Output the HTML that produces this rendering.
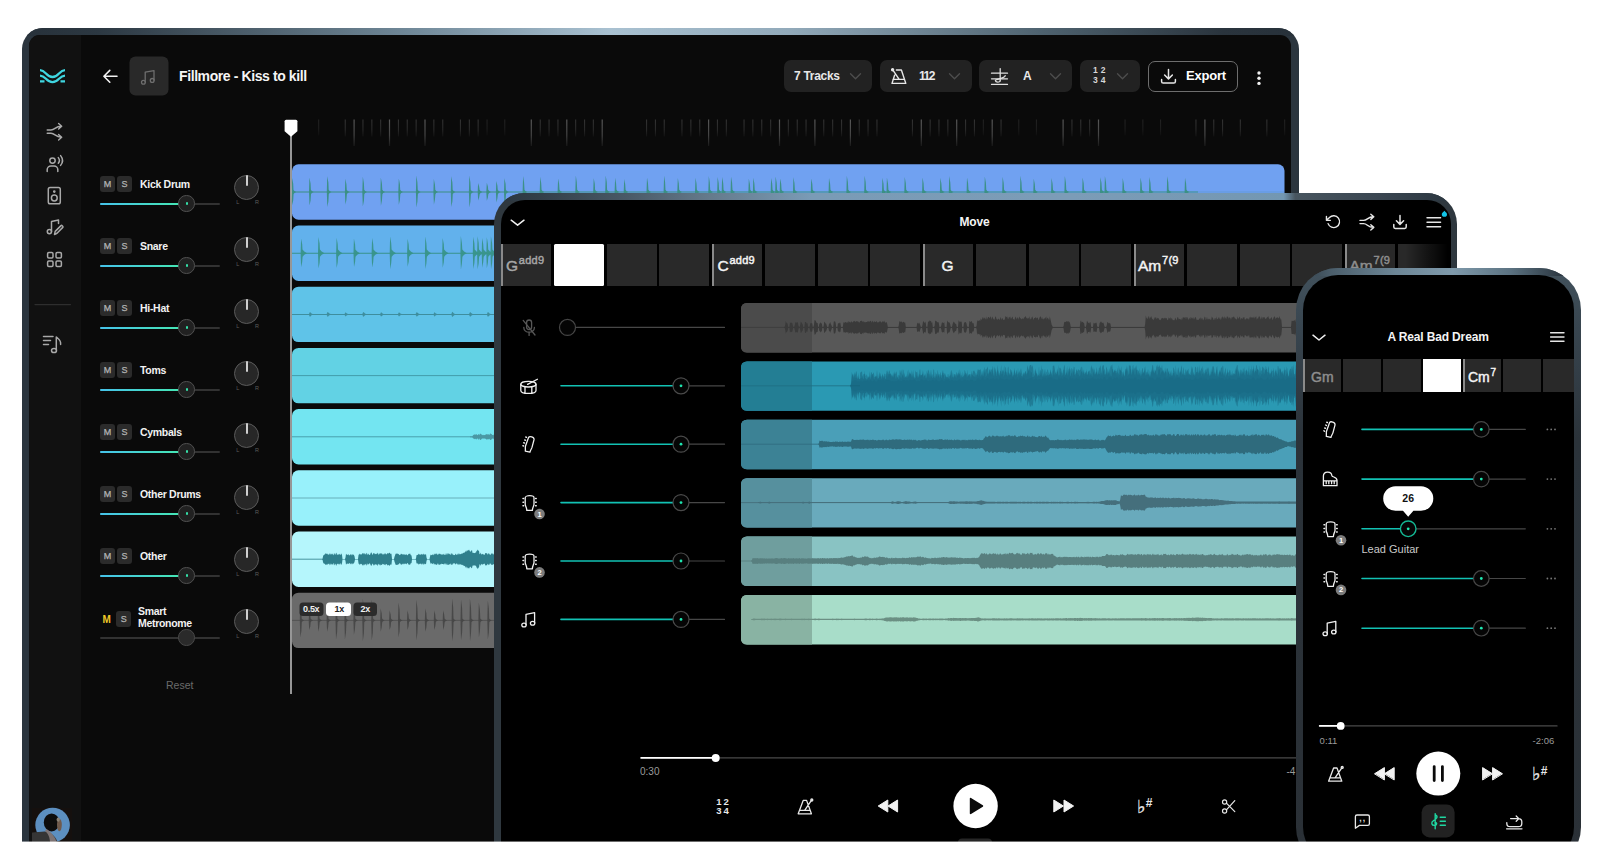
<!DOCTYPE html><html><head><meta charset="utf-8"><title>Moises</title><style>
*{box-sizing:border-box;margin:0;padding:0}
html,body{width:1600px;height:842px;overflow:hidden;background:#fff}
body{position:relative;font-family:"Liberation Sans", sans-serif;color:#fff;-webkit-font-smoothing:antialiased}
.abs{position:absolute}
svg{position:absolute;overflow:visible}
.laptop{position:absolute;left:22px;top:28px;width:1277px;height:840px;border-radius:21px 21px 0 0;background:#2b353e;overflow:hidden}
.laptop .hl{position:absolute;left:0;top:0;width:100%;height:8px;background:linear-gradient(90deg,#27313a 0%,#2c3842 6%,#6f8797 30%,#a9c1d1 46%,#92aaba 60%,#4e626f 80%,#2a343d 94%,#27313a 100%)}
.lscreen{position:absolute;left:7px;top:7px;width:1262px;height:840px;border-radius:11px 11px 0 0;background:#0a0a0a;overflow:hidden}
.side{position:absolute;left:0;top:0;width:52px;height:100%;background:#111}
.tablet{position:absolute;left:494px;top:193px;width:963px;height:700px;border-radius:31px 31px 0 0;background:#2f383f;overflow:hidden}
.tablet .hl{position:absolute;left:0;top:0;width:100%;height:8px;background:linear-gradient(90deg,#2a353e 0%,#33404a 5%,#4a5a67 14%,#64798a 22%,#7a9bb6 33%,#7c9cb7 60%,#7397b2 82%,#48555f 83.2%,#3a4651 92%,#2a353e 100%)}
.tscreen{position:absolute;left:7px;top:7px;width:950px;height:700px;border-radius:24px 24px 0 0;background:#000;overflow:hidden}
.phone{position:absolute;left:1296px;top:268px;width:285px;height:601px;border-radius:42px;background:linear-gradient(180deg,#42525d 0,#38454f 60px,#2b333a 170px,#2a3036 100%);overflow:hidden}
.phone .hl{position:absolute;left:0;top:0;width:100%;height:8px;background:linear-gradient(90deg,#2c3842 0%,#4a5d6a 12%,#6d8696 35%,#7f9aab 55%,#5c7382 75%,#2e3a44 92%,#26313a 100%)}
.pscreen{position:absolute;left:7px;top:7px;width:271px;height:587px;border-radius:35px;background:#000;overflow:hidden}
.t{position:absolute;white-space:nowrap;line-height:1}
.btn{position:absolute;top:25px;height:32px;border-radius:7px;background:#222}
.ms{position:absolute;width:15.4px;height:15.8px;border-radius:3px;background:#2b2b2b;color:#b4b4b4;font-size:9px;font-weight:400;-webkit-text-stroke:0.25px #b4b4b4;text-align:center;line-height:17px}
.cell{position:absolute;background:#292929}
</style></head><body>
<div class="laptop"><div class="hl"></div><div class="lscreen">
<div class="side"></div>
<svg style="left:0;top:0" width="60" height="810" viewBox="29 35 60 810" fill="none" stroke-linecap="round" stroke-linejoin="round">
<g stroke="#3fd6e0" stroke-width="2.3" stroke-linecap="butt"><path d="M40 70.2 C46 70.2 46 77 52.5 77 C59 77 59 70.2 65 70.2"/><path d="M40 75.6 C46 75.6 46 82.2 52.5 82.2 C59 82.2 59 75.6 65 75.6"/><path d="M40 81.4 H44.5 M60.5 81.4 H65"/></g>
<g stroke="#a9a9a9" stroke-width="1.4"><path d="M47.2 130 H51 C55.2 130 55 126.2 61.4 126.2 M47.2 133.2 H51 C55.2 133.2 55 137.2 61.4 137.2 M58.6 123.4 L61.7 126.2 L58.6 129 M58.6 134.4 L61.7 137.2 L58.6 140"/></g>
<g stroke="#a9a9a9" stroke-width="1.5"><circle cx="52.5" cy="160.6" r="2.7"/><path d="M47.2 171.5 V169.5 C47.2 167.4 49 166 51 166 H54 C56 166 57.8 167.4 57.8 169.5 V171.5 M58.3 157.6 C59.6 159.2 59.6 161.6 58.3 163.2 M60.6 155.6 C63 158.6 63 162.4 60.6 165.4"/></g>
<g stroke="#a9a9a9" stroke-width="1.5"><rect x="48.3" y="187.6" width="12" height="16.2" rx="1.8"/><circle cx="54.3" cy="198" r="2.9"/><circle cx="54.3" cy="191.6" r="0.6" fill="#a9a9a9"/></g>
<g stroke="#a9a9a9" stroke-width="1.5"><path d="M51.5 231.5 V221.5 L58.5 220 V223.5"/><circle cx="49.4" cy="231.6" r="2.1"/><path d="M54.5 234.5 L55.2 231.4 L61 225.6 C61.7 224.9 63.6 226.6 62.8 227.4 L57 233.3 Z"/></g>
<g stroke="#a9a9a9" stroke-width="1.5"><rect x="47.6" y="252.6" width="5.4" height="5.4" rx="1.2"/><rect x="56" y="252.6" width="5.4" height="5.4" rx="1.2"/><rect x="47.6" y="261" width="5.4" height="5.4" rx="1.2"/><rect x="56" y="261" width="5.4" height="5.4" rx="1.2"/></g>
<path d="M35 304.6 H70.5" stroke="#2e2e2e" stroke-width="1.2"/>
<g stroke="#a9a9a9" stroke-width="1.5"><path d="M43.5 336.5 H53 M43.5 340.5 H50.5 M43.5 344.5 H48.5 M56.3 350 V337 C58 338.5 61.2 340 60.6 344.4"/><ellipse cx="54" cy="350.5" rx="2.5" ry="2.1"/></g>
</svg>
<svg style="left:0;top:0" width="60" height="810" viewBox="29 35 60 810"><defs><filter id="avb" x="-10%" y="-10%" width="120%" height="120%"><feGaussianBlur stdDeviation="0.7"/></filter></defs><rect x="32" y="808" width="40" height="34" fill="#15100e"/><g filter="url(#avb)"><circle cx="52.6" cy="825" r="17.3" fill="#5c8fc0"/><ellipse cx="51.6" cy="822.4" rx="7.8" ry="9" fill="#100c0c"/><ellipse cx="59.4" cy="825" rx="2.4" ry="6.2" fill="#6f5a4c"/><ellipse cx="58.2" cy="819.6" rx="1.6" ry="2.2" fill="#8b8276"/><path d="M32 832.4 L45 831.6 C51 832.4 55 836 57.6 842 L58 846 H32 Z" fill="#343434"/><path d="M46.5 829 C50.5 831.6 54.6 836 56.8 842 L50 842 C50 838 48 833 45 831 Z" fill="#7d7373"/></g></svg>
<svg style="left:0;top:0" width="300" height="70" viewBox="29 35 300 70" fill="none" stroke-linecap="round" stroke-linejoin="round">
<path d="M117 76.3 H104 M109.8 70.4 L103.9 76.3 L109.8 82.2" stroke="#f2f2f2" stroke-width="1.6"/>
<rect x="129.5" y="56.5" width="39" height="39" rx="6" fill="#292929"/>
<g stroke="#6e6e6e" stroke-width="1.3"><path d="M145.2 82 V72.2 L154 70.6 V80.2"/><circle cx="143.4" cy="82.2" r="1.9"/><circle cx="152.2" cy="80.4" r="1.9"/></g>
</svg>
<div class="t" style="left:150px;top:34px;font-size:14px;font-weight:700;letter-spacing:-0.4px;color:#f5f5f5">Fillmore - Kiss to kill</div>
<div class="btn" style="left:755px;width:88px"></div>
<div class="btn" style="left:851px;width:92px"></div>
<div class="btn" style="left:950px;width:93px"></div>
<div class="btn" style="left:1051px;width:60px"></div>
<div class="abs" style="left:1118.5px;top:25.5px;width:90px;height:31px;border-radius:7px;border:1.8px solid #6e6e6e"></div>
<div class="t" style="left:765px;top:35px;font-size:12px;font-weight:700;letter-spacing:-0.3px;color:#e8e8e8">7 Tracks</div>
<div class="t" style="left:890px;top:35px;font-size:12px;font-weight:700;letter-spacing:-1.5px;color:#e8e8e8">112</div>
<div class="t" style="left:994px;top:35px;font-size:12px;font-weight:700;color:#e8e8e8">A</div>
<div class="t" style="left:1064px;top:30px;font-size:8.5px;font-weight:700;letter-spacing:2.9px;line-height:10.4px;color:#d8d8d8;white-space:pre">12<br>34</div>
<div class="t" style="left:1157px;top:34px;font-size:13px;font-weight:700;letter-spacing:-0.2px;color:#fff">Export</div>
<svg style="left:0;top:0" width="1262" height="70" viewBox="29 35 1262 70" fill="none" stroke-linecap="round" stroke-linejoin="round">
<path d="M850.5 73.8 L855.5 78.8 L860.5 73.8" stroke="#4c4c4c" stroke-width="1.4" fill="none" stroke-linecap="round" stroke-linejoin="round"/>
<path d="M949.5 73.8 L954.5 78.8 L959.5 73.8" stroke="#4c4c4c" stroke-width="1.4" fill="none" stroke-linecap="round" stroke-linejoin="round"/>
<path d="M1050.5 73.8 L1055.5 78.8 L1060.5 73.8" stroke="#4c4c4c" stroke-width="1.4" fill="none" stroke-linecap="round" stroke-linejoin="round"/>
<path d="M1117.5 73.8 L1122.5 78.8 L1127.5 73.8" stroke="#4c4c4c" stroke-width="1.4" fill="none" stroke-linecap="round" stroke-linejoin="round"/>
<g stroke="#e8e8e8" stroke-width="1.4"><path d="M896.4 70 H901.4 L905.8 83.4 H892 L894.6 75.2 M893 79.4 H904.6 M899 79.2 L892.6 69.6"/><circle cx="892.6" cy="69.8" r="1" /></g>
<g stroke="#e0e0e0" stroke-width="1.3"><path d="M991.5 73.2 H1007.5 M991.5 78.8 H1007.5 M991.5 84.4 H1007.5 M1000.2 68.6 V80.6"/><path d="M1000.2 80.8 C1000.2 82.4 995.2 82.6 995.4 80.4 C995.6 78.6 1004.8 78.8 1005.2 75.6"/></g>
<g stroke="#e8e8e8" stroke-width="1.5"><path d="M1168.5 69.4 V78.6 M1164.6 75 L1168.5 78.9 L1172.4 75 M1161.6 79.4 V81.4 C1161.6 82.3 1162.3 83 1163.2 83 H1173.8 C1174.7 83 1175.4 82.3 1175.4 81.4 V79.4"/></g>
<circle cx="1259" cy="73" r="1.7" fill="#f0f0f0"/><circle cx="1259" cy="78.2" r="1.7" fill="#f0f0f0"/><circle cx="1259" cy="83.4" r="1.7" fill="#f0f0f0"/>
</svg>
<svg style="left:0;top:0" width="1262" height="120" viewBox="29 35 1262 120"><defs><linearGradient id="tg" x1="0" y1="0" x2="0" y2="1"><stop offset="0" stop-color="#fff" stop-opacity="0.75"/><stop offset="0.6" stop-color="#fff" stop-opacity="0.55"/><stop offset="1" stop-color="#fff" stop-opacity="0.15"/></linearGradient></defs><rect x="318.1" y="119.5" width="1.1" height="16" fill="url(#tg)" fill-opacity="0.13"/><rect x="344.7" y="119.5" width="1.1" height="17" fill="url(#tg)" fill-opacity="0.22"/><rect x="353.5" y="119.5" width="1.2" height="26.5" fill="url(#tg)" fill-opacity="0.42"/><rect x="362.4" y="119.5" width="1.1" height="17" fill="url(#tg)" fill-opacity="0.22"/><rect x="371.3" y="119.5" width="1.1" height="17" fill="url(#tg)" fill-opacity="0.22"/><rect x="380.1" y="119.5" width="1.1" height="17" fill="url(#tg)" fill-opacity="0.22"/><rect x="388.9" y="119.5" width="1.2" height="26.5" fill="url(#tg)" fill-opacity="0.42"/><rect x="397.9" y="119.5" width="1.1" height="17" fill="url(#tg)" fill-opacity="0.22"/><rect x="406.7" y="119.5" width="1.1" height="17" fill="url(#tg)" fill-opacity="0.22"/><rect x="415.6" y="119.5" width="1.1" height="17" fill="url(#tg)" fill-opacity="0.22"/><rect x="424.4" y="119.5" width="1.2" height="26.5" fill="url(#tg)" fill-opacity="0.42"/><rect x="433.3" y="119.5" width="1.1" height="17" fill="url(#tg)" fill-opacity="0.22"/><rect x="442.2" y="119.5" width="1.1" height="17" fill="url(#tg)" fill-opacity="0.22"/><rect x="459.9" y="119.5" width="1.1" height="17" fill="url(#tg)" fill-opacity="0.22"/><rect x="468.8" y="119.5" width="1.1" height="17" fill="url(#tg)" fill-opacity="0.22"/><rect x="477.6" y="119.5" width="1.1" height="17" fill="url(#tg)" fill-opacity="0.22"/><rect x="486.5" y="119.5" width="1.1" height="16" fill="url(#tg)" fill-opacity="0.13"/><rect x="504.2" y="119.5" width="1.1" height="16" fill="url(#tg)" fill-opacity="0.13"/><rect x="530.7" y="119.5" width="1.2" height="26.5" fill="url(#tg)" fill-opacity="0.42"/><rect x="539.7" y="119.5" width="1.1" height="17" fill="url(#tg)" fill-opacity="0.22"/><rect x="548.5" y="119.5" width="1.1" height="17" fill="url(#tg)" fill-opacity="0.22"/><rect x="557.4" y="119.5" width="1.1" height="17" fill="url(#tg)" fill-opacity="0.22"/><rect x="566.2" y="119.5" width="1.2" height="26.5" fill="url(#tg)" fill-opacity="0.42"/><rect x="575.1" y="119.5" width="1.1" height="17" fill="url(#tg)" fill-opacity="0.22"/><rect x="584.0" y="119.5" width="1.1" height="17" fill="url(#tg)" fill-opacity="0.22"/><rect x="592.8" y="119.5" width="1.1" height="17" fill="url(#tg)" fill-opacity="0.22"/><rect x="601.6" y="119.5" width="1.2" height="26.5" fill="url(#tg)" fill-opacity="0.42"/><rect x="646.0" y="119.5" width="1.1" height="17" fill="url(#tg)" fill-opacity="0.22"/><rect x="654.9" y="119.5" width="1.1" height="17" fill="url(#tg)" fill-opacity="0.22"/><rect x="663.7" y="119.5" width="1.1" height="17" fill="url(#tg)" fill-opacity="0.22"/><rect x="681.4" y="119.5" width="1.1" height="17" fill="url(#tg)" fill-opacity="0.22"/><rect x="690.3" y="119.5" width="1.1" height="17" fill="url(#tg)" fill-opacity="0.22"/><rect x="699.2" y="119.5" width="1.1" height="17" fill="url(#tg)" fill-opacity="0.22"/><rect x="708.0" y="119.5" width="1.2" height="26.5" fill="url(#tg)" fill-opacity="0.42"/><rect x="716.9" y="119.5" width="1.1" height="17" fill="url(#tg)" fill-opacity="0.22"/><rect x="725.8" y="119.5" width="1.1" height="17" fill="url(#tg)" fill-opacity="0.22"/><rect x="743.5" y="119.5" width="1.1" height="17" fill="url(#tg)" fill-opacity="0.22"/><rect x="752.3" y="119.5" width="1.1" height="17" fill="url(#tg)" fill-opacity="0.22"/><rect x="761.2" y="119.5" width="1.1" height="17" fill="url(#tg)" fill-opacity="0.22"/><rect x="770.1" y="119.5" width="1.1" height="17" fill="url(#tg)" fill-opacity="0.22"/><rect x="778.9" y="119.5" width="1.2" height="26.5" fill="url(#tg)" fill-opacity="0.42"/><rect x="787.8" y="119.5" width="1.1" height="17" fill="url(#tg)" fill-opacity="0.22"/><rect x="796.7" y="119.5" width="1.1" height="17" fill="url(#tg)" fill-opacity="0.22"/><rect x="805.5" y="119.5" width="1.1" height="17" fill="url(#tg)" fill-opacity="0.22"/><rect x="814.3" y="119.5" width="1.2" height="26.5" fill="url(#tg)" fill-opacity="0.42"/><rect x="823.2" y="119.5" width="1.1" height="17" fill="url(#tg)" fill-opacity="0.22"/><rect x="832.1" y="119.5" width="1.1" height="17" fill="url(#tg)" fill-opacity="0.22"/><rect x="841.0" y="119.5" width="1.1" height="17" fill="url(#tg)" fill-opacity="0.22"/><rect x="849.8" y="119.5" width="1.2" height="26.5" fill="url(#tg)" fill-opacity="0.42"/><rect x="858.7" y="119.5" width="1.1" height="17" fill="url(#tg)" fill-opacity="0.22"/><rect x="867.5" y="119.5" width="1.1" height="17" fill="url(#tg)" fill-opacity="0.22"/><rect x="876.4" y="119.5" width="1.1" height="17" fill="url(#tg)" fill-opacity="0.22"/><rect x="911.9" y="119.5" width="1.1" height="17" fill="url(#tg)" fill-opacity="0.22"/><rect x="920.7" y="119.5" width="1.2" height="26.5" fill="url(#tg)" fill-opacity="0.42"/><rect x="929.6" y="119.5" width="1.1" height="17" fill="url(#tg)" fill-opacity="0.22"/><rect x="938.4" y="119.5" width="1.1" height="17" fill="url(#tg)" fill-opacity="0.22"/><rect x="947.3" y="119.5" width="1.1" height="17" fill="url(#tg)" fill-opacity="0.22"/><rect x="956.1" y="119.5" width="1.2" height="26.5" fill="url(#tg)" fill-opacity="0.42"/><rect x="965.0" y="119.5" width="1.1" height="17" fill="url(#tg)" fill-opacity="0.22"/><rect x="973.9" y="119.5" width="1.1" height="17" fill="url(#tg)" fill-opacity="0.22"/><rect x="982.8" y="119.5" width="1.1" height="16" fill="url(#tg)" fill-opacity="0.13"/><rect x="991.6" y="119.5" width="1.2" height="26.5" fill="url(#tg)" fill-opacity="0.42"/><rect x="1000.5" y="119.5" width="1.1" height="17" fill="url(#tg)" fill-opacity="0.22"/><rect x="1018.2" y="119.5" width="1.1" height="16" fill="url(#tg)" fill-opacity="0.13"/><rect x="1035.9" y="119.5" width="1.1" height="16" fill="url(#tg)" fill-opacity="0.13"/><rect x="1062.5" y="119.5" width="1.2" height="26.5" fill="url(#tg)" fill-opacity="0.42"/><rect x="1071.4" y="119.5" width="1.1" height="17" fill="url(#tg)" fill-opacity="0.22"/><rect x="1080.2" y="119.5" width="1.1" height="17" fill="url(#tg)" fill-opacity="0.22"/><rect x="1089.1" y="119.5" width="1.1" height="17" fill="url(#tg)" fill-opacity="0.22"/><rect x="1097.9" y="119.5" width="1.2" height="26.5" fill="url(#tg)" fill-opacity="0.42"/><rect x="1124.5" y="119.5" width="1.1" height="16" fill="url(#tg)" fill-opacity="0.13"/><rect x="1142.3" y="119.5" width="1.1" height="16" fill="url(#tg)" fill-opacity="0.13"/><rect x="1160.0" y="119.5" width="1.1" height="16" fill="url(#tg)" fill-opacity="0.13"/><rect x="1195.4" y="119.5" width="1.1" height="17" fill="url(#tg)" fill-opacity="0.22"/><rect x="1204.3" y="119.5" width="1.2" height="26.5" fill="url(#tg)" fill-opacity="0.42"/><rect x="1213.2" y="119.5" width="1.1" height="17" fill="url(#tg)" fill-opacity="0.22"/><rect x="1222.0" y="119.5" width="1.1" height="17" fill="url(#tg)" fill-opacity="0.22"/><rect x="1239.8" y="119.5" width="1.1" height="17" fill="url(#tg)" fill-opacity="0.22"/><rect x="1266.3" y="119.5" width="1.1" height="17" fill="url(#tg)" fill-opacity="0.22"/><rect x="1284.1" y="119.5" width="1.1" height="16" fill="url(#tg)" fill-opacity="0.13"/></svg>
<div class="ms" style="left:70.8px;top:141.4px">M</div>
<div class="ms" style="left:87.9px;top:141.4px">S</div>
<div class="t" style="left:111px;top:143.8px;font-size:10.5px;font-weight:700;letter-spacing:-0.3px;color:#f2f2f2">Kick Drum</div>
<div class="abs" style="left:71px;top:167.5px;width:120px;height:2px;border-radius:1px;background:#323232"></div>
<div class="abs" style="left:71px;top:167.5px;width:80px;height:2px;border-radius:1px;background:linear-gradient(90deg,#46c3ea,#45e6b4)"></div>
<div class="abs" style="left:149.4px;top:160.3px;width:16.4px;height:16.4px;border-radius:50%;background:#212121;border:1.3px solid #505050"></div>
<div class="abs" style="left:156.5px;top:167.4px;width:2.2px;height:2.2px;border-radius:50%;background:#35e0a8"></div>
<div class="abs" style="left:205.0px;top:139.5px;width:25px;height:25px;border-radius:50%;background:#272727;border:1.5px solid #5b5b5b"></div>
<div class="abs" style="left:216.5px;top:139.7px;width:2px;height:11.5px;border-radius:1px;background:#cfcfcf"></div>
<div class="t" style="left:207.3px;top:164.8px;font-size:5.5px;color:#5c5c5c">L</div>
<div class="t" style="left:226.0px;top:164.8px;font-size:5.5px;color:#5c5c5c">R</div>
<div class="ms" style="left:70.8px;top:203.4px">M</div>
<div class="ms" style="left:87.9px;top:203.4px">S</div>
<div class="t" style="left:111px;top:205.8px;font-size:10.5px;font-weight:700;letter-spacing:-0.3px;color:#f2f2f2">Snare</div>
<div class="abs" style="left:71px;top:229.5px;width:120px;height:2px;border-radius:1px;background:#323232"></div>
<div class="abs" style="left:71px;top:229.5px;width:80px;height:2px;border-radius:1px;background:linear-gradient(90deg,#46c3ea,#45e6b4)"></div>
<div class="abs" style="left:149.4px;top:222.3px;width:16.4px;height:16.4px;border-radius:50%;background:#212121;border:1.3px solid #505050"></div>
<div class="abs" style="left:156.5px;top:229.4px;width:2.2px;height:2.2px;border-radius:50%;background:#35e0a8"></div>
<div class="abs" style="left:205.0px;top:201.5px;width:25px;height:25px;border-radius:50%;background:#272727;border:1.5px solid #5b5b5b"></div>
<div class="abs" style="left:216.5px;top:201.7px;width:2px;height:11.5px;border-radius:1px;background:#cfcfcf"></div>
<div class="t" style="left:207.3px;top:226.8px;font-size:5.5px;color:#5c5c5c">L</div>
<div class="t" style="left:226.0px;top:226.8px;font-size:5.5px;color:#5c5c5c">R</div>
<div class="ms" style="left:70.8px;top:265.4px">M</div>
<div class="ms" style="left:87.9px;top:265.4px">S</div>
<div class="t" style="left:111px;top:267.8px;font-size:10.5px;font-weight:700;letter-spacing:-0.3px;color:#f2f2f2">Hi-Hat</div>
<div class="abs" style="left:71px;top:291.5px;width:120px;height:2px;border-radius:1px;background:#323232"></div>
<div class="abs" style="left:71px;top:291.5px;width:80px;height:2px;border-radius:1px;background:linear-gradient(90deg,#46c3ea,#45e6b4)"></div>
<div class="abs" style="left:149.4px;top:284.3px;width:16.4px;height:16.4px;border-radius:50%;background:#212121;border:1.3px solid #505050"></div>
<div class="abs" style="left:156.5px;top:291.4px;width:2.2px;height:2.2px;border-radius:50%;background:#35e0a8"></div>
<div class="abs" style="left:205.0px;top:263.5px;width:25px;height:25px;border-radius:50%;background:#272727;border:1.5px solid #5b5b5b"></div>
<div class="abs" style="left:216.5px;top:263.7px;width:2px;height:11.5px;border-radius:1px;background:#cfcfcf"></div>
<div class="t" style="left:207.3px;top:288.8px;font-size:5.5px;color:#5c5c5c">L</div>
<div class="t" style="left:226.0px;top:288.8px;font-size:5.5px;color:#5c5c5c">R</div>
<div class="ms" style="left:70.8px;top:327.4px">M</div>
<div class="ms" style="left:87.9px;top:327.4px">S</div>
<div class="t" style="left:111px;top:329.8px;font-size:10.5px;font-weight:700;letter-spacing:-0.3px;color:#f2f2f2">Toms</div>
<div class="abs" style="left:71px;top:353.5px;width:120px;height:2px;border-radius:1px;background:#323232"></div>
<div class="abs" style="left:71px;top:353.5px;width:80px;height:2px;border-radius:1px;background:linear-gradient(90deg,#46c3ea,#45e6b4)"></div>
<div class="abs" style="left:149.4px;top:346.3px;width:16.4px;height:16.4px;border-radius:50%;background:#212121;border:1.3px solid #505050"></div>
<div class="abs" style="left:156.5px;top:353.4px;width:2.2px;height:2.2px;border-radius:50%;background:#35e0a8"></div>
<div class="abs" style="left:205.0px;top:325.5px;width:25px;height:25px;border-radius:50%;background:#272727;border:1.5px solid #5b5b5b"></div>
<div class="abs" style="left:216.5px;top:325.7px;width:2px;height:11.5px;border-radius:1px;background:#cfcfcf"></div>
<div class="t" style="left:207.3px;top:350.8px;font-size:5.5px;color:#5c5c5c">L</div>
<div class="t" style="left:226.0px;top:350.8px;font-size:5.5px;color:#5c5c5c">R</div>
<div class="ms" style="left:70.8px;top:389.4px">M</div>
<div class="ms" style="left:87.9px;top:389.4px">S</div>
<div class="t" style="left:111px;top:391.8px;font-size:10.5px;font-weight:700;letter-spacing:-0.3px;color:#f2f2f2">Cymbals</div>
<div class="abs" style="left:71px;top:415.5px;width:120px;height:2px;border-radius:1px;background:#323232"></div>
<div class="abs" style="left:71px;top:415.5px;width:80px;height:2px;border-radius:1px;background:linear-gradient(90deg,#46c3ea,#45e6b4)"></div>
<div class="abs" style="left:149.4px;top:408.3px;width:16.4px;height:16.4px;border-radius:50%;background:#212121;border:1.3px solid #505050"></div>
<div class="abs" style="left:156.5px;top:415.4px;width:2.2px;height:2.2px;border-radius:50%;background:#35e0a8"></div>
<div class="abs" style="left:205.0px;top:387.5px;width:25px;height:25px;border-radius:50%;background:#272727;border:1.5px solid #5b5b5b"></div>
<div class="abs" style="left:216.5px;top:387.7px;width:2px;height:11.5px;border-radius:1px;background:#cfcfcf"></div>
<div class="t" style="left:207.3px;top:412.8px;font-size:5.5px;color:#5c5c5c">L</div>
<div class="t" style="left:226.0px;top:412.8px;font-size:5.5px;color:#5c5c5c">R</div>
<div class="ms" style="left:70.8px;top:451.4px">M</div>
<div class="ms" style="left:87.9px;top:451.4px">S</div>
<div class="t" style="left:111px;top:453.8px;font-size:10.5px;font-weight:700;letter-spacing:-0.3px;color:#f2f2f2">Other Drums</div>
<div class="abs" style="left:71px;top:477.5px;width:120px;height:2px;border-radius:1px;background:#323232"></div>
<div class="abs" style="left:71px;top:477.5px;width:80px;height:2px;border-radius:1px;background:linear-gradient(90deg,#46c3ea,#45e6b4)"></div>
<div class="abs" style="left:149.4px;top:470.3px;width:16.4px;height:16.4px;border-radius:50%;background:#212121;border:1.3px solid #505050"></div>
<div class="abs" style="left:156.5px;top:477.4px;width:2.2px;height:2.2px;border-radius:50%;background:#35e0a8"></div>
<div class="abs" style="left:205.0px;top:449.5px;width:25px;height:25px;border-radius:50%;background:#272727;border:1.5px solid #5b5b5b"></div>
<div class="abs" style="left:216.5px;top:449.7px;width:2px;height:11.5px;border-radius:1px;background:#cfcfcf"></div>
<div class="t" style="left:207.3px;top:474.8px;font-size:5.5px;color:#5c5c5c">L</div>
<div class="t" style="left:226.0px;top:474.8px;font-size:5.5px;color:#5c5c5c">R</div>
<div class="ms" style="left:70.8px;top:513.4px">M</div>
<div class="ms" style="left:87.9px;top:513.4px">S</div>
<div class="t" style="left:111px;top:515.8px;font-size:10.5px;font-weight:700;letter-spacing:-0.3px;color:#f2f2f2">Other</div>
<div class="abs" style="left:71px;top:539.5px;width:120px;height:2px;border-radius:1px;background:#323232"></div>
<div class="abs" style="left:71px;top:539.5px;width:80px;height:2px;border-radius:1px;background:linear-gradient(90deg,#46c3ea,#45e6b4)"></div>
<div class="abs" style="left:149.4px;top:532.3px;width:16.4px;height:16.4px;border-radius:50%;background:#212121;border:1.3px solid #505050"></div>
<div class="abs" style="left:156.5px;top:539.4px;width:2.2px;height:2.2px;border-radius:50%;background:#35e0a8"></div>
<div class="abs" style="left:205.0px;top:511.5px;width:25px;height:25px;border-radius:50%;background:#272727;border:1.5px solid #5b5b5b"></div>
<div class="abs" style="left:216.5px;top:511.7px;width:2px;height:11.5px;border-radius:1px;background:#cfcfcf"></div>
<div class="t" style="left:207.3px;top:536.8px;font-size:5.5px;color:#5c5c5c">L</div>
<div class="t" style="left:226.0px;top:536.8px;font-size:5.5px;color:#5c5c5c">R</div>
<div class="ms" style="left:70.0px;top:576.0px;background:none;color:#f0c828;font-weight:700;font-size:10px;-webkit-text-stroke:0">M</div>
<div class="ms" style="left:87.0px;top:576.0px">S</div>
<div class="t" style="left:109px;top:570.0px;font-size:10.5px;font-weight:700;letter-spacing:-0.3px;line-height:12.4px;color:#f2f2f2">Smart<br>Metronome</div>
<div class="abs" style="left:71px;top:601.5px;width:120px;height:2px;border-radius:1px;background:#323232"></div>
<div class="abs" style="left:149.4px;top:594.3px;width:16.4px;height:16.4px;border-radius:50%;background:#2a2a2a;border:1.3px solid #484848"></div>
<div class="abs" style="left:205.0px;top:573.5px;width:25px;height:25px;border-radius:50%;background:#272727;border:1.5px solid #5b5b5b"></div>
<div class="abs" style="left:216.5px;top:573.7px;width:2px;height:11.5px;border-radius:1px;background:#cfcfcf"></div>
<div class="t" style="left:207.3px;top:598.8px;font-size:5.5px;color:#5c5c5c">L</div>
<div class="t" style="left:226.0px;top:598.8px;font-size:5.5px;color:#5c5c5c">R</div>
<div class="t" style="left:137px;top:645px;font-size:10.5px;color:#6a6a6a">Reset</div>
<svg style="left:0;top:0" width="1262" height="700" viewBox="29 35 1262 700">
<rect x="292" y="164.3" width="992.5" height="55.4" rx="6.5" fill="#70a1f1"/>
<rect x="292" y="225.5" width="992.5" height="55.4" rx="6.5" fill="#62b1ec"/>
<rect x="292" y="286.7" width="992.5" height="55.4" rx="6.5" fill="#5fc3e8"/>
<rect x="292" y="347.9" width="992.5" height="55.4" rx="6.5" fill="#62d2e4"/>
<rect x="292" y="409.1" width="992.5" height="55.4" rx="6.5" fill="#73e5f1"/>
<rect x="292" y="470.3" width="992.5" height="55.4" rx="6.5" fill="#98f1fb"/>
<rect x="292" y="531.5" width="992.5" height="55.4" rx="6.5" fill="#b5f6fc"/>
<rect x="292" y="592.7" width="992.5" height="55.4" rx="6.5" fill="#6a6a6a"/>
<path d="M292 192.0 H1198" stroke="#3a8f82" stroke-width="1.1"/>
<path d="M291.6 192.0 L292.1 178.0 L293.2 183.6 L293.5 189.8 L294.4 191.0 L296.2 192.0 L294.4 193.0 L293.6 194.2 L293.2 200.4 L292.1 205.3 ZM309.0 192.0 L309.4 177.6 L310.6 183.4 L310.9 189.8 L311.8 191.0 L313.6 192.0 L311.8 193.0 L311.0 194.2 L310.6 200.6 L309.5 205.6 ZM326.8 192.0 L327.2 176.3 L328.4 182.6 L328.7 189.8 L329.6 191.0 L331.4 192.0 L329.6 193.0 L328.8 194.2 L328.4 201.4 L327.3 206.9 ZM344.9 192.0 L345.3 178.7 L346.4 184.0 L346.8 189.8 L347.7 191.0 L349.5 192.0 L347.7 193.0 L346.9 194.2 L346.4 200.0 L345.4 204.6 ZM362.3 192.0 L362.8 176.8 L363.9 182.9 L364.2 189.8 L365.1 191.0 L366.9 192.0 L365.1 193.0 L364.3 194.2 L363.9 201.1 L362.8 206.4 ZM380.4 192.0 L380.8 177.4 L381.9 183.3 L382.3 189.8 L383.2 191.0 L385.0 192.0 L383.2 193.0 L382.4 194.2 L381.9 200.7 L380.9 205.8 ZM398.3 192.0 L398.8 178.5 L399.9 183.9 L400.2 189.8 L401.1 191.0 L402.9 192.0 L401.1 193.0 L400.3 194.2 L399.9 200.1 L398.8 204.8 ZM415.9 192.0 L416.3 175.6 L417.4 182.2 L417.8 189.8 L418.7 191.0 L420.5 192.0 L418.7 193.0 L417.9 194.2 L417.4 201.8 L416.4 207.6 ZM433.4 192.0 L433.8 179.0 L434.9 184.2 L435.3 189.8 L436.2 191.0 L438.0 192.0 L436.2 193.0 L435.4 194.2 L434.9 199.8 L433.9 204.4 ZM450.8 192.0 L451.2 176.3 L452.4 182.6 L452.7 189.8 L453.6 191.0 L455.4 192.0 L453.6 193.0 L452.8 194.2 L452.4 201.4 L451.3 206.9 ZM468.9 192.0 L469.3 175.6 L470.4 182.2 L470.8 189.8 L471.7 191.0 L473.5 192.0 L471.7 193.0 L470.9 194.2 L470.4 201.8 L469.4 207.5 ZM477.7 192.0 L478.1 183.1 L479.2 186.7 L479.6 189.8 L480.5 191.0 L482.3 192.0 L480.5 193.0 L479.7 194.2 L479.2 197.3 L478.2 200.4 ZM486.3 192.0 L486.8 182.7 L487.9 186.4 L488.2 189.8 L489.1 191.0 L490.9 192.0 L489.1 193.0 L488.3 194.2 L487.9 197.6 L486.8 200.8 ZM495.9 192.0 L496.3 181.1 L497.4 185.4 L497.8 189.8 L498.7 191.0 L500.5 192.0 L498.7 193.0 L497.9 194.2 L497.4 198.6 L496.4 202.4 ZM504.0 192.0 L504.4 178.3 L505.6 183.8 L505.9 189.8 L506.8 191.0 L508.6 192.0 L506.8 193.0 L506.0 194.2 L505.6 200.2 L504.5 205.0 ZM522.6 192.0 L523.1 175.9 L524.1 182.4 L524.5 189.8 L525.4 191.0 L527.2 192.0 L525.4 193.0 L524.6 194.2 L524.1 201.6 L523.1 207.3 ZM539.7 192.0 L540.2 176.8 L541.2 182.9 L541.6 189.8 L542.5 191.0 L544.3 192.0 L542.5 193.0 L541.7 194.2 L541.2 201.1 L540.2 206.4 ZM557.6 192.0 L558.1 178.4 L559.1 183.8 L559.5 189.8 L560.4 191.0 L562.2 192.0 L560.4 193.0 L559.6 194.2 L559.1 200.2 L558.1 205.0 ZM575.3 192.0 L575.8 175.6 L576.8 182.2 L577.2 189.8 L578.1 191.0 L579.9 192.0 L578.1 193.0 L577.3 194.2 L576.8 201.8 L575.8 207.6 ZM593.2 192.0 L593.7 178.3 L594.8 183.8 L595.1 189.8 L596.0 191.0 L597.8 192.0 L596.0 193.0 L595.2 194.2 L594.8 200.2 L593.7 205.0 ZM605.2 192.0 L605.7 175.6 L606.8 182.2 L607.1 189.8 L608.0 191.0 L609.8 192.0 L608.0 193.0 L607.2 194.2 L606.8 201.8 L605.7 207.6 ZM614.6 192.0 L615.1 177.7 L616.1 183.4 L616.5 189.8 L617.4 191.0 L619.2 192.0 L617.4 193.0 L616.6 194.2 L616.1 200.6 L615.1 205.6 ZM623.7 192.0 L624.2 178.9 L625.2 184.2 L625.6 189.8 L626.5 191.0 L628.3 192.0 L626.5 193.0 L625.7 194.2 L625.2 199.8 L624.2 204.4 ZM646.5 192.0 L647.0 177.5 L648.0 183.3 L648.4 189.8 L649.3 191.0 L651.1 192.0 L649.3 193.0 L648.5 194.2 L648.0 200.7 L647.0 205.7 ZM663.6 192.0 L664.1 175.7 L665.1 182.2 L665.5 189.8 L666.4 191.0 L668.2 192.0 L666.4 193.0 L665.6 194.2 L665.1 201.8 L664.1 207.5 ZM677.3 192.0 L677.8 178.1 L678.8 183.6 L679.2 189.8 L680.1 191.0 L681.9 192.0 L680.1 193.0 L679.3 194.2 L678.8 200.4 L677.8 205.2 ZM695.0 192.0 L695.5 177.8 L696.5 183.5 L696.9 189.8 L697.8 191.0 L699.6 192.0 L697.8 193.0 L697.0 194.2 L696.5 200.5 L695.5 205.5 ZM708.3 192.0 L708.8 176.1 L709.8 182.5 L710.2 189.8 L711.1 191.0 L712.9 192.0 L711.1 193.0 L710.3 194.2 L709.8 201.5 L708.8 207.1 ZM717.2 192.0 L717.6 176.9 L718.7 183.0 L719.1 189.8 L720.0 191.0 L721.8 192.0 L720.0 193.0 L719.2 194.2 L718.7 201.0 L717.7 206.3 ZM721.7 192.0 L722.1 176.9 L723.2 182.9 L723.6 189.8 L724.5 191.0 L726.3 192.0 L724.5 193.0 L723.7 194.2 L723.2 201.1 L722.2 206.3 ZM730.6 192.0 L731.0 176.5 L732.1 182.7 L732.5 189.8 L733.4 191.0 L735.2 192.0 L733.4 193.0 L732.6 194.2 L732.1 201.3 L731.1 206.7 ZM748.4 192.0 L748.8 178.8 L749.9 184.1 L750.3 189.8 L751.2 191.0 L753.0 192.0 L751.2 193.0 L750.4 194.2 L749.9 199.9 L748.9 204.6 ZM752.9 192.0 L753.3 177.8 L754.4 183.5 L754.8 189.8 L755.7 191.0 L757.5 192.0 L755.7 193.0 L754.9 194.2 L754.4 200.5 L753.4 205.5 ZM770.7 192.0 L771.1 177.9 L772.2 183.6 L772.6 189.8 L773.5 191.0 L775.3 192.0 L773.5 193.0 L772.7 194.2 L772.2 200.4 L771.2 205.4 ZM775.2 192.0 L775.6 176.6 L776.7 182.7 L777.1 189.8 L778.0 191.0 L779.8 192.0 L778.0 193.0 L777.2 194.2 L776.7 201.3 L775.7 206.7 ZM779.7 192.0 L780.1 178.4 L781.2 183.8 L781.6 189.8 L782.5 191.0 L784.3 192.0 L782.5 193.0 L781.7 194.2 L781.2 200.2 L780.2 205.0 ZM793.0 192.0 L793.4 177.3 L794.5 183.2 L794.9 189.8 L795.8 191.0 L797.6 192.0 L795.8 193.0 L795.0 194.2 L794.5 200.8 L793.5 205.9 ZM810.8 192.0 L811.2 178.4 L812.3 183.8 L812.7 189.8 L813.6 191.0 L815.4 192.0 L813.6 193.0 L812.8 194.2 L812.3 200.2 L811.3 204.9 ZM828.6 192.0 L829.0 178.1 L830.1 183.7 L830.5 189.8 L831.4 191.0 L833.2 192.0 L831.4 193.0 L830.6 194.2 L830.1 200.3 L829.1 205.2 ZM846.4 192.0 L846.8 175.7 L847.9 182.2 L848.3 189.8 L849.2 191.0 L851.0 192.0 L849.2 193.0 L848.4 194.2 L847.9 201.8 L846.9 207.5 ZM864.2 192.0 L864.6 175.7 L865.7 182.2 L866.1 189.8 L867.0 191.0 L868.8 192.0 L867.0 193.0 L866.2 194.2 L865.7 201.8 L864.7 207.5 ZM882.0 192.0 L882.4 177.7 L883.5 183.4 L883.9 189.8 L884.8 191.0 L886.6 192.0 L884.8 193.0 L884.0 194.2 L883.5 200.6 L882.5 205.5 ZM886.5 192.0 L886.9 177.6 L888.0 183.4 L888.4 189.8 L889.3 191.0 L891.1 192.0 L889.3 193.0 L888.5 194.2 L888.0 200.6 L887.0 205.7 ZM904.3 192.0 L904.7 177.1 L905.8 183.0 L906.2 189.8 L907.1 191.0 L908.9 192.0 L907.1 193.0 L906.3 194.2 L905.8 201.0 L904.8 206.2 ZM922.1 192.0 L922.5 177.5 L923.6 183.3 L924.0 189.8 L924.9 191.0 L926.7 192.0 L924.9 193.0 L924.1 194.2 L923.6 200.7 L922.6 205.7 ZM939.9 192.0 L940.3 177.7 L941.4 183.4 L941.8 189.8 L942.7 191.0 L944.5 192.0 L942.7 193.0 L941.9 194.2 L941.4 200.6 L940.4 205.6 ZM948.8 192.0 L949.2 176.1 L950.3 182.4 L950.7 189.8 L951.6 191.0 L953.4 192.0 L951.6 193.0 L950.8 194.2 L950.3 201.6 L949.3 207.1 ZM966.6 192.0 L967.0 177.4 L968.1 183.2 L968.5 189.8 L969.4 191.0 L971.2 192.0 L969.4 193.0 L968.6 194.2 L968.1 200.8 L967.1 205.9 ZM984.4 192.0 L984.8 176.5 L985.9 182.7 L986.3 189.8 L987.2 191.0 L989.0 192.0 L987.2 193.0 L986.4 194.2 L985.9 201.3 L984.9 206.7 ZM1002.2 192.0 L1002.6 176.8 L1003.7 182.9 L1004.1 189.8 L1005.0 191.0 L1006.8 192.0 L1005.0 193.0 L1004.2 194.2 L1003.7 201.1 L1002.7 206.4 ZM1020.0 192.0 L1020.4 175.7 L1021.5 182.2 L1021.9 189.8 L1022.8 191.0 L1024.6 192.0 L1022.8 193.0 L1022.0 194.2 L1021.5 201.8 L1020.5 207.5 ZM1033.3 192.0 L1033.7 178.6 L1034.8 184.0 L1035.2 189.8 L1036.1 191.0 L1037.9 192.0 L1036.1 193.0 L1035.3 194.2 L1034.8 200.0 L1033.8 204.7 ZM1051.1 192.0 L1051.5 178.1 L1052.6 183.7 L1053.0 189.8 L1053.9 191.0 L1055.7 192.0 L1053.9 193.0 L1053.1 194.2 L1052.6 200.3 L1051.6 205.2 ZM1064.4 192.0 L1064.8 176.1 L1065.9 182.5 L1066.3 189.8 L1067.2 191.0 L1069.0 192.0 L1067.2 193.0 L1066.4 194.2 L1065.9 201.5 L1064.9 207.1 ZM1082.2 192.0 L1082.6 177.4 L1083.7 183.2 L1084.1 189.8 L1085.0 191.0 L1086.8 192.0 L1085.0 193.0 L1084.2 194.2 L1083.7 200.8 L1082.7 205.9 ZM1100.0 192.0 L1100.4 177.2 L1101.5 183.1 L1101.9 189.8 L1102.8 191.0 L1104.6 192.0 L1102.8 193.0 L1102.0 194.2 L1101.5 200.9 L1100.5 206.1 ZM1104.5 192.0 L1104.9 175.9 L1106.0 182.3 L1106.4 189.8 L1107.3 191.0 L1109.1 192.0 L1107.3 193.0 L1106.5 194.2 L1106.0 201.7 L1105.0 207.3 ZM1122.3 192.0 L1122.7 178.1 L1123.8 183.7 L1124.2 189.8 L1125.1 191.0 L1126.9 192.0 L1125.1 193.0 L1124.3 194.2 L1123.8 200.3 L1122.8 205.2 ZM1140.1 192.0 L1140.5 177.4 L1141.6 183.2 L1142.0 189.8 L1142.9 191.0 L1144.7 192.0 L1142.9 193.0 L1142.1 194.2 L1141.6 200.8 L1140.6 205.9 ZM1149.0 192.0 L1149.4 176.9 L1150.5 183.0 L1150.9 189.8 L1151.8 191.0 L1153.6 192.0 L1151.8 193.0 L1151.0 194.2 L1150.5 201.0 L1149.5 206.3 ZM1166.8 192.0 L1167.2 176.3 L1168.3 182.6 L1168.7 189.8 L1169.6 191.0 L1171.4 192.0 L1169.6 193.0 L1168.8 194.2 L1168.3 201.4 L1167.3 206.9 ZM1184.6 192.0 L1185.0 177.7 L1186.1 183.4 L1186.5 189.8 L1187.4 191.0 L1189.2 192.0 L1187.4 193.0 L1186.6 194.2 L1186.1 200.6 L1185.1 205.6 Z" fill="#3a8f82" fill-opacity="0.95"/>
<path d="M1198 192.0 H1284" stroke="#5c93c9" stroke-width="0.6"/>
<path d="M292 253.2 H500" stroke="#38938a" stroke-width="1.1"/>
<path d="M300.6 253.2 L301.1 238.4 L302.2 244.3 L302.5 249.6 L304.3 251.6 L307.0 253.2 L304.3 254.8 L302.6 256.8 L302.2 262.1 L301.1 267.3 ZM318.0 253.2 L318.4 237.1 L319.6 243.6 L319.9 249.6 L321.7 251.6 L324.4 253.2 L321.7 254.8 L320.0 256.8 L319.6 262.8 L318.5 268.4 ZM336.1 253.2 L336.6 237.7 L337.7 243.9 L338.0 249.6 L339.8 251.6 L342.5 253.2 L339.8 254.8 L338.1 256.8 L337.7 262.5 L336.6 267.9 ZM353.5 253.2 L353.9 238.6 L355.1 244.4 L355.4 249.6 L357.2 251.6 L359.9 253.2 L357.2 254.8 L355.5 256.8 L355.1 262.0 L354.0 267.1 ZM371.6 253.2 L372.1 238.1 L373.2 244.1 L373.5 249.6 L375.3 251.6 L378.0 253.2 L375.3 254.8 L373.6 256.8 L373.2 262.3 L372.1 267.5 ZM389.7 253.2 L390.1 236.4 L391.2 243.1 L391.6 249.6 L393.4 251.6 L396.1 253.2 L393.4 254.8 L391.7 256.8 L391.2 263.3 L390.2 269.2 ZM407.1 253.2 L407.6 238.8 L408.7 244.6 L409.0 249.6 L410.8 251.6 L413.5 253.2 L410.8 254.8 L409.1 256.8 L408.7 261.8 L407.6 266.8 ZM424.9 253.2 L425.3 236.5 L426.4 243.2 L426.8 249.6 L428.6 251.6 L431.3 253.2 L428.6 254.8 L426.9 256.8 L426.4 263.2 L425.4 269.1 ZM442.2 253.2 L442.6 238.0 L443.8 244.1 L444.1 249.6 L445.9 251.6 L448.6 253.2 L445.9 254.8 L444.2 256.8 L443.8 262.3 L442.7 267.7 ZM460.4 253.2 L460.8 236.0 L461.9 242.9 L462.3 249.6 L464.1 251.6 L466.8 253.2 L464.1 254.8 L462.4 256.8 L461.9 263.5 L460.9 269.5 ZM472.8 253.2 L473.2 236.7 L474.4 243.3 L474.7 249.6 L476.5 251.6 L479.2 253.2 L476.5 254.8 L474.8 256.8 L474.4 263.1 L473.3 268.9 ZM477.1 253.2 L477.6 236.3 L478.7 243.1 L479.0 249.6 L480.8 251.6 L483.5 253.2 L480.8 254.8 L479.1 256.8 L478.7 263.3 L477.6 269.2 ZM481.7 253.2 L482.1 238.0 L483.2 244.1 L483.6 249.6 L485.4 251.6 L488.1 253.2 L485.4 254.8 L483.7 256.8 L483.2 262.3 L482.2 267.7 ZM486.3 253.2 L486.8 237.3 L487.9 243.6 L488.2 249.6 L490.0 251.6 L492.7 253.2 L490.0 254.8 L488.3 256.8 L487.9 262.8 L486.8 268.3 ZM490.5 253.2 L490.9 236.3 L492.1 243.1 L492.4 249.6 L494.2 251.6 L496.9 253.2 L494.2 254.8 L492.5 256.8 L492.1 263.3 L491.0 269.2 ZM495.0 253.2 L495.4 238.9 L496.6 244.6 L496.9 249.6 L498.7 251.6 L501.4 253.2 L498.7 254.8 L497.0 256.8 L496.6 261.8 L495.5 266.8 Z" fill="#38938a" fill-opacity="0.95"/>
<path d="M292.0 314.0 L292.5 314.0 L293.0 314.0 L293.5 314.0 L294.0 314.0 L294.5 314.0 L295.0 314.0 L295.5 314.0 L296.0 314.0 L296.5 314.0 L297.0 314.0 L297.5 314.0 L298.0 314.0 L298.5 314.0 L299.0 314.0 L299.5 314.0 L300.0 314.0 L300.5 314.0 L301.0 314.0 L301.5 314.0 L302.0 314.0 L302.5 314.0 L303.0 314.0 L303.5 314.0 L304.0 314.0 L304.5 314.0 L305.0 314.0 L305.5 314.0 L306.0 314.0 L306.5 314.0 L307.0 314.0 L307.5 314.0 L308.0 314.0 L308.5 314.0 L309.0 314.0 L309.5 312.8 L310.0 311.9 L310.5 312.6 L311.0 313.1 L311.5 313.5 L312.0 313.7 L312.5 313.9 L313.0 314.0 L313.5 314.0 L314.0 314.0 L314.5 314.0 L315.0 314.0 L315.5 314.0 L316.0 314.0 L316.5 314.0 L317.0 314.0 L317.5 314.0 L318.0 314.0 L318.5 314.0 L319.0 314.0 L319.5 314.0 L320.0 314.0 L320.5 314.0 L321.0 314.0 L321.5 314.0 L322.0 314.0 L322.5 314.0 L323.0 314.0 L323.5 314.0 L324.0 314.0 L324.5 314.0 L325.0 314.0 L325.5 314.0 L326.0 314.0 L326.5 314.0 L327.0 313.5 L327.5 312.0 L328.0 312.0 L328.5 312.7 L329.0 313.2 L329.5 313.5 L330.0 313.8 L330.5 313.9 L331.0 314.0 L331.5 314.0 L332.0 314.0 L332.5 314.0 L333.0 314.0 L333.5 314.0 L334.0 314.0 L334.5 314.0 L335.0 314.0 L335.5 314.0 L336.0 314.0 L336.5 314.0 L337.0 314.0 L337.5 314.0 L338.0 314.0 L338.5 314.0 L339.0 314.0 L339.5 314.0 L340.0 314.0 L340.5 314.0 L341.0 314.0 L341.5 314.0 L342.0 314.0 L342.5 314.0 L343.0 314.0 L343.5 314.0 L344.0 314.0 L344.5 314.0 L345.0 313.3 L345.5 312.2 L346.0 312.8 L346.5 313.3 L347.0 313.6 L347.5 313.8 L348.0 314.0 L348.5 314.0 L349.0 314.0 L349.5 314.0 L350.0 314.0 L350.5 314.0 L351.0 314.0 L351.5 314.0 L352.0 314.0 L352.5 314.0 L353.0 314.0 L353.5 314.0 L354.0 314.0 L354.5 314.0 L355.0 314.0 L355.5 314.0 L356.0 314.0 L356.5 314.0 L357.0 314.0 L357.5 314.0 L358.0 314.0 L358.5 314.0 L359.0 314.0 L359.5 314.0 L360.0 314.0 L360.5 314.0 L361.0 314.0 L361.5 314.0 L362.0 314.0 L362.5 313.8 L363.0 312.4 L363.5 312.0 L364.0 312.6 L364.5 313.1 L365.0 313.5 L365.5 313.8 L366.0 313.9 L366.5 314.0 L367.0 314.0 L367.5 314.0 L368.0 314.0 L368.5 314.0 L369.0 314.0 L369.5 314.0 L370.0 314.0 L370.5 314.0 L371.0 314.0 L371.5 314.0 L372.0 314.0 L372.5 314.0 L373.0 314.0 L373.5 314.0 L374.0 314.0 L374.5 314.0 L375.0 314.0 L375.5 314.0 L376.0 314.0 L376.5 314.0 L377.0 314.0 L377.5 314.0 L378.0 314.0 L378.5 314.0 L379.0 314.0 L379.5 314.0 L380.0 314.0 L380.5 313.4 L381.0 312.2 L381.5 312.5 L382.0 313.0 L382.5 313.4 L383.0 313.7 L383.5 313.9 L384.0 314.0 L384.5 314.0 L385.0 314.0 L385.5 314.0 L386.0 314.0 L386.5 314.0 L387.0 314.0 L387.5 314.0 L388.0 314.0 L388.5 314.0 L389.0 314.0 L389.5 314.0 L390.0 314.0 L390.5 314.0 L391.0 314.0 L391.5 314.0 L392.0 314.0 L392.5 314.0 L393.0 314.0 L393.5 314.0 L394.0 314.0 L394.5 314.0 L395.0 314.0 L395.5 314.0 L396.0 314.0 L396.5 314.0 L397.0 314.0 L397.5 314.0 L398.0 314.0 L398.5 313.0 L399.0 312.2 L399.5 312.8 L400.0 313.2 L400.5 313.6 L401.0 313.8 L401.5 314.0 L402.0 314.0 L402.5 314.0 L403.0 314.0 L403.5 314.0 L404.0 314.0 L404.5 314.0 L405.0 314.0 L405.5 314.0 L406.0 314.0 L406.5 314.0 L407.0 314.0 L407.5 314.0 L408.0 314.0 L408.5 314.0 L409.0 314.0 L409.5 314.0 L410.0 314.0 L410.5 314.0 L411.0 314.0 L411.5 314.0 L412.0 314.0 L412.5 314.0 L413.0 314.0 L413.5 314.0 L414.0 314.0 L414.5 314.0 L415.0 314.0 L415.5 314.0 L416.0 313.6 L416.5 312.2 L417.0 312.2 L417.5 312.8 L418.0 313.3 L418.5 313.6 L419.0 313.8 L419.5 314.0 L420.0 314.0 L420.5 314.0 L421.0 314.0 L421.5 314.0 L422.0 314.0 L422.5 314.0 L423.0 314.0 L423.5 314.0 L424.0 314.0 L424.5 314.0 L425.0 314.0 L425.5 314.0 L426.0 314.0 L426.5 314.0 L427.0 314.0 L427.5 314.0 L428.0 314.0 L428.5 314.0 L429.0 314.0 L429.5 314.0 L430.0 314.0 L430.5 314.0 L431.0 314.0 L431.5 314.0 L432.0 314.0 L432.5 314.0 L433.0 314.0 L433.5 314.0 L434.0 313.2 L434.5 312.1 L435.0 312.7 L435.5 313.2 L436.0 313.5 L436.5 313.8 L437.0 314.0 L437.5 314.0 L438.0 314.0 L438.5 314.0 L439.0 314.0 L439.5 314.0 L440.0 314.0 L440.5 314.0 L441.0 314.0 L441.5 314.0 L442.0 314.0 L442.5 314.0 L443.0 314.0 L443.5 314.0 L444.0 314.0 L444.5 314.0 L445.0 314.0 L445.5 314.0 L446.0 314.0 L446.5 314.0 L447.0 314.0 L447.5 314.0 L448.0 314.0 L448.5 314.0 L449.0 314.0 L449.5 314.0 L450.0 314.0 L450.5 314.0 L451.0 314.0 L451.5 313.8 L452.0 312.3 L452.5 311.8 L453.0 312.5 L453.5 313.1 L454.0 313.4 L454.5 313.7 L455.0 313.9 L455.5 314.0 L456.0 314.0 L456.5 314.0 L457.0 314.0 L457.5 314.0 L458.0 314.0 L458.5 314.0 L459.0 314.0 L459.5 314.0 L460.0 314.0 L460.5 314.0 L461.0 314.0 L461.5 314.0 L462.0 314.0 L462.5 314.0 L463.0 314.0 L463.5 314.0 L464.0 314.0 L464.5 314.0 L465.0 314.0 L465.5 314.0 L466.0 314.0 L466.5 314.0 L467.0 314.0 L467.5 314.0 L468.0 314.0 L468.5 314.0 L469.0 314.0 L469.5 313.3 L470.0 312.0 L470.5 312.3 L471.0 312.9 L471.5 313.3 L472.0 313.6 L472.5 313.9 L473.0 314.0 L473.5 314.0 L474.0 314.0 L474.5 314.0 L475.0 314.0 L475.5 314.0 L476.0 314.0 L476.5 314.0 L477.0 314.0 L477.5 314.0 L478.0 314.0 L478.5 314.0 L479.0 314.0 L479.5 314.0 L480.0 314.0 L480.5 314.0 L481.0 314.0 L481.5 314.0 L482.0 314.0 L482.5 314.0 L483.0 314.0 L483.5 314.0 L484.0 314.0 L484.5 314.0 L485.0 314.0 L485.5 314.0 L486.0 314.0 L486.5 314.0 L487.0 314.0 L487.5 312.7 L488.0 311.7 L488.5 312.5 L489.0 313.0 L489.5 313.4 L490.0 313.7 L490.5 313.9 L491.0 314.0 L491.5 314.0 L492.0 314.0 L492.5 314.0 L493.0 314.0 L493.5 314.0 L494.0 314.0 L494.5 314.0 L495.0 314.0 L495.5 314.0 L496.0 314.0 L496.5 314.0 L497.0 314.0 L497.5 314.0 L498.0 314.0 L498.5 314.0 L499.0 314.0 L499.5 314.0 L500.0 314.0 L500.5 314.0 L501.0 314.0 L501.5 314.0 L502.0 314.0 L502.5 314.0 L503.0 314.0 L503.5 314.0 L504.0 314.0 L504.5 314.0 L505.0 313.7 L505.5 312.4 L506.0 312.4 L506.5 313.0 L507.0 313.4 L507.5 313.7 L508.0 313.9 L508.5 314.0 L509.0 314.0 L509.5 314.0 L510.0 314.0 L510.5 314.0 L511.0 314.0 L511.5 314.0 L512.0 314.0 L512.5 314.0 L513.0 314.0 L513.5 314.0 L514.0 314.0 L514.5 314.0 L515.0 314.0 L515.5 314.0 L516.0 314.0 L516.5 314.0 L517.0 314.0 L517.5 314.0 L518.0 314.0 L518.5 314.0 L519.0 314.0 L519.5 314.0 L520.0 314.0 L520.5 314.0 L521.0 314.0 L521.5 314.0 L522.0 314.0 L522.5 314.0 L523.0 314.0 L523.5 314.0 L524.0 314.0 L524.5 314.0 L525.0 314.0 L525.5 314.0 L526.0 314.0 L526.5 314.0 L527.0 314.0 L527.5 314.0 L528.0 314.0 L528.5 314.0 L529.0 314.0 L529.5 314.0 L530.0 314.0 L530.5 314.0 L531.0 314.0 L531.5 314.0 L532.0 314.0 L532.5 314.0 L533.0 314.0 L533.5 314.0 L534.0 314.0 L534.5 314.0 L535.0 314.0 L535.5 314.0 L536.0 314.0 L536.5 314.0 L537.0 314.0 L537.5 314.0 L538.0 314.0 L538.5 314.0 L539.0 314.0 L539.5 314.0 L540.0 314.0 L540.5 314.0 L541.0 314.0 L541.5 314.0 L542.0 314.0 L542.5 314.0 L543.0 314.0 L543.5 314.0 L544.0 314.0 L544.5 314.0 L545.0 314.0 L545.5 314.0 L546.0 314.0 L546.5 314.0 L547.0 314.0 L547.5 314.0 L548.0 314.0 L548.5 314.0 L549.0 314.0 L549.5 314.0 L550.0 314.0 L550.5 314.0 L551.0 314.0 L551.5 314.0 L552.0 314.0 L552.5 314.0 L553.0 314.0 L553.5 314.0 L554.0 314.0 L554.5 314.0 L555.0 314.0 L555.5 314.0 L556.0 314.0 L556.5 314.0 L557.0 314.0 L557.5 314.0 L558.0 314.0 L558.5 314.0 L559.0 314.0 L559.5 314.0 L560.0 314.0 L560.5 314.0 L561.0 314.0 L561.5 314.0 L562.0 314.0 L562.5 314.0 L563.0 314.0 L563.5 314.0 L564.0 314.0 L564.5 314.0 L565.0 314.0 L565.5 314.0 L566.0 314.0 L566.5 314.0 L567.0 314.0 L567.5 314.0 L568.0 314.0 L568.5 314.0 L569.0 314.0 L569.5 314.0 L570.0 314.0 L570.5 314.0 L571.0 314.0 L571.5 314.0 L572.0 314.0 L572.5 314.0 L573.0 314.0 L573.5 314.0 L574.0 314.0 L574.5 314.0 L575.0 314.0 L575.5 314.0 L576.0 314.0 L576.5 314.0 L577.0 314.0 L577.5 314.0 L578.0 314.0 L578.5 314.0 L579.0 314.0 L579.5 314.0 L580.0 314.0 L580.5 314.0 L581.0 314.0 L581.5 314.0 L582.0 314.0 L582.5 314.0 L583.0 314.0 L583.5 314.0 L584.0 314.0 L584.5 314.0 L585.0 314.0 L585.5 314.0 L586.0 314.0 L586.5 314.0 L587.0 314.0 L587.5 314.0 L588.0 314.0 L588.5 314.0 L589.0 314.0 L589.5 314.0 L590.0 314.0 L590.5 314.0 L591.0 314.0 L591.5 314.0 L592.0 314.0 L592.5 314.0 L593.0 314.0 L593.5 314.0 L594.0 314.0 L594.5 314.0 L595.0 314.0 L595.5 314.0 L596.0 314.0 L596.5 314.0 L597.0 314.0 L597.5 314.0 L598.0 314.0 L598.5 314.0 L599.0 314.0 L599.5 314.0 L600.0 314.0 L600.5 314.0 L601.0 314.0 L601.5 314.0 L602.0 314.0 L602.5 314.0 L603.0 314.0 L603.5 314.0 L604.0 314.0 L604.5 314.0 L605.0 314.0 L605.5 314.0 L606.0 314.0 L606.5 314.0 L607.0 314.0 L607.5 314.0 L608.0 314.0 L608.5 314.0 L609.0 314.0 L609.5 314.0 L610.0 314.0 L610.5 314.0 L611.0 314.0 L611.5 314.0 L612.0 314.0 L612.5 314.0 L613.0 314.0 L613.5 314.0 L614.0 314.0 L614.5 314.0 L615.0 314.0 L615.5 314.0 L616.0 314.0 L616.5 314.0 L617.0 314.0 L617.5 314.0 L618.0 314.0 L618.5 314.0 L619.0 314.0 L619.5 314.0 L620.0 314.0 L620.5 314.0 L621.0 314.0 L621.5 314.0 L622.0 314.0 L622.5 314.0 L623.0 314.0 L623.5 314.0 L624.0 314.0 L624.5 314.0 L625.0 314.0 L625.5 314.0 L626.0 314.0 L626.5 314.0 L627.0 314.0 L627.5 314.0 L628.0 314.0 L628.5 314.0 L629.0 314.0 L629.5 314.0 L630.0 314.0 L630.5 314.0 L631.0 314.0 L631.5 314.0 L632.0 314.0 L632.5 314.0 L633.0 314.0 L633.5 314.0 L634.0 314.0 L634.5 314.0 L635.0 314.0 L635.5 314.0 L636.0 314.0 L636.5 314.0 L637.0 314.0 L637.5 314.0 L638.0 314.0 L638.5 314.0 L639.0 314.0 L639.5 314.0 L640.0 314.0 L640.5 314.0 L641.0 314.0 L641.5 314.0 L642.0 314.0 L642.5 314.0 L643.0 314.0 L643.5 314.0 L644.0 314.0 L644.5 314.0 L645.0 314.0 L645.5 314.0 L646.0 314.0 L646.5 314.0 L647.0 314.0 L647.5 314.0 L648.0 314.0 L648.5 314.0 L649.0 314.0 L649.5 314.0 L650.0 314.0 L650.5 314.0 L651.0 314.0 L651.5 314.0 L652.0 314.0 L652.5 314.0 L653.0 314.0 L653.5 314.0 L654.0 314.0 L654.5 314.0 L655.0 314.0 L655.5 314.0 L656.0 314.0 L656.5 314.0 L657.0 314.0 L657.5 314.0 L658.0 314.0 L658.5 314.0 L659.0 314.0 L659.5 314.0 L660.0 314.0 L660.5 314.0 L661.0 314.0 L661.5 314.0 L662.0 314.0 L662.5 314.0 L663.0 314.0 L663.5 314.0 L664.0 314.0 L664.5 314.0 L665.0 314.0 L665.5 314.0 L666.0 314.0 L666.5 314.0 L667.0 314.0 L667.5 314.0 L668.0 314.0 L668.5 314.0 L669.0 314.0 L669.5 314.0 L670.0 314.0 L670.5 314.0 L671.0 314.0 L671.5 314.0 L672.0 314.0 L672.5 314.0 L673.0 314.0 L673.5 314.0 L674.0 314.0 L674.5 314.0 L675.0 314.0 L675.5 314.0 L676.0 314.0 L676.5 314.0 L677.0 314.0 L677.5 314.0 L678.0 314.0 L678.5 314.0 L679.0 314.0 L679.5 314.0 L680.0 314.0 L680.5 314.0 L681.0 314.0 L681.5 314.0 L682.0 314.0 L682.5 314.0 L683.0 314.0 L683.5 314.0 L684.0 314.0 L684.5 314.0 L685.0 314.0 L685.5 314.0 L686.0 314.0 L686.5 314.0 L687.0 314.0 L687.5 314.0 L688.0 314.0 L688.5 314.0 L689.0 314.0 L689.5 314.0 L690.0 314.0 L690.5 314.0 L691.0 314.0 L691.5 314.0 L692.0 314.0 L692.5 314.0 L693.0 314.0 L693.5 314.0 L694.0 314.0 L694.5 314.0 L695.0 314.0 L695.5 314.0 L696.0 314.0 L696.5 314.0 L697.0 314.0 L697.5 314.0 L698.0 314.0 L698.5 314.0 L699.0 314.0 L699.5 314.0 L700.0 314.0 L700.5 314.0 L701.0 314.0 L701.5 314.0 L702.0 314.0 L702.5 314.0 L703.0 314.0 L703.5 314.0 L704.0 314.0 L704.5 314.0 L705.0 314.0 L705.5 314.0 L706.0 314.0 L706.5 314.0 L707.0 314.0 L707.5 314.0 L708.0 314.0 L708.5 314.0 L709.0 314.0 L709.5 314.0 L710.0 314.0 L710.5 314.0 L711.0 314.0 L711.5 314.0 L712.0 314.0 L712.5 314.0 L713.0 314.0 L713.5 314.0 L714.0 314.0 L714.5 314.0 L715.0 314.0 L715.5 314.0 L716.0 314.0 L716.5 314.0 L717.0 314.0 L717.5 314.0 L718.0 314.0 L718.5 314.0 L719.0 314.0 L719.5 314.0 L720.0 314.0 L720.0 314.9 L719.5 314.9 L719.0 314.9 L718.5 314.9 L718.0 314.9 L717.5 314.9 L717.0 314.9 L716.5 314.9 L716.0 314.9 L715.5 314.9 L715.0 314.9 L714.5 314.9 L714.0 314.9 L713.5 314.9 L713.0 314.9 L712.5 314.9 L712.0 314.9 L711.5 314.9 L711.0 314.9 L710.5 314.9 L710.0 314.9 L709.5 314.9 L709.0 314.9 L708.5 314.9 L708.0 314.9 L707.5 314.9 L707.0 314.9 L706.5 314.9 L706.0 314.9 L705.5 314.9 L705.0 314.9 L704.5 314.9 L704.0 314.9 L703.5 314.9 L703.0 314.9 L702.5 314.9 L702.0 314.9 L701.5 314.9 L701.0 314.9 L700.5 314.9 L700.0 314.9 L699.5 314.9 L699.0 314.9 L698.5 314.9 L698.0 314.9 L697.5 314.9 L697.0 314.9 L696.5 314.9 L696.0 314.9 L695.5 314.9 L695.0 314.9 L694.5 314.9 L694.0 314.9 L693.5 314.9 L693.0 314.9 L692.5 314.9 L692.0 314.9 L691.5 314.9 L691.0 314.9 L690.5 314.9 L690.0 314.9 L689.5 314.9 L689.0 314.9 L688.5 314.9 L688.0 314.9 L687.5 314.9 L687.0 314.9 L686.5 314.9 L686.0 314.9 L685.5 314.9 L685.0 314.9 L684.5 314.9 L684.0 314.9 L683.5 314.9 L683.0 314.9 L682.5 314.9 L682.0 314.9 L681.5 314.9 L681.0 314.9 L680.5 314.9 L680.0 314.9 L679.5 314.9 L679.0 314.9 L678.5 314.9 L678.0 314.9 L677.5 314.9 L677.0 314.9 L676.5 314.9 L676.0 314.9 L675.5 314.9 L675.0 314.9 L674.5 314.9 L674.0 314.9 L673.5 314.9 L673.0 314.9 L672.5 314.9 L672.0 314.9 L671.5 314.9 L671.0 314.9 L670.5 314.9 L670.0 314.9 L669.5 314.9 L669.0 314.9 L668.5 314.9 L668.0 314.9 L667.5 314.9 L667.0 314.9 L666.5 314.9 L666.0 314.9 L665.5 314.9 L665.0 314.9 L664.5 314.9 L664.0 314.9 L663.5 314.9 L663.0 314.9 L662.5 314.9 L662.0 314.9 L661.5 314.9 L661.0 314.9 L660.5 314.9 L660.0 314.9 L659.5 314.9 L659.0 314.9 L658.5 314.9 L658.0 314.9 L657.5 314.9 L657.0 314.9 L656.5 314.9 L656.0 314.9 L655.5 314.9 L655.0 314.9 L654.5 314.9 L654.0 314.9 L653.5 314.9 L653.0 314.9 L652.5 314.9 L652.0 314.9 L651.5 314.9 L651.0 314.9 L650.5 314.9 L650.0 314.9 L649.5 314.9 L649.0 314.9 L648.5 314.9 L648.0 314.9 L647.5 314.9 L647.0 314.9 L646.5 314.9 L646.0 314.9 L645.5 314.9 L645.0 314.9 L644.5 314.9 L644.0 314.9 L643.5 314.9 L643.0 314.9 L642.5 314.9 L642.0 314.9 L641.5 314.9 L641.0 314.9 L640.5 314.9 L640.0 314.9 L639.5 314.9 L639.0 314.9 L638.5 314.9 L638.0 314.9 L637.5 314.9 L637.0 314.9 L636.5 314.9 L636.0 314.9 L635.5 314.9 L635.0 314.9 L634.5 314.9 L634.0 314.9 L633.5 314.9 L633.0 314.9 L632.5 314.9 L632.0 314.9 L631.5 314.9 L631.0 314.9 L630.5 314.9 L630.0 314.9 L629.5 314.9 L629.0 314.9 L628.5 314.9 L628.0 314.9 L627.5 314.9 L627.0 314.9 L626.5 314.9 L626.0 314.9 L625.5 314.9 L625.0 314.9 L624.5 314.9 L624.0 314.9 L623.5 314.9 L623.0 314.9 L622.5 314.9 L622.0 314.9 L621.5 314.9 L621.0 314.9 L620.5 314.9 L620.0 314.9 L619.5 314.9 L619.0 314.9 L618.5 314.9 L618.0 314.9 L617.5 314.9 L617.0 314.9 L616.5 314.9 L616.0 314.9 L615.5 314.9 L615.0 314.9 L614.5 314.9 L614.0 314.9 L613.5 314.9 L613.0 314.9 L612.5 314.9 L612.0 314.9 L611.5 314.9 L611.0 314.9 L610.5 314.9 L610.0 314.9 L609.5 314.9 L609.0 314.9 L608.5 314.9 L608.0 314.9 L607.5 314.9 L607.0 314.9 L606.5 314.9 L606.0 314.9 L605.5 314.9 L605.0 314.9 L604.5 314.9 L604.0 314.9 L603.5 314.9 L603.0 314.9 L602.5 314.9 L602.0 314.9 L601.5 314.9 L601.0 314.9 L600.5 314.9 L600.0 314.9 L599.5 314.9 L599.0 314.9 L598.5 314.9 L598.0 314.9 L597.5 314.9 L597.0 314.9 L596.5 314.9 L596.0 314.9 L595.5 314.9 L595.0 314.9 L594.5 314.9 L594.0 314.9 L593.5 314.9 L593.0 314.9 L592.5 314.9 L592.0 314.9 L591.5 314.9 L591.0 314.9 L590.5 314.9 L590.0 314.9 L589.5 314.9 L589.0 314.9 L588.5 314.9 L588.0 314.9 L587.5 314.9 L587.0 314.9 L586.5 314.9 L586.0 314.9 L585.5 314.9 L585.0 314.9 L584.5 314.9 L584.0 314.9 L583.5 314.9 L583.0 314.9 L582.5 314.9 L582.0 314.9 L581.5 314.9 L581.0 314.9 L580.5 314.9 L580.0 314.9 L579.5 314.9 L579.0 314.9 L578.5 314.9 L578.0 314.9 L577.5 314.9 L577.0 314.9 L576.5 314.9 L576.0 314.9 L575.5 314.9 L575.0 314.9 L574.5 314.9 L574.0 314.9 L573.5 314.9 L573.0 314.9 L572.5 314.9 L572.0 314.9 L571.5 314.9 L571.0 314.9 L570.5 314.9 L570.0 314.9 L569.5 314.9 L569.0 314.9 L568.5 314.9 L568.0 314.9 L567.5 314.9 L567.0 314.9 L566.5 314.9 L566.0 314.9 L565.5 314.9 L565.0 314.9 L564.5 314.9 L564.0 314.9 L563.5 314.9 L563.0 314.9 L562.5 314.9 L562.0 314.9 L561.5 314.9 L561.0 314.9 L560.5 314.9 L560.0 314.9 L559.5 314.9 L559.0 314.9 L558.5 314.9 L558.0 314.9 L557.5 314.9 L557.0 314.9 L556.5 314.9 L556.0 314.9 L555.5 314.9 L555.0 314.9 L554.5 314.9 L554.0 314.9 L553.5 314.9 L553.0 314.9 L552.5 314.9 L552.0 314.9 L551.5 314.9 L551.0 314.9 L550.5 314.9 L550.0 314.9 L549.5 314.9 L549.0 314.9 L548.5 314.9 L548.0 314.9 L547.5 314.9 L547.0 314.9 L546.5 314.9 L546.0 314.9 L545.5 314.9 L545.0 314.9 L544.5 314.9 L544.0 314.9 L543.5 314.9 L543.0 314.9 L542.5 314.9 L542.0 314.9 L541.5 314.9 L541.0 314.9 L540.5 314.9 L540.0 314.9 L539.5 314.9 L539.0 314.9 L538.5 314.9 L538.0 314.9 L537.5 314.9 L537.0 314.9 L536.5 314.9 L536.0 314.9 L535.5 314.9 L535.0 314.9 L534.5 314.9 L534.0 314.9 L533.5 314.9 L533.0 314.9 L532.5 314.9 L532.0 314.9 L531.5 314.9 L531.0 314.9 L530.5 314.9 L530.0 314.9 L529.5 314.9 L529.0 314.9 L528.5 314.9 L528.0 314.9 L527.5 314.9 L527.0 314.9 L526.5 314.9 L526.0 314.9 L525.5 314.9 L525.0 314.9 L524.5 314.9 L524.0 314.9 L523.5 314.9 L523.0 314.9 L522.5 314.9 L522.0 314.9 L521.5 314.9 L521.0 314.9 L520.5 314.9 L520.0 314.9 L519.5 314.9 L519.0 314.9 L518.5 314.9 L518.0 314.9 L517.5 314.9 L517.0 314.9 L516.5 314.9 L516.0 314.9 L515.5 314.9 L515.0 314.9 L514.5 314.9 L514.0 314.9 L513.5 314.9 L513.0 314.9 L512.5 314.9 L512.0 314.9 L511.5 314.9 L511.0 314.9 L510.5 314.9 L510.0 314.9 L509.5 314.9 L509.0 314.9 L508.5 314.9 L508.0 314.9 L507.5 315.1 L507.0 315.4 L506.5 315.8 L506.0 316.4 L505.5 316.4 L505.0 315.1 L504.5 314.9 L504.0 314.9 L503.5 314.9 L503.0 314.9 L502.5 314.9 L502.0 314.9 L501.5 314.9 L501.0 314.9 L500.5 314.9 L500.0 314.9 L499.5 314.9 L499.0 314.9 L498.5 314.9 L498.0 314.9 L497.5 314.9 L497.0 314.9 L496.5 314.9 L496.0 314.9 L495.5 314.9 L495.0 314.9 L494.5 314.9 L494.0 314.9 L493.5 314.9 L493.0 314.9 L492.5 314.9 L492.0 314.9 L491.5 314.9 L491.0 314.9 L490.5 314.9 L490.0 315.1 L489.5 315.4 L489.0 315.8 L488.5 316.3 L488.0 317.1 L487.5 316.1 L487.0 314.9 L486.5 314.9 L486.0 314.9 L485.5 314.9 L485.0 314.9 L484.5 314.9 L484.0 314.9 L483.5 314.9 L483.0 314.9 L482.5 314.9 L482.0 314.9 L481.5 314.9 L481.0 314.9 L480.5 314.9 L480.0 314.9 L479.5 314.9 L479.0 314.9 L478.5 314.9 L478.0 314.9 L477.5 314.9 L477.0 314.9 L476.5 314.9 L476.0 314.9 L475.5 314.9 L475.0 314.9 L474.5 314.9 L474.0 314.9 L473.5 314.9 L473.0 314.9 L472.5 314.9 L472.0 315.2 L471.5 315.5 L471.0 315.9 L470.5 316.5 L470.0 316.8 L469.5 315.5 L469.0 314.9 L468.5 314.9 L468.0 314.9 L467.5 314.9 L467.0 314.9 L466.5 314.9 L466.0 314.9 L465.5 314.9 L465.0 314.9 L464.5 314.9 L464.0 314.9 L463.5 314.9 L463.0 314.9 L462.5 314.9 L462.0 314.9 L461.5 314.9 L461.0 314.9 L460.5 314.9 L460.0 314.9 L459.5 314.9 L459.0 314.9 L458.5 314.9 L458.0 314.9 L457.5 314.9 L457.0 314.9 L456.5 314.9 L456.0 314.9 L455.5 314.9 L455.0 314.9 L454.5 315.1 L454.0 315.4 L453.5 315.7 L453.0 316.3 L452.5 317.0 L452.0 316.5 L451.5 315.0 L451.0 314.9 L450.5 314.9 L450.0 314.9 L449.5 314.9 L449.0 314.9 L448.5 314.9 L448.0 314.9 L447.5 314.9 L447.0 314.9 L446.5 314.9 L446.0 314.9 L445.5 314.9 L445.0 314.9 L444.5 314.9 L444.0 314.9 L443.5 314.9 L443.0 314.9 L442.5 314.9 L442.0 314.9 L441.5 314.9 L441.0 314.9 L440.5 314.9 L440.0 314.9 L439.5 314.9 L439.0 314.9 L438.5 314.9 L438.0 314.9 L437.5 314.9 L437.0 314.9 L436.5 315.0 L436.0 315.3 L435.5 315.6 L435.0 316.1 L434.5 316.7 L434.0 315.6 L433.5 314.9 L433.0 314.9 L432.5 314.9 L432.0 314.9 L431.5 314.9 L431.0 314.9 L430.5 314.9 L430.0 314.9 L429.5 314.9 L429.0 314.9 L428.5 314.9 L428.0 314.9 L427.5 314.9 L427.0 314.9 L426.5 314.9 L426.0 314.9 L425.5 314.9 L425.0 314.9 L424.5 314.9 L424.0 314.9 L423.5 314.9 L423.0 314.9 L422.5 314.9 L422.0 314.9 L421.5 314.9 L421.0 314.9 L420.5 314.9 L420.0 314.9 L419.5 314.9 L419.0 315.0 L418.5 315.2 L418.0 315.5 L417.5 316.0 L417.0 316.6 L416.5 316.6 L416.0 315.2 L415.5 314.9 L415.0 314.9 L414.5 314.9 L414.0 314.9 L413.5 314.9 L413.0 314.9 L412.5 314.9 L412.0 314.9 L411.5 314.9 L411.0 314.9 L410.5 314.9 L410.0 314.9 L409.5 314.9 L409.0 314.9 L408.5 314.9 L408.0 314.9 L407.5 314.9 L407.0 314.9 L406.5 314.9 L406.0 314.9 L405.5 314.9 L405.0 314.9 L404.5 314.9 L404.0 314.9 L403.5 314.9 L403.0 314.9 L402.5 314.9 L402.0 314.9 L401.5 314.9 L401.0 315.0 L400.5 315.2 L400.0 315.6 L399.5 316.0 L399.0 316.6 L398.5 315.8 L398.0 314.9 L397.5 314.9 L397.0 314.9 L396.5 314.9 L396.0 314.9 L395.5 314.9 L395.0 314.9 L394.5 314.9 L394.0 314.9 L393.5 314.9 L393.0 314.9 L392.5 314.9 L392.0 314.9 L391.5 314.9 L391.0 314.9 L390.5 314.9 L390.0 314.9 L389.5 314.9 L389.0 314.9 L388.5 314.9 L388.0 314.9 L387.5 314.9 L387.0 314.9 L386.5 314.9 L386.0 314.9 L385.5 314.9 L385.0 314.9 L384.5 314.9 L384.0 314.9 L383.5 314.9 L383.0 315.1 L382.5 315.4 L382.0 315.8 L381.5 316.3 L381.0 316.6 L380.5 315.4 L380.0 314.9 L379.5 314.9 L379.0 314.9 L378.5 314.9 L378.0 314.9 L377.5 314.9 L377.0 314.9 L376.5 314.9 L376.0 314.9 L375.5 314.9 L375.0 314.9 L374.5 314.9 L374.0 314.9 L373.5 314.9 L373.0 314.9 L372.5 314.9 L372.0 314.9 L371.5 314.9 L371.0 314.9 L370.5 314.9 L370.0 314.9 L369.5 314.9 L369.0 314.9 L368.5 314.9 L368.0 314.9 L367.5 314.9 L367.0 314.9 L366.5 314.9 L366.0 314.9 L365.5 315.0 L365.0 315.3 L364.5 315.7 L364.0 316.2 L363.5 316.8 L363.0 316.4 L362.5 315.0 L362.0 314.9 L361.5 314.9 L361.0 314.9 L360.5 314.9 L360.0 314.9 L359.5 314.9 L359.0 314.9 L358.5 314.9 L358.0 314.9 L357.5 314.9 L357.0 314.9 L356.5 314.9 L356.0 314.9 L355.5 314.9 L355.0 314.9 L354.5 314.9 L354.0 314.9 L353.5 314.9 L353.0 314.9 L352.5 314.9 L352.0 314.9 L351.5 314.9 L351.0 314.9 L350.5 314.9 L350.0 314.9 L349.5 314.9 L349.0 314.9 L348.5 314.9 L348.0 314.9 L347.5 315.0 L347.0 315.2 L346.5 315.5 L346.0 316.0 L345.5 316.6 L345.0 315.5 L344.5 314.9 L344.0 314.9 L343.5 314.9 L343.0 314.9 L342.5 314.9 L342.0 314.9 L341.5 314.9 L341.0 314.9 L340.5 314.9 L340.0 314.9 L339.5 314.9 L339.0 314.9 L338.5 314.9 L338.0 314.9 L337.5 314.9 L337.0 314.9 L336.5 314.9 L336.0 314.9 L335.5 314.9 L335.0 314.9 L334.5 314.9 L334.0 314.9 L333.5 314.9 L333.0 314.9 L332.5 314.9 L332.0 314.9 L331.5 314.9 L331.0 314.9 L330.5 314.9 L330.0 315.0 L329.5 315.3 L329.0 315.6 L328.5 316.1 L328.0 316.8 L327.5 316.8 L327.0 315.3 L326.5 314.9 L326.0 314.9 L325.5 314.9 L325.0 314.9 L324.5 314.9 L324.0 314.9 L323.5 314.9 L323.0 314.9 L322.5 314.9 L322.0 314.9 L321.5 314.9 L321.0 314.9 L320.5 314.9 L320.0 314.9 L319.5 314.9 L319.0 314.9 L318.5 314.9 L318.0 314.9 L317.5 314.9 L317.0 314.9 L316.5 314.9 L316.0 314.9 L315.5 314.9 L315.0 314.9 L314.5 314.9 L314.0 314.9 L313.5 314.9 L313.0 314.9 L312.5 314.9 L312.0 315.1 L311.5 315.3 L311.0 315.7 L310.5 316.2 L310.0 316.9 L309.5 316.0 L309.0 314.9 L308.5 314.9 L308.0 314.9 L307.5 314.9 L307.0 314.9 L306.5 314.9 L306.0 314.9 L305.5 314.9 L305.0 314.9 L304.5 314.9 L304.0 314.9 L303.5 314.9 L303.0 314.9 L302.5 314.9 L302.0 314.9 L301.5 314.9 L301.0 314.9 L300.5 314.9 L300.0 314.9 L299.5 314.9 L299.0 314.9 L298.5 314.9 L298.0 314.9 L297.5 314.9 L297.0 314.9 L296.5 314.9 L296.0 314.9 L295.5 314.9 L295.0 314.9 L294.5 314.9 L294.0 314.9 L293.5 314.9 L293.0 314.9 L292.5 314.9 L292.0 314.9Z" fill="#3c8b9a" fill-opacity="0.95"/>
<path d="M292 375.6 H720" stroke="#3f96a4" stroke-width="0.9"/>
<path d="M292 436.8 H720" stroke="#4499a5" stroke-width="0.9"/>
<path d="M292 498.0 H720" stroke="#62a8b2" stroke-width="0.9"/>
<path d="M470.0 436.4 L470.5 436.4 L471.0 436.4 L471.5 436.4 L472.0 436.4 L472.5 436.2 L473.0 435.3 L473.5 435.1 L474.0 434.5 L474.5 434.3 L475.0 435.0 L475.5 434.5 L476.0 434.3 L476.5 434.0 L477.0 435.2 L477.5 434.8 L478.0 435.2 L478.5 433.9 L479.0 434.1 L479.5 435.3 L480.0 433.6 L480.5 433.7 L481.0 434.2 L481.5 434.3 L482.0 435.1 L482.5 435.3 L483.0 434.4 L483.5 435.3 L484.0 435.0 L484.5 434.9 L485.0 435.3 L485.5 434.5 L486.0 434.6 L486.5 433.9 L487.0 434.4 L487.5 434.2 L488.0 434.5 L488.5 434.2 L489.0 434.6 L489.5 434.9 L490.0 433.6 L490.5 433.6 L491.0 433.9 L491.5 434.1 L492.0 434.8 L492.5 435.0 L493.0 434.9 L493.5 435.2 L494.0 434.0 L494.5 434.7 L495.0 433.9 L495.5 434.7 L496.0 433.7 L496.5 433.9 L497.0 435.4 L497.5 435.0 L498.0 433.8 L498.5 435.1 L499.0 435.2 L499.5 436.3 L500.0 436.4 L500.0 437.2 L499.5 437.3 L499.0 438.4 L498.5 438.5 L498.0 439.8 L497.5 438.6 L497.0 438.2 L496.5 439.7 L496.0 439.9 L495.5 438.9 L495.0 439.7 L494.5 438.9 L494.0 439.6 L493.5 438.4 L493.0 438.7 L492.5 438.6 L492.0 438.8 L491.5 439.5 L491.0 439.7 L490.5 440.0 L490.0 440.0 L489.5 438.7 L489.0 439.0 L488.5 439.4 L488.0 439.1 L487.5 439.4 L487.0 439.2 L486.5 439.7 L486.0 439.0 L485.5 439.1 L485.0 438.3 L484.5 438.7 L484.0 438.6 L483.5 438.3 L483.0 439.2 L482.5 438.3 L482.0 438.5 L481.5 439.3 L481.0 439.4 L480.5 439.9 L480.0 440.0 L479.5 438.3 L479.0 439.5 L478.5 439.7 L478.0 438.4 L477.5 438.8 L477.0 438.4 L476.5 439.6 L476.0 439.3 L475.5 439.1 L475.0 438.6 L474.5 439.3 L474.0 439.1 L473.5 438.5 L473.0 438.3 L472.5 437.4 L472.0 437.2 L471.5 437.2 L471.0 437.2 L470.5 437.2 L470.0 437.2Z" fill="#4a98a4"/>
<path d="M292 559.2 H324" stroke="#3b8894" stroke-width="0.9"/>
<path d="M322.0 558.9 L322.5 558.9 L323.0 556.4 L323.5 554.9 L324.0 555.2 L324.5 554.3 L325.0 554.6 L325.5 553.3 L326.0 553.6 L326.5 553.8 L327.0 553.9 L327.5 553.6 L328.0 554.9 L328.5 554.2 L329.0 554.8 L329.5 553.0 L330.0 555.1 L330.5 553.2 L331.0 555.1 L331.5 553.6 L332.0 554.4 L332.5 554.2 L333.0 553.2 L333.5 555.2 L334.0 555.1 L334.5 553.0 L335.0 554.0 L335.5 555.0 L336.0 552.8 L336.5 552.9 L337.0 555.0 L337.5 554.2 L338.0 554.9 L338.5 554.5 L339.0 553.7 L339.5 554.8 L340.0 553.5 L340.5 555.1 L341.0 554.8 L341.5 553.2 L342.0 555.1 L342.5 558.9 L343.0 558.9 L343.5 558.9 L344.0 558.9 L344.5 558.9 L345.0 558.9 L345.5 557.4 L346.0 553.7 L346.5 554.3 L347.0 555.0 L347.5 555.0 L348.0 554.3 L348.5 554.3 L349.0 555.5 L349.5 555.2 L350.0 555.0 L350.5 554.6 L351.0 554.0 L351.5 554.7 L352.0 555.7 L352.5 554.0 L353.0 554.8 L353.5 554.6 L354.0 555.3 L354.5 556.3 L355.0 558.9 L355.5 558.9 L356.0 558.9 L356.5 558.9 L357.0 558.9 L357.5 558.9 L358.0 558.9 L358.5 555.2 L359.0 554.2 L359.5 553.5 L360.0 555.0 L360.5 554.0 L361.0 554.6 L361.5 554.4 L362.0 553.9 L362.5 552.7 L363.0 553.9 L363.5 552.7 L364.0 554.7 L364.5 552.8 L365.0 554.2 L365.5 554.6 L366.0 553.2 L366.5 552.8 L367.0 555.1 L367.5 554.4 L368.0 553.2 L368.5 554.3 L369.0 554.5 L369.5 555.1 L370.0 555.0 L370.5 553.6 L371.0 552.6 L371.5 552.6 L372.0 553.8 L372.5 555.0 L373.0 554.3 L373.5 553.1 L374.0 553.0 L374.5 553.5 L375.0 554.5 L375.5 553.8 L376.0 553.9 L376.5 553.5 L377.0 554.4 L377.5 552.7 L378.0 552.9 L378.5 554.7 L379.0 554.4 L379.5 552.9 L380.0 554.4 L380.5 552.7 L381.0 553.8 L381.5 553.4 L382.0 553.3 L382.5 554.6 L383.0 554.4 L383.5 554.5 L384.0 553.4 L384.5 553.4 L385.0 554.8 L385.5 552.9 L386.0 554.1 L386.5 554.5 L387.0 554.0 L387.5 552.7 L388.0 553.7 L388.5 553.5 L389.0 552.8 L389.5 552.7 L390.0 553.2 L390.5 554.1 L391.0 553.6 L391.5 553.9 L392.0 558.9 L392.5 558.9 L393.0 558.9 L393.5 558.9 L394.0 558.9 L394.5 556.7 L395.0 555.4 L395.5 553.9 L396.0 553.4 L396.5 553.7 L397.0 553.4 L397.5 553.4 L398.0 554.3 L398.5 553.7 L399.0 554.6 L399.5 555.3 L400.0 554.7 L400.5 554.8 L401.0 553.4 L401.5 553.9 L402.0 554.2 L402.5 554.1 L403.0 555.2 L403.5 554.3 L404.0 553.9 L404.5 554.6 L405.0 554.9 L405.5 554.6 L406.0 554.7 L406.5 553.9 L407.0 555.2 L407.5 555.3 L408.0 554.8 L408.5 553.9 L409.0 553.7 L409.5 554.0 L410.0 553.3 L410.5 554.6 L411.0 555.4 L411.5 555.2 L412.0 558.9 L412.5 558.9 L413.0 558.9 L413.5 558.9 L414.0 558.9 L414.5 558.9 L415.0 558.9 L415.5 558.9 L416.0 558.5 L416.5 555.0 L417.0 555.2 L417.5 554.7 L418.0 555.1 L418.5 553.6 L419.0 554.5 L419.5 554.1 L420.0 555.2 L420.5 554.6 L421.0 554.3 L421.5 553.7 L422.0 555.1 L422.5 554.6 L423.0 553.7 L423.5 553.8 L424.0 555.1 L424.5 554.4 L425.0 553.9 L425.5 554.7 L426.0 554.1 L426.5 557.5 L427.0 558.9 L427.5 558.9 L428.0 558.9 L428.5 558.9 L429.0 558.9 L429.5 558.9 L430.0 556.8 L430.5 554.7 L431.0 554.8 L431.5 555.2 L432.0 555.0 L432.5 554.2 L433.0 554.9 L433.5 555.3 L434.0 553.6 L434.5 554.8 L435.0 553.3 L435.5 554.1 L436.0 554.5 L436.5 553.4 L437.0 553.4 L437.5 554.7 L438.0 555.1 L438.5 553.9 L439.0 553.5 L439.5 554.0 L440.0 553.6 L440.5 554.4 L441.0 554.0 L441.5 554.8 L442.0 554.4 L442.5 554.5 L443.0 554.5 L443.5 554.4 L444.0 553.5 L444.5 555.0 L445.0 554.9 L445.5 554.8 L446.0 553.1 L446.5 554.1 L447.0 555.2 L447.5 553.4 L448.0 553.3 L448.5 553.4 L449.0 554.5 L449.5 553.6 L450.0 554.6 L450.5 555.0 L451.0 553.3 L451.5 553.3 L452.0 554.8 L452.5 553.2 L453.0 555.2 L453.5 554.6 L454.0 555.3 L454.5 554.9 L455.0 554.9 L455.5 553.6 L456.0 554.6 L456.5 554.8 L457.0 554.8 L457.5 554.5 L458.0 553.2 L458.5 553.8 L459.0 555.0 L459.5 553.6 L460.0 553.9 L460.5 554.2 L461.0 554.0 L461.5 553.7 L462.0 553.3 L462.5 553.7 L463.0 553.0 L463.5 553.1 L464.0 552.2 L464.5 552.7 L465.0 552.2 L465.5 551.5 L466.0 550.5 L466.5 552.1 L467.0 549.7 L467.5 551.3 L468.0 550.0 L468.5 550.6 L469.0 549.6 L469.5 550.6 L470.0 551.6 L470.5 551.7 L471.0 550.9 L471.5 550.4 L472.0 550.1 L472.5 552.7 L473.0 553.0 L473.5 552.8 L474.0 552.9 L474.5 553.0 L475.0 553.2 L475.5 552.3 L476.0 552.8 L476.5 550.7 L477.0 551.0 L477.5 549.7 L478.0 549.7 L478.5 551.0 L479.0 550.8 L479.5 554.2 L480.0 553.9 L480.5 552.5 L481.0 554.1 L481.5 554.7 L482.0 553.4 L482.5 554.2 L483.0 553.9 L483.5 554.5 L484.0 554.7 L484.5 555.0 L485.0 553.8 L485.5 553.0 L486.0 552.9 L486.5 553.4 L487.0 553.0 L487.5 554.4 L488.0 554.6 L488.5 553.1 L489.0 553.8 L489.5 553.7 L490.0 555.3 L490.5 554.7 L491.0 554.1 L491.5 553.6 L492.0 553.3 L492.5 553.5 L493.0 554.5 L493.5 554.4 L494.0 553.3 L494.5 553.0 L495.0 554.2 L495.5 554.9 L496.0 553.8 L496.5 554.1 L497.0 554.5 L497.5 554.8 L498.0 554.4 L498.5 553.9 L499.0 555.1 L499.5 554.1 L500.0 558.9 L500.0 559.6 L499.5 564.3 L499.0 563.3 L498.5 564.5 L498.0 564.0 L497.5 563.6 L497.0 563.9 L496.5 564.3 L496.0 564.6 L495.5 563.5 L495.0 564.2 L494.5 565.4 L494.0 565.1 L493.5 564.0 L493.0 563.9 L492.5 564.9 L492.0 565.1 L491.5 564.8 L491.0 564.3 L490.5 563.7 L490.0 563.1 L489.5 564.7 L489.0 564.6 L488.5 565.3 L488.0 563.8 L487.5 564.0 L487.0 565.4 L486.5 565.0 L486.0 565.5 L485.5 565.4 L485.0 564.6 L484.5 563.4 L484.0 563.7 L483.5 563.9 L483.0 564.5 L482.5 564.2 L482.0 565.0 L481.5 563.7 L481.0 564.3 L480.5 565.9 L480.0 564.5 L479.5 564.2 L479.0 567.6 L478.5 567.4 L478.0 568.7 L477.5 568.7 L477.0 567.4 L476.5 567.7 L476.0 565.6 L475.5 566.1 L475.0 565.2 L474.5 565.4 L474.0 565.5 L473.5 565.6 L473.0 565.4 L472.5 565.7 L472.0 568.3 L471.5 568.0 L471.0 567.5 L470.5 566.7 L470.0 566.8 L469.5 567.8 L469.0 568.8 L468.5 567.8 L468.0 568.4 L467.5 567.1 L467.0 568.7 L466.5 566.3 L466.0 567.9 L465.5 566.9 L465.0 566.2 L464.5 565.7 L464.0 566.2 L463.5 565.3 L463.0 565.4 L462.5 564.7 L462.0 565.1 L461.5 564.7 L461.0 564.4 L460.5 564.2 L460.0 564.5 L459.5 564.8 L459.0 563.4 L458.5 564.6 L458.0 565.2 L457.5 563.9 L457.0 563.6 L456.5 563.6 L456.0 563.8 L455.5 564.8 L455.0 563.5 L454.5 563.5 L454.0 563.1 L453.5 563.8 L453.0 563.2 L452.5 565.2 L452.0 563.6 L451.5 565.1 L451.0 565.1 L450.5 563.4 L450.0 563.8 L449.5 564.8 L449.0 563.9 L448.5 565.0 L448.0 565.1 L447.5 565.0 L447.0 563.2 L446.5 564.3 L446.0 565.3 L445.5 563.6 L445.0 563.5 L444.5 563.4 L444.0 564.9 L443.5 564.0 L443.0 563.9 L442.5 563.9 L442.0 564.0 L441.5 563.6 L441.0 564.4 L440.5 564.0 L440.0 564.8 L439.5 564.4 L439.0 564.9 L438.5 564.5 L438.0 563.3 L437.5 563.7 L437.0 565.0 L436.5 565.0 L436.0 563.9 L435.5 564.3 L435.0 565.1 L434.5 563.6 L434.0 564.8 L433.5 563.1 L433.0 563.5 L432.5 564.2 L432.0 563.4 L431.5 563.2 L431.0 563.6 L430.5 563.7 L430.0 561.6 L429.5 559.6 L429.0 559.6 L428.5 559.6 L428.0 559.6 L427.5 559.6 L427.0 559.6 L426.5 560.9 L426.0 564.3 L425.5 563.7 L425.0 564.5 L424.5 564.0 L424.0 563.3 L423.5 564.6 L423.0 564.7 L422.5 563.8 L422.0 563.3 L421.5 564.7 L421.0 564.1 L420.5 563.8 L420.0 563.2 L419.5 564.3 L419.0 563.9 L418.5 564.8 L418.0 563.3 L417.5 563.7 L417.0 563.2 L416.5 563.4 L416.0 559.9 L415.5 559.6 L415.0 559.6 L414.5 559.6 L414.0 559.6 L413.5 559.6 L413.0 559.6 L412.5 559.6 L412.0 559.6 L411.5 563.2 L411.0 563.0 L410.5 563.8 L410.0 565.1 L409.5 564.4 L409.0 564.7 L408.5 564.5 L408.0 563.6 L407.5 563.1 L407.0 563.2 L406.5 564.5 L406.0 563.7 L405.5 563.8 L405.0 563.5 L404.5 563.8 L404.0 564.5 L403.5 564.1 L403.0 563.2 L402.5 564.3 L402.0 564.2 L401.5 564.5 L401.0 565.0 L400.5 563.6 L400.0 563.7 L399.5 563.1 L399.0 563.8 L398.5 564.7 L398.0 564.1 L397.5 565.0 L397.0 565.0 L396.5 564.7 L396.0 565.0 L395.5 564.5 L395.0 563.0 L394.5 561.7 L394.0 559.6 L393.5 559.6 L393.0 559.6 L392.5 559.6 L392.0 559.6 L391.5 564.5 L391.0 564.8 L390.5 564.3 L390.0 565.2 L389.5 565.7 L389.0 565.6 L388.5 564.9 L388.0 564.7 L387.5 565.7 L387.0 564.4 L386.5 563.9 L386.0 564.3 L385.5 565.5 L385.0 563.6 L384.5 565.0 L384.0 565.0 L383.5 563.9 L383.0 564.0 L382.5 563.8 L382.0 565.1 L381.5 565.0 L381.0 564.6 L380.5 565.7 L380.0 564.0 L379.5 565.5 L379.0 564.0 L378.5 563.7 L378.0 565.5 L377.5 565.7 L377.0 564.0 L376.5 564.9 L376.0 564.5 L375.5 564.6 L375.0 563.9 L374.5 564.9 L374.0 565.4 L373.5 565.3 L373.0 564.1 L372.5 563.4 L372.0 564.6 L371.5 565.8 L371.0 565.8 L370.5 564.8 L370.0 563.4 L369.5 563.3 L369.0 563.9 L368.5 564.1 L368.0 565.2 L367.5 564.0 L367.0 563.3 L366.5 565.6 L366.0 565.2 L365.5 563.8 L365.0 564.2 L364.5 565.6 L364.0 563.7 L363.5 565.7 L363.0 564.5 L362.5 565.7 L362.0 564.5 L361.5 564.0 L361.0 563.8 L360.5 564.4 L360.0 563.4 L359.5 564.9 L359.0 564.2 L358.5 563.2 L358.0 559.6 L357.5 559.6 L357.0 559.6 L356.5 559.6 L356.0 559.6 L355.5 559.6 L355.0 559.6 L354.5 562.1 L354.0 563.1 L353.5 563.8 L353.0 563.6 L352.5 564.4 L352.0 562.7 L351.5 563.7 L351.0 564.4 L350.5 563.8 L350.0 563.4 L349.5 563.2 L349.0 562.9 L348.5 564.1 L348.0 564.1 L347.5 563.4 L347.0 563.4 L346.5 564.1 L346.0 564.7 L345.5 561.0 L345.0 559.6 L344.5 559.6 L344.0 559.6 L343.5 559.6 L343.0 559.6 L342.5 559.6 L342.0 563.3 L341.5 565.2 L341.0 563.6 L340.5 563.3 L340.0 564.9 L339.5 563.6 L339.0 564.7 L338.5 563.9 L338.0 563.5 L337.5 564.2 L337.0 563.4 L336.5 565.5 L336.0 565.6 L335.5 563.4 L335.0 564.4 L334.5 565.4 L334.0 563.3 L333.5 563.2 L333.0 565.2 L332.5 564.2 L332.0 564.0 L331.5 564.8 L331.0 563.3 L330.5 565.2 L330.0 563.3 L329.5 565.4 L329.0 563.6 L328.5 564.2 L328.0 563.5 L327.5 564.8 L327.0 564.5 L326.5 564.6 L326.0 564.8 L325.5 565.1 L325.0 563.8 L324.5 564.1 L324.0 563.2 L323.5 563.5 L323.0 562.0 L322.5 559.6 L322.0 559.6Z" fill="#2f7f8c"/>
<path d="M292 620.4 H500" stroke="#505050" stroke-width="0.9"/>
<path d="M299.8 620.4 L300.2 602.4 L301.4 609.6 L301.7 618.6 L302.5 619.6 L304.2 620.4 L302.5 621.2 L301.8 622.2 L301.4 631.2 L300.3 637.5 ZM308.7 620.4 L309.2 610.4 L310.3 614.4 L310.6 618.6 L311.4 619.6 L313.1 620.4 L311.4 621.2 L310.7 622.2 L310.3 626.4 L309.2 629.9 ZM317.7 620.4 L318.1 608.4 L319.2 613.2 L319.6 618.6 L320.4 619.6 L322.1 620.4 L320.4 621.2 L319.7 622.2 L319.2 627.6 L318.2 631.8 ZM326.6 620.4 L327.0 608.4 L328.1 613.2 L328.5 618.6 L329.3 619.6 L331.0 620.4 L329.3 621.2 L328.6 622.2 L328.1 627.6 L327.1 631.8 ZM335.5 620.4 L336.0 600.4 L337.1 608.4 L337.4 618.6 L338.2 619.6 L339.9 620.4 L338.2 621.2 L337.5 622.2 L337.1 632.4 L336.0 639.4 ZM344.4 620.4 L344.9 600.4 L346.0 608.4 L346.3 618.6 L347.1 619.6 L348.8 620.4 L347.1 621.2 L346.4 622.2 L346.0 632.4 L344.9 639.4 ZM353.4 620.4 L353.8 605.4 L354.9 611.4 L355.3 618.6 L356.1 619.6 L357.8 620.4 L356.1 621.2 L355.4 622.2 L354.9 629.4 L353.9 634.7 ZM362.3 620.4 L362.8 598.4 L363.9 607.2 L364.2 618.6 L365.0 619.6 L366.7 620.4 L365.0 621.2 L364.3 622.2 L363.9 633.6 L362.8 641.3 ZM371.2 620.4 L371.7 599.4 L372.8 607.8 L373.1 618.6 L373.9 619.6 L375.6 620.4 L373.9 621.2 L373.2 622.2 L372.8 633.0 L371.7 640.4 ZM380.2 620.4 L380.6 608.4 L381.7 613.2 L382.1 618.6 L382.9 619.6 L384.6 620.4 L382.9 621.2 L382.2 622.2 L381.7 627.6 L380.7 631.8 ZM389.1 620.4 L389.6 610.4 L390.7 614.4 L391.0 618.6 L391.8 619.6 L393.5 620.4 L391.8 621.2 L391.1 622.2 L390.7 626.4 L389.6 629.9 ZM398.0 620.4 L398.5 602.4 L399.6 609.6 L399.9 618.6 L400.7 619.6 L402.4 620.4 L400.7 621.2 L400.0 622.2 L399.6 631.2 L398.5 637.5 ZM407.0 620.4 L407.4 610.4 L408.5 614.4 L408.9 618.6 L409.7 619.6 L411.4 620.4 L409.7 621.2 L409.0 622.2 L408.5 626.4 L407.5 629.9 ZM415.9 620.4 L416.3 599.4 L417.4 607.8 L417.8 618.6 L418.6 619.6 L420.3 620.4 L418.6 621.2 L417.9 622.2 L417.4 633.0 L416.4 640.4 ZM424.8 620.4 L425.3 608.4 L426.4 613.2 L426.7 618.6 L427.5 619.6 L429.2 620.4 L427.5 621.2 L426.8 622.2 L426.4 627.6 L425.3 631.8 ZM433.8 620.4 L434.2 610.4 L435.3 614.4 L435.6 618.6 L436.4 619.6 L438.1 620.4 L436.4 621.2 L435.8 622.2 L435.3 626.4 L434.2 629.9 ZM442.7 620.4 L443.1 610.4 L444.2 614.4 L444.6 618.6 L445.4 619.6 L447.1 620.4 L445.4 621.2 L444.7 622.2 L444.2 626.4 L443.2 629.9 ZM451.6 620.4 L452.1 598.4 L453.2 607.2 L453.5 618.6 L454.3 619.6 L456.0 620.4 L454.3 621.2 L453.6 622.2 L453.2 633.6 L452.1 641.3 ZM460.5 620.4 L461.0 599.4 L462.1 607.8 L462.4 618.6 L463.2 619.6 L464.9 620.4 L463.2 621.2 L462.5 622.2 L462.1 633.0 L461.0 640.4 ZM469.5 620.4 L469.9 598.4 L471.0 607.2 L471.4 618.6 L472.2 619.6 L473.9 620.4 L472.2 621.2 L471.5 622.2 L471.0 633.6 L470.0 641.3 ZM478.4 620.4 L478.8 602.4 L479.9 609.6 L480.3 618.6 L481.1 619.6 L482.8 620.4 L481.1 621.2 L480.4 622.2 L479.9 631.2 L478.9 637.5 ZM487.3 620.4 L487.8 600.4 L488.9 608.4 L489.2 618.6 L490.0 619.6 L491.7 620.4 L490.0 621.2 L489.3 622.2 L488.9 632.4 L487.8 639.4 ZM496.3 620.4 L496.7 598.4 L497.8 607.2 L498.2 618.6 L499.0 619.6 L500.7 620.4 L499.0 621.2 L498.3 622.2 L497.8 633.6 L496.8 641.3 Z" fill="#474747" fill-opacity="0.95"/>
<rect x="299.5" y="602.5" width="24" height="13.5" rx="3.5" fill="#2b2b2b"/><rect x="326" y="602.5" width="25" height="13.5" rx="3.5" fill="#fff"/><rect x="353.5" y="602.5" width="23.5" height="13.5" rx="3.5" fill="#2b2b2b"/>
</svg>
<div class="t" style="left:274.0px;top:569.8px;font-size:9px;font-weight:700;letter-spacing:-0.3px;color:#f0f0f0">0.5x</div>
<div class="t" style="left:305.5px;top:569.8px;font-size:9px;font-weight:700;letter-spacing:-0.3px;color:#222">1x</div>
<div class="t" style="left:331.5px;top:569.8px;font-size:9px;font-weight:700;letter-spacing:-0.3px;color:#f0f0f0">2x</div>
<svg style="left:0;top:0" width="400" height="700" viewBox="29 35 400 700"><path d="M291 130 V694" stroke="#e4e4e4" stroke-width="1.3"/><path d="M284.6 121.3 Q284.6 119.8 286.1 119.8 H295.9 Q297.4 119.8 297.4 121.3 V131.2 L291 136.8 L284.6 131.2 Z" fill="#fff"/></svg>
</div></div>
<div class="tablet"><div class="hl"></div><div class="tscreen">
<div class="cell" style="left:0.00px;top:44px;width:50px;height:42px;background:#292929;border-left:2px solid #8a8a8a"></div>
<div class="cell" style="left:52.75px;top:44px;width:50px;height:42px;background:#fff;border-radius:1.5px"></div>
<div class="cell" style="left:105.50px;top:44px;width:50px;height:42px;background:#292929"></div>
<div class="cell" style="left:158.25px;top:44px;width:50px;height:42px;background:#292929"></div>
<div class="cell" style="left:211.00px;top:44px;width:50px;height:42px;background:#292929;border-left:2px solid #8a8a8a"></div>
<div class="cell" style="left:263.75px;top:44px;width:50px;height:42px;background:#292929"></div>
<div class="cell" style="left:316.50px;top:44px;width:50px;height:42px;background:#292929"></div>
<div class="cell" style="left:369.25px;top:44px;width:50px;height:42px;background:#292929"></div>
<div class="cell" style="left:422.00px;top:44px;width:50px;height:42px;background:#292929;border-left:2px solid #8a8a8a"></div>
<div class="cell" style="left:474.75px;top:44px;width:50px;height:42px;background:#292929"></div>
<div class="cell" style="left:527.50px;top:44px;width:50px;height:42px;background:#292929"></div>
<div class="cell" style="left:580.25px;top:44px;width:50px;height:42px;background:#292929"></div>
<div class="cell" style="left:633.00px;top:44px;width:50px;height:42px;background:#292929;border-left:2px solid #8a8a8a"></div>
<div class="cell" style="left:685.75px;top:44px;width:50px;height:42px;background:#292929"></div>
<div class="cell" style="left:738.50px;top:44px;width:50px;height:42px;background:#292929"></div>
<div class="cell" style="left:791.25px;top:44px;width:50px;height:42px;background:#292929"></div>
<div class="cell" style="left:844.00px;top:44px;width:50px;height:42px;background:#292929;border-left:2px solid #8a8a8a"></div>
<div class="cell" style="left:896.75px;top:44px;width:50px;height:42px;background:#292929"></div>
<div class="cell" style="left:949.50px;top:44px;width:50px;height:42px;background:#292929"></div>
<div class="abs" style="left:904.0px;top:43px;width:50px;height:44px;background:linear-gradient(90deg,rgba(0,0,0,0),#000 85%)"></div>
<div class="t" style="left:5.0px;top:57.5px;font-size:15.5px;font-weight:400;-webkit-text-stroke:0.45px #a6a6a6;color:#a6a6a6">G<span style="font-size:11px;position:relative;top:-6.2px;margin-left:0.8px;letter-spacing:0.25px">add9</span></div>
<div class="t" style="left:216.5px;top:57.5px;font-size:15.5px;font-weight:400;-webkit-text-stroke:0.45px #f4f4f4;color:#f4f4f4">C<span style="font-size:11px;position:relative;top:-6.2px;margin-left:0.8px;letter-spacing:0.25px">add9</span></div>
<div class="t" style="left:440.5px;top:57.5px;font-size:15.5px;font-weight:400;-webkit-text-stroke:0.45px #f4f4f4;color:#f4f4f4">G<span style="font-size:11px;position:relative;top:-6.2px;margin-left:0.8px;letter-spacing:0.25px"></span></div>
<div class="t" style="left:637.0px;top:57.5px;font-size:15.5px;font-weight:400;-webkit-text-stroke:0.45px #f4f4f4;color:#f4f4f4">Am<span style="font-size:11px;position:relative;top:-6.2px;margin-left:0.8px;letter-spacing:0.25px">7(9</span></div>
<div class="t" style="left:848.5px;top:57.5px;font-size:15.5px;font-weight:400;-webkit-text-stroke:0.45px #8f8f8f;color:#8f8f8f">Am<span style="font-size:11px;position:relative;top:-6.2px;margin-left:0.8px;letter-spacing:0.25px">7(9</span></div>
<div class="t" style="left:458.5px;top:15.8px;font-size:12px;font-weight:700;letter-spacing:-0.2px;color:#f4f4f4">Move</div>
<svg style="left:0;top:0" width="950" height="650" viewBox="501 200 950 650" fill="none" stroke-linecap="round" stroke-linejoin="round">
<path d="M511.2 220.2 L517.6 225.2 L524 220.2" stroke="#f0f0f0" stroke-width="1.5"/>
<g transform="translate(1325.8 213.8) scale(0.655)" stroke="#e6e6e6" stroke-width="2.15"><path d="M1 4 V10 H7 M3.51 15 a9 9 0 1 0 2.13 -9.36 L1 10"/></g>
<g stroke="#e6e6e6" stroke-width="1.4"><path d="M1360 220.4 H1363.6 C1367.6 220.4 1367.4 216.8 1373.4 216.8 M1360 223.6 H1363.6 C1367.6 223.6 1367.4 227.4 1373.4 227.4 M1370.8 214.2 L1373.8 216.8 L1370.8 219.4 M1370.8 224.8 L1373.8 227.4 L1370.8 230"/></g>
<g stroke="#e6e6e6" stroke-width="1.5"><path d="M1400 215.6 V224 M1396.4 220.8 L1400 224.4 L1403.6 220.8 M1393.8 224.6 V227 C1393.8 227.8 1394.4 228.4 1395.2 228.4 H1404.8 C1405.6 228.4 1406.2 227.8 1406.2 227 V224.6"/></g>
<path d="M1427 217.8 H1440.6 M1427 222.3 H1440.6 M1427 226.8 H1440.6" stroke="#e6e6e6" stroke-width="1.4"/>
<path d="M1444.4 210.8 C1446.2 212.6 1447 213.4 1447 214.2 A2.6 2.6 0 0 1 1441.8 214.2 C1441.8 213.4 1442.6 212.6 1444.4 210.8Z" fill="#12c4e6" stroke="none"/>
<path d="M576.5 327.4 H724.5" stroke="#474747" stroke-width="1.2"/>
<circle cx="567.5" cy="327.4" r="8" fill="#050505" stroke="#454545" stroke-width="1.2"/>
<path d="M681 385.8 H724.5" stroke="#474747" stroke-width="1.2"/>
<path d="M561 385.8 H681" stroke="#12c2b4" stroke-width="1.6"/>
<circle cx="681" cy="385.8" r="8" fill="#050505" stroke="#4a4a4a" stroke-width="1.2"/>
<circle cx="681" cy="385.8" r="1.4" fill="#1fe6b0" stroke="none"/>
<path d="M681 444.2 H724.5" stroke="#474747" stroke-width="1.2"/>
<path d="M561 444.2 H681" stroke="#12c2b4" stroke-width="1.6"/>
<circle cx="681" cy="444.2" r="8" fill="#050505" stroke="#4a4a4a" stroke-width="1.2"/>
<circle cx="681" cy="444.2" r="1.4" fill="#1fe6b0" stroke="none"/>
<path d="M681 502.6 H724.5" stroke="#474747" stroke-width="1.2"/>
<path d="M561 502.6 H681" stroke="#12c2b4" stroke-width="1.6"/>
<circle cx="681" cy="502.6" r="8" fill="#050505" stroke="#4a4a4a" stroke-width="1.2"/>
<circle cx="681" cy="502.6" r="1.4" fill="#1fe6b0" stroke="none"/>
<path d="M681 561.0 H724.5" stroke="#474747" stroke-width="1.2"/>
<path d="M561 561.0 H681" stroke="#12c2b4" stroke-width="1.6"/>
<circle cx="681" cy="561.0" r="8" fill="#050505" stroke="#4a4a4a" stroke-width="1.2"/>
<circle cx="681" cy="561.0" r="1.4" fill="#1fe6b0" stroke="none"/>
<path d="M681 619.4 H724.5" stroke="#474747" stroke-width="1.2"/>
<path d="M561 619.4 H681" stroke="#12c2b4" stroke-width="1.6"/>
<circle cx="681" cy="619.4" r="8" fill="#050505" stroke="#4a4a4a" stroke-width="1.2"/>
<circle cx="681" cy="619.4" r="1.4" fill="#1fe6b0" stroke="none"/>
<g stroke="#575757" stroke-width="1.3"><rect x="526.6" y="320.0" width="5" height="9.6" rx="2.5"/><path d="M523.8 327.4 C523.8 333.8 534.4 333.8 534.4 327.4 M529.1 332.4 V335.4 M523.2 320.4 L535 335.0"/></g>
<g stroke="#f0f0f0" stroke-width="1.3"><ellipse cx="528.4" cy="384.2" rx="7.6" ry="2.8"/><path d="M520.8 384.2 V390.4 C520.8 394.4 536 394.4 536 390.4 V384.2 M525 386.8 V392.6 M531.8 386.8 V392.6 M527.6 384.4 L537.4 379.2"/></g>
<g transform="translate(529.4 444.2) rotate(12)" stroke="#f0f0f0" stroke-width="1.3"><path d="M-2.2 -6.6 C-1.6 -8.2 3.2 -8.2 3.6 -5.4 L3.2 2.6 C3 4.6 2.2 5.6 2.2 7.6 H-2.6 C-2.6 5.6 -3.6 4.4 -3.4 2.4 Z"/><path d="M-5 -6.2 L-4.4 -6.1 M-5.4 -3.2 L-4.8 -3.1 M-5.8 -0.2 L-5.2 -0.1 M-6 2.8 L-5.4 2.9" stroke-width="1.5"/></g>
<g transform="translate(529.6 502.4) rotate(0)" stroke="#f0f0f0" stroke-width="1.3"><path d="M-4.4 -4.6 C-4.4 -7.4 4.4 -7.4 4.4 -4.6 V1.8 C4.4 3.8 2.8 4.6 2.8 8 H-2.8 C-2.8 4.6 -4.4 3.8 -4.4 1.8 Z"/><path d="M-6.6 -3.8 H-6 M-6.6 -0.2 H-6 M-6.6 3.4 H-6 M6 -3.8 H6.6 M6 -0.2 H6.6 M6 3.4 H6.6" stroke-width="1.5"/></g>
<g transform="translate(529.6 560.8) rotate(0)" stroke="#f0f0f0" stroke-width="1.3"><path d="M-4.4 -4.6 C-4.4 -7.4 4.4 -7.4 4.4 -4.6 V1.8 C4.4 3.8 2.8 4.6 2.8 8 H-2.8 C-2.8 4.6 -4.4 3.8 -4.4 1.8 Z"/><path d="M-6.6 -3.8 H-6 M-6.6 -0.2 H-6 M-6.6 3.4 H-6 M6 -3.8 H6.6 M6 -0.2 H6.6 M6 3.4 H6.6" stroke-width="1.5"/></g>
<circle cx="539.5" cy="514.0" r="5.3" fill="#7c7c7c" stroke="none"/>
<circle cx="539.5" cy="572.4" r="5.3" fill="#7c7c7c" stroke="none"/>
<g stroke="#f0f0f0" stroke-width="1.3"><path d="M526 624.8 V614.4 L534.6 612.6 V623.0"/><ellipse cx="524" cy="625.0" rx="2.2" ry="1.9"/><ellipse cx="532.6" cy="623.2" rx="2.2" ry="1.9"/></g>
</svg>
<div class="t" style="left:36.5px;top:310.5px;font-size:7.5px;font-weight:700;color:#fff">1</div>
<div class="t" style="left:36.4px;top:368.9px;font-size:7.5px;font-weight:700;color:#fff">2</div>
<svg style="left:0;top:0" width="950" height="650" viewBox="501 200 950 650">
<defs><clipPath id="tclip"><rect x="741" y="290" width="720" height="370"/></clipPath></defs><g clip-path="url(#tclip)">
<rect x="741" y="303.0" width="720" height="49.4" rx="6" fill="#585858"/>
<path d="M747 303.0 H812 V352.4 H747 Q741 352.4 741 346.4 V309.0 Q741 303.0 747 303.0 Z" fill="#4b4b4b"/>
<rect x="741" y="361.4" width="720" height="49.4" rx="6" fill="#2a99b3"/>
<path d="M747 361.4 H812 V410.8 H747 Q741 410.8 741 404.8 V367.4 Q741 361.4 747 361.4 Z" fill="#237e94"/>
<rect x="741" y="419.8" width="720" height="49.4" rx="6" fill="#4a9fb8"/>
<path d="M747 419.8 H812 V469.2 H747 Q741 469.2 741 463.2 V425.8 Q741 419.8 747 419.8 Z" fill="#3c8295"/>
<rect x="741" y="478.2" width="720" height="49.4" rx="6" fill="#69aabc"/>
<path d="M747 478.2 H812 V527.6 H747 Q741 527.6 741 521.6 V484.2 Q741 478.2 747 478.2 Z" fill="#56909e"/>
<rect x="741" y="536.6" width="720" height="49.4" rx="6" fill="#89c3c3"/>
<path d="M747 536.6 H812 V586.0 H747 Q741 586.0 741 580.0 V542.6 Q741 536.6 747 536.6 Z" fill="#6f9e9e"/>
<rect x="741" y="595.0" width="720" height="49.4" rx="6" fill="#a8ddc9"/>
<path d="M747 595.0 H812 V644.4 H747 Q741 644.4 741 638.4 V601.0 Q741 595.0 747 595.0 Z" fill="#89b3a3"/>
<path d="M741 327.4 H1460" stroke="#3c3c3c" stroke-width="0.8"/>
<path d="M784.0 327.0 L784.6 327.0 L785.2 325.1 L785.8 321.0 L786.4 322.7 L787.0 323.1 L787.6 323.7 L788.2 327.0 L788.8 327.0 L789.4 327.0 L790.0 322.0 L790.6 323.2 L791.2 322.6 L791.8 323.0 L792.4 323.3 L793.0 326.6 L793.6 327.0 L794.2 327.0 L794.8 324.9 L795.4 322.0 L796.0 322.7 L796.6 322.6 L797.2 322.7 L797.8 321.7 L798.4 325.6 L799.0 327.0 L799.6 327.0 L800.2 325.1 L800.8 321.8 L801.4 322.3 L802.0 323.5 L802.6 324.1 L803.2 327.0 L803.8 327.0 L804.4 327.0 L805.0 322.0 L805.6 321.9 L806.2 322.6 L806.8 323.7 L807.4 322.8 L808.0 326.6 L808.6 327.0 L809.2 327.0 L809.8 325.9 L810.4 323.3 L811.0 322.9 L811.6 323.2 L812.2 323.3 L812.8 327.0 L813.4 327.0 L814.0 324.4 L814.6 320.0 L815.2 320.3 L815.8 321.1 L816.4 322.5 L817.0 323.0 L817.6 322.9 L818.2 327.0 L818.8 327.0 L819.4 323.5 L820.0 323.5 L820.6 322.3 L821.2 323.2 L821.8 323.5 L822.4 327.0 L823.0 327.0 L823.6 326.5 L824.2 322.2 L824.8 321.8 L825.4 323.6 L826.0 323.4 L826.6 325.0 L827.2 327.0 L827.8 327.0 L828.4 327.0 L829.0 323.9 L829.6 323.5 L830.2 322.0 L830.8 323.9 L831.4 325.1 L832.0 327.0 L832.6 327.0 L833.2 327.0 L833.8 321.6 L834.4 321.4 L835.0 321.2 L835.6 322.8 L836.2 327.0 L836.8 327.0 L837.4 327.0 L838.0 323.2 L838.6 323.2 L839.2 323.4 L839.8 322.4 L840.4 323.0 L841.0 327.0 L841.6 327.0 L842.2 327.0 L842.8 327.0 L843.4 322.8 L844.0 322.0 L844.6 322.9 L845.2 322.0 L845.8 322.2 L846.4 322.5 L847.0 322.8 L847.6 322.6 L848.2 320.7 L848.8 322.8 L849.4 321.4 L850.0 322.4 L850.6 322.4 L851.2 320.9 L851.8 322.2 L852.4 322.5 L853.0 321.8 L853.6 321.2 L854.2 321.6 L854.8 320.8 L855.4 321.9 L856.0 321.6 L856.6 321.1 L857.2 321.8 L857.8 321.1 L858.4 321.7 L859.0 322.6 L859.6 322.6 L860.2 320.9 L860.8 321.0 L861.4 320.5 L862.0 321.2 L862.6 321.5 L863.2 322.5 L863.8 320.8 L864.4 322.6 L865.0 321.8 L865.6 322.6 L866.2 322.0 L866.8 322.1 L867.4 321.8 L868.0 321.1 L868.6 321.6 L869.2 322.3 L869.8 321.0 L870.4 321.1 L871.0 320.8 L871.6 322.8 L872.2 321.4 L872.8 320.7 L873.4 322.3 L874.0 322.4 L874.6 320.9 L875.2 322.0 L875.8 321.9 L876.4 320.9 L877.0 322.0 L877.6 322.4 L878.2 322.4 L878.8 322.0 L879.4 321.2 L880.0 322.0 L880.6 321.0 L881.2 322.8 L881.8 322.3 L882.4 321.3 L883.0 321.7 L883.6 321.7 L884.2 320.6 L884.8 322.2 L885.4 322.5 L886.0 322.8 L886.6 321.7 L887.2 323.7 L887.8 327.0 L888.4 327.0 L889.0 327.0 L889.6 327.0 L890.2 327.0 L890.8 327.0 L891.4 327.0 L892.0 327.0 L892.6 327.0 L893.2 327.0 L893.8 327.0 L894.4 327.0 L895.0 327.0 L895.6 327.0 L896.2 327.0 L896.8 327.0 L897.4 327.0 L898.0 327.0 L898.6 326.4 L899.2 322.1 L899.8 321.1 L900.4 321.8 L901.0 322.1 L901.6 321.3 L902.2 322.6 L902.8 322.4 L903.4 321.7 L904.0 322.0 L904.6 322.8 L905.2 322.4 L905.8 327.0 L906.4 327.0 L907.0 327.0 L907.6 327.0 L908.2 327.0 L908.8 327.0 L909.4 327.0 L910.0 327.0 L910.6 327.0 L911.2 327.0 L911.8 327.0 L912.4 327.0 L913.0 327.0 L913.6 327.0 L914.2 327.0 L914.8 327.0 L915.4 327.0 L916.0 327.0 L916.6 327.0 L917.2 322.6 L917.8 323.4 L918.4 323.8 L919.0 322.6 L919.6 323.4 L920.2 325.1 L920.8 327.0 L921.4 327.0 L922.0 327.0 L922.6 324.2 L923.2 320.7 L923.8 321.9 L924.4 322.6 L925.0 323.0 L925.6 321.5 L926.2 326.6 L926.8 327.0 L927.4 327.0 L928.0 322.0 L928.6 321.4 L929.2 321.5 L929.8 320.3 L930.4 321.2 L931.0 321.0 L931.6 323.1 L932.2 321.9 L932.8 327.0 L933.4 327.0 L934.0 327.0 L934.6 326.1 L935.2 320.5 L935.8 321.1 L936.4 320.9 L937.0 322.3 L937.6 322.2 L938.2 321.9 L938.8 323.0 L939.4 327.0 L940.0 327.0 L940.6 327.0 L941.2 325.7 L941.8 322.7 L942.4 322.3 L943.0 322.9 L943.6 322.9 L944.2 321.9 L944.8 327.0 L945.4 327.0 L946.0 327.0 L946.6 327.0 L947.2 320.4 L947.8 321.6 L948.4 322.3 L949.0 322.4 L949.6 322.6 L950.2 324.6 L950.8 327.0 L951.4 327.0 L952.0 327.0 L952.6 324.0 L953.2 322.6 L953.8 321.6 L954.4 322.6 L955.0 323.5 L955.6 323.7 L956.2 324.3 L956.8 327.0 L957.4 327.0 L958.0 327.0 L958.6 320.2 L959.2 321.1 L959.8 322.5 L960.4 321.3 L961.0 322.3 L961.6 321.2 L962.2 327.0 L962.8 327.0 L963.4 327.0 L964.0 323.2 L964.6 322.3 L965.2 322.1 L965.8 322.3 L966.4 323.2 L967.0 326.1 L967.6 327.0 L968.2 327.0 L968.8 327.0 L969.4 320.9 L970.0 321.6 L970.6 321.9 L971.2 321.3 L971.8 321.2 L972.4 323.0 L973.0 323.5 L973.6 323.0 L974.2 327.0 L974.8 327.0 L975.4 327.0 L976.0 327.0 L976.6 325.9 L977.2 319.7 L977.8 321.6 L978.4 320.5 L979.0 321.1 L979.6 320.0 L980.2 320.9 L980.8 318.2 L981.4 319.8 L982.0 319.5 L982.6 317.3 L983.2 317.4 L983.8 319.0 L984.4 318.2 L985.0 317.3 L985.6 319.3 L986.2 319.5 L986.8 316.5 L987.4 319.4 L988.0 317.1 L988.6 317.0 L989.2 317.6 L989.8 318.6 L990.4 316.5 L991.0 316.8 L991.6 319.8 L992.2 316.4 L992.8 317.5 L993.4 318.9 L994.0 319.4 L994.6 319.7 L995.2 316.8 L995.8 316.6 L996.4 318.7 L997.0 319.4 L997.6 319.8 L998.2 318.4 L998.8 318.9 L999.4 319.9 L1000.0 318.9 L1000.6 316.8 L1001.2 319.9 L1001.8 318.5 L1002.4 318.0 L1003.0 319.5 L1003.6 320.0 L1004.2 319.8 L1004.8 319.5 L1005.4 316.2 L1006.0 316.6 L1006.6 317.3 L1007.2 316.5 L1007.8 318.8 L1008.4 319.1 L1009.0 316.6 L1009.6 317.7 L1010.2 316.4 L1010.8 318.7 L1011.4 318.5 L1012.0 317.3 L1012.6 316.6 L1013.2 319.5 L1013.8 319.1 L1014.4 320.1 L1015.0 317.9 L1015.6 316.4 L1016.2 317.9 L1016.8 319.6 L1017.4 317.4 L1018.0 317.6 L1018.6 319.8 L1019.2 316.5 L1019.8 317.5 L1020.4 318.2 L1021.0 318.8 L1021.6 319.6 L1022.2 318.3 L1022.8 318.8 L1023.4 319.3 L1024.0 317.6 L1024.6 317.6 L1025.2 316.4 L1025.8 316.3 L1026.4 318.4 L1027.0 317.4 L1027.6 318.7 L1028.2 318.5 L1028.8 318.0 L1029.4 316.3 L1030.0 320.1 L1030.6 318.4 L1031.2 318.9 L1031.8 317.0 L1032.4 316.5 L1033.0 318.4 L1033.6 320.0 L1034.2 317.9 L1034.8 317.9 L1035.4 317.6 L1036.0 317.2 L1036.6 318.4 L1037.2 318.1 L1037.8 317.2 L1038.4 320.2 L1039.0 319.3 L1039.6 317.6 L1040.2 316.4 L1040.8 316.6 L1041.4 319.2 L1042.0 316.4 L1042.6 319.2 L1043.2 318.5 L1043.8 319.7 L1044.4 317.9 L1045.0 318.8 L1045.6 317.6 L1046.2 316.5 L1046.8 319.8 L1047.4 317.7 L1048.0 318.0 L1048.6 319.3 L1049.2 320.2 L1049.8 316.6 L1050.4 319.1 L1051.0 321.5 L1051.6 324.5 L1052.2 325.8 L1052.8 327.0 L1053.4 327.0 L1054.0 327.0 L1054.6 327.0 L1055.2 327.0 L1055.8 327.0 L1056.4 327.0 L1057.0 327.0 L1057.6 327.0 L1058.2 327.0 L1058.8 327.0 L1059.4 327.0 L1060.0 327.0 L1060.6 327.0 L1061.2 327.0 L1061.8 327.0 L1062.4 327.0 L1063.0 327.0 L1063.6 326.2 L1064.2 321.7 L1064.8 322.2 L1065.4 321.8 L1066.0 322.3 L1066.6 321.1 L1067.2 321.0 L1067.8 322.0 L1068.4 320.7 L1069.0 322.8 L1069.6 321.5 L1070.2 323.9 L1070.8 327.0 L1071.4 327.0 L1072.0 327.0 L1072.6 327.0 L1073.2 327.0 L1073.8 327.0 L1074.4 327.0 L1075.0 327.0 L1075.6 327.0 L1076.2 327.0 L1076.8 327.0 L1077.4 327.0 L1078.0 327.0 L1078.6 327.0 L1079.2 327.0 L1079.8 327.0 L1080.4 321.3 L1081.0 320.6 L1081.6 322.4 L1082.2 322.0 L1082.8 321.7 L1083.4 322.9 L1084.0 322.5 L1084.6 326.5 L1085.2 327.0 L1085.8 327.0 L1086.4 324.7 L1087.0 320.6 L1087.6 321.7 L1088.2 322.7 L1088.8 322.9 L1089.4 323.4 L1090.0 321.8 L1090.6 322.7 L1091.2 327.0 L1091.8 327.0 L1092.4 327.0 L1093.0 327.0 L1093.6 322.6 L1094.2 323.4 L1094.8 323.3 L1095.4 323.3 L1096.0 322.6 L1096.6 323.1 L1097.2 326.5 L1097.8 327.0 L1098.4 327.0 L1099.0 327.0 L1099.6 323.1 L1100.2 322.6 L1100.8 321.5 L1101.4 321.8 L1102.0 323.2 L1102.6 322.8 L1103.2 322.5 L1103.8 323.7 L1104.4 326.2 L1105.0 327.0 L1105.6 327.0 L1106.2 327.0 L1106.8 325.0 L1107.4 321.8 L1108.0 322.5 L1108.6 323.2 L1109.2 323.5 L1109.8 322.7 L1110.4 323.7 L1111.0 327.0 L1111.6 327.0 L1112.2 327.0 L1112.8 327.0 L1113.4 327.0 L1114.0 327.0 L1114.6 327.0 L1115.2 327.0 L1115.8 327.0 L1116.4 327.0 L1117.0 327.0 L1117.6 327.0 L1118.2 327.0 L1118.8 327.0 L1119.4 327.0 L1120.0 327.0 L1120.6 327.0 L1121.2 327.0 L1121.8 327.0 L1122.4 327.0 L1123.0 327.0 L1123.6 327.0 L1124.2 327.0 L1124.8 327.0 L1125.4 327.0 L1126.0 327.0 L1126.6 327.0 L1127.2 327.0 L1127.8 327.0 L1128.4 327.0 L1129.0 327.0 L1129.6 327.0 L1130.2 327.0 L1130.8 327.0 L1131.4 327.0 L1132.0 327.0 L1132.6 327.0 L1133.2 327.0 L1133.8 327.0 L1134.4 327.0 L1135.0 327.0 L1135.6 327.0 L1136.2 327.0 L1136.8 327.0 L1137.4 327.0 L1138.0 327.0 L1138.6 327.0 L1139.2 327.0 L1139.8 327.0 L1140.4 327.0 L1141.0 327.0 L1141.6 327.0 L1142.2 327.0 L1142.8 327.0 L1143.4 327.0 L1144.0 327.0 L1144.6 327.0 L1145.2 324.0 L1145.8 315.4 L1146.4 317.7 L1147.0 318.6 L1147.6 319.1 L1148.2 315.8 L1148.8 317.6 L1149.4 319.0 L1150.0 316.2 L1150.6 318.3 L1151.2 316.0 L1151.8 318.0 L1152.4 319.1 L1153.0 319.5 L1153.6 320.2 L1154.2 317.0 L1154.8 319.0 L1155.4 317.5 L1156.0 317.1 L1156.6 318.9 L1157.2 318.5 L1157.8 317.7 L1158.4 318.1 L1159.0 319.2 L1159.6 319.9 L1160.2 319.6 L1160.8 320.6 L1161.4 318.3 L1162.0 318.2 L1162.6 317.7 L1163.2 319.0 L1163.8 317.9 L1164.4 318.5 L1165.0 317.4 L1165.6 318.6 L1166.2 318.1 L1166.8 318.4 L1167.4 319.9 L1168.0 320.3 L1168.6 317.5 L1169.2 318.0 L1169.8 318.7 L1170.4 317.1 L1171.0 319.9 L1171.6 317.8 L1172.2 318.7 L1172.8 320.2 L1173.4 320.1 L1174.0 320.5 L1174.6 319.9 L1175.2 317.6 L1175.8 318.8 L1176.4 320.4 L1177.0 318.7 L1177.6 316.9 L1178.2 317.6 L1178.8 319.4 L1179.4 318.7 L1180.0 319.2 L1180.6 319.7 L1181.2 318.0 L1181.8 320.5 L1182.4 318.7 L1183.0 317.0 L1183.6 317.6 L1184.2 318.0 L1184.8 317.3 L1185.4 316.9 L1186.0 319.5 L1186.6 316.9 L1187.2 317.1 L1187.8 318.6 L1188.4 320.0 L1189.0 318.5 L1189.6 318.6 L1190.2 316.7 L1190.8 319.6 L1191.4 317.7 L1192.0 317.6 L1192.6 318.2 L1193.2 319.4 L1193.8 317.0 L1194.4 319.5 L1195.0 317.2 L1195.6 317.0 L1196.2 318.4 L1196.8 320.3 L1197.4 319.4 L1198.0 320.2 L1198.6 319.8 L1199.2 319.1 L1199.8 318.2 L1200.4 317.3 L1201.0 320.3 L1201.6 317.6 L1202.2 320.0 L1202.8 317.7 L1203.4 320.4 L1204.0 319.1 L1204.6 316.8 L1205.2 317.0 L1205.8 320.2 L1206.4 318.9 L1207.0 316.8 L1207.6 319.7 L1208.2 318.6 L1208.8 319.4 L1209.4 319.3 L1210.0 318.5 L1210.6 319.9 L1211.2 319.8 L1211.8 316.6 L1212.4 317.4 L1213.0 318.0 L1213.6 319.9 L1214.2 319.9 L1214.8 317.9 L1215.4 318.0 L1216.0 320.3 L1216.6 316.6 L1217.2 318.9 L1217.8 319.3 L1218.4 317.9 L1219.0 316.8 L1219.6 319.0 L1220.2 318.3 L1220.8 320.2 L1221.4 318.5 L1222.0 316.8 L1222.6 316.6 L1223.2 319.0 L1223.8 316.9 L1224.4 316.4 L1225.0 319.1 L1225.6 316.9 L1226.2 319.2 L1226.8 316.5 L1227.4 316.7 L1228.0 316.5 L1228.6 318.7 L1229.2 317.6 L1229.8 317.5 L1230.4 318.0 L1231.0 320.1 L1231.6 317.6 L1232.2 317.1 L1232.8 317.7 L1233.4 316.7 L1234.0 316.4 L1234.6 317.7 L1235.2 318.9 L1235.8 318.2 L1236.4 319.5 L1237.0 319.4 L1237.6 316.3 L1238.2 318.5 L1238.8 318.4 L1239.4 316.7 L1240.0 317.1 L1240.6 320.1 L1241.2 318.6 L1241.8 318.1 L1242.4 319.3 L1243.0 317.2 L1243.6 317.7 L1244.2 316.8 L1244.8 319.7 L1245.4 319.5 L1246.0 319.0 L1246.6 318.1 L1247.2 319.2 L1247.8 318.1 L1248.4 318.8 L1249.0 320.0 L1249.6 316.9 L1250.2 318.0 L1250.8 316.6 L1251.4 318.1 L1252.0 316.7 L1252.6 317.7 L1253.2 318.2 L1253.8 316.4 L1254.4 318.7 L1255.0 316.2 L1255.6 317.8 L1256.2 316.3 L1256.8 319.8 L1257.4 318.0 L1258.0 318.9 L1258.6 316.8 L1259.2 316.4 L1259.8 316.6 L1260.4 318.6 L1261.0 319.8 L1261.6 316.2 L1262.2 319.3 L1262.8 316.8 L1263.4 317.7 L1264.0 317.1 L1264.6 317.2 L1265.2 319.2 L1265.8 318.5 L1266.4 318.5 L1267.0 317.2 L1267.6 317.3 L1268.2 316.0 L1268.8 317.9 L1269.4 318.7 L1270.0 319.6 L1270.6 318.3 L1271.2 317.6 L1271.8 317.3 L1272.4 320.0 L1273.0 319.3 L1273.6 317.5 L1274.2 316.8 L1274.8 316.2 L1275.4 319.5 L1276.0 317.1 L1276.6 318.2 L1277.2 317.6 L1277.8 317.2 L1278.4 318.4 L1279.0 317.5 L1279.6 316.1 L1280.2 320.0 L1280.8 317.8 L1281.4 320.5 L1282.0 327.0 L1282.6 327.0 L1283.2 327.0 L1283.8 327.0 L1284.4 327.0 L1285.0 327.0 L1285.6 327.0 L1286.2 327.0 L1286.8 327.0 L1287.4 327.0 L1288.0 327.0 L1288.6 327.0 L1289.2 327.0 L1289.8 327.0 L1290.4 327.0 L1291.0 327.0 L1291.6 320.7 L1292.2 320.8 L1292.8 320.9 L1293.4 321.0 L1294.0 320.2 L1294.6 320.7 L1295.2 319.0 L1295.8 321.9 L1296.4 320.1 L1297.0 320.6 L1297.6 318.9 L1298.2 318.9 L1298.8 319.7 L1299.4 319.7 L1300.0 320.8 L1300.6 319.8 L1301.2 321.2 L1301.8 319.4 L1302.4 320.1 L1303.0 321.2 L1303.6 321.3 L1304.2 320.7 L1304.8 320.8 L1305.4 319.9 L1306.0 320.5 L1306.6 321.8 L1307.2 320.9 L1307.8 320.5 L1308.4 318.8 L1309.0 319.0 L1309.6 320.0 L1310.2 318.9 L1310.8 321.4 L1311.4 321.2 L1312.0 321.4 L1312.6 321.1 L1313.2 321.0 L1313.8 320.2 L1314.4 319.1 L1315.0 320.8 L1315.6 320.9 L1316.2 320.4 L1316.8 318.9 L1317.4 320.3 L1318.0 318.8 L1318.6 320.9 L1319.2 320.1 L1319.8 319.9 L1320.4 319.6 L1321.0 319.2 L1321.6 321.5 L1322.2 321.2 L1322.8 321.5 L1323.4 319.4 L1324.0 320.3 L1324.6 320.3 L1325.2 321.7 L1325.8 319.3 L1326.4 318.8 L1327.0 321.8 L1327.6 318.7 L1328.2 320.3 L1328.8 321.4 L1329.4 321.7 L1330.0 319.6 L1330.6 319.3 L1331.2 320.5 L1331.8 319.1 L1332.4 321.8 L1333.0 319.1 L1333.6 321.3 L1334.2 321.2 L1334.8 320.7 L1335.4 320.8 L1336.0 319.0 L1336.6 320.2 L1337.2 320.4 L1337.8 319.2 L1338.4 320.4 L1339.0 320.8 L1339.6 320.7 L1340.2 319.9 L1340.8 318.9 L1341.4 318.8 L1342.0 321.7 L1342.6 320.6 L1343.2 319.6 L1343.8 320.2 L1344.4 319.4 L1345.0 318.8 L1345.6 321.6 L1346.2 319.5 L1346.8 321.0 L1347.4 319.7 L1348.0 321.1 L1348.6 321.3 L1349.2 319.0 L1349.8 319.7 L1350.4 319.7 L1351.0 320.4 L1351.6 320.9 L1352.2 321.5 L1352.8 318.7 L1353.4 319.2 L1354.0 319.3 L1354.6 321.5 L1355.2 321.7 L1355.8 320.2 L1356.4 321.4 L1357.0 319.7 L1357.6 320.7 L1358.2 319.2 L1358.8 321.2 L1359.4 320.1 L1360.0 320.4 L1360.6 321.0 L1361.2 320.6 L1361.8 321.1 L1362.4 320.7 L1363.0 320.3 L1363.6 320.4 L1364.2 319.6 L1364.8 318.9 L1365.4 320.1 L1366.0 321.0 L1366.6 320.0 L1367.2 321.2 L1367.8 319.0 L1368.4 321.6 L1369.0 320.8 L1369.6 318.7 L1370.2 319.8 L1370.8 320.6 L1371.4 321.5 L1372.0 321.1 L1372.6 318.9 L1373.2 321.4 L1373.8 319.4 L1374.4 321.1 L1375.0 319.2 L1375.6 321.3 L1376.2 321.2 L1376.8 321.0 L1377.4 318.5 L1378.0 321.6 L1378.6 320.1 L1379.2 318.7 L1379.8 319.4 L1380.4 321.6 L1381.0 319.5 L1381.6 320.6 L1382.2 320.9 L1382.8 321.2 L1383.4 321.2 L1384.0 319.8 L1384.6 319.1 L1385.2 318.7 L1385.8 319.5 L1386.4 320.2 L1387.0 318.6 L1387.6 321.0 L1388.2 318.6 L1388.8 318.4 L1389.4 319.8 L1390.0 319.1 L1390.6 319.6 L1391.2 319.3 L1391.8 319.4 L1392.4 319.3 L1393.0 319.4 L1393.6 320.0 L1394.2 321.0 L1394.8 320.5 L1395.4 320.5 L1396.0 319.3 L1396.6 321.1 L1397.2 319.3 L1397.8 320.0 L1398.4 318.5 L1399.0 320.2 L1399.6 319.1 L1400.2 321.1 L1400.8 321.1 L1401.4 318.7 L1402.0 318.8 L1402.6 320.7 L1403.2 320.1 L1403.8 319.0 L1404.4 321.3 L1405.0 319.3 L1405.6 319.2 L1406.2 318.4 L1406.8 318.2 L1407.4 319.0 L1408.0 321.1 L1408.6 318.8 L1409.2 321.0 L1409.8 320.6 L1410.4 318.8 L1411.0 319.9 L1411.6 320.1 L1412.2 318.6 L1412.8 318.7 L1413.4 320.5 L1414.0 318.7 L1414.6 318.2 L1415.2 319.2 L1415.8 320.8 L1416.4 319.7 L1417.0 319.6 L1417.6 320.5 L1418.2 319.0 L1418.8 321.1 L1419.4 320.9 L1420.0 318.3 L1420.6 320.3 L1421.2 321.0 L1421.8 318.9 L1422.4 318.8 L1423.0 320.0 L1423.6 319.8 L1424.2 321.4 L1424.8 321.4 L1425.4 318.4 L1426.0 318.3 L1426.6 319.0 L1427.2 319.1 L1427.8 320.1 L1428.4 320.4 L1429.0 319.0 L1429.6 318.8 L1430.2 321.2 L1430.8 321.0 L1431.4 321.2 L1432.0 319.1 L1432.6 319.8 L1433.2 321.2 L1433.8 319.7 L1434.4 318.3 L1435.0 318.8 L1435.6 318.9 L1436.2 319.3 L1436.8 320.7 L1437.4 319.6 L1438.0 319.9 L1438.6 318.2 L1439.2 321.3 L1439.8 321.3 L1440.4 321.3 L1441.0 321.1 L1441.6 320.3 L1442.2 319.2 L1442.8 318.8 L1443.4 318.7 L1444.0 321.1 L1444.6 320.0 L1445.2 319.4 L1445.8 320.2 L1446.4 320.4 L1447.0 320.8 L1447.6 320.2 L1448.2 321.0 L1448.8 318.0 L1449.4 318.9 L1450.0 318.1 L1450.6 321.1 L1451.2 321.0 L1451.8 319.1 L1452.4 318.0 L1453.0 320.0 L1453.6 320.3 L1454.2 320.0 L1454.8 321.3 L1455.4 320.6 L1456.0 320.8 L1456.6 320.8 L1457.2 318.0 L1457.8 319.1 L1458.4 318.5 L1459.0 319.9 L1459.6 319.5 L1459.6 335.3 L1459.0 334.9 L1458.4 336.3 L1457.8 335.7 L1457.2 336.8 L1456.6 334.0 L1456.0 334.0 L1455.4 334.2 L1454.8 333.5 L1454.2 334.8 L1453.6 334.5 L1453.0 334.8 L1452.4 336.8 L1451.8 335.7 L1451.2 333.8 L1450.6 333.7 L1450.0 336.7 L1449.4 335.9 L1448.8 336.8 L1448.2 333.8 L1447.6 334.6 L1447.0 334.0 L1446.4 334.4 L1445.8 334.6 L1445.2 335.4 L1444.6 334.8 L1444.0 333.7 L1443.4 336.1 L1442.8 336.0 L1442.2 335.6 L1441.6 334.5 L1441.0 333.7 L1440.4 333.5 L1439.8 333.5 L1439.2 333.5 L1438.6 336.6 L1438.0 334.9 L1437.4 335.2 L1436.8 334.1 L1436.2 335.5 L1435.6 335.9 L1435.0 336.0 L1434.4 336.5 L1433.8 335.1 L1433.2 333.6 L1432.6 335.0 L1432.0 335.7 L1431.4 333.6 L1430.8 333.8 L1430.2 333.6 L1429.6 336.0 L1429.0 335.8 L1428.4 334.4 L1427.8 334.7 L1427.2 335.7 L1426.6 335.8 L1426.0 336.5 L1425.4 336.4 L1424.8 333.4 L1424.2 333.4 L1423.6 335.0 L1423.0 334.8 L1422.4 336.0 L1421.8 335.9 L1421.2 333.8 L1420.6 334.5 L1420.0 336.5 L1419.4 333.9 L1418.8 333.7 L1418.2 335.8 L1417.6 334.3 L1417.0 335.2 L1416.4 335.1 L1415.8 334.0 L1415.2 335.6 L1414.6 336.6 L1414.0 336.1 L1413.4 334.3 L1412.8 336.1 L1412.2 336.2 L1411.6 334.7 L1411.0 334.9 L1410.4 336.0 L1409.8 334.2 L1409.2 333.8 L1408.6 336.0 L1408.0 333.7 L1407.4 335.8 L1406.8 336.6 L1406.2 336.4 L1405.6 335.6 L1405.0 335.5 L1404.4 333.5 L1403.8 335.8 L1403.2 334.7 L1402.6 334.1 L1402.0 336.0 L1401.4 336.1 L1400.8 333.7 L1400.2 333.7 L1399.6 335.7 L1399.0 334.6 L1398.4 336.3 L1397.8 334.8 L1397.2 335.5 L1396.6 333.7 L1396.0 335.5 L1395.4 334.3 L1394.8 334.3 L1394.2 333.8 L1393.6 334.8 L1393.0 335.4 L1392.4 335.5 L1391.8 335.4 L1391.2 335.5 L1390.6 335.2 L1390.0 335.7 L1389.4 335.0 L1388.8 336.4 L1388.2 336.2 L1387.6 333.8 L1387.0 336.2 L1386.4 334.6 L1385.8 335.3 L1385.2 336.1 L1384.6 335.7 L1384.0 335.0 L1383.4 333.6 L1382.8 333.6 L1382.2 333.9 L1381.6 334.2 L1381.0 335.3 L1380.4 333.2 L1379.8 335.4 L1379.2 336.1 L1378.6 334.7 L1378.0 333.2 L1377.4 336.3 L1376.8 333.8 L1376.2 333.6 L1375.6 333.5 L1375.0 335.6 L1374.4 333.7 L1373.8 335.4 L1373.2 333.4 L1372.6 335.9 L1372.0 333.7 L1371.4 333.3 L1370.8 334.2 L1370.2 335.0 L1369.6 336.1 L1369.0 334.0 L1368.4 333.2 L1367.8 335.8 L1367.2 333.6 L1366.6 334.8 L1366.0 333.8 L1365.4 334.7 L1364.8 335.9 L1364.2 335.2 L1363.6 334.4 L1363.0 334.5 L1362.4 334.1 L1361.8 333.7 L1361.2 334.2 L1360.6 333.8 L1360.0 334.4 L1359.4 334.7 L1358.8 333.6 L1358.2 335.6 L1357.6 334.1 L1357.0 335.1 L1356.4 333.4 L1355.8 334.6 L1355.2 333.1 L1354.6 333.3 L1354.0 335.5 L1353.4 335.6 L1352.8 336.1 L1352.2 333.3 L1351.6 333.9 L1351.0 334.4 L1350.4 335.1 L1349.8 335.1 L1349.2 335.8 L1348.6 333.5 L1348.0 333.7 L1347.4 335.1 L1346.8 333.8 L1346.2 335.3 L1345.6 333.2 L1345.0 336.0 L1344.4 335.4 L1343.8 334.6 L1343.2 335.2 L1342.6 334.2 L1342.0 333.1 L1341.4 336.0 L1340.8 335.9 L1340.2 334.9 L1339.6 334.1 L1339.0 334.0 L1338.4 334.4 L1337.8 335.6 L1337.2 334.4 L1336.6 334.6 L1336.0 335.8 L1335.4 334.0 L1334.8 334.1 L1334.2 333.6 L1333.6 333.5 L1333.0 335.7 L1332.4 333.0 L1331.8 335.7 L1331.2 334.3 L1330.6 335.5 L1330.0 335.2 L1329.4 333.1 L1328.8 333.4 L1328.2 334.5 L1327.6 336.1 L1327.0 333.0 L1326.4 336.0 L1325.8 335.5 L1325.2 333.1 L1324.6 334.5 L1324.0 334.5 L1323.4 335.4 L1322.8 333.3 L1322.2 333.6 L1321.6 333.3 L1321.0 335.6 L1320.4 335.2 L1319.8 334.9 L1319.2 334.7 L1318.6 333.9 L1318.0 336.0 L1317.4 334.5 L1316.8 335.9 L1316.2 334.4 L1315.6 333.9 L1315.0 334.0 L1314.4 335.7 L1313.8 334.6 L1313.2 333.8 L1312.6 333.7 L1312.0 333.4 L1311.4 333.6 L1310.8 333.4 L1310.2 335.9 L1309.6 334.8 L1309.0 335.8 L1308.4 336.0 L1307.8 334.3 L1307.2 333.9 L1306.6 333.0 L1306.0 334.3 L1305.4 334.9 L1304.8 334.0 L1304.2 334.1 L1303.6 333.5 L1303.0 333.6 L1302.4 334.7 L1301.8 335.4 L1301.2 333.6 L1300.6 335.0 L1300.0 334.0 L1299.4 335.1 L1298.8 335.1 L1298.2 335.9 L1297.6 335.9 L1297.0 334.2 L1296.4 334.7 L1295.8 332.9 L1295.2 335.8 L1294.6 334.1 L1294.0 334.6 L1293.4 333.8 L1292.8 333.9 L1292.2 334.0 L1291.6 334.1 L1291.0 327.8 L1290.4 327.8 L1289.8 327.8 L1289.2 327.8 L1288.6 327.8 L1288.0 327.8 L1287.4 327.8 L1286.8 327.8 L1286.2 327.8 L1285.6 327.8 L1285.0 327.8 L1284.4 327.8 L1283.8 327.8 L1283.2 327.8 L1282.6 327.8 L1282.0 327.8 L1281.4 334.3 L1280.8 337.0 L1280.2 334.8 L1279.6 338.7 L1279.0 337.3 L1278.4 336.4 L1277.8 337.6 L1277.2 337.2 L1276.6 336.6 L1276.0 337.7 L1275.4 335.3 L1274.8 338.6 L1274.2 338.0 L1273.6 337.3 L1273.0 335.5 L1272.4 334.8 L1271.8 337.5 L1271.2 337.2 L1270.6 336.5 L1270.0 335.2 L1269.4 336.1 L1268.8 336.9 L1268.2 338.8 L1267.6 337.5 L1267.0 337.6 L1266.4 336.3 L1265.8 336.3 L1265.2 335.6 L1264.6 337.6 L1264.0 337.7 L1263.4 337.1 L1262.8 338.0 L1262.2 335.5 L1261.6 338.6 L1261.0 335.0 L1260.4 336.2 L1259.8 338.2 L1259.2 338.4 L1258.6 338.0 L1258.0 335.9 L1257.4 336.8 L1256.8 335.0 L1256.2 338.5 L1255.6 337.0 L1255.0 338.6 L1254.4 336.1 L1253.8 338.4 L1253.2 336.6 L1252.6 337.1 L1252.0 338.1 L1251.4 336.7 L1250.8 338.2 L1250.2 336.8 L1249.6 337.9 L1249.0 334.8 L1248.4 336.0 L1247.8 336.7 L1247.2 335.6 L1246.6 336.7 L1246.0 335.8 L1245.4 335.3 L1244.8 335.1 L1244.2 338.0 L1243.6 337.1 L1243.0 337.6 L1242.4 335.5 L1241.8 336.7 L1241.2 336.2 L1240.6 334.7 L1240.0 337.7 L1239.4 338.1 L1238.8 336.4 L1238.2 336.3 L1237.6 338.5 L1237.0 335.4 L1236.4 335.3 L1235.8 336.6 L1235.2 335.9 L1234.6 337.1 L1234.0 338.4 L1233.4 338.1 L1232.8 337.1 L1232.2 337.7 L1231.6 337.2 L1231.0 334.7 L1230.4 336.8 L1229.8 337.3 L1229.2 337.2 L1228.6 336.1 L1228.0 338.3 L1227.4 338.1 L1226.8 338.3 L1226.2 335.6 L1225.6 337.9 L1225.0 335.7 L1224.4 338.4 L1223.8 337.9 L1223.2 335.8 L1222.6 338.2 L1222.0 338.0 L1221.4 336.3 L1220.8 334.6 L1220.2 336.5 L1219.6 335.8 L1219.0 338.0 L1218.4 336.9 L1217.8 335.5 L1217.2 335.9 L1216.6 338.2 L1216.0 334.5 L1215.4 336.8 L1214.8 336.9 L1214.2 334.9 L1213.6 334.9 L1213.0 336.8 L1212.4 337.4 L1211.8 338.2 L1211.2 335.0 L1210.6 334.9 L1210.0 336.3 L1209.4 335.5 L1208.8 335.4 L1208.2 336.2 L1207.6 335.1 L1207.0 338.0 L1206.4 335.9 L1205.8 334.6 L1205.2 337.8 L1204.6 338.0 L1204.0 335.7 L1203.4 334.4 L1202.8 337.1 L1202.2 334.8 L1201.6 337.2 L1201.0 334.5 L1200.4 337.5 L1199.8 336.6 L1199.2 335.7 L1198.6 335.0 L1198.0 334.6 L1197.4 335.4 L1196.8 334.5 L1196.2 336.4 L1195.6 337.8 L1195.0 337.6 L1194.4 335.3 L1193.8 337.8 L1193.2 335.4 L1192.6 336.6 L1192.0 337.2 L1191.4 337.1 L1190.8 335.2 L1190.2 338.1 L1189.6 336.2 L1189.0 336.3 L1188.4 334.8 L1187.8 336.2 L1187.2 337.7 L1186.6 337.9 L1186.0 335.3 L1185.4 337.9 L1184.8 337.5 L1184.2 336.8 L1183.6 337.2 L1183.0 337.8 L1182.4 336.1 L1181.8 334.3 L1181.2 336.8 L1180.6 335.1 L1180.0 335.6 L1179.4 336.1 L1178.8 335.4 L1178.2 337.2 L1177.6 337.9 L1177.0 336.1 L1176.4 334.4 L1175.8 336.0 L1175.2 337.2 L1174.6 334.9 L1174.0 334.3 L1173.4 334.7 L1172.8 334.6 L1172.2 336.1 L1171.6 337.0 L1171.0 334.9 L1170.4 337.7 L1169.8 336.1 L1169.2 336.8 L1168.6 337.3 L1168.0 334.5 L1167.4 334.9 L1166.8 336.4 L1166.2 336.7 L1165.6 336.2 L1165.0 337.4 L1164.4 336.3 L1163.8 336.9 L1163.2 335.8 L1162.6 337.1 L1162.0 336.6 L1161.4 336.5 L1160.8 334.2 L1160.2 335.2 L1159.6 334.9 L1159.0 335.6 L1158.4 336.7 L1157.8 337.1 L1157.2 336.3 L1156.6 335.9 L1156.0 337.7 L1155.4 337.3 L1154.8 335.8 L1154.2 337.8 L1153.6 334.6 L1153.0 335.3 L1152.4 335.7 L1151.8 336.8 L1151.2 338.8 L1150.6 336.5 L1150.0 338.6 L1149.4 335.8 L1148.8 337.2 L1148.2 339.0 L1147.6 335.7 L1147.0 336.2 L1146.4 337.1 L1145.8 339.4 L1145.2 330.8 L1144.6 327.8 L1144.0 327.8 L1143.4 327.8 L1142.8 327.8 L1142.2 327.8 L1141.6 327.8 L1141.0 327.8 L1140.4 327.8 L1139.8 327.8 L1139.2 327.8 L1138.6 327.8 L1138.0 327.8 L1137.4 327.8 L1136.8 327.8 L1136.2 327.8 L1135.6 327.8 L1135.0 327.8 L1134.4 327.8 L1133.8 327.8 L1133.2 327.8 L1132.6 327.8 L1132.0 327.8 L1131.4 327.8 L1130.8 327.8 L1130.2 327.8 L1129.6 327.8 L1129.0 327.8 L1128.4 327.8 L1127.8 327.8 L1127.2 327.8 L1126.6 327.8 L1126.0 327.8 L1125.4 327.8 L1124.8 327.8 L1124.2 327.8 L1123.6 327.8 L1123.0 327.8 L1122.4 327.8 L1121.8 327.8 L1121.2 327.8 L1120.6 327.8 L1120.0 327.8 L1119.4 327.8 L1118.8 327.8 L1118.2 327.8 L1117.6 327.8 L1117.0 327.8 L1116.4 327.8 L1115.8 327.8 L1115.2 327.8 L1114.6 327.8 L1114.0 327.8 L1113.4 327.8 L1112.8 327.8 L1112.2 327.8 L1111.6 327.8 L1111.0 327.8 L1110.4 331.1 L1109.8 332.1 L1109.2 331.3 L1108.6 331.6 L1108.0 332.3 L1107.4 333.0 L1106.8 329.8 L1106.2 327.8 L1105.6 327.8 L1105.0 327.8 L1104.4 328.6 L1103.8 331.1 L1103.2 332.3 L1102.6 332.0 L1102.0 331.6 L1101.4 333.0 L1100.8 333.3 L1100.2 332.2 L1099.6 331.7 L1099.0 327.8 L1098.4 327.8 L1097.8 327.8 L1097.2 328.3 L1096.6 331.7 L1096.0 332.2 L1095.4 331.5 L1094.8 331.5 L1094.2 331.4 L1093.6 332.2 L1093.0 327.8 L1092.4 327.8 L1091.8 327.8 L1091.2 327.8 L1090.6 332.1 L1090.0 333.0 L1089.4 331.4 L1088.8 331.9 L1088.2 332.1 L1087.6 333.1 L1087.0 334.2 L1086.4 330.1 L1085.8 327.8 L1085.2 327.8 L1084.6 328.3 L1084.0 332.3 L1083.4 331.9 L1082.8 333.1 L1082.2 332.8 L1081.6 332.4 L1081.0 334.2 L1080.4 333.5 L1079.8 327.8 L1079.2 327.8 L1078.6 327.8 L1078.0 327.8 L1077.4 327.8 L1076.8 327.8 L1076.2 327.8 L1075.6 327.8 L1075.0 327.8 L1074.4 327.8 L1073.8 327.8 L1073.2 327.8 L1072.6 327.8 L1072.0 327.8 L1071.4 327.8 L1070.8 327.8 L1070.2 330.9 L1069.6 333.3 L1069.0 332.0 L1068.4 334.1 L1067.8 332.8 L1067.2 333.8 L1066.6 333.7 L1066.0 332.5 L1065.4 333.0 L1064.8 332.6 L1064.2 333.1 L1063.6 328.6 L1063.0 327.8 L1062.4 327.8 L1061.8 327.8 L1061.2 327.8 L1060.6 327.8 L1060.0 327.8 L1059.4 327.8 L1058.8 327.8 L1058.2 327.8 L1057.6 327.8 L1057.0 327.8 L1056.4 327.8 L1055.8 327.8 L1055.2 327.8 L1054.6 327.8 L1054.0 327.8 L1053.4 327.8 L1052.8 327.8 L1052.2 329.0 L1051.6 330.3 L1051.0 333.3 L1050.4 335.7 L1049.8 338.2 L1049.2 334.6 L1048.6 335.5 L1048.0 336.8 L1047.4 337.1 L1046.8 335.0 L1046.2 338.3 L1045.6 337.2 L1045.0 336.0 L1044.4 336.9 L1043.8 335.1 L1043.2 336.3 L1042.6 335.6 L1042.0 338.4 L1041.4 335.6 L1040.8 338.2 L1040.2 338.4 L1039.6 337.2 L1039.0 335.5 L1038.4 334.6 L1037.8 337.6 L1037.2 336.7 L1036.6 336.4 L1036.0 337.6 L1035.4 337.2 L1034.8 336.9 L1034.2 336.9 L1033.6 334.8 L1033.0 336.4 L1032.4 338.3 L1031.8 337.8 L1031.2 335.9 L1030.6 336.4 L1030.0 334.7 L1029.4 338.5 L1028.8 336.8 L1028.2 336.3 L1027.6 336.1 L1027.0 337.4 L1026.4 336.4 L1025.8 338.5 L1025.2 338.4 L1024.6 337.2 L1024.0 337.2 L1023.4 335.5 L1022.8 336.0 L1022.2 336.5 L1021.6 335.2 L1021.0 336.0 L1020.4 336.6 L1019.8 337.3 L1019.2 338.3 L1018.6 335.0 L1018.0 337.2 L1017.4 337.4 L1016.8 335.2 L1016.2 336.9 L1015.6 338.4 L1015.0 336.9 L1014.4 334.7 L1013.8 335.7 L1013.2 335.3 L1012.6 338.2 L1012.0 337.5 L1011.4 336.3 L1010.8 336.1 L1010.2 338.4 L1009.6 337.1 L1009.0 338.2 L1008.4 335.7 L1007.8 336.0 L1007.2 338.3 L1006.6 337.5 L1006.0 338.2 L1005.4 338.6 L1004.8 335.3 L1004.2 335.0 L1003.6 334.8 L1003.0 335.3 L1002.4 336.8 L1001.8 336.3 L1001.2 334.9 L1000.6 338.0 L1000.0 335.9 L999.4 334.9 L998.8 335.9 L998.2 336.4 L997.6 335.0 L997.0 335.4 L996.4 336.1 L995.8 338.2 L995.2 338.0 L994.6 335.1 L994.0 335.4 L993.4 335.9 L992.8 337.3 L992.2 338.4 L991.6 335.0 L991.0 338.0 L990.4 338.3 L989.8 336.2 L989.2 337.2 L988.6 337.8 L988.0 337.7 L987.4 335.4 L986.8 338.3 L986.2 335.3 L985.6 335.5 L985.0 337.5 L984.4 336.6 L983.8 335.8 L983.2 337.4 L982.6 337.5 L982.0 335.3 L981.4 335.0 L980.8 336.6 L980.2 333.9 L979.6 334.8 L979.0 333.7 L978.4 334.3 L977.8 333.2 L977.2 335.1 L976.6 328.9 L976.0 327.8 L975.4 327.8 L974.8 327.8 L974.2 327.8 L973.6 331.8 L973.0 331.3 L972.4 331.8 L971.8 333.6 L971.2 333.5 L970.6 332.9 L970.0 333.2 L969.4 333.9 L968.8 327.8 L968.2 327.8 L967.6 327.8 L967.0 328.7 L966.4 331.6 L965.8 332.5 L965.2 332.7 L964.6 332.5 L964.0 331.6 L963.4 327.8 L962.8 327.8 L962.2 327.8 L961.6 333.6 L961.0 332.5 L960.4 333.5 L959.8 332.3 L959.2 333.7 L958.6 334.6 L958.0 327.8 L957.4 327.8 L956.8 327.8 L956.2 330.5 L955.6 331.1 L955.0 331.3 L954.4 332.2 L953.8 333.2 L953.2 332.2 L952.6 330.8 L952.0 327.8 L951.4 327.8 L950.8 327.8 L950.2 330.2 L949.6 332.2 L949.0 332.4 L948.4 332.5 L947.8 333.2 L947.2 334.4 L946.6 327.8 L946.0 327.8 L945.4 327.8 L944.8 327.8 L944.2 332.9 L943.6 331.9 L943.0 331.9 L942.4 332.5 L941.8 332.1 L941.2 329.1 L940.6 327.8 L940.0 327.8 L939.4 327.8 L938.8 331.8 L938.2 332.9 L937.6 332.6 L937.0 332.5 L936.4 333.9 L935.8 333.7 L935.2 334.3 L934.6 328.7 L934.0 327.8 L933.4 327.8 L932.8 327.8 L932.2 332.9 L931.6 331.7 L931.0 333.8 L930.4 333.6 L929.8 334.5 L929.2 333.3 L928.6 333.4 L928.0 332.8 L927.4 327.8 L926.8 327.8 L926.2 328.2 L925.6 333.3 L925.0 331.8 L924.4 332.2 L923.8 332.9 L923.2 334.1 L922.6 330.6 L922.0 327.8 L921.4 327.8 L920.8 327.8 L920.2 329.7 L919.6 331.4 L919.0 332.2 L918.4 331.0 L917.8 331.4 L917.2 332.2 L916.6 327.8 L916.0 327.8 L915.4 327.8 L914.8 327.8 L914.2 327.8 L913.6 327.8 L913.0 327.8 L912.4 327.8 L911.8 327.8 L911.2 327.8 L910.6 327.8 L910.0 327.8 L909.4 327.8 L908.8 327.8 L908.2 327.8 L907.6 327.8 L907.0 327.8 L906.4 327.8 L905.8 327.8 L905.2 332.4 L904.6 332.0 L904.0 332.8 L903.4 333.1 L902.8 332.4 L902.2 332.2 L901.6 333.5 L901.0 332.7 L900.4 333.0 L899.8 333.7 L899.2 332.7 L898.6 328.4 L898.0 327.8 L897.4 327.8 L896.8 327.8 L896.2 327.8 L895.6 327.8 L895.0 327.8 L894.4 327.8 L893.8 327.8 L893.2 327.8 L892.6 327.8 L892.0 327.8 L891.4 327.8 L890.8 327.8 L890.2 327.8 L889.6 327.8 L889.0 327.8 L888.4 327.8 L887.8 327.8 L887.2 331.1 L886.6 333.1 L886.0 332.0 L885.4 332.3 L884.8 332.6 L884.2 334.2 L883.6 333.1 L883.0 333.1 L882.4 333.5 L881.8 332.5 L881.2 332.0 L880.6 333.8 L880.0 332.8 L879.4 333.6 L878.8 332.8 L878.2 332.4 L877.6 332.4 L877.0 332.8 L876.4 333.9 L875.8 332.9 L875.2 332.8 L874.6 333.9 L874.0 332.4 L873.4 332.5 L872.8 334.1 L872.2 333.4 L871.6 332.0 L871.0 334.0 L870.4 333.7 L869.8 333.8 L869.2 332.5 L868.6 333.2 L868.0 333.7 L867.4 333.0 L866.8 332.7 L866.2 332.8 L865.6 332.2 L865.0 333.0 L864.4 332.2 L863.8 334.0 L863.2 332.3 L862.6 333.3 L862.0 333.6 L861.4 334.3 L860.8 333.8 L860.2 333.9 L859.6 332.2 L859.0 332.2 L858.4 333.1 L857.8 333.7 L857.2 333.0 L856.6 333.7 L856.0 333.2 L855.4 332.9 L854.8 334.0 L854.2 333.2 L853.6 333.6 L853.0 333.0 L852.4 332.3 L851.8 332.6 L851.2 333.9 L850.6 332.4 L850.0 332.4 L849.4 333.4 L848.8 332.0 L848.2 334.1 L847.6 332.2 L847.0 332.0 L846.4 332.3 L845.8 332.6 L845.2 332.8 L844.6 331.9 L844.0 332.8 L843.4 332.0 L842.8 327.8 L842.2 327.8 L841.6 327.8 L841.0 327.8 L840.4 331.8 L839.8 332.4 L839.2 331.4 L838.6 331.6 L838.0 331.6 L837.4 327.8 L836.8 327.8 L836.2 327.8 L835.6 332.0 L835.0 333.6 L834.4 333.4 L833.8 333.2 L833.2 327.8 L832.6 327.8 L832.0 327.8 L831.4 329.7 L830.8 330.9 L830.2 332.8 L829.6 331.3 L829.0 330.9 L828.4 327.8 L827.8 327.8 L827.2 327.8 L826.6 329.8 L826.0 331.4 L825.4 331.2 L824.8 333.0 L824.2 332.6 L823.6 328.3 L823.0 327.8 L822.4 327.8 L821.8 331.3 L821.2 331.6 L820.6 332.5 L820.0 331.3 L819.4 331.3 L818.8 327.8 L818.2 327.8 L817.6 331.9 L817.0 331.8 L816.4 332.3 L815.8 333.7 L815.2 334.5 L814.6 334.8 L814.0 330.4 L813.4 327.8 L812.8 327.8 L812.2 331.5 L811.6 331.6 L811.0 331.9 L810.4 331.5 L809.8 328.9 L809.2 327.8 L808.6 327.8 L808.0 328.2 L807.4 332.0 L806.8 331.1 L806.2 332.2 L805.6 332.9 L805.0 332.8 L804.4 327.8 L803.8 327.8 L803.2 327.8 L802.6 330.7 L802.0 331.3 L801.4 332.5 L800.8 333.0 L800.2 329.7 L799.6 327.8 L799.0 327.8 L798.4 329.2 L797.8 333.1 L797.2 332.1 L796.6 332.2 L796.0 332.1 L795.4 332.8 L794.8 329.9 L794.2 327.8 L793.6 327.8 L793.0 328.2 L792.4 331.5 L791.8 331.8 L791.2 332.2 L790.6 331.6 L790.0 332.8 L789.4 327.8 L788.8 327.8 L788.2 327.8 L787.6 331.1 L787.0 331.7 L786.4 332.1 L785.8 333.8 L785.2 329.7 L784.6 327.8 L784.0 327.8Z" fill="#3a3a3a"/>
<path d="M741 385.8 H860" stroke="#1f6f84" stroke-width="0.8"/>
<path d="M850.0 385.4 L850.6 385.4 L851.2 382.9 L851.8 371.7 L852.4 375.3 L853.0 373.3 L853.6 378.9 L854.2 375.2 L854.8 372.1 L855.4 375.0 L856.0 371.2 L856.6 371.7 L857.2 376.4 L857.8 379.7 L858.4 372.8 L859.0 378.6 L859.6 379.6 L860.2 373.0 L860.8 372.0 L861.4 372.0 L862.0 370.9 L862.6 377.8 L863.2 378.9 L863.8 378.5 L864.4 370.6 L865.0 378.6 L865.6 378.1 L866.2 379.4 L866.8 379.2 L867.4 379.2 L868.0 376.3 L868.6 378.1 L869.2 376.7 L869.8 370.9 L870.4 378.0 L871.0 371.9 L871.6 372.6 L872.2 374.2 L872.8 374.1 L873.4 372.3 L874.0 374.0 L874.6 377.4 L875.2 376.4 L875.8 377.2 L876.4 375.7 L877.0 370.1 L877.6 375.4 L878.2 378.8 L878.8 374.9 L879.4 371.7 L880.0 375.2 L880.6 372.7 L881.2 378.6 L881.8 378.8 L882.4 373.1 L883.0 378.9 L883.6 376.5 L884.2 375.7 L884.8 377.5 L885.4 379.0 L886.0 379.3 L886.6 370.2 L887.2 372.7 L887.8 370.1 L888.4 374.6 L889.0 370.1 L889.6 371.0 L890.2 373.3 L890.8 374.2 L891.4 374.4 L892.0 377.1 L892.6 375.6 L893.2 372.2 L893.8 377.4 L894.4 370.9 L895.0 374.3 L895.6 373.3 L896.2 371.2 L896.8 372.9 L897.4 377.9 L898.0 376.8 L898.6 379.2 L899.2 378.9 L899.8 369.8 L900.4 373.3 L901.0 369.6 L901.6 371.5 L902.2 376.1 L902.8 369.6 L903.4 370.1 L904.0 374.7 L904.6 378.4 L905.2 376.0 L905.8 377.6 L906.4 375.6 L907.0 378.4 L907.6 372.1 L908.2 369.5 L908.8 377.1 L909.4 371.5 L910.0 373.4 L910.6 374.4 L911.2 370.2 L911.8 375.5 L912.4 371.1 L913.0 378.9 L913.6 369.6 L914.2 377.4 L914.8 379.2 L915.4 370.5 L916.0 372.1 L916.6 372.5 L917.2 371.6 L917.8 375.5 L918.4 378.1 L919.0 376.0 L919.6 369.8 L920.2 369.5 L920.8 376.9 L921.4 374.8 L922.0 374.7 L922.6 370.2 L923.2 379.1 L923.8 371.0 L924.4 376.7 L925.0 373.8 L925.6 377.9 L926.2 378.4 L926.8 370.5 L927.4 374.2 L928.0 369.6 L928.6 370.6 L929.2 371.8 L929.8 378.5 L930.4 373.4 L931.0 369.4 L931.6 374.2 L932.2 378.5 L932.8 377.4 L933.4 369.4 L934.0 369.5 L934.6 376.8 L935.2 376.0 L935.8 372.1 L936.4 374.2 L937.0 377.4 L937.6 369.5 L938.2 373.1 L938.8 375.6 L939.4 379.0 L940.0 374.1 L940.6 371.8 L941.2 377.4 L941.8 378.3 L942.4 372.0 L943.0 370.1 L943.6 375.5 L944.2 374.5 L944.8 372.9 L945.4 374.1 L946.0 377.9 L946.6 376.5 L947.2 377.2 L947.8 377.2 L948.4 378.3 L949.0 375.3 L949.6 377.0 L950.2 370.8 L950.8 376.0 L951.4 369.7 L952.0 371.2 L952.6 376.5 L953.2 377.7 L953.8 373.5 L954.4 374.5 L955.0 373.9 L955.6 378.0 L956.2 373.9 L956.8 371.7 L957.4 374.8 L958.0 376.7 L958.6 370.1 L959.2 376.3 L959.8 369.3 L960.4 372.4 L961.0 379.2 L961.6 374.8 L962.2 377.7 L962.8 371.4 L963.4 375.0 L964.0 378.4 L964.6 369.8 L965.2 371.3 L965.8 373.2 L966.4 373.6 L967.0 378.5 L967.6 369.5 L968.2 376.2 L968.8 374.0 L969.4 374.3 L970.0 374.5 L970.6 379.0 L971.2 370.4 L971.8 374.3 L972.4 375.3 L973.0 370.7 L973.6 370.7 L974.2 372.1 L974.8 370.2 L975.4 375.5 L976.0 377.7 L976.6 374.9 L977.2 371.7 L977.8 369.2 L978.4 369.4 L979.0 370.2 L979.6 370.1 L980.2 369.0 L980.8 370.2 L981.4 377.2 L982.0 370.5 L982.6 373.9 L983.2 376.5 L983.8 369.7 L984.4 366.8 L985.0 373.8 L985.6 368.9 L986.2 369.5 L986.8 368.8 L987.4 366.4 L988.0 368.6 L988.6 376.4 L989.2 369.6 L989.8 373.0 L990.4 372.1 L991.0 368.8 L991.6 375.2 L992.2 369.4 L992.8 365.5 L993.4 376.4 L994.0 366.6 L994.6 368.4 L995.2 372.2 L995.8 367.6 L996.4 376.3 L997.0 375.3 L997.6 364.7 L998.2 369.4 L998.8 375.2 L999.4 375.7 L1000.0 371.7 L1000.6 370.4 L1001.2 364.8 L1001.8 375.0 L1002.4 369.2 L1003.0 371.7 L1003.6 370.2 L1004.2 365.3 L1004.8 375.8 L1005.4 366.7 L1006.0 368.0 L1006.6 373.9 L1007.2 375.8 L1007.8 367.8 L1008.4 366.4 L1009.0 372.9 L1009.6 375.5 L1010.2 370.2 L1010.8 368.7 L1011.4 372.7 L1012.0 372.1 L1012.6 376.0 L1013.2 375.5 L1013.8 374.4 L1014.4 367.6 L1015.0 375.7 L1015.6 374.8 L1016.2 371.3 L1016.8 374.6 L1017.4 374.2 L1018.0 367.8 L1018.6 374.3 L1019.2 370.1 L1019.8 376.2 L1020.4 370.6 L1021.0 368.3 L1021.6 371.5 L1022.2 374.8 L1022.8 376.9 L1023.4 373.7 L1024.0 372.0 L1024.6 376.0 L1025.2 371.8 L1025.8 370.7 L1026.4 376.4 L1027.0 368.7 L1027.6 365.0 L1028.2 368.2 L1028.8 371.5 L1029.4 366.5 L1030.0 365.1 L1030.6 365.0 L1031.2 365.0 L1031.8 367.4 L1032.4 365.1 L1033.0 367.4 L1033.6 373.0 L1034.2 375.5 L1034.8 370.9 L1035.4 368.2 L1036.0 373.7 L1036.6 372.6 L1037.2 376.1 L1037.8 376.7 L1038.4 373.9 L1039.0 366.3 L1039.6 376.4 L1040.2 375.3 L1040.8 372.0 L1041.4 364.7 L1042.0 374.4 L1042.6 376.6 L1043.2 376.6 L1043.8 372.7 L1044.4 377.1 L1045.0 368.5 L1045.6 376.4 L1046.2 374.7 L1046.8 376.2 L1047.4 373.7 L1048.0 376.0 L1048.6 375.0 L1049.2 374.7 L1049.8 374.1 L1050.4 368.9 L1051.0 372.4 L1051.6 374.5 L1052.2 377.0 L1052.8 365.9 L1053.4 366.1 L1054.0 364.9 L1054.6 367.9 L1055.2 371.5 L1055.8 372.9 L1056.4 374.6 L1057.0 371.4 L1057.6 371.7 L1058.2 365.0 L1058.8 374.5 L1059.4 368.1 L1060.0 367.6 L1060.6 368.6 L1061.2 369.2 L1061.8 376.6 L1062.4 375.2 L1063.0 370.4 L1063.6 369.3 L1064.2 364.6 L1064.8 366.9 L1065.4 374.3 L1066.0 375.2 L1066.6 367.0 L1067.2 377.0 L1067.8 365.2 L1068.4 376.0 L1069.0 369.3 L1069.6 366.1 L1070.2 376.0 L1070.8 375.8 L1071.4 368.8 L1072.0 367.7 L1072.6 377.0 L1073.2 371.0 L1073.8 366.7 L1074.4 366.9 L1075.0 371.9 L1075.6 377.0 L1076.2 369.0 L1076.8 370.1 L1077.4 371.6 L1078.0 369.3 L1078.6 369.4 L1079.2 370.8 L1079.8 369.9 L1080.4 369.7 L1081.0 367.0 L1081.6 366.7 L1082.2 376.8 L1082.8 366.8 L1083.4 373.9 L1084.0 371.5 L1084.6 374.2 L1085.2 373.0 L1085.8 371.8 L1086.4 371.1 L1087.0 375.6 L1087.6 373.2 L1088.2 371.0 L1088.8 372.0 L1089.4 370.1 L1090.0 376.1 L1090.6 369.7 L1091.2 365.1 L1091.8 367.3 L1092.4 369.7 L1093.0 366.4 L1093.6 372.0 L1094.2 374.7 L1094.8 368.9 L1095.4 373.8 L1096.0 373.4 L1096.6 366.9 L1097.2 370.3 L1097.8 374.7 L1098.4 374.1 L1099.0 367.3 L1099.6 368.4 L1100.2 365.1 L1100.8 367.3 L1101.4 373.2 L1102.0 367.7 L1102.6 365.4 L1103.2 365.4 L1103.8 365.0 L1104.4 375.1 L1105.0 373.7 L1105.6 374.7 L1106.2 366.3 L1106.8 367.9 L1107.4 369.7 L1108.0 374.4 L1108.6 371.6 L1109.2 368.0 L1109.8 376.6 L1110.4 365.3 L1111.0 367.8 L1111.6 365.3 L1112.2 364.6 L1112.8 370.3 L1113.4 373.1 L1114.0 372.1 L1114.6 370.7 L1115.2 369.1 L1115.8 373.5 L1116.4 373.3 L1117.0 370.4 L1117.6 367.4 L1118.2 376.9 L1118.8 365.3 L1119.4 368.6 L1120.0 370.5 L1120.6 369.8 L1121.2 366.3 L1121.8 371.5 L1122.4 372.8 L1123.0 375.9 L1123.6 372.7 L1124.2 376.3 L1124.8 373.8 L1125.4 368.7 L1126.0 372.4 L1126.6 365.2 L1127.2 371.0 L1127.8 366.2 L1128.4 374.4 L1129.0 364.4 L1129.6 366.0 L1130.2 365.3 L1130.8 366.6 L1131.4 370.4 L1132.0 375.1 L1132.6 366.2 L1133.2 364.7 L1133.8 371.2 L1134.4 367.2 L1135.0 369.0 L1135.6 367.1 L1136.2 365.3 L1136.8 368.7 L1137.4 375.3 L1138.0 371.5 L1138.6 370.1 L1139.2 374.2 L1139.8 368.0 L1140.4 372.9 L1141.0 376.0 L1141.6 372.5 L1142.2 367.7 L1142.8 368.9 L1143.4 373.0 L1144.0 371.8 L1144.6 368.3 L1145.2 366.2 L1145.8 375.8 L1146.4 374.6 L1147.0 371.8 L1147.6 374.4 L1148.2 374.9 L1148.8 373.3 L1149.4 375.4 L1150.0 376.7 L1150.6 371.7 L1151.2 371.6 L1151.8 369.3 L1152.4 365.2 L1153.0 365.1 L1153.6 371.1 L1154.2 373.6 L1154.8 369.3 L1155.4 371.5 L1156.0 369.6 L1156.6 365.3 L1157.2 367.5 L1157.8 364.6 L1158.4 366.8 L1159.0 367.4 L1159.6 364.5 L1160.2 367.8 L1160.8 367.6 L1161.4 368.6 L1162.0 364.8 L1162.6 370.4 L1163.2 372.2 L1163.8 369.4 L1164.4 374.8 L1165.0 367.2 L1165.6 370.6 L1166.2 372.7 L1166.8 368.6 L1167.4 368.2 L1168.0 369.4 L1168.6 373.3 L1169.2 370.6 L1169.8 377.1 L1170.4 372.1 L1171.0 377.0 L1171.6 369.7 L1172.2 376.3 L1172.8 374.3 L1173.4 367.3 L1174.0 368.3 L1174.6 374.5 L1175.2 376.9 L1175.8 365.1 L1176.4 371.8 L1177.0 376.6 L1177.6 370.6 L1178.2 366.9 L1178.8 369.8 L1179.4 373.6 L1180.0 370.8 L1180.6 372.7 L1181.2 365.3 L1181.8 367.2 L1182.4 374.7 L1183.0 369.6 L1183.6 367.1 L1184.2 374.8 L1184.8 375.5 L1185.4 370.1 L1186.0 369.2 L1186.6 372.0 L1187.2 370.5 L1187.8 369.8 L1188.4 368.5 L1189.0 376.1 L1189.6 373.1 L1190.2 375.5 L1190.8 374.6 L1191.4 365.8 L1192.0 369.5 L1192.6 366.8 L1193.2 372.3 L1193.8 374.7 L1194.4 376.3 L1195.0 367.6 L1195.6 366.5 L1196.2 368.2 L1196.8 374.6 L1197.4 367.8 L1198.0 366.2 L1198.6 373.5 L1199.2 371.2 L1199.8 365.0 L1200.4 374.9 L1201.0 369.2 L1201.6 367.6 L1202.2 370.2 L1202.8 365.8 L1203.4 371.1 L1204.0 375.3 L1204.6 372.8 L1205.2 373.4 L1205.8 371.0 L1206.4 372.6 L1207.0 366.9 L1207.6 369.5 L1208.2 367.3 L1208.8 369.8 L1209.4 376.5 L1210.0 375.1 L1210.6 375.8 L1211.2 368.3 L1211.8 372.8 L1212.4 366.9 L1213.0 366.0 L1213.6 366.5 L1214.2 369.0 L1214.8 374.3 L1215.4 376.3 L1216.0 371.1 L1216.6 367.2 L1217.2 366.1 L1217.8 376.3 L1218.4 376.7 L1219.0 372.0 L1219.6 369.6 L1220.2 373.2 L1220.8 368.5 L1221.4 367.7 L1222.0 366.7 L1222.6 365.5 L1223.2 375.1 L1223.8 365.3 L1224.4 376.4 L1225.0 369.5 L1225.6 367.4 L1226.2 375.8 L1226.8 373.9 L1227.4 368.6 L1228.0 371.8 L1228.6 375.9 L1229.2 376.6 L1229.8 369.5 L1230.4 375.5 L1231.0 375.3 L1231.6 373.9 L1232.2 370.4 L1232.8 376.2 L1233.4 373.0 L1234.0 373.6 L1234.6 374.0 L1235.2 367.7 L1235.8 371.3 L1236.4 367.2 L1237.0 365.3 L1237.6 365.1 L1238.2 374.2 L1238.8 368.5 L1239.4 375.5 L1240.0 376.8 L1240.6 369.1 L1241.2 370.4 L1241.8 375.1 L1242.4 373.4 L1243.0 368.0 L1243.6 369.4 L1244.2 375.8 L1244.8 366.2 L1245.4 377.0 L1246.0 372.0 L1246.6 369.3 L1247.2 374.1 L1247.8 375.2 L1248.4 370.5 L1249.0 365.5 L1249.6 375.1 L1250.2 375.8 L1250.8 373.2 L1251.4 364.7 L1252.0 376.6 L1252.6 369.5 L1253.2 368.8 L1253.8 364.9 L1254.4 375.5 L1255.0 367.5 L1255.6 371.6 L1256.2 365.6 L1256.8 365.1 L1257.4 369.2 L1258.0 369.0 L1258.6 375.7 L1259.2 373.1 L1259.8 365.4 L1260.4 368.8 L1261.0 373.8 L1261.6 374.7 L1262.2 366.6 L1262.8 366.9 L1263.4 368.8 L1264.0 366.6 L1264.6 374.5 L1265.2 370.8 L1265.8 365.8 L1266.4 367.7 L1267.0 372.1 L1267.6 372.1 L1268.2 365.9 L1268.8 368.2 L1269.4 374.7 L1270.0 372.7 L1270.6 373.9 L1271.2 372.5 L1271.8 371.2 L1272.4 376.8 L1273.0 377.0 L1273.6 367.5 L1274.2 371.4 L1274.8 376.9 L1275.4 371.1 L1276.0 368.7 L1276.6 372.6 L1277.2 374.4 L1277.8 365.7 L1278.4 366.5 L1279.0 370.5 L1279.6 368.3 L1280.2 368.3 L1280.8 369.6 L1281.4 372.7 L1282.0 372.1 L1282.6 374.0 L1283.2 372.4 L1283.8 376.0 L1284.4 366.6 L1285.0 373.1 L1285.6 376.8 L1286.2 374.4 L1286.8 366.4 L1287.4 369.3 L1288.0 374.4 L1288.6 376.4 L1289.2 371.8 L1289.8 369.7 L1290.4 369.1 L1291.0 375.4 L1291.6 366.9 L1292.2 366.0 L1292.8 369.9 L1293.4 364.3 L1294.0 373.9 L1294.6 373.8 L1295.2 374.3 L1295.8 365.3 L1296.4 365.7 L1297.0 374.2 L1297.6 367.4 L1298.2 372.5 L1298.8 366.4 L1299.4 373.1 L1300.0 368.8 L1300.6 368.9 L1301.2 369.1 L1301.8 365.7 L1302.4 369.0 L1303.0 373.9 L1303.6 372.2 L1304.2 373.4 L1304.8 370.2 L1305.4 371.4 L1306.0 370.5 L1306.6 372.8 L1307.2 366.4 L1307.8 371.1 L1308.4 370.8 L1309.0 371.1 L1309.6 370.4 L1310.2 372.4 L1310.8 370.8 L1311.4 376.8 L1312.0 370.4 L1312.6 374.2 L1313.2 371.9 L1313.8 375.6 L1314.4 376.0 L1315.0 372.3 L1315.6 368.9 L1316.2 377.0 L1316.8 365.0 L1317.4 374.4 L1318.0 372.9 L1318.6 373.7 L1319.2 364.6 L1319.8 365.8 L1320.4 364.4 L1321.0 367.3 L1321.6 366.9 L1322.2 375.7 L1322.8 373.4 L1323.4 365.3 L1324.0 371.3 L1324.6 375.0 L1325.2 371.9 L1325.8 370.9 L1326.4 368.2 L1327.0 368.2 L1327.6 370.6 L1328.2 374.0 L1328.8 369.4 L1329.4 368.3 L1330.0 372.2 L1330.6 364.0 L1331.2 371.1 L1331.8 375.9 L1332.4 372.1 L1333.0 370.2 L1333.6 372.6 L1334.2 366.9 L1334.8 367.8 L1335.4 371.4 L1336.0 367.6 L1336.6 366.7 L1337.2 374.1 L1337.8 364.1 L1338.4 377.0 L1339.0 364.6 L1339.6 367.2 L1340.2 366.5 L1340.8 377.1 L1341.4 366.2 L1342.0 374.2 L1342.6 373.7 L1343.2 365.6 L1343.8 370.8 L1344.4 364.5 L1345.0 368.1 L1345.6 365.6 L1346.2 369.1 L1346.8 364.6 L1347.4 368.8 L1348.0 372.2 L1348.6 373.3 L1349.2 369.9 L1349.8 373.9 L1350.4 364.2 L1351.0 365.0 L1351.6 365.4 L1352.2 367.1 L1352.8 366.0 L1353.4 369.0 L1354.0 364.2 L1354.6 375.6 L1355.2 374.4 L1355.8 371.0 L1356.4 375.5 L1357.0 376.5 L1357.6 368.5 L1358.2 367.2 L1358.8 365.0 L1359.4 367.8 L1360.0 365.3 L1360.6 373.4 L1361.2 373.9 L1361.8 371.0 L1362.4 377.1 L1363.0 376.1 L1363.6 372.9 L1364.2 369.5 L1364.8 365.6 L1365.4 371.2 L1366.0 369.4 L1366.6 374.7 L1367.2 365.2 L1367.8 367.8 L1368.4 371.9 L1369.0 377.0 L1369.6 367.6 L1370.2 372.2 L1370.8 367.2 L1371.4 374.4 L1372.0 365.9 L1372.6 369.3 L1373.2 370.5 L1373.8 371.8 L1374.4 373.4 L1375.0 372.7 L1375.6 372.9 L1376.2 370.0 L1376.8 376.0 L1377.4 375.5 L1378.0 366.8 L1378.6 375.3 L1379.2 377.2 L1379.8 365.3 L1380.4 374.1 L1381.0 367.4 L1381.6 373.2 L1382.2 364.8 L1382.8 375.6 L1383.4 373.9 L1384.0 368.7 L1384.6 375.0 L1385.2 372.7 L1385.8 371.9 L1386.4 366.7 L1387.0 368.8 L1387.6 371.1 L1388.2 373.9 L1388.8 376.3 L1389.4 364.6 L1390.0 372.7 L1390.6 375.7 L1391.2 371.8 L1391.8 375.6 L1392.4 372.1 L1393.0 374.5 L1393.6 369.2 L1394.2 370.7 L1394.8 364.9 L1395.4 365.1 L1396.0 373.3 L1396.6 369.6 L1397.2 375.5 L1397.8 364.6 L1398.4 366.3 L1399.0 371.7 L1399.6 367.8 L1400.2 374.5 L1400.8 377.1 L1401.4 377.0 L1402.0 373.2 L1402.6 370.8 L1403.2 374.0 L1403.8 374.3 L1404.4 368.2 L1405.0 374.3 L1405.6 373.5 L1406.2 372.9 L1406.8 376.9 L1407.4 365.3 L1408.0 369.0 L1408.6 376.6 L1409.2 376.8 L1409.8 374.3 L1410.4 375.5 L1411.0 374.0 L1411.6 367.7 L1412.2 366.3 L1412.8 367.5 L1413.4 377.0 L1414.0 368.1 L1414.6 368.5 L1415.2 369.7 L1415.8 374.9 L1416.4 369.6 L1417.0 375.7 L1417.6 370.7 L1418.2 366.9 L1418.8 367.8 L1419.4 366.6 L1420.0 365.6 L1420.6 373.5 L1421.2 374.4 L1421.8 372.8 L1422.4 368.3 L1423.0 374.0 L1423.6 375.8 L1424.2 369.3 L1424.8 367.3 L1425.4 377.0 L1426.0 370.1 L1426.6 372.9 L1427.2 372.6 L1427.8 368.6 L1428.4 366.9 L1429.0 372.8 L1429.6 374.9 L1430.2 374.5 L1430.8 365.1 L1431.4 375.3 L1432.0 370.4 L1432.6 372.6 L1433.2 367.4 L1433.8 372.2 L1434.4 367.5 L1435.0 364.8 L1435.6 375.8 L1436.2 370.1 L1436.8 365.8 L1437.4 366.9 L1438.0 366.4 L1438.6 368.8 L1439.2 370.6 L1439.8 373.8 L1440.4 370.4 L1441.0 376.1 L1441.6 370.0 L1442.2 371.4 L1442.8 365.8 L1443.4 365.5 L1444.0 371.8 L1444.6 372.6 L1445.2 366.4 L1445.8 372.1 L1446.4 370.0 L1447.0 375.0 L1447.6 366.9 L1448.2 369.3 L1448.8 371.6 L1449.4 377.4 L1450.0 372.4 L1450.6 366.6 L1451.2 367.2 L1451.8 365.0 L1452.4 373.9 L1453.0 371.4 L1453.6 374.8 L1454.2 368.0 L1454.8 372.3 L1455.4 376.8 L1456.0 371.2 L1456.6 375.0 L1457.2 367.0 L1457.8 367.9 L1458.4 376.8 L1459.0 370.6 L1459.6 370.5 L1459.6 401.1 L1459.0 401.0 L1458.4 394.8 L1457.8 403.7 L1457.2 404.6 L1456.6 396.6 L1456.0 400.4 L1455.4 394.8 L1454.8 399.3 L1454.2 403.6 L1453.6 396.8 L1453.0 400.2 L1452.4 397.7 L1451.8 406.6 L1451.2 404.4 L1450.6 405.0 L1450.0 399.2 L1449.4 394.2 L1448.8 400.0 L1448.2 402.3 L1447.6 404.7 L1447.0 396.6 L1446.4 401.6 L1445.8 399.5 L1445.2 405.2 L1444.6 399.0 L1444.0 399.8 L1443.4 406.1 L1442.8 405.8 L1442.2 400.2 L1441.6 401.6 L1441.0 395.5 L1440.4 401.2 L1439.8 397.8 L1439.2 401.0 L1438.6 402.8 L1438.0 405.2 L1437.4 404.7 L1436.8 405.8 L1436.2 401.5 L1435.6 395.8 L1435.0 406.8 L1434.4 404.1 L1433.8 399.4 L1433.2 404.2 L1432.6 399.0 L1432.0 401.2 L1431.4 396.3 L1430.8 406.5 L1430.2 397.1 L1429.6 396.7 L1429.0 398.8 L1428.4 404.7 L1427.8 403.0 L1427.2 399.0 L1426.6 398.7 L1426.0 401.5 L1425.4 394.6 L1424.8 404.3 L1424.2 402.3 L1423.6 395.8 L1423.0 397.6 L1422.4 403.3 L1421.8 398.8 L1421.2 397.2 L1420.6 398.1 L1420.0 406.0 L1419.4 405.0 L1418.8 403.8 L1418.2 404.7 L1417.6 400.9 L1417.0 395.9 L1416.4 402.0 L1415.8 396.7 L1415.2 401.9 L1414.6 403.1 L1414.0 403.5 L1413.4 394.6 L1412.8 404.1 L1412.2 405.3 L1411.6 403.9 L1411.0 397.6 L1410.4 396.1 L1409.8 397.3 L1409.2 394.8 L1408.6 395.0 L1408.0 402.6 L1407.4 406.3 L1406.8 394.7 L1406.2 398.7 L1405.6 398.1 L1405.0 397.3 L1404.4 403.4 L1403.8 397.3 L1403.2 397.6 L1402.6 400.8 L1402.0 398.4 L1401.4 394.6 L1400.8 394.5 L1400.2 397.1 L1399.6 403.8 L1399.0 399.9 L1398.4 405.3 L1397.8 407.0 L1397.2 396.1 L1396.6 402.0 L1396.0 398.3 L1395.4 406.5 L1394.8 406.7 L1394.2 400.9 L1393.6 402.4 L1393.0 397.1 L1392.4 399.5 L1391.8 396.0 L1391.2 399.8 L1390.6 395.9 L1390.0 398.9 L1389.4 407.0 L1388.8 395.3 L1388.2 397.7 L1387.6 400.5 L1387.0 402.8 L1386.4 404.9 L1385.8 399.7 L1385.2 398.9 L1384.6 396.6 L1384.0 402.9 L1383.4 397.7 L1382.8 396.0 L1382.2 406.8 L1381.6 398.4 L1381.0 404.2 L1380.4 397.5 L1379.8 406.3 L1379.2 394.4 L1378.6 396.3 L1378.0 404.8 L1377.4 396.1 L1376.8 395.6 L1376.2 401.6 L1375.6 398.7 L1375.0 398.9 L1374.4 398.2 L1373.8 399.8 L1373.2 401.1 L1372.6 402.3 L1372.0 405.7 L1371.4 397.2 L1370.8 404.4 L1370.2 399.4 L1369.6 404.0 L1369.0 394.6 L1368.4 399.7 L1367.8 403.8 L1367.2 406.4 L1366.6 396.9 L1366.0 402.2 L1365.4 400.4 L1364.8 406.0 L1364.2 402.1 L1363.6 398.7 L1363.0 395.5 L1362.4 394.5 L1361.8 400.6 L1361.2 397.7 L1360.6 398.2 L1360.0 406.3 L1359.4 403.8 L1358.8 406.6 L1358.2 404.4 L1357.6 403.1 L1357.0 395.1 L1356.4 396.1 L1355.8 400.6 L1355.2 397.2 L1354.6 396.0 L1354.0 407.4 L1353.4 402.6 L1352.8 405.6 L1352.2 404.5 L1351.6 406.2 L1351.0 406.6 L1350.4 407.4 L1349.8 397.7 L1349.2 401.7 L1348.6 398.3 L1348.0 399.4 L1347.4 402.8 L1346.8 407.0 L1346.2 402.5 L1345.6 406.0 L1345.0 403.5 L1344.4 407.1 L1343.8 400.8 L1343.2 406.0 L1342.6 397.9 L1342.0 397.4 L1341.4 405.4 L1340.8 394.5 L1340.2 405.1 L1339.6 404.4 L1339.0 407.0 L1338.4 394.6 L1337.8 407.5 L1337.2 397.5 L1336.6 404.9 L1336.0 404.0 L1335.4 400.2 L1334.8 403.8 L1334.2 404.7 L1333.6 399.0 L1333.0 401.4 L1332.4 399.5 L1331.8 395.7 L1331.2 400.5 L1330.6 407.6 L1330.0 399.4 L1329.4 403.3 L1328.8 402.2 L1328.2 397.6 L1327.6 401.0 L1327.0 403.4 L1326.4 403.4 L1325.8 400.7 L1325.2 399.7 L1324.6 396.6 L1324.0 400.3 L1323.4 406.3 L1322.8 398.2 L1322.2 395.9 L1321.6 404.7 L1321.0 404.3 L1320.4 407.2 L1319.8 405.8 L1319.2 407.0 L1318.6 397.9 L1318.0 398.7 L1317.4 397.2 L1316.8 406.6 L1316.2 394.6 L1315.6 402.7 L1315.0 399.3 L1314.4 395.6 L1313.8 396.0 L1313.2 399.7 L1312.6 397.4 L1312.0 401.2 L1311.4 394.8 L1310.8 400.8 L1310.2 399.2 L1309.6 401.2 L1309.0 400.5 L1308.4 400.8 L1307.8 400.5 L1307.2 405.2 L1306.6 398.8 L1306.0 401.1 L1305.4 400.2 L1304.8 401.4 L1304.2 398.2 L1303.6 399.4 L1303.0 397.7 L1302.4 402.6 L1301.8 405.9 L1301.2 402.5 L1300.6 402.7 L1300.0 402.8 L1299.4 398.5 L1298.8 405.2 L1298.2 399.1 L1297.6 404.2 L1297.0 397.4 L1296.4 405.9 L1295.8 406.3 L1295.2 397.3 L1294.6 397.8 L1294.0 397.7 L1293.4 407.3 L1292.8 401.7 L1292.2 405.6 L1291.6 404.7 L1291.0 396.2 L1290.4 402.5 L1289.8 401.9 L1289.2 399.8 L1288.6 395.2 L1288.0 397.2 L1287.4 402.3 L1286.8 405.2 L1286.2 397.2 L1285.6 394.8 L1285.0 398.5 L1284.4 405.0 L1283.8 395.6 L1283.2 399.2 L1282.6 397.6 L1282.0 399.5 L1281.4 398.9 L1280.8 402.0 L1280.2 403.3 L1279.6 403.3 L1279.0 401.1 L1278.4 405.1 L1277.8 405.9 L1277.2 397.2 L1276.6 399.0 L1276.0 402.9 L1275.4 400.5 L1274.8 394.7 L1274.2 400.2 L1273.6 404.1 L1273.0 394.6 L1272.4 394.8 L1271.8 400.4 L1271.2 399.1 L1270.6 397.7 L1270.0 398.9 L1269.4 396.9 L1268.8 403.4 L1268.2 405.7 L1267.6 399.5 L1267.0 399.5 L1266.4 403.9 L1265.8 405.8 L1265.2 400.8 L1264.6 397.1 L1264.0 405.0 L1263.4 402.8 L1262.8 404.7 L1262.2 405.0 L1261.6 396.9 L1261.0 397.8 L1260.4 402.8 L1259.8 406.2 L1259.2 398.5 L1258.6 395.9 L1258.0 402.6 L1257.4 402.4 L1256.8 406.5 L1256.2 406.0 L1255.6 400.0 L1255.0 404.1 L1254.4 396.1 L1253.8 406.7 L1253.2 402.8 L1252.6 402.1 L1252.0 395.0 L1251.4 406.9 L1250.8 398.4 L1250.2 395.8 L1249.6 396.5 L1249.0 406.1 L1248.4 401.1 L1247.8 396.4 L1247.2 397.5 L1246.6 402.3 L1246.0 399.6 L1245.4 394.6 L1244.8 405.4 L1244.2 395.8 L1243.6 402.2 L1243.0 403.6 L1242.4 398.2 L1241.8 396.5 L1241.2 401.2 L1240.6 402.5 L1240.0 394.8 L1239.4 396.1 L1238.8 403.1 L1238.2 397.4 L1237.6 406.5 L1237.0 406.3 L1236.4 404.4 L1235.8 400.3 L1235.2 403.9 L1234.6 397.6 L1234.0 398.0 L1233.4 398.6 L1232.8 395.4 L1232.2 401.2 L1231.6 397.7 L1231.0 396.3 L1230.4 396.1 L1229.8 402.1 L1229.2 395.0 L1228.6 395.7 L1228.0 399.8 L1227.4 403.0 L1226.8 397.7 L1226.2 395.8 L1225.6 404.2 L1225.0 402.1 L1224.4 395.2 L1223.8 406.3 L1223.2 396.5 L1222.6 406.1 L1222.0 404.9 L1221.4 403.9 L1220.8 403.1 L1220.2 398.4 L1219.6 402.0 L1219.0 399.6 L1218.4 394.9 L1217.8 395.3 L1217.2 405.5 L1216.6 404.4 L1216.0 400.5 L1215.4 395.3 L1214.8 397.3 L1214.2 402.6 L1213.6 405.1 L1213.0 405.6 L1212.4 404.7 L1211.8 398.8 L1211.2 403.3 L1210.6 395.8 L1210.0 396.5 L1209.4 395.1 L1208.8 401.8 L1208.2 404.3 L1207.6 402.1 L1207.0 404.7 L1206.4 399.0 L1205.8 400.6 L1205.2 398.2 L1204.6 398.8 L1204.0 396.3 L1203.4 400.5 L1202.8 405.8 L1202.2 401.4 L1201.6 404.0 L1201.0 402.4 L1200.4 396.7 L1199.8 406.6 L1199.2 400.4 L1198.6 398.1 L1198.0 405.4 L1197.4 403.8 L1196.8 397.0 L1196.2 403.4 L1195.6 405.1 L1195.0 404.0 L1194.4 395.3 L1193.8 396.9 L1193.2 399.3 L1192.6 404.8 L1192.0 402.1 L1191.4 405.8 L1190.8 397.0 L1190.2 396.1 L1189.6 398.5 L1189.0 395.5 L1188.4 403.1 L1187.8 401.8 L1187.2 401.1 L1186.6 399.6 L1186.0 402.4 L1185.4 401.5 L1184.8 396.1 L1184.2 396.8 L1183.6 404.5 L1183.0 402.0 L1182.4 396.9 L1181.8 404.4 L1181.2 406.3 L1180.6 398.9 L1180.0 400.8 L1179.4 398.0 L1178.8 401.8 L1178.2 404.7 L1177.6 401.0 L1177.0 395.0 L1176.4 399.8 L1175.8 406.5 L1175.2 394.7 L1174.6 397.1 L1174.0 403.3 L1173.4 404.3 L1172.8 397.3 L1172.2 395.3 L1171.6 401.9 L1171.0 394.6 L1170.4 399.5 L1169.8 394.5 L1169.2 401.0 L1168.6 398.3 L1168.0 402.2 L1167.4 403.4 L1166.8 403.0 L1166.2 398.9 L1165.6 401.0 L1165.0 404.4 L1164.4 396.8 L1163.8 402.2 L1163.2 399.4 L1162.6 401.2 L1162.0 406.8 L1161.4 403.0 L1160.8 404.0 L1160.2 403.8 L1159.6 407.1 L1159.0 404.2 L1158.4 404.8 L1157.8 407.0 L1157.2 404.1 L1156.6 406.3 L1156.0 402.0 L1155.4 400.1 L1154.8 402.3 L1154.2 398.0 L1153.6 400.5 L1153.0 406.5 L1152.4 406.4 L1151.8 402.3 L1151.2 400.0 L1150.6 399.9 L1150.0 394.9 L1149.4 396.2 L1148.8 398.3 L1148.2 396.7 L1147.6 397.2 L1147.0 399.8 L1146.4 397.0 L1145.8 395.8 L1145.2 405.4 L1144.6 403.3 L1144.0 399.8 L1143.4 398.6 L1142.8 402.7 L1142.2 403.9 L1141.6 399.1 L1141.0 395.6 L1140.4 398.7 L1139.8 403.6 L1139.2 397.4 L1138.6 401.5 L1138.0 400.1 L1137.4 396.3 L1136.8 402.9 L1136.2 406.3 L1135.6 404.5 L1135.0 402.6 L1134.4 404.4 L1133.8 400.4 L1133.2 406.9 L1132.6 405.4 L1132.0 396.5 L1131.4 401.2 L1130.8 405.0 L1130.2 406.3 L1129.6 405.6 L1129.0 407.2 L1128.4 397.2 L1127.8 405.4 L1127.2 400.6 L1126.6 406.4 L1126.0 399.2 L1125.4 402.9 L1124.8 397.8 L1124.2 395.3 L1123.6 398.9 L1123.0 395.7 L1122.4 398.8 L1121.8 400.1 L1121.2 405.3 L1120.6 401.8 L1120.0 401.1 L1119.4 403.0 L1118.8 406.3 L1118.2 394.7 L1117.6 404.2 L1117.0 401.2 L1116.4 398.3 L1115.8 398.1 L1115.2 402.5 L1114.6 400.9 L1114.0 399.5 L1113.4 398.5 L1112.8 401.3 L1112.2 407.0 L1111.6 406.3 L1111.0 403.8 L1110.4 406.3 L1109.8 395.0 L1109.2 403.6 L1108.6 400.0 L1108.0 397.2 L1107.4 401.9 L1106.8 403.7 L1106.2 405.3 L1105.6 396.9 L1105.0 397.9 L1104.4 396.5 L1103.8 406.6 L1103.2 406.2 L1102.6 406.2 L1102.0 403.9 L1101.4 398.4 L1100.8 404.3 L1100.2 406.5 L1099.6 403.2 L1099.0 404.3 L1098.4 397.5 L1097.8 396.9 L1097.2 401.3 L1096.6 404.7 L1096.0 398.2 L1095.4 397.8 L1094.8 402.7 L1094.2 396.9 L1093.6 399.6 L1093.0 405.2 L1092.4 401.9 L1091.8 404.3 L1091.2 406.5 L1090.6 401.9 L1090.0 395.5 L1089.4 401.5 L1088.8 399.6 L1088.2 400.6 L1087.6 398.4 L1087.0 396.0 L1086.4 400.5 L1085.8 399.8 L1085.2 398.6 L1084.6 397.4 L1084.0 400.1 L1083.4 397.7 L1082.8 404.8 L1082.2 394.8 L1081.6 404.9 L1081.0 404.6 L1080.4 401.9 L1079.8 401.7 L1079.2 400.8 L1078.6 402.2 L1078.0 402.3 L1077.4 400.0 L1076.8 401.5 L1076.2 402.6 L1075.6 394.6 L1075.0 399.7 L1074.4 404.7 L1073.8 404.9 L1073.2 400.6 L1072.6 394.6 L1072.0 403.9 L1071.4 402.8 L1070.8 395.8 L1070.2 395.6 L1069.6 405.5 L1069.0 402.3 L1068.4 395.6 L1067.8 406.4 L1067.2 394.6 L1066.6 404.6 L1066.0 396.4 L1065.4 397.3 L1064.8 404.7 L1064.2 407.0 L1063.6 402.3 L1063.0 401.2 L1062.4 396.4 L1061.8 395.0 L1061.2 402.4 L1060.6 403.0 L1060.0 404.0 L1059.4 403.5 L1058.8 397.1 L1058.2 406.6 L1057.6 399.9 L1057.0 400.2 L1056.4 397.0 L1055.8 398.7 L1055.2 400.1 L1054.6 403.7 L1054.0 406.7 L1053.4 405.5 L1052.8 405.7 L1052.2 394.6 L1051.6 397.1 L1051.0 399.2 L1050.4 402.7 L1049.8 397.5 L1049.2 396.9 L1048.6 396.6 L1048.0 395.6 L1047.4 397.9 L1046.8 395.4 L1046.2 396.9 L1045.6 395.2 L1045.0 403.1 L1044.4 394.5 L1043.8 398.9 L1043.2 395.0 L1042.6 395.0 L1042.0 397.2 L1041.4 406.9 L1040.8 399.6 L1040.2 396.3 L1039.6 395.2 L1039.0 405.3 L1038.4 397.7 L1037.8 394.9 L1037.2 395.5 L1036.6 399.0 L1036.0 397.9 L1035.4 403.4 L1034.8 400.7 L1034.2 396.1 L1033.6 398.6 L1033.0 404.2 L1032.4 406.5 L1031.8 404.2 L1031.2 406.6 L1030.6 406.6 L1030.0 406.5 L1029.4 405.1 L1028.8 400.1 L1028.2 403.4 L1027.6 406.6 L1027.0 402.9 L1026.4 395.2 L1025.8 400.9 L1025.2 399.8 L1024.6 395.6 L1024.0 399.6 L1023.4 397.9 L1022.8 394.7 L1022.2 396.8 L1021.6 400.1 L1021.0 403.3 L1020.4 401.0 L1019.8 395.4 L1019.2 401.5 L1018.6 397.3 L1018.0 403.8 L1017.4 397.4 L1016.8 397.0 L1016.2 400.3 L1015.6 396.8 L1015.0 395.9 L1014.4 404.0 L1013.8 397.2 L1013.2 396.1 L1012.6 395.6 L1012.0 399.5 L1011.4 398.9 L1010.8 402.9 L1010.2 401.4 L1009.6 396.1 L1009.0 398.7 L1008.4 405.2 L1007.8 403.8 L1007.2 395.8 L1006.6 397.7 L1006.0 403.6 L1005.4 404.9 L1004.8 395.8 L1004.2 406.3 L1003.6 401.4 L1003.0 399.9 L1002.4 402.4 L1001.8 396.6 L1001.2 406.8 L1000.6 401.2 L1000.0 399.9 L999.4 395.9 L998.8 396.4 L998.2 402.2 L997.6 406.9 L997.0 396.3 L996.4 395.3 L995.8 404.0 L995.2 399.4 L994.6 403.2 L994.0 405.0 L993.4 395.2 L992.8 406.1 L992.2 402.2 L991.6 396.4 L991.0 402.8 L990.4 399.5 L989.8 398.6 L989.2 402.0 L988.6 395.2 L988.0 403.0 L987.4 405.2 L986.8 402.8 L986.2 402.1 L985.6 402.7 L985.0 397.8 L984.4 404.8 L983.8 401.9 L983.2 395.1 L982.6 397.7 L982.0 401.1 L981.4 394.4 L980.8 401.4 L980.2 402.6 L979.6 401.5 L979.0 401.4 L978.4 402.2 L977.8 402.4 L977.2 399.9 L976.6 396.7 L976.0 393.9 L975.4 396.1 L974.8 401.4 L974.2 399.5 L973.6 400.9 L973.0 400.9 L972.4 396.3 L971.8 397.3 L971.2 401.2 L970.6 392.6 L970.0 397.1 L969.4 397.3 L968.8 397.6 L968.2 395.4 L967.6 402.1 L967.0 393.1 L966.4 398.0 L965.8 398.4 L965.2 400.3 L964.6 401.8 L964.0 393.2 L963.4 396.6 L962.8 400.2 L962.2 393.9 L961.6 396.8 L961.0 392.4 L960.4 399.2 L959.8 402.3 L959.2 395.3 L958.6 401.5 L958.0 394.9 L957.4 396.8 L956.8 399.9 L956.2 397.7 L955.6 393.6 L955.0 397.7 L954.4 397.1 L953.8 398.1 L953.2 393.9 L952.6 395.1 L952.0 400.4 L951.4 401.9 L950.8 395.6 L950.2 400.8 L949.6 394.6 L949.0 396.3 L948.4 393.3 L947.8 394.4 L947.2 394.4 L946.6 395.1 L946.0 393.7 L945.4 397.5 L944.8 398.7 L944.2 397.1 L943.6 396.1 L943.0 401.5 L942.4 399.6 L941.8 393.3 L941.2 394.2 L940.6 399.8 L940.0 397.5 L939.4 392.6 L938.8 396.0 L938.2 398.5 L937.6 402.1 L937.0 394.2 L936.4 397.4 L935.8 399.5 L935.2 395.6 L934.6 394.8 L934.0 402.1 L933.4 402.2 L932.8 394.2 L932.2 393.1 L931.6 397.4 L931.0 402.2 L930.4 398.2 L929.8 393.1 L929.2 399.8 L928.6 401.0 L928.0 402.0 L927.4 397.4 L926.8 401.1 L926.2 393.2 L925.6 393.7 L925.0 397.8 L924.4 394.9 L923.8 400.6 L923.2 392.5 L922.6 401.4 L922.0 396.9 L921.4 396.8 L920.8 394.7 L920.2 402.1 L919.6 401.8 L919.0 395.6 L918.4 393.5 L917.8 396.1 L917.2 400.0 L916.6 399.1 L916.0 399.5 L915.4 401.1 L914.8 392.4 L914.2 394.2 L913.6 402.0 L913.0 392.7 L912.4 400.5 L911.8 396.1 L911.2 401.4 L910.6 397.2 L910.0 398.2 L909.4 400.1 L908.8 394.5 L908.2 402.1 L907.6 399.5 L907.0 393.2 L906.4 396.0 L905.8 394.0 L905.2 395.6 L904.6 393.2 L904.0 396.9 L903.4 401.5 L902.8 402.0 L902.2 395.5 L901.6 400.1 L901.0 402.0 L900.4 398.3 L899.8 401.8 L899.2 392.7 L898.6 392.4 L898.0 394.8 L897.4 393.7 L896.8 398.7 L896.2 400.4 L895.6 398.3 L895.0 397.3 L894.4 400.7 L893.8 394.2 L893.2 399.4 L892.6 396.0 L892.0 394.5 L891.4 397.2 L890.8 397.4 L890.2 398.3 L889.6 400.6 L889.0 401.5 L888.4 397.0 L887.8 401.5 L887.2 398.9 L886.6 401.4 L886.0 392.3 L885.4 392.6 L884.8 394.1 L884.2 395.9 L883.6 395.1 L883.0 392.7 L882.4 398.5 L881.8 392.8 L881.2 393.0 L880.6 398.9 L880.0 396.4 L879.4 399.9 L878.8 396.7 L878.2 392.8 L877.6 396.2 L877.0 401.5 L876.4 395.9 L875.8 394.4 L875.2 395.2 L874.6 394.2 L874.0 397.6 L873.4 399.3 L872.8 397.5 L872.2 397.4 L871.6 399.0 L871.0 399.7 L870.4 393.6 L869.8 400.7 L869.2 394.9 L868.6 393.5 L868.0 395.3 L867.4 392.4 L866.8 392.4 L866.2 392.2 L865.6 393.5 L865.0 393.0 L864.4 401.0 L863.8 393.1 L863.2 392.7 L862.6 393.8 L862.0 400.7 L861.4 399.6 L860.8 399.6 L860.2 398.6 L859.6 392.0 L859.0 393.0 L858.4 398.8 L857.8 391.9 L857.2 395.2 L856.6 399.9 L856.0 400.4 L855.4 396.6 L854.8 399.5 L854.2 396.4 L853.6 392.7 L853.0 398.3 L852.4 396.3 L851.8 399.9 L851.2 388.7 L850.6 386.2 L850.0 386.2Z" fill="#15607a" fill-opacity="0.5"/>
<path d="M850.0 385.4 L850.6 385.4 L851.2 382.3 L851.8 376.9 L852.4 374.1 L853.0 377.3 L853.6 374.2 L854.2 378.8 L854.8 373.8 L855.4 377.3 L856.0 378.6 L856.6 377.6 L857.2 375.9 L857.8 379.5 L858.4 377.4 L859.0 379.6 L859.6 379.3 L860.2 378.7 L860.8 378.3 L861.4 378.0 L862.0 374.9 L862.6 377.1 L863.2 374.4 L863.8 374.1 L864.4 374.1 L865.0 373.8 L865.6 376.1 L866.2 375.5 L866.8 374.2 L867.4 376.2 L868.0 378.7 L868.6 376.4 L869.2 376.3 L869.8 378.5 L870.4 379.0 L871.0 378.4 L871.6 375.2 L872.2 374.5 L872.8 375.4 L873.4 376.9 L874.0 379.3 L874.6 379.5 L875.2 375.4 L875.8 376.2 L876.4 376.6 L877.0 378.4 L877.6 378.7 L878.2 378.3 L878.8 378.6 L879.4 375.7 L880.0 377.5 L880.6 375.9 L881.2 376.7 L881.8 375.9 L882.4 374.7 L883.0 374.4 L883.6 378.4 L884.2 373.2 L884.8 373.9 L885.4 374.1 L886.0 376.5 L886.6 373.2 L887.2 374.1 L887.8 377.8 L888.4 374.9 L889.0 373.8 L889.6 374.5 L890.2 373.5 L890.8 375.9 L891.4 374.9 L892.0 378.8 L892.6 375.0 L893.2 378.3 L893.8 374.6 L894.4 373.4 L895.0 376.8 L895.6 378.8 L896.2 379.0 L896.8 375.8 L897.4 378.2 L898.0 374.4 L898.6 375.2 L899.2 375.9 L899.8 374.8 L900.4 378.2 L901.0 376.2 L901.6 378.9 L902.2 375.6 L902.8 374.0 L903.4 378.2 L904.0 374.7 L904.6 372.6 L905.2 377.1 L905.8 377.8 L906.4 377.5 L907.0 373.7 L907.6 378.7 L908.2 374.1 L908.8 377.5 L909.4 374.2 L910.0 373.3 L910.6 373.6 L911.2 377.9 L911.8 375.6 L912.4 377.1 L913.0 373.4 L913.6 377.3 L914.2 378.1 L914.8 376.5 L915.4 378.6 L916.0 377.7 L916.6 374.6 L917.2 377.0 L917.8 378.0 L918.4 373.0 L919.0 377.5 L919.6 373.9 L920.2 374.7 L920.8 375.5 L921.4 374.9 L922.0 375.4 L922.6 373.6 L923.2 374.6 L923.8 377.4 L924.4 374.9 L925.0 375.9 L925.6 373.1 L926.2 378.4 L926.8 376.2 L927.4 372.8 L928.0 378.8 L928.6 374.4 L929.2 373.3 L929.8 375.2 L930.4 378.8 L931.0 374.1 L931.6 377.5 L932.2 375.8 L932.8 373.8 L933.4 377.1 L934.0 377.6 L934.6 378.4 L935.2 376.9 L935.8 378.5 L936.4 374.6 L937.0 373.7 L937.6 378.8 L938.2 375.7 L938.8 374.0 L939.4 374.1 L940.0 377.5 L940.6 375.7 L941.2 374.7 L941.8 375.8 L942.4 372.6 L943.0 373.2 L943.6 372.8 L944.2 378.4 L944.8 379.0 L945.4 375.3 L946.0 375.4 L946.6 377.4 L947.2 377.6 L947.8 374.0 L948.4 373.9 L949.0 379.1 L949.6 378.4 L950.2 374.5 L950.8 376.4 L951.4 378.2 L952.0 372.9 L952.6 377.0 L953.2 378.7 L953.8 376.5 L954.4 376.5 L955.0 374.9 L955.6 374.1 L956.2 378.7 L956.8 376.1 L957.4 373.2 L958.0 376.0 L958.6 373.3 L959.2 373.3 L959.8 373.9 L960.4 374.9 L961.0 378.5 L961.6 372.7 L962.2 377.2 L962.8 377.2 L963.4 375.9 L964.0 375.7 L964.6 374.1 L965.2 375.6 L965.8 373.1 L966.4 374.0 L967.0 374.9 L967.6 377.4 L968.2 375.0 L968.8 375.9 L969.4 374.2 L970.0 377.4 L970.6 374.0 L971.2 374.5 L971.8 378.0 L972.4 373.0 L973.0 376.0 L973.6 376.3 L974.2 377.0 L974.8 376.6 L975.4 373.7 L976.0 372.4 L976.6 375.3 L977.2 374.5 L977.8 374.6 L978.4 377.0 L979.0 370.6 L979.6 374.1 L980.2 377.2 L980.8 375.4 L981.4 374.9 L982.0 370.8 L982.6 375.9 L983.2 376.1 L983.8 369.8 L984.4 374.8 L985.0 369.5 L985.6 377.3 L986.2 376.6 L986.8 375.6 L987.4 374.1 L988.0 372.8 L988.6 374.6 L989.2 369.2 L989.8 369.4 L990.4 372.6 L991.0 369.0 L991.6 370.1 L992.2 369.1 L992.8 372.4 L993.4 376.5 L994.0 372.6 L994.6 376.9 L995.2 373.9 L995.8 368.9 L996.4 374.0 L997.0 371.5 L997.6 369.3 L998.2 371.3 L998.8 374.1 L999.4 373.0 L1000.0 376.3 L1000.6 370.7 L1001.2 371.8 L1001.8 374.6 L1002.4 373.7 L1003.0 370.1 L1003.6 376.9 L1004.2 375.5 L1004.8 372.0 L1005.4 370.6 L1006.0 372.7 L1006.6 372.0 L1007.2 377.2 L1007.8 372.5 L1008.4 372.6 L1009.0 376.7 L1009.6 372.8 L1010.2 375.1 L1010.8 374.4 L1011.4 370.6 L1012.0 370.2 L1012.6 377.2 L1013.2 376.6 L1013.8 371.9 L1014.4 369.4 L1015.0 371.9 L1015.6 374.4 L1016.2 370.9 L1016.8 369.5 L1017.4 376.7 L1018.0 377.0 L1018.6 373.5 L1019.2 371.2 L1019.8 372.8 L1020.4 373.2 L1021.0 375.9 L1021.6 375.9 L1022.2 376.9 L1022.8 373.3 L1023.4 375.0 L1024.0 372.3 L1024.6 373.2 L1025.2 374.5 L1025.8 370.7 L1026.4 374.4 L1027.0 373.3 L1027.6 373.3 L1028.2 371.2 L1028.8 368.8 L1029.4 370.9 L1030.0 377.2 L1030.6 370.8 L1031.2 372.7 L1031.8 371.7 L1032.4 376.9 L1033.0 377.1 L1033.6 377.1 L1034.2 376.2 L1034.8 376.2 L1035.4 371.1 L1036.0 370.6 L1036.6 373.7 L1037.2 375.4 L1037.8 373.4 L1038.4 376.2 L1039.0 375.1 L1039.6 373.4 L1040.2 369.5 L1040.8 370.9 L1041.4 376.2 L1042.0 370.3 L1042.6 368.8 L1043.2 369.5 L1043.8 375.7 L1044.4 372.1 L1045.0 369.0 L1045.6 375.0 L1046.2 372.2 L1046.8 371.7 L1047.4 368.9 L1048.0 370.0 L1048.6 373.1 L1049.2 372.1 L1049.8 375.4 L1050.4 370.1 L1051.0 375.1 L1051.6 371.4 L1052.2 375.9 L1052.8 370.9 L1053.4 370.2 L1054.0 376.2 L1054.6 373.6 L1055.2 375.8 L1055.8 372.6 L1056.4 375.1 L1057.0 369.1 L1057.6 369.9 L1058.2 376.6 L1058.8 375.0 L1059.4 374.8 L1060.0 375.9 L1060.6 372.3 L1061.2 370.9 L1061.8 372.9 L1062.4 372.7 L1063.0 375.7 L1063.6 373.2 L1064.2 369.8 L1064.8 376.4 L1065.4 375.2 L1066.0 372.6 L1066.6 372.8 L1067.2 375.4 L1067.8 370.6 L1068.4 368.5 L1069.0 372.9 L1069.6 368.5 L1070.2 368.9 L1070.8 370.6 L1071.4 374.5 L1072.0 372.2 L1072.6 368.9 L1073.2 369.7 L1073.8 373.0 L1074.4 374.9 L1075.0 374.8 L1075.6 373.7 L1076.2 370.2 L1076.8 373.5 L1077.4 372.6 L1078.0 375.4 L1078.6 373.2 L1079.2 375.7 L1079.8 376.6 L1080.4 375.2 L1081.0 372.3 L1081.6 371.4 L1082.2 370.5 L1082.8 373.6 L1083.4 371.1 L1084.0 369.0 L1084.6 376.7 L1085.2 372.2 L1085.8 375.1 L1086.4 368.6 L1087.0 375.8 L1087.6 374.2 L1088.2 373.9 L1088.8 370.4 L1089.4 371.1 L1090.0 376.6 L1090.6 372.9 L1091.2 374.0 L1091.8 375.7 L1092.4 376.8 L1093.0 372.9 L1093.6 369.9 L1094.2 368.2 L1094.8 375.1 L1095.4 374.5 L1096.0 371.4 L1096.6 371.9 L1097.2 373.7 L1097.8 375.6 L1098.4 369.7 L1099.0 373.7 L1099.6 374.4 L1100.2 372.5 L1100.8 376.2 L1101.4 372.7 L1102.0 376.0 L1102.6 374.1 L1103.2 371.4 L1103.8 370.6 L1104.4 368.4 L1105.0 371.0 L1105.6 376.2 L1106.2 371.5 L1106.8 374.6 L1107.4 375.0 L1108.0 371.2 L1108.6 374.1 L1109.2 369.3 L1109.8 372.5 L1110.4 375.6 L1111.0 375.9 L1111.6 376.6 L1112.2 368.9 L1112.8 369.0 L1113.4 373.0 L1114.0 369.1 L1114.6 370.7 L1115.2 370.7 L1115.8 371.3 L1116.4 370.6 L1117.0 376.4 L1117.6 371.5 L1118.2 373.0 L1118.8 373.7 L1119.4 375.4 L1120.0 371.5 L1120.6 370.3 L1121.2 371.3 L1121.8 376.6 L1122.4 376.7 L1123.0 371.4 L1123.6 371.4 L1124.2 376.3 L1124.8 376.7 L1125.4 369.5 L1126.0 368.5 L1126.6 369.5 L1127.2 371.8 L1127.8 376.5 L1128.4 374.4 L1129.0 374.6 L1129.6 373.3 L1130.2 369.2 L1130.8 369.0 L1131.4 375.7 L1132.0 372.4 L1132.6 369.5 L1133.2 368.5 L1133.8 372.5 L1134.4 375.4 L1135.0 371.1 L1135.6 376.3 L1136.2 370.6 L1136.8 369.7 L1137.4 369.6 L1138.0 370.6 L1138.6 375.5 L1139.2 372.7 L1139.8 375.1 L1140.4 376.8 L1141.0 370.1 L1141.6 376.6 L1142.2 372.0 L1142.8 374.5 L1143.4 371.9 L1144.0 374.2 L1144.6 371.6 L1145.2 369.1 L1145.8 376.1 L1146.4 371.2 L1147.0 372.8 L1147.6 369.3 L1148.2 374.5 L1148.8 369.0 L1149.4 372.1 L1150.0 377.0 L1150.6 375.8 L1151.2 372.7 L1151.8 372.1 L1152.4 369.4 L1153.0 372.9 L1153.6 369.8 L1154.2 372.3 L1154.8 373.7 L1155.4 369.6 L1156.0 371.9 L1156.6 375.4 L1157.2 373.7 L1157.8 376.2 L1158.4 370.0 L1159.0 369.2 L1159.6 368.8 L1160.2 372.8 L1160.8 375.1 L1161.4 371.5 L1162.0 372.0 L1162.6 368.9 L1163.2 374.1 L1163.8 369.9 L1164.4 373.4 L1165.0 372.5 L1165.6 371.0 L1166.2 373.0 L1166.8 377.0 L1167.4 375.7 L1168.0 371.5 L1168.6 371.5 L1169.2 374.2 L1169.8 374.1 L1170.4 370.4 L1171.0 375.0 L1171.6 376.0 L1172.2 375.7 L1172.8 372.4 L1173.4 373.3 L1174.0 373.6 L1174.6 368.9 L1175.2 377.0 L1175.8 371.0 L1176.4 374.8 L1177.0 374.3 L1177.6 375.3 L1178.2 374.8 L1178.8 377.0 L1179.4 376.5 L1180.0 373.6 L1180.6 369.2 L1181.2 376.8 L1181.8 371.8 L1182.4 375.0 L1183.0 373.9 L1183.6 375.4 L1184.2 372.3 L1184.8 374.8 L1185.4 374.8 L1186.0 376.1 L1186.6 373.4 L1187.2 370.9 L1187.8 375.3 L1188.4 372.6 L1189.0 375.3 L1189.6 373.6 L1190.2 375.2 L1190.8 370.7 L1191.4 376.4 L1192.0 370.8 L1192.6 377.0 L1193.2 371.7 L1193.8 375.0 L1194.4 374.0 L1195.0 375.7 L1195.6 374.2 L1196.2 372.1 L1196.8 372.1 L1197.4 371.8 L1198.0 375.6 L1198.6 373.1 L1199.2 370.2 L1199.8 373.4 L1200.4 370.3 L1201.0 370.7 L1201.6 376.6 L1202.2 372.9 L1202.8 374.2 L1203.4 371.4 L1204.0 377.0 L1204.6 371.4 L1205.2 369.3 L1205.8 370.1 L1206.4 369.1 L1207.0 376.2 L1207.6 374.0 L1208.2 374.6 L1208.8 371.4 L1209.4 376.4 L1210.0 369.1 L1210.6 373.9 L1211.2 374.9 L1211.8 371.9 L1212.4 372.1 L1213.0 370.5 L1213.6 374.8 L1214.2 372.1 L1214.8 373.6 L1215.4 373.9 L1216.0 372.2 L1216.6 369.5 L1217.2 377.1 L1217.8 369.3 L1218.4 375.0 L1219.0 373.2 L1219.6 372.2 L1220.2 372.3 L1220.8 370.1 L1221.4 375.2 L1222.0 373.2 L1222.6 371.8 L1223.2 376.0 L1223.8 373.9 L1224.4 371.6 L1225.0 377.0 L1225.6 376.5 L1226.2 374.4 L1226.8 372.5 L1227.4 373.5 L1228.0 371.7 L1228.6 372.9 L1229.2 371.7 L1229.8 369.6 L1230.4 370.7 L1231.0 376.0 L1231.6 376.1 L1232.2 373.4 L1232.8 375.8 L1233.4 373.7 L1234.0 376.4 L1234.6 373.4 L1235.2 375.1 L1235.8 373.7 L1236.4 370.2 L1237.0 369.3 L1237.6 376.4 L1238.2 372.2 L1238.8 370.3 L1239.4 375.1 L1240.0 369.5 L1240.6 374.2 L1241.2 368.9 L1241.8 374.1 L1242.4 372.2 L1243.0 371.4 L1243.6 373.9 L1244.2 369.9 L1244.8 376.1 L1245.4 370.7 L1246.0 370.5 L1246.6 369.3 L1247.2 372.1 L1247.8 370.3 L1248.4 375.7 L1249.0 370.5 L1249.6 376.3 L1250.2 369.2 L1250.8 369.0 L1251.4 376.9 L1252.0 369.3 L1252.6 371.6 L1253.2 370.7 L1253.8 368.7 L1254.4 372.9 L1255.0 371.2 L1255.6 370.5 L1256.2 372.5 L1256.8 370.5 L1257.4 369.0 L1258.0 370.2 L1258.6 369.5 L1259.2 371.8 L1259.8 376.7 L1260.4 376.2 L1261.0 370.2 L1261.6 370.9 L1262.2 369.6 L1262.8 374.8 L1263.4 371.9 L1264.0 375.7 L1264.6 368.6 L1265.2 370.1 L1265.8 370.1 L1266.4 369.1 L1267.0 369.2 L1267.6 376.3 L1268.2 371.4 L1268.8 373.6 L1269.4 372.0 L1270.0 376.1 L1270.6 373.3 L1271.2 368.7 L1271.8 371.5 L1272.4 370.9 L1273.0 370.3 L1273.6 370.8 L1274.2 376.3 L1274.8 372.5 L1275.4 371.3 L1276.0 370.2 L1276.6 373.6 L1277.2 376.4 L1277.8 374.4 L1278.4 370.4 L1279.0 374.6 L1279.6 376.8 L1280.2 369.0 L1280.8 370.0 L1281.4 375.2 L1282.0 370.5 L1282.6 372.1 L1283.2 370.2 L1283.8 376.1 L1284.4 370.6 L1285.0 369.3 L1285.6 370.7 L1286.2 368.4 L1286.8 374.5 L1287.4 371.4 L1288.0 376.1 L1288.6 376.8 L1289.2 375.4 L1289.8 370.1 L1290.4 368.6 L1291.0 368.7 L1291.6 370.7 L1292.2 376.6 L1292.8 370.2 L1293.4 370.1 L1294.0 375.6 L1294.6 375.5 L1295.2 375.4 L1295.8 368.9 L1296.4 375.0 L1297.0 371.6 L1297.6 376.6 L1298.2 374.8 L1298.8 368.8 L1299.4 371.2 L1300.0 373.5 L1300.6 368.2 L1301.2 373.4 L1301.8 369.2 L1302.4 376.4 L1303.0 376.7 L1303.6 370.6 L1304.2 373.9 L1304.8 372.9 L1305.4 369.6 L1306.0 375.6 L1306.6 368.9 L1307.2 370.4 L1307.8 374.7 L1308.4 368.6 L1309.0 372.9 L1309.6 376.6 L1310.2 376.7 L1310.8 374.0 L1311.4 368.3 L1312.0 368.9 L1312.6 374.2 L1313.2 370.3 L1313.8 368.9 L1314.4 370.6 L1315.0 376.6 L1315.6 368.8 L1316.2 372.8 L1316.8 375.6 L1317.4 377.0 L1318.0 370.5 L1318.6 375.7 L1319.2 374.7 L1319.8 375.5 L1320.4 368.8 L1321.0 375.6 L1321.6 371.7 L1322.2 376.7 L1322.8 372.7 L1323.4 372.9 L1324.0 368.8 L1324.6 370.9 L1325.2 372.4 L1325.8 375.0 L1326.4 375.7 L1327.0 373.0 L1327.6 374.0 L1328.2 374.7 L1328.8 375.1 L1329.4 374.0 L1330.0 375.4 L1330.6 377.0 L1331.2 375.4 L1331.8 368.7 L1332.4 369.1 L1333.0 373.8 L1333.6 376.4 L1334.2 373.5 L1334.8 372.4 L1335.4 376.7 L1336.0 373.8 L1336.6 373.6 L1337.2 375.2 L1337.8 373.3 L1338.4 375.3 L1339.0 376.5 L1339.6 376.2 L1340.2 376.2 L1340.8 376.1 L1341.4 375.3 L1342.0 373.8 L1342.6 370.6 L1343.2 373.9 L1343.8 374.5 L1344.4 372.5 L1345.0 373.0 L1345.6 374.5 L1346.2 372.8 L1346.8 373.7 L1347.4 372.3 L1348.0 372.2 L1348.6 376.7 L1349.2 368.9 L1349.8 375.2 L1350.4 369.3 L1351.0 374.8 L1351.6 372.4 L1352.2 372.4 L1352.8 368.7 L1353.4 372.1 L1354.0 377.0 L1354.6 370.8 L1355.2 373.6 L1355.8 376.7 L1356.4 376.4 L1357.0 369.4 L1357.6 372.8 L1358.2 376.5 L1358.8 370.3 L1359.4 372.5 L1360.0 372.3 L1360.6 370.8 L1361.2 369.1 L1361.8 370.2 L1362.4 368.7 L1363.0 374.6 L1363.6 371.0 L1364.2 375.8 L1364.8 374.7 L1365.4 370.6 L1366.0 374.0 L1366.6 376.8 L1367.2 369.0 L1367.8 368.9 L1368.4 370.5 L1369.0 373.1 L1369.6 369.6 L1370.2 370.1 L1370.8 368.6 L1371.4 376.3 L1372.0 373.6 L1372.6 376.1 L1373.2 374.0 L1373.8 374.4 L1374.4 374.3 L1375.0 376.0 L1375.6 369.9 L1376.2 377.0 L1376.8 375.5 L1377.4 376.0 L1378.0 369.2 L1378.6 375.2 L1379.2 373.9 L1379.8 373.3 L1380.4 372.8 L1381.0 369.0 L1381.6 370.3 L1382.2 377.1 L1382.8 369.4 L1383.4 373.7 L1384.0 368.8 L1384.6 373.2 L1385.2 369.9 L1385.8 369.0 L1386.4 373.9 L1387.0 375.1 L1387.6 369.5 L1388.2 375.3 L1388.8 374.4 L1389.4 375.2 L1390.0 375.2 L1390.6 374.7 L1391.2 376.0 L1391.8 371.6 L1392.4 368.7 L1393.0 369.4 L1393.6 370.9 L1394.2 377.1 L1394.8 376.9 L1395.4 369.9 L1396.0 376.9 L1396.6 373.1 L1397.2 372.1 L1397.8 369.2 L1398.4 374.7 L1399.0 372.3 L1399.6 376.5 L1400.2 369.4 L1400.8 372.7 L1401.4 370.1 L1402.0 375.9 L1402.6 369.1 L1403.2 373.0 L1403.8 372.8 L1404.4 369.9 L1405.0 376.2 L1405.6 370.0 L1406.2 372.5 L1406.8 373.1 L1407.4 373.4 L1408.0 372.8 L1408.6 373.7 L1409.2 376.0 L1409.8 376.1 L1410.4 377.1 L1411.0 372.4 L1411.6 373.6 L1412.2 371.7 L1412.8 371.7 L1413.4 369.1 L1414.0 375.3 L1414.6 372.1 L1415.2 376.4 L1415.8 373.4 L1416.4 371.0 L1417.0 373.6 L1417.6 374.3 L1418.2 368.8 L1418.8 373.1 L1419.4 369.8 L1420.0 376.1 L1420.6 370.1 L1421.2 373.9 L1421.8 375.3 L1422.4 370.3 L1423.0 375.2 L1423.6 373.3 L1424.2 375.9 L1424.8 370.8 L1425.4 376.4 L1426.0 371.0 L1426.6 374.4 L1427.2 377.2 L1427.8 375.8 L1428.4 376.8 L1429.0 370.4 L1429.6 371.1 L1430.2 373.0 L1430.8 372.9 L1431.4 372.6 L1432.0 370.7 L1432.6 371.2 L1433.2 372.7 L1433.8 377.2 L1434.4 374.5 L1435.0 373.4 L1435.6 371.9 L1436.2 373.3 L1436.8 374.9 L1437.4 375.3 L1438.0 376.8 L1438.6 371.1 L1439.2 374.4 L1439.8 369.1 L1440.4 369.3 L1441.0 373.6 L1441.6 371.2 L1442.2 376.6 L1442.8 375.7 L1443.4 369.7 L1444.0 373.8 L1444.6 369.8 L1445.2 370.0 L1445.8 370.0 L1446.4 377.3 L1447.0 375.0 L1447.6 371.2 L1448.2 374.3 L1448.8 372.8 L1449.4 369.8 L1450.0 372.8 L1450.6 377.1 L1451.2 372.6 L1451.8 370.5 L1452.4 373.2 L1453.0 370.9 L1453.6 369.0 L1454.2 376.1 L1454.8 374.1 L1455.4 369.5 L1456.0 372.1 L1456.6 376.3 L1457.2 370.6 L1457.8 375.0 L1458.4 374.5 L1459.0 376.8 L1459.6 369.1 L1459.6 402.5 L1459.0 394.8 L1458.4 397.1 L1457.8 396.6 L1457.2 401.0 L1456.6 395.3 L1456.0 399.5 L1455.4 402.1 L1454.8 397.5 L1454.2 395.5 L1453.6 402.6 L1453.0 400.7 L1452.4 398.4 L1451.8 401.1 L1451.2 399.0 L1450.6 394.5 L1450.0 398.8 L1449.4 401.8 L1448.8 398.8 L1448.2 397.3 L1447.6 400.4 L1447.0 396.6 L1446.4 394.3 L1445.8 401.6 L1445.2 401.6 L1444.6 401.8 L1444.0 397.8 L1443.4 401.9 L1442.8 395.9 L1442.2 395.0 L1441.6 400.4 L1441.0 398.0 L1440.4 402.3 L1439.8 402.5 L1439.2 397.2 L1438.6 400.5 L1438.0 394.8 L1437.4 396.3 L1436.8 396.7 L1436.2 398.3 L1435.6 399.7 L1435.0 398.2 L1434.4 397.1 L1433.8 394.4 L1433.2 398.9 L1432.6 400.4 L1432.0 400.9 L1431.4 399.0 L1430.8 398.7 L1430.2 398.6 L1429.6 400.5 L1429.0 401.2 L1428.4 394.8 L1427.8 395.8 L1427.2 394.4 L1426.6 397.2 L1426.0 400.6 L1425.4 395.2 L1424.8 400.8 L1424.2 395.7 L1423.6 398.3 L1423.0 396.4 L1422.4 401.3 L1421.8 396.3 L1421.2 397.7 L1420.6 401.5 L1420.0 395.5 L1419.4 401.8 L1418.8 398.5 L1418.2 402.8 L1417.6 397.3 L1417.0 398.0 L1416.4 400.6 L1415.8 398.2 L1415.2 395.2 L1414.6 399.5 L1414.0 396.3 L1413.4 402.5 L1412.8 399.9 L1412.2 399.9 L1411.6 398.0 L1411.0 399.2 L1410.4 394.5 L1409.8 395.5 L1409.2 395.6 L1408.6 397.9 L1408.0 398.8 L1407.4 398.2 L1406.8 398.5 L1406.2 399.1 L1405.6 401.6 L1405.0 395.4 L1404.4 401.7 L1403.8 398.8 L1403.2 398.6 L1402.6 402.5 L1402.0 395.7 L1401.4 401.5 L1400.8 398.9 L1400.2 402.2 L1399.6 395.1 L1399.0 399.3 L1398.4 396.9 L1397.8 402.4 L1397.2 399.5 L1396.6 398.5 L1396.0 394.7 L1395.4 401.7 L1394.8 394.7 L1394.2 394.5 L1393.6 400.7 L1393.0 402.2 L1392.4 402.9 L1391.8 400.0 L1391.2 395.6 L1390.6 396.9 L1390.0 396.4 L1389.4 396.4 L1388.8 397.2 L1388.2 396.3 L1387.6 402.1 L1387.0 396.5 L1386.4 397.7 L1385.8 402.6 L1385.2 401.7 L1384.6 398.4 L1384.0 402.8 L1383.4 397.9 L1382.8 402.2 L1382.2 394.5 L1381.6 401.3 L1381.0 402.6 L1380.4 398.8 L1379.8 398.3 L1379.2 397.7 L1378.6 396.4 L1378.0 402.4 L1377.4 395.6 L1376.8 396.1 L1376.2 394.6 L1375.6 401.7 L1375.0 395.6 L1374.4 397.3 L1373.8 397.2 L1373.2 397.6 L1372.6 395.5 L1372.0 398.0 L1371.4 395.3 L1370.8 403.0 L1370.2 401.5 L1369.6 402.0 L1369.0 398.5 L1368.4 401.1 L1367.8 402.7 L1367.2 402.6 L1366.6 394.8 L1366.0 397.6 L1365.4 401.0 L1364.8 396.9 L1364.2 395.8 L1363.6 400.6 L1363.0 397.0 L1362.4 402.9 L1361.8 401.4 L1361.2 402.5 L1360.6 400.8 L1360.0 399.3 L1359.4 399.1 L1358.8 401.3 L1358.2 395.1 L1357.6 398.8 L1357.0 402.2 L1356.4 395.2 L1355.8 394.9 L1355.2 398.0 L1354.6 400.8 L1354.0 394.6 L1353.4 399.5 L1352.8 402.9 L1352.2 399.2 L1351.6 399.2 L1351.0 396.8 L1350.4 402.3 L1349.8 396.4 L1349.2 402.7 L1348.6 394.9 L1348.0 399.4 L1347.4 399.3 L1346.8 397.9 L1346.2 398.8 L1345.6 397.1 L1345.0 398.6 L1344.4 399.1 L1343.8 397.1 L1343.2 397.7 L1342.6 401.0 L1342.0 397.8 L1341.4 396.3 L1340.8 395.5 L1340.2 395.4 L1339.6 395.4 L1339.0 395.1 L1338.4 396.3 L1337.8 398.3 L1337.2 396.4 L1336.6 398.0 L1336.0 397.8 L1335.4 394.9 L1334.8 399.2 L1334.2 398.1 L1333.6 395.2 L1333.0 397.8 L1332.4 402.5 L1331.8 402.9 L1331.2 396.2 L1330.6 394.6 L1330.0 396.2 L1329.4 397.6 L1328.8 396.5 L1328.2 396.9 L1327.6 397.6 L1327.0 398.6 L1326.4 395.9 L1325.8 396.6 L1325.2 399.2 L1324.6 400.7 L1324.0 402.8 L1323.4 398.7 L1322.8 398.9 L1322.2 394.9 L1321.6 399.9 L1321.0 396.0 L1320.4 402.8 L1319.8 396.1 L1319.2 396.9 L1318.6 395.9 L1318.0 401.1 L1317.4 394.6 L1316.8 396.0 L1316.2 398.8 L1315.6 402.8 L1315.0 395.0 L1314.4 401.0 L1313.8 402.7 L1313.2 401.3 L1312.6 397.4 L1312.0 402.7 L1311.4 403.3 L1310.8 397.6 L1310.2 394.9 L1309.6 395.0 L1309.0 398.7 L1308.4 403.0 L1307.8 396.9 L1307.2 401.2 L1306.6 402.7 L1306.0 396.0 L1305.4 402.0 L1304.8 398.7 L1304.2 397.7 L1303.6 401.0 L1303.0 394.9 L1302.4 395.2 L1301.8 402.4 L1301.2 398.2 L1300.6 403.4 L1300.0 398.1 L1299.4 400.4 L1298.8 402.8 L1298.2 396.8 L1297.6 395.0 L1297.0 400.0 L1296.4 396.6 L1295.8 402.7 L1295.2 396.2 L1294.6 396.1 L1294.0 396.0 L1293.4 401.5 L1292.8 401.4 L1292.2 395.0 L1291.6 400.9 L1291.0 402.9 L1290.4 403.0 L1289.8 401.5 L1289.2 396.2 L1288.6 394.8 L1288.0 395.5 L1287.4 400.2 L1286.8 397.1 L1286.2 403.2 L1285.6 400.9 L1285.0 402.3 L1284.4 401.0 L1283.8 395.5 L1283.2 401.4 L1282.6 399.5 L1282.0 401.1 L1281.4 396.4 L1280.8 401.6 L1280.2 402.6 L1279.6 394.8 L1279.0 397.0 L1278.4 401.2 L1277.8 397.2 L1277.2 395.2 L1276.6 398.0 L1276.0 401.4 L1275.4 400.3 L1274.8 399.1 L1274.2 395.3 L1273.6 400.8 L1273.0 401.3 L1272.4 400.7 L1271.8 400.1 L1271.2 402.9 L1270.6 398.3 L1270.0 395.5 L1269.4 399.6 L1268.8 398.0 L1268.2 400.2 L1267.6 395.3 L1267.0 402.4 L1266.4 402.5 L1265.8 401.5 L1265.2 401.5 L1264.6 403.0 L1264.0 395.9 L1263.4 399.7 L1262.8 396.8 L1262.2 402.0 L1261.6 400.7 L1261.0 401.4 L1260.4 395.4 L1259.8 394.9 L1259.2 399.8 L1258.6 402.1 L1258.0 401.4 L1257.4 402.6 L1256.8 401.1 L1256.2 399.1 L1255.6 401.1 L1255.0 400.4 L1254.4 398.7 L1253.8 402.9 L1253.2 400.9 L1252.6 400.0 L1252.0 402.3 L1251.4 394.7 L1250.8 402.6 L1250.2 402.4 L1249.6 395.3 L1249.0 401.1 L1248.4 395.9 L1247.8 401.3 L1247.2 399.5 L1246.6 402.3 L1246.0 401.1 L1245.4 400.9 L1244.8 395.5 L1244.2 401.7 L1243.6 397.7 L1243.0 400.2 L1242.4 399.4 L1241.8 397.5 L1241.2 402.7 L1240.6 397.4 L1240.0 402.1 L1239.4 396.5 L1238.8 401.3 L1238.2 399.4 L1237.6 395.2 L1237.0 402.3 L1236.4 401.4 L1235.8 397.9 L1235.2 396.5 L1234.6 398.2 L1234.0 395.2 L1233.4 397.9 L1232.8 395.8 L1232.2 398.2 L1231.6 395.5 L1231.0 395.6 L1230.4 400.9 L1229.8 402.0 L1229.2 399.9 L1228.6 398.7 L1228.0 399.9 L1227.4 398.1 L1226.8 399.1 L1226.2 397.2 L1225.6 395.1 L1225.0 394.6 L1224.4 400.0 L1223.8 397.7 L1223.2 395.6 L1222.6 399.8 L1222.0 398.4 L1221.4 396.4 L1220.8 401.5 L1220.2 399.3 L1219.6 399.4 L1219.0 398.4 L1218.4 396.6 L1217.8 402.3 L1217.2 394.5 L1216.6 402.1 L1216.0 399.4 L1215.4 397.7 L1214.8 398.0 L1214.2 399.5 L1213.6 396.8 L1213.0 401.1 L1212.4 399.5 L1211.8 399.7 L1211.2 396.7 L1210.6 397.7 L1210.0 402.5 L1209.4 395.2 L1208.8 400.2 L1208.2 397.0 L1207.6 397.6 L1207.0 395.4 L1206.4 402.5 L1205.8 401.5 L1205.2 402.3 L1204.6 400.2 L1204.0 394.6 L1203.4 400.2 L1202.8 397.4 L1202.2 398.7 L1201.6 395.0 L1201.0 400.9 L1200.4 401.3 L1199.8 398.2 L1199.2 401.4 L1198.6 398.5 L1198.0 396.0 L1197.4 399.8 L1196.8 399.5 L1196.2 399.5 L1195.6 397.4 L1195.0 395.9 L1194.4 397.6 L1193.8 396.6 L1193.2 399.9 L1192.6 394.6 L1192.0 400.8 L1191.4 395.2 L1190.8 400.9 L1190.2 396.4 L1189.6 398.0 L1189.0 396.3 L1188.4 399.0 L1187.8 396.3 L1187.2 400.7 L1186.6 398.2 L1186.0 395.5 L1185.4 396.8 L1184.8 396.8 L1184.2 399.3 L1183.6 396.2 L1183.0 397.7 L1182.4 396.6 L1181.8 399.8 L1181.2 394.8 L1180.6 402.4 L1180.0 398.0 L1179.4 395.1 L1178.8 394.6 L1178.2 396.8 L1177.6 396.3 L1177.0 397.3 L1176.4 396.8 L1175.8 400.6 L1175.2 394.6 L1174.6 402.7 L1174.0 398.0 L1173.4 398.3 L1172.8 399.2 L1172.2 395.9 L1171.6 395.6 L1171.0 396.6 L1170.4 401.2 L1169.8 397.5 L1169.2 397.4 L1168.6 400.1 L1168.0 400.1 L1167.4 395.9 L1166.8 394.6 L1166.2 398.6 L1165.6 400.6 L1165.0 399.1 L1164.4 398.2 L1163.8 401.7 L1163.2 397.5 L1162.6 402.7 L1162.0 399.6 L1161.4 400.1 L1160.8 396.5 L1160.2 398.8 L1159.6 402.8 L1159.0 402.4 L1158.4 401.6 L1157.8 395.4 L1157.2 397.9 L1156.6 396.2 L1156.0 399.7 L1155.4 402.0 L1154.8 397.9 L1154.2 399.3 L1153.6 401.8 L1153.0 398.7 L1152.4 402.2 L1151.8 399.5 L1151.2 398.9 L1150.6 395.8 L1150.0 394.6 L1149.4 399.5 L1148.8 402.6 L1148.2 397.1 L1147.6 402.3 L1147.0 398.8 L1146.4 400.4 L1145.8 395.5 L1145.2 402.5 L1144.6 400.0 L1144.0 397.4 L1143.4 399.7 L1142.8 397.1 L1142.2 399.6 L1141.6 395.0 L1141.0 401.5 L1140.4 394.8 L1139.8 396.5 L1139.2 398.9 L1138.6 396.1 L1138.0 401.0 L1137.4 402.0 L1136.8 401.9 L1136.2 401.0 L1135.6 395.3 L1135.0 400.5 L1134.4 396.2 L1133.8 399.1 L1133.2 403.1 L1132.6 402.1 L1132.0 399.2 L1131.4 395.9 L1130.8 402.6 L1130.2 402.4 L1129.6 398.3 L1129.0 397.0 L1128.4 397.2 L1127.8 395.1 L1127.2 399.8 L1126.6 402.1 L1126.0 403.1 L1125.4 402.1 L1124.8 394.9 L1124.2 395.3 L1123.6 400.2 L1123.0 400.2 L1122.4 394.9 L1121.8 395.0 L1121.2 400.3 L1120.6 401.3 L1120.0 400.1 L1119.4 396.2 L1118.8 397.9 L1118.2 398.6 L1117.6 400.1 L1117.0 395.2 L1116.4 401.0 L1115.8 400.3 L1115.2 400.9 L1114.6 400.9 L1114.0 402.5 L1113.4 398.6 L1112.8 402.6 L1112.2 402.7 L1111.6 395.0 L1111.0 395.7 L1110.4 396.0 L1109.8 399.1 L1109.2 402.3 L1108.6 397.5 L1108.0 400.4 L1107.4 396.6 L1106.8 397.0 L1106.2 400.1 L1105.6 395.4 L1105.0 400.6 L1104.4 403.2 L1103.8 401.0 L1103.2 400.2 L1102.6 397.5 L1102.0 395.6 L1101.4 398.9 L1100.8 395.4 L1100.2 399.1 L1099.6 397.2 L1099.0 397.9 L1098.4 401.9 L1097.8 396.0 L1097.2 397.9 L1096.6 399.7 L1096.0 400.2 L1095.4 397.1 L1094.8 396.5 L1094.2 403.4 L1093.6 401.7 L1093.0 398.7 L1092.4 394.8 L1091.8 395.9 L1091.2 397.6 L1090.6 398.7 L1090.0 395.0 L1089.4 400.5 L1088.8 401.2 L1088.2 397.7 L1087.6 397.4 L1087.0 395.8 L1086.4 403.0 L1085.8 396.5 L1085.2 399.4 L1084.6 394.9 L1084.0 402.6 L1083.4 400.5 L1082.8 398.0 L1082.2 401.1 L1081.6 400.2 L1081.0 399.3 L1080.4 396.4 L1079.8 395.0 L1079.2 395.9 L1078.6 398.4 L1078.0 396.2 L1077.4 399.0 L1076.8 398.1 L1076.2 401.4 L1075.6 397.9 L1075.0 396.8 L1074.4 396.7 L1073.8 398.6 L1073.2 401.9 L1072.6 402.7 L1072.0 399.4 L1071.4 397.1 L1070.8 401.0 L1070.2 402.7 L1069.6 403.1 L1069.0 398.7 L1068.4 403.1 L1067.8 401.0 L1067.2 396.2 L1066.6 398.8 L1066.0 399.0 L1065.4 396.4 L1064.8 395.2 L1064.2 401.8 L1063.6 398.4 L1063.0 395.9 L1062.4 398.9 L1061.8 398.7 L1061.2 400.7 L1060.6 399.3 L1060.0 395.7 L1059.4 396.8 L1058.8 396.6 L1058.2 395.0 L1057.6 401.7 L1057.0 402.5 L1056.4 396.5 L1055.8 399.0 L1055.2 395.8 L1054.6 398.0 L1054.0 395.4 L1053.4 401.4 L1052.8 400.7 L1052.2 395.7 L1051.6 400.2 L1051.0 396.5 L1050.4 401.5 L1049.8 396.2 L1049.2 399.5 L1048.6 398.5 L1048.0 401.6 L1047.4 402.7 L1046.8 399.9 L1046.2 399.4 L1045.6 396.6 L1045.0 402.6 L1044.4 399.5 L1043.8 395.9 L1043.2 402.1 L1042.6 402.8 L1042.0 401.3 L1041.4 395.4 L1040.8 400.7 L1040.2 402.1 L1039.6 398.2 L1039.0 396.5 L1038.4 395.4 L1037.8 398.2 L1037.2 396.2 L1036.6 397.9 L1036.0 401.0 L1035.4 400.5 L1034.8 395.4 L1034.2 395.4 L1033.6 394.5 L1033.0 394.5 L1032.4 394.7 L1031.8 399.9 L1031.2 398.9 L1030.6 400.8 L1030.0 394.4 L1029.4 400.7 L1028.8 402.8 L1028.2 400.4 L1027.6 398.3 L1027.0 398.3 L1026.4 397.2 L1025.8 400.9 L1025.2 397.1 L1024.6 398.4 L1024.0 399.3 L1023.4 396.6 L1022.8 398.3 L1022.2 394.7 L1021.6 395.7 L1021.0 395.7 L1020.4 398.4 L1019.8 398.8 L1019.2 400.4 L1018.6 398.1 L1018.0 394.6 L1017.4 394.9 L1016.8 402.1 L1016.2 400.7 L1015.6 397.2 L1015.0 399.7 L1014.4 402.2 L1013.8 399.7 L1013.2 395.0 L1012.6 394.4 L1012.0 401.4 L1011.4 401.0 L1010.8 397.2 L1010.2 396.5 L1009.6 398.8 L1009.0 394.9 L1008.4 399.0 L1007.8 399.1 L1007.2 394.4 L1006.6 399.6 L1006.0 398.9 L1005.4 401.0 L1004.8 399.6 L1004.2 396.1 L1003.6 394.7 L1003.0 401.5 L1002.4 397.9 L1001.8 397.0 L1001.2 399.8 L1000.6 400.9 L1000.0 395.3 L999.4 398.6 L998.8 397.5 L998.2 400.3 L997.6 402.3 L997.0 400.1 L996.4 397.6 L995.8 402.7 L995.2 397.7 L994.6 394.7 L994.0 399.0 L993.4 395.1 L992.8 399.2 L992.2 402.5 L991.6 401.5 L991.0 402.6 L990.4 399.0 L989.8 402.2 L989.2 402.4 L988.6 397.0 L988.0 398.8 L987.4 397.5 L986.8 396.0 L986.2 395.0 L985.6 394.3 L985.0 402.1 L984.4 396.8 L983.8 401.8 L983.2 395.5 L982.6 395.7 L982.0 400.8 L981.4 396.7 L980.8 396.2 L980.2 394.4 L979.6 397.5 L979.0 401.0 L978.4 394.6 L977.8 397.0 L977.2 397.1 L976.6 396.3 L976.0 399.2 L975.4 397.9 L974.8 395.0 L974.2 394.6 L973.6 395.3 L973.0 395.6 L972.4 398.6 L971.8 393.6 L971.2 397.1 L970.6 397.6 L970.0 394.2 L969.4 397.4 L968.8 395.7 L968.2 396.6 L967.6 394.2 L967.0 396.7 L966.4 397.6 L965.8 398.5 L965.2 396.0 L964.6 397.5 L964.0 395.9 L963.4 395.7 L962.8 394.4 L962.2 394.4 L961.6 398.9 L961.0 393.1 L960.4 396.7 L959.8 397.7 L959.2 398.3 L958.6 398.3 L958.0 395.6 L957.4 398.4 L956.8 395.5 L956.2 392.9 L955.6 397.5 L955.0 396.7 L954.4 395.1 L953.8 395.1 L953.2 392.9 L952.6 394.6 L952.0 398.7 L951.4 393.4 L950.8 395.2 L950.2 397.1 L949.6 393.2 L949.0 392.5 L948.4 397.7 L947.8 397.6 L947.2 394.0 L946.6 394.2 L946.0 396.2 L945.4 396.3 L944.8 392.6 L944.2 393.2 L943.6 398.8 L943.0 398.4 L942.4 399.0 L941.8 395.8 L941.2 396.9 L940.6 395.9 L940.0 394.1 L939.4 397.5 L938.8 397.6 L938.2 395.9 L937.6 392.8 L937.0 397.9 L936.4 397.0 L935.8 393.1 L935.2 394.7 L934.6 393.2 L934.0 394.0 L933.4 394.5 L932.8 397.8 L932.2 395.8 L931.6 394.1 L931.0 397.5 L930.4 392.8 L929.8 396.4 L929.2 398.3 L928.6 397.2 L928.0 392.8 L927.4 398.8 L926.8 395.4 L926.2 393.2 L925.6 398.5 L925.0 395.7 L924.4 396.7 L923.8 394.2 L923.2 397.0 L922.6 398.0 L922.0 396.2 L921.4 396.7 L920.8 396.1 L920.2 396.9 L919.6 397.7 L919.0 394.1 L918.4 398.6 L917.8 393.6 L917.2 394.6 L916.6 397.0 L916.0 393.9 L915.4 393.0 L914.8 395.1 L914.2 393.5 L913.6 394.3 L913.0 398.2 L912.4 394.5 L911.8 396.0 L911.2 393.7 L910.6 398.0 L910.0 398.3 L909.4 397.4 L908.8 394.1 L908.2 397.5 L907.6 392.9 L907.0 397.9 L906.4 394.1 L905.8 393.8 L905.2 394.5 L904.6 399.0 L904.0 396.9 L903.4 393.4 L902.8 397.6 L902.2 396.0 L901.6 392.7 L901.0 395.4 L900.4 393.4 L899.8 396.8 L899.2 395.7 L898.6 396.4 L898.0 397.2 L897.4 393.4 L896.8 395.8 L896.2 392.6 L895.6 392.8 L895.0 394.8 L894.4 398.2 L893.8 397.0 L893.2 393.3 L892.6 396.6 L892.0 392.8 L891.4 396.7 L890.8 395.7 L890.2 398.1 L889.6 397.1 L889.0 397.8 L888.4 396.7 L887.8 393.8 L887.2 397.5 L886.6 398.4 L886.0 395.1 L885.4 397.5 L884.8 397.7 L884.2 398.4 L883.6 393.2 L883.0 397.2 L882.4 396.9 L881.8 395.7 L881.2 394.9 L880.6 395.7 L880.0 394.1 L879.4 395.9 L878.8 393.0 L878.2 393.3 L877.6 392.9 L877.0 393.2 L876.4 395.0 L875.8 395.4 L875.2 396.2 L874.6 392.1 L874.0 392.3 L873.4 394.7 L872.8 396.2 L872.2 397.1 L871.6 396.4 L871.0 393.2 L870.4 392.6 L869.8 393.1 L869.2 395.3 L868.6 395.2 L868.0 392.9 L867.4 395.4 L866.8 397.4 L866.2 396.1 L865.6 395.5 L865.0 397.8 L864.4 397.5 L863.8 397.5 L863.2 397.2 L862.6 394.5 L862.0 396.7 L861.4 393.6 L860.8 393.3 L860.2 392.9 L859.6 392.3 L859.0 392.0 L858.4 394.2 L857.8 392.1 L857.2 395.7 L856.6 394.0 L856.0 393.0 L855.4 394.3 L854.8 397.8 L854.2 392.8 L853.6 397.4 L853.0 394.3 L852.4 397.5 L851.8 394.7 L851.2 389.3 L850.6 386.2 L850.0 386.2Z" fill="#15607a" fill-opacity="0.4"/>
<path d="M850.0 385.4 L851.0 385.4 L852.0 381.3 L853.0 381.4 L854.0 380.3 L855.0 380.4 L856.0 380.0 L857.0 381.7 L858.0 381.0 L859.0 381.8 L860.0 381.4 L861.0 380.7 L862.0 381.8 L863.0 381.4 L864.0 380.4 L865.0 380.6 L866.0 381.3 L867.0 380.5 L868.0 380.0 L869.0 381.7 L870.0 380.0 L871.0 380.2 L872.0 381.0 L873.0 381.4 L874.0 379.6 L875.0 381.0 L876.0 381.5 L877.0 381.5 L878.0 379.8 L879.0 380.3 L880.0 379.9 L881.0 380.0 L882.0 380.5 L883.0 379.5 L884.0 380.8 L885.0 380.4 L886.0 379.8 L887.0 380.2 L888.0 379.7 L889.0 380.3 L890.0 380.0 L891.0 381.5 L892.0 381.1 L893.0 380.9 L894.0 381.4 L895.0 381.0 L896.0 381.3 L897.0 380.9 L898.0 380.1 L899.0 380.7 L900.0 380.7 L901.0 381.0 L902.0 380.9 L903.0 379.3 L904.0 380.0 L905.0 380.1 L906.0 381.1 L907.0 379.8 L908.0 381.1 L909.0 380.6 L910.0 379.2 L911.0 380.0 L912.0 380.2 L913.0 379.9 L914.0 379.6 L915.0 379.7 L916.0 381.0 L917.0 381.4 L918.0 380.8 L919.0 380.9 L920.0 381.0 L921.0 379.3 L922.0 379.5 L923.0 380.8 L924.0 380.0 L925.0 380.6 L926.0 379.4 L927.0 380.5 L928.0 380.9 L929.0 380.9 L930.0 380.2 L931.0 380.9 L932.0 380.2 L933.0 379.4 L934.0 380.6 L935.0 381.0 L936.0 379.2 L937.0 380.3 L938.0 381.3 L939.0 381.4 L940.0 381.3 L941.0 380.1 L942.0 379.7 L943.0 380.5 L944.0 381.4 L945.0 380.6 L946.0 379.2 L947.0 380.3 L948.0 379.3 L949.0 379.5 L950.0 381.5 L951.0 379.8 L952.0 379.9 L953.0 380.3 L954.0 380.9 L955.0 380.0 L956.0 381.3 L957.0 380.5 L958.0 380.5 L959.0 379.3 L960.0 379.5 L961.0 380.9 L962.0 380.4 L963.0 381.1 L964.0 379.4 L965.0 379.5 L966.0 380.8 L967.0 380.0 L968.0 380.1 L969.0 381.2 L970.0 379.7 L971.0 380.3 L972.0 379.7 L973.0 380.3 L974.0 381.5 L975.0 380.8 L976.0 381.2 L977.0 378.7 L978.0 378.4 L979.0 378.2 L980.0 379.4 L981.0 380.2 L982.0 377.8 L983.0 377.5 L984.0 380.1 L985.0 378.9 L986.0 380.1 L987.0 378.1 L988.0 378.1 L989.0 379.9 L990.0 378.9 L991.0 378.7 L992.0 379.5 L993.0 377.7 L994.0 379.1 L995.0 379.7 L996.0 378.7 L997.0 378.1 L998.0 379.7 L999.0 379.4 L1000.0 377.3 L1001.0 378.4 L1002.0 379.0 L1003.0 378.8 L1004.0 379.9 L1005.0 379.6 L1006.0 379.3 L1007.0 378.5 L1008.0 379.6 L1009.0 379.6 L1010.0 380.1 L1011.0 378.4 L1012.0 379.6 L1013.0 377.6 L1014.0 377.7 L1015.0 380.1 L1016.0 379.6 L1017.0 378.3 L1018.0 379.6 L1019.0 379.9 L1020.0 377.5 L1021.0 378.5 L1022.0 378.8 L1023.0 377.9 L1024.0 377.8 L1025.0 379.7 L1026.0 380.0 L1027.0 378.9 L1028.0 379.0 L1029.0 378.8 L1030.0 378.0 L1031.0 378.2 L1032.0 377.3 L1033.0 379.9 L1034.0 379.0 L1035.0 379.2 L1036.0 377.6 L1037.0 379.5 L1038.0 379.6 L1039.0 378.9 L1040.0 378.9 L1041.0 379.4 L1042.0 379.5 L1043.0 377.4 L1044.0 378.9 L1045.0 377.6 L1046.0 378.5 L1047.0 380.0 L1048.0 377.2 L1049.0 377.7 L1050.0 377.3 L1051.0 377.4 L1052.0 377.6 L1053.0 379.7 L1054.0 378.7 L1055.0 379.5 L1056.0 379.0 L1057.0 380.0 L1058.0 379.0 L1059.0 377.2 L1060.0 379.4 L1061.0 377.8 L1062.0 378.8 L1063.0 378.9 L1064.0 377.2 L1065.0 377.1 L1066.0 378.5 L1067.0 378.0 L1068.0 379.7 L1069.0 379.2 L1070.0 377.2 L1071.0 378.4 L1072.0 378.5 L1073.0 377.9 L1074.0 380.0 L1075.0 378.4 L1076.0 378.6 L1077.0 377.5 L1078.0 379.6 L1079.0 377.2 L1080.0 379.9 L1081.0 379.6 L1082.0 378.3 L1083.0 378.1 L1084.0 379.4 L1085.0 379.7 L1086.0 377.4 L1087.0 379.4 L1088.0 378.3 L1089.0 378.2 L1090.0 378.8 L1091.0 378.3 L1092.0 378.5 L1093.0 377.2 L1094.0 379.5 L1095.0 377.9 L1096.0 379.4 L1097.0 378.9 L1098.0 378.0 L1099.0 379.2 L1100.0 379.1 L1101.0 377.8 L1102.0 379.9 L1103.0 378.7 L1104.0 377.0 L1105.0 377.0 L1106.0 379.9 L1107.0 379.4 L1108.0 379.3 L1109.0 377.2 L1110.0 377.4 L1111.0 377.4 L1112.0 379.0 L1113.0 379.6 L1114.0 377.6 L1115.0 378.0 L1116.0 378.3 L1117.0 377.1 L1118.0 378.1 L1119.0 380.1 L1120.0 377.6 L1121.0 379.2 L1122.0 378.1 L1123.0 377.3 L1124.0 379.7 L1125.0 379.8 L1126.0 379.8 L1127.0 378.5 L1128.0 379.3 L1129.0 378.3 L1130.0 378.0 L1131.0 379.5 L1132.0 378.2 L1133.0 379.4 L1134.0 378.7 L1135.0 377.4 L1136.0 377.6 L1137.0 379.9 L1138.0 378.9 L1139.0 379.3 L1140.0 380.2 L1141.0 377.9 L1142.0 378.3 L1143.0 379.4 L1144.0 378.0 L1145.0 378.5 L1146.0 378.9 L1147.0 380.2 L1148.0 380.0 L1149.0 377.5 L1150.0 377.5 L1151.0 378.6 L1152.0 377.7 L1153.0 378.5 L1154.0 379.8 L1155.0 379.8 L1156.0 379.3 L1157.0 377.5 L1158.0 377.8 L1159.0 377.7 L1160.0 377.5 L1161.0 379.6 L1162.0 379.5 L1163.0 379.9 L1164.0 377.9 L1165.0 377.6 L1166.0 379.0 L1167.0 378.4 L1168.0 379.8 L1169.0 377.5 L1170.0 377.7 L1171.0 377.4 L1172.0 377.9 L1173.0 377.6 L1174.0 380.2 L1175.0 378.1 L1176.0 379.3 L1177.0 377.5 L1178.0 377.9 L1179.0 377.7 L1180.0 377.9 L1181.0 379.5 L1182.0 378.0 L1183.0 380.0 L1184.0 377.7 L1185.0 377.8 L1186.0 379.6 L1187.0 377.9 L1188.0 378.9 L1189.0 379.4 L1190.0 378.0 L1191.0 379.6 L1192.0 380.2 L1193.0 379.8 L1194.0 379.4 L1195.0 377.8 L1196.0 377.5 L1197.0 379.5 L1198.0 378.4 L1199.0 379.2 L1200.0 377.5 L1201.0 378.8 L1202.0 377.6 L1203.0 380.0 L1204.0 377.5 L1205.0 379.8 L1206.0 377.5 L1207.0 379.5 L1208.0 380.0 L1209.0 379.0 L1210.0 378.2 L1211.0 379.4 L1212.0 378.5 L1213.0 378.8 L1214.0 379.2 L1215.0 378.6 L1216.0 379.5 L1217.0 378.2 L1218.0 380.3 L1219.0 377.5 L1220.0 378.7 L1221.0 378.1 L1222.0 378.1 L1223.0 378.3 L1224.0 379.2 L1225.0 380.1 L1226.0 378.3 L1227.0 379.3 L1228.0 379.3 L1229.0 377.7 L1230.0 378.1 L1231.0 379.4 L1232.0 379.3 L1233.0 379.0 L1234.0 379.0 L1235.0 379.4 L1236.0 379.9 L1237.0 379.0 L1238.0 377.4 L1239.0 378.2 L1240.0 377.5 L1241.0 378.4 L1242.0 379.3 L1243.0 378.6 L1244.0 380.2 L1245.0 379.4 L1246.0 378.9 L1247.0 378.5 L1248.0 378.2 L1249.0 378.8 L1250.0 378.9 L1251.0 379.6 L1252.0 378.8 L1253.0 377.5 L1254.0 377.8 L1255.0 379.7 L1256.0 379.9 L1257.0 378.6 L1258.0 378.3 L1259.0 379.2 L1260.0 377.7 L1261.0 377.9 L1262.0 378.1 L1263.0 379.5 L1264.0 379.6 L1265.0 380.1 L1266.0 379.4 L1267.0 378.7 L1268.0 377.6 L1269.0 379.9 L1270.0 378.9 L1271.0 378.2 L1272.0 379.6 L1273.0 378.0 L1274.0 378.6 L1275.0 379.4 L1276.0 378.1 L1277.0 380.1 L1278.0 377.8 L1279.0 377.8 L1280.0 379.8 L1281.0 378.8 L1282.0 379.6 L1283.0 377.2 L1284.0 378.5 L1285.0 380.0 L1286.0 379.4 L1287.0 377.5 L1288.0 378.7 L1289.0 377.7 L1290.0 378.1 L1291.0 377.1 L1292.0 378.3 L1293.0 377.2 L1294.0 377.4 L1295.0 378.2 L1296.0 377.9 L1297.0 378.5 L1298.0 377.5 L1299.0 378.4 L1300.0 377.3 L1301.0 377.8 L1302.0 378.6 L1303.0 379.3 L1304.0 379.3 L1305.0 378.1 L1306.0 377.7 L1307.0 378.5 L1308.0 378.2 L1309.0 379.3 L1310.0 379.9 L1311.0 379.2 L1312.0 379.3 L1313.0 379.1 L1314.0 378.4 L1315.0 379.7 L1316.0 379.4 L1317.0 378.0 L1318.0 377.9 L1319.0 379.9 L1320.0 378.9 L1321.0 378.5 L1322.0 378.8 L1323.0 379.5 L1324.0 378.8 L1325.0 377.4 L1326.0 378.3 L1327.0 378.0 L1328.0 377.5 L1329.0 377.8 L1330.0 379.0 L1331.0 380.1 L1332.0 379.1 L1333.0 377.8 L1334.0 377.5 L1335.0 377.2 L1336.0 378.9 L1337.0 377.9 L1338.0 378.5 L1339.0 378.3 L1340.0 379.5 L1341.0 379.5 L1342.0 378.8 L1343.0 380.1 L1344.0 379.1 L1345.0 378.1 L1346.0 378.9 L1347.0 379.7 L1348.0 378.7 L1349.0 379.8 L1350.0 378.3 L1351.0 380.1 L1352.0 379.0 L1353.0 378.5 L1354.0 380.1 L1355.0 378.2 L1356.0 379.8 L1357.0 378.8 L1358.0 380.0 L1359.0 379.0 L1360.0 379.5 L1361.0 379.2 L1362.0 377.9 L1363.0 379.0 L1364.0 377.9 L1365.0 377.7 L1366.0 379.4 L1367.0 379.9 L1368.0 380.1 L1369.0 378.6 L1370.0 377.2 L1371.0 379.1 L1372.0 378.2 L1373.0 377.8 L1374.0 378.2 L1375.0 377.9 L1376.0 377.3 L1377.0 379.6 L1378.0 380.1 L1379.0 379.7 L1380.0 379.8 L1381.0 378.2 L1382.0 378.5 L1383.0 379.6 L1384.0 378.1 L1385.0 377.9 L1386.0 379.7 L1387.0 378.4 L1388.0 378.0 L1389.0 379.9 L1390.0 377.8 L1391.0 377.3 L1392.0 379.9 L1393.0 380.2 L1394.0 379.3 L1395.0 378.2 L1396.0 377.4 L1397.0 379.0 L1398.0 378.1 L1399.0 380.0 L1400.0 378.2 L1401.0 378.4 L1402.0 379.9 L1403.0 377.9 L1404.0 377.7 L1405.0 378.5 L1406.0 379.9 L1407.0 377.3 L1408.0 377.9 L1409.0 379.2 L1410.0 379.0 L1411.0 379.2 L1412.0 378.8 L1413.0 379.2 L1414.0 377.7 L1415.0 377.8 L1416.0 380.0 L1417.0 377.4 L1418.0 378.4 L1419.0 377.8 L1420.0 378.2 L1421.0 379.0 L1422.0 378.1 L1423.0 377.4 L1424.0 379.5 L1425.0 377.9 L1426.0 378.7 L1427.0 378.9 L1428.0 379.0 L1429.0 378.1 L1430.0 379.5 L1431.0 377.8 L1432.0 377.8 L1433.0 380.0 L1434.0 377.7 L1435.0 379.6 L1436.0 378.9 L1437.0 378.5 L1438.0 379.2 L1439.0 380.2 L1440.0 377.8 L1441.0 379.8 L1442.0 379.7 L1443.0 378.0 L1444.0 379.3 L1445.0 377.7 L1446.0 378.2 L1447.0 379.5 L1448.0 380.3 L1449.0 377.5 L1450.0 380.1 L1451.0 378.2 L1452.0 378.9 L1453.0 378.1 L1454.0 378.3 L1455.0 378.4 L1456.0 378.9 L1457.0 378.0 L1458.0 380.1 L1459.0 379.7 L1460.0 385.4 L1460.0 386.2 L1459.0 391.9 L1458.0 391.5 L1457.0 393.6 L1456.0 392.7 L1455.0 393.2 L1454.0 393.3 L1453.0 393.5 L1452.0 392.7 L1451.0 393.4 L1450.0 391.5 L1449.0 394.1 L1448.0 391.3 L1447.0 392.1 L1446.0 393.4 L1445.0 393.9 L1444.0 392.3 L1443.0 393.6 L1442.0 391.9 L1441.0 391.8 L1440.0 393.8 L1439.0 391.4 L1438.0 392.4 L1437.0 393.1 L1436.0 392.7 L1435.0 392.0 L1434.0 393.9 L1433.0 391.6 L1432.0 393.8 L1431.0 393.8 L1430.0 392.1 L1429.0 393.5 L1428.0 392.6 L1427.0 392.7 L1426.0 392.9 L1425.0 393.7 L1424.0 392.1 L1423.0 394.2 L1422.0 393.5 L1421.0 392.6 L1420.0 393.4 L1419.0 393.8 L1418.0 393.2 L1417.0 394.2 L1416.0 391.6 L1415.0 393.8 L1414.0 393.9 L1413.0 392.4 L1412.0 392.8 L1411.0 392.4 L1410.0 392.6 L1409.0 392.4 L1408.0 393.7 L1407.0 394.3 L1406.0 391.7 L1405.0 393.1 L1404.0 393.9 L1403.0 393.7 L1402.0 391.7 L1401.0 393.2 L1400.0 393.4 L1399.0 391.6 L1398.0 393.5 L1397.0 392.6 L1396.0 394.2 L1395.0 393.4 L1394.0 392.3 L1393.0 391.4 L1392.0 391.7 L1391.0 394.3 L1390.0 393.8 L1389.0 391.7 L1388.0 393.6 L1387.0 393.2 L1386.0 391.9 L1385.0 393.7 L1384.0 393.5 L1383.0 392.0 L1382.0 393.1 L1381.0 393.4 L1380.0 391.8 L1379.0 391.9 L1378.0 391.5 L1377.0 392.0 L1376.0 394.3 L1375.0 393.7 L1374.0 393.4 L1373.0 393.8 L1372.0 393.4 L1371.0 392.5 L1370.0 394.4 L1369.0 393.0 L1368.0 391.5 L1367.0 391.7 L1366.0 392.2 L1365.0 393.9 L1364.0 393.7 L1363.0 392.6 L1362.0 393.7 L1361.0 392.4 L1360.0 392.1 L1359.0 392.6 L1358.0 391.6 L1357.0 392.8 L1356.0 391.8 L1355.0 393.4 L1354.0 391.5 L1353.0 393.1 L1352.0 392.6 L1351.0 391.5 L1350.0 393.3 L1349.0 391.8 L1348.0 392.9 L1347.0 391.9 L1346.0 392.7 L1345.0 393.5 L1344.0 392.5 L1343.0 391.5 L1342.0 392.8 L1341.0 392.1 L1340.0 392.1 L1339.0 393.3 L1338.0 393.1 L1337.0 393.7 L1336.0 392.7 L1335.0 394.4 L1334.0 394.1 L1333.0 393.8 L1332.0 392.5 L1331.0 391.5 L1330.0 392.6 L1329.0 393.8 L1328.0 394.1 L1327.0 393.6 L1326.0 393.3 L1325.0 394.2 L1324.0 392.8 L1323.0 392.1 L1322.0 392.8 L1321.0 393.1 L1320.0 392.7 L1319.0 391.7 L1318.0 393.7 L1317.0 393.6 L1316.0 392.2 L1315.0 391.9 L1314.0 393.2 L1313.0 392.5 L1312.0 392.3 L1311.0 392.4 L1310.0 391.7 L1309.0 392.3 L1308.0 393.4 L1307.0 393.1 L1306.0 393.9 L1305.0 393.5 L1304.0 392.3 L1303.0 392.3 L1302.0 393.0 L1301.0 393.8 L1300.0 394.3 L1299.0 393.2 L1298.0 394.1 L1297.0 393.1 L1296.0 393.7 L1295.0 393.4 L1294.0 394.2 L1293.0 394.4 L1292.0 393.3 L1291.0 394.5 L1290.0 393.5 L1289.0 393.9 L1288.0 392.9 L1287.0 394.1 L1286.0 392.2 L1285.0 391.6 L1284.0 393.1 L1283.0 394.4 L1282.0 392.0 L1281.0 392.8 L1280.0 391.8 L1279.0 393.8 L1278.0 393.8 L1277.0 391.5 L1276.0 393.5 L1275.0 392.2 L1274.0 393.0 L1273.0 393.6 L1272.0 392.0 L1271.0 393.4 L1270.0 392.7 L1269.0 391.7 L1268.0 394.0 L1267.0 392.9 L1266.0 392.2 L1265.0 391.5 L1264.0 392.0 L1263.0 392.1 L1262.0 393.5 L1261.0 393.7 L1260.0 393.9 L1259.0 392.4 L1258.0 393.3 L1257.0 393.0 L1256.0 391.7 L1255.0 391.9 L1254.0 393.8 L1253.0 394.1 L1252.0 392.8 L1251.0 392.0 L1250.0 392.7 L1249.0 392.8 L1248.0 393.4 L1247.0 393.1 L1246.0 392.7 L1245.0 392.2 L1244.0 391.4 L1243.0 393.0 L1242.0 392.3 L1241.0 393.2 L1240.0 394.1 L1239.0 393.4 L1238.0 394.2 L1237.0 392.6 L1236.0 391.7 L1235.0 392.2 L1234.0 392.6 L1233.0 392.6 L1232.0 392.3 L1231.0 392.2 L1230.0 393.5 L1229.0 393.9 L1228.0 392.3 L1227.0 392.3 L1226.0 393.3 L1225.0 391.5 L1224.0 392.4 L1223.0 393.3 L1222.0 393.5 L1221.0 393.5 L1220.0 392.9 L1219.0 394.1 L1218.0 391.3 L1217.0 393.4 L1216.0 392.1 L1215.0 393.0 L1214.0 392.4 L1213.0 392.8 L1212.0 393.1 L1211.0 392.2 L1210.0 393.4 L1209.0 392.6 L1208.0 391.6 L1207.0 392.1 L1206.0 394.1 L1205.0 391.8 L1204.0 394.1 L1203.0 391.6 L1202.0 394.0 L1201.0 392.8 L1200.0 394.1 L1199.0 392.4 L1198.0 393.2 L1197.0 392.1 L1196.0 394.1 L1195.0 393.8 L1194.0 392.2 L1193.0 391.8 L1192.0 391.4 L1191.0 392.0 L1190.0 393.6 L1189.0 392.2 L1188.0 392.7 L1187.0 393.7 L1186.0 392.0 L1185.0 393.8 L1184.0 393.9 L1183.0 391.6 L1182.0 393.6 L1181.0 392.1 L1180.0 393.7 L1179.0 393.9 L1178.0 393.7 L1177.0 394.1 L1176.0 392.3 L1175.0 393.5 L1174.0 391.4 L1173.0 394.0 L1172.0 393.7 L1171.0 394.2 L1170.0 393.9 L1169.0 394.1 L1168.0 391.8 L1167.0 393.2 L1166.0 392.6 L1165.0 394.0 L1164.0 393.7 L1163.0 391.7 L1162.0 392.1 L1161.0 392.0 L1160.0 394.1 L1159.0 393.9 L1158.0 393.8 L1157.0 394.1 L1156.0 392.3 L1155.0 391.8 L1154.0 391.8 L1153.0 393.1 L1152.0 393.9 L1151.0 393.0 L1150.0 394.1 L1149.0 394.1 L1148.0 391.6 L1147.0 391.4 L1146.0 392.7 L1145.0 393.1 L1144.0 393.6 L1143.0 392.2 L1142.0 393.3 L1141.0 393.7 L1140.0 391.4 L1139.0 392.3 L1138.0 392.7 L1137.0 391.7 L1136.0 394.0 L1135.0 394.2 L1134.0 392.9 L1133.0 392.2 L1132.0 393.4 L1131.0 392.1 L1130.0 393.6 L1129.0 393.3 L1128.0 392.3 L1127.0 393.1 L1126.0 391.8 L1125.0 391.8 L1124.0 391.9 L1123.0 394.3 L1122.0 393.5 L1121.0 392.4 L1120.0 394.0 L1119.0 391.5 L1118.0 393.5 L1117.0 394.5 L1116.0 393.3 L1115.0 393.6 L1114.0 394.0 L1113.0 392.0 L1112.0 392.6 L1111.0 394.2 L1110.0 394.2 L1109.0 394.4 L1108.0 392.3 L1107.0 392.2 L1106.0 391.7 L1105.0 394.6 L1104.0 394.6 L1103.0 392.9 L1102.0 391.7 L1101.0 393.8 L1100.0 392.5 L1099.0 392.4 L1098.0 393.6 L1097.0 392.7 L1096.0 392.2 L1095.0 393.7 L1094.0 392.1 L1093.0 394.4 L1092.0 393.1 L1091.0 393.3 L1090.0 392.8 L1089.0 393.4 L1088.0 393.3 L1087.0 392.2 L1086.0 394.2 L1085.0 391.9 L1084.0 392.2 L1083.0 393.5 L1082.0 393.3 L1081.0 392.0 L1080.0 391.7 L1079.0 394.4 L1078.0 392.0 L1077.0 394.1 L1076.0 393.0 L1075.0 393.2 L1074.0 391.6 L1073.0 393.7 L1072.0 393.1 L1071.0 393.2 L1070.0 394.4 L1069.0 392.4 L1068.0 391.9 L1067.0 393.6 L1066.0 393.1 L1065.0 394.5 L1064.0 394.4 L1063.0 392.7 L1062.0 392.8 L1061.0 393.8 L1060.0 392.2 L1059.0 394.4 L1058.0 392.6 L1057.0 391.6 L1056.0 392.6 L1055.0 392.1 L1054.0 392.9 L1053.0 391.9 L1052.0 394.0 L1051.0 394.2 L1050.0 394.3 L1049.0 393.9 L1048.0 394.4 L1047.0 391.6 L1046.0 393.1 L1045.0 394.0 L1044.0 392.7 L1043.0 394.2 L1042.0 392.1 L1041.0 392.2 L1040.0 392.7 L1039.0 392.7 L1038.0 392.0 L1037.0 392.1 L1036.0 394.0 L1035.0 392.4 L1034.0 392.6 L1033.0 391.7 L1032.0 394.3 L1031.0 393.4 L1030.0 393.6 L1029.0 392.8 L1028.0 392.6 L1027.0 392.7 L1026.0 391.6 L1025.0 391.9 L1024.0 393.8 L1023.0 393.7 L1022.0 392.8 L1021.0 393.1 L1020.0 394.1 L1019.0 391.7 L1018.0 392.0 L1017.0 393.3 L1016.0 392.0 L1015.0 391.5 L1014.0 393.9 L1013.0 394.0 L1012.0 392.0 L1011.0 393.2 L1010.0 391.5 L1009.0 392.0 L1008.0 392.0 L1007.0 393.1 L1006.0 392.3 L1005.0 392.0 L1004.0 391.7 L1003.0 392.8 L1002.0 392.6 L1001.0 393.2 L1000.0 394.3 L999.0 392.2 L998.0 391.9 L997.0 393.5 L996.0 392.9 L995.0 391.9 L994.0 392.5 L993.0 393.9 L992.0 392.1 L991.0 392.9 L990.0 392.7 L989.0 391.7 L988.0 393.5 L987.0 393.5 L986.0 391.5 L985.0 392.7 L984.0 391.5 L983.0 394.1 L982.0 393.8 L981.0 391.4 L980.0 392.2 L979.0 393.4 L978.0 393.2 L977.0 392.9 L976.0 390.4 L975.0 390.8 L974.0 390.1 L973.0 391.3 L972.0 391.9 L971.0 391.3 L970.0 391.9 L969.0 390.4 L968.0 391.5 L967.0 391.6 L966.0 390.8 L965.0 392.1 L964.0 392.2 L963.0 390.5 L962.0 391.2 L961.0 390.7 L960.0 392.1 L959.0 392.3 L958.0 391.1 L957.0 391.1 L956.0 390.3 L955.0 391.6 L954.0 390.7 L953.0 391.3 L952.0 391.7 L951.0 391.8 L950.0 390.1 L949.0 392.1 L948.0 392.3 L947.0 391.3 L946.0 392.4 L945.0 391.0 L944.0 390.2 L943.0 391.1 L942.0 391.9 L941.0 391.5 L940.0 390.3 L939.0 390.2 L938.0 390.3 L937.0 391.3 L936.0 392.4 L935.0 390.6 L934.0 391.0 L933.0 392.2 L932.0 391.4 L931.0 390.7 L930.0 391.4 L929.0 390.7 L928.0 390.7 L927.0 391.1 L926.0 392.2 L925.0 391.0 L924.0 391.6 L923.0 390.8 L922.0 392.1 L921.0 392.3 L920.0 390.6 L919.0 390.7 L918.0 390.8 L917.0 390.2 L916.0 390.6 L915.0 391.9 L914.0 392.0 L913.0 391.7 L912.0 391.4 L911.0 391.6 L910.0 392.4 L909.0 391.0 L908.0 390.5 L907.0 391.8 L906.0 390.5 L905.0 391.5 L904.0 391.6 L903.0 392.3 L902.0 390.7 L901.0 390.6 L900.0 390.9 L899.0 390.9 L898.0 391.5 L897.0 390.7 L896.0 390.3 L895.0 390.6 L894.0 390.2 L893.0 390.7 L892.0 390.5 L891.0 390.1 L890.0 391.6 L889.0 391.3 L888.0 391.9 L887.0 391.4 L886.0 391.8 L885.0 391.2 L884.0 390.8 L883.0 392.1 L882.0 391.1 L881.0 391.6 L880.0 391.7 L879.0 391.3 L878.0 391.8 L877.0 390.1 L876.0 390.1 L875.0 390.6 L874.0 392.0 L873.0 390.2 L872.0 390.6 L871.0 391.4 L870.0 391.6 L869.0 389.9 L868.0 391.6 L867.0 391.1 L866.0 390.3 L865.0 391.0 L864.0 391.2 L863.0 390.2 L862.0 389.8 L861.0 390.9 L860.0 390.2 L859.0 389.8 L858.0 390.6 L857.0 389.9 L856.0 391.6 L855.0 391.2 L854.0 391.3 L853.0 390.2 L852.0 390.3 L851.0 386.2 L850.0 386.2Z" fill="#15607a" fill-opacity="0.2"/>
<path d="M741 444.2 H830" stroke="#2f6b7d" stroke-width="0.8"/>
<path d="M818.0 443.8 L818.8 443.8 L819.5 440.6 L820.2 441.1 L821.0 440.9 L821.8 440.8 L822.5 440.8 L823.2 441.4 L824.0 441.2 L824.8 441.3 L825.5 441.4 L826.2 441.2 L827.0 441.6 L827.8 441.7 L828.5 441.5 L829.2 441.7 L830.0 442.0 L830.8 442.0 L831.5 441.9 L832.2 442.1 L833.0 441.8 L833.8 441.7 L834.5 441.9 L835.2 441.6 L836.0 441.5 L836.8 441.7 L837.5 441.6 L838.2 442.0 L839.0 442.0 L839.8 441.4 L840.5 441.8 L841.2 441.9 L842.0 441.4 L842.8 441.5 L843.5 441.9 L844.2 441.8 L845.0 441.8 L845.8 441.8 L846.5 441.9 L847.2 441.6 L848.0 441.7 L848.8 441.6 L849.5 441.8 L850.2 441.8 L851.0 441.8 L851.8 439.5 L852.5 439.1 L853.2 439.4 L854.0 439.9 L854.8 439.9 L855.5 439.9 L856.2 439.7 L857.0 440.0 L857.8 439.8 L858.5 439.9 L859.2 439.9 L860.0 439.4 L860.8 439.7 L861.5 439.7 L862.2 439.8 L863.0 439.6 L863.8 439.4 L864.5 439.9 L865.2 440.2 L866.0 439.8 L866.8 439.9 L867.5 439.5 L868.2 440.2 L869.0 439.4 L869.8 440.4 L870.5 439.8 L871.2 439.9 L872.0 440.1 L872.8 439.5 L873.5 439.7 L874.2 440.3 L875.0 440.0 L875.8 439.9 L876.5 440.5 L877.2 440.5 L878.0 440.0 L878.8 439.8 L879.5 440.1 L880.2 440.2 L881.0 440.1 L881.8 440.3 L882.5 439.7 L883.2 439.5 L884.0 440.0 L884.8 440.5 L885.5 440.1 L886.2 439.6 L887.0 440.1 L887.8 440.3 L888.5 440.2 L889.2 439.6 L890.0 439.7 L890.8 440.1 L891.5 439.7 L892.2 439.5 L893.0 439.2 L893.8 439.4 L894.5 439.8 L895.2 439.4 L896.0 439.2 L896.8 439.2 L897.5 439.4 L898.2 439.5 L899.0 439.6 L899.8 439.2 L900.5 439.4 L901.2 439.4 L902.0 439.9 L902.8 440.1 L903.5 440.0 L904.2 439.6 L905.0 439.7 L905.8 440.1 L906.5 440.1 L907.2 439.3 L908.0 440.3 L908.8 439.4 L909.5 439.6 L910.2 439.9 L911.0 439.4 L911.8 439.8 L912.5 440.5 L913.2 439.6 L914.0 440.2 L914.8 439.7 L915.5 439.8 L916.2 440.5 L917.0 440.6 L917.8 440.7 L918.5 440.0 L919.2 440.0 L920.0 440.5 L920.8 440.6 L921.5 440.3 L922.2 439.9 L923.0 439.9 L923.8 439.7 L924.5 439.6 L925.2 439.7 L926.0 439.6 L926.8 440.4 L927.5 440.4 L928.2 439.5 L929.0 439.7 L929.8 440.0 L930.5 440.1 L931.2 439.9 L932.0 439.8 L932.8 439.6 L933.5 439.6 L934.2 439.9 L935.0 440.0 L935.8 439.8 L936.5 439.8 L937.2 439.8 L938.0 439.4 L938.8 439.7 L939.5 438.9 L940.2 439.2 L941.0 439.3 L941.8 439.1 L942.5 439.6 L943.2 439.9 L944.0 439.9 L944.8 439.6 L945.5 439.6 L946.2 439.8 L947.0 439.8 L947.8 439.2 L948.5 440.2 L949.2 439.7 L950.0 439.8 L950.8 439.9 L951.5 439.5 L952.2 440.1 L953.0 440.3 L953.8 440.2 L954.5 439.3 L955.2 440.1 L956.0 440.3 L956.8 439.5 L957.5 439.8 L958.2 439.6 L959.0 440.2 L959.8 439.8 L960.5 440.6 L961.2 440.4 L962.0 439.8 L962.8 440.0 L963.5 439.8 L964.2 440.2 L965.0 439.6 L965.8 440.5 L966.5 439.9 L967.2 440.3 L968.0 440.3 L968.8 439.6 L969.5 440.0 L970.2 439.6 L971.0 440.2 L971.8 439.7 L972.5 439.5 L973.2 439.8 L974.0 440.2 L974.8 439.7 L975.5 439.4 L976.2 439.5 L977.0 439.9 L977.8 439.9 L978.5 440.3 L979.2 439.5 L980.0 440.2 L980.8 440.1 L981.5 440.3 L982.2 440.1 L983.0 439.9 L983.8 438.6 L984.5 438.0 L985.2 436.8 L986.0 436.1 L986.8 437.3 L987.5 437.3 L988.2 436.5 L989.0 435.8 L989.8 435.7 L990.5 436.4 L991.2 437.3 L992.0 435.7 L992.8 435.5 L993.5 435.7 L994.2 436.3 L995.0 436.6 L995.8 436.2 L996.5 435.8 L997.2 435.4 L998.0 436.3 L998.8 436.3 L999.5 436.6 L1000.2 436.2 L1001.0 436.2 L1001.8 436.6 L1002.5 436.3 L1003.2 435.4 L1004.0 436.7 L1004.8 436.6 L1005.5 436.5 L1006.2 435.4 L1007.0 436.5 L1007.8 435.4 L1008.5 435.2 L1009.2 435.3 L1010.0 435.4 L1010.8 436.6 L1011.5 436.1 L1012.2 435.4 L1013.0 436.6 L1013.8 435.9 L1014.5 435.3 L1015.2 435.2 L1016.0 436.4 L1016.8 436.9 L1017.5 437.1 L1018.2 436.5 L1019.0 436.0 L1019.8 436.6 L1020.5 435.5 L1021.2 435.9 L1022.0 435.9 L1022.8 435.5 L1023.5 436.5 L1024.2 435.9 L1025.0 436.5 L1025.8 436.7 L1026.5 437.0 L1027.2 435.7 L1028.0 435.5 L1028.8 437.2 L1029.5 435.9 L1030.2 437.2 L1031.0 436.5 L1031.8 436.7 L1032.5 435.6 L1033.2 436.5 L1034.0 436.3 L1034.8 436.6 L1035.5 436.9 L1036.2 436.9 L1037.0 437.2 L1037.8 437.3 L1038.5 436.3 L1039.2 436.0 L1040.0 436.1 L1040.8 436.9 L1041.5 435.5 L1042.2 437.3 L1043.0 436.6 L1043.8 436.8 L1044.5 437.1 L1045.2 435.6 L1046.0 436.1 L1046.8 437.2 L1047.5 437.7 L1048.2 437.6 L1049.0 439.1 L1049.8 440.0 L1050.5 440.3 L1051.2 440.3 L1052.0 440.0 L1052.8 440.3 L1053.5 440.0 L1054.2 440.5 L1055.0 440.0 L1055.8 440.0 L1056.5 440.2 L1057.2 439.6 L1058.0 439.6 L1058.8 439.8 L1059.5 440.1 L1060.2 440.3 L1061.0 439.8 L1061.8 440.2 L1062.5 440.3 L1063.2 439.9 L1064.0 440.3 L1064.8 439.8 L1065.5 439.6 L1066.2 440.4 L1067.0 439.8 L1067.8 440.2 L1068.5 440.1 L1069.2 439.6 L1070.0 439.4 L1070.8 440.1 L1071.5 439.6 L1072.2 440.0 L1073.0 439.4 L1073.8 440.2 L1074.5 439.6 L1075.2 440.3 L1076.0 439.7 L1076.8 439.5 L1077.5 439.3 L1078.2 439.5 L1079.0 439.7 L1079.8 439.9 L1080.5 439.6 L1081.2 439.6 L1082.0 439.7 L1082.8 439.6 L1083.5 439.5 L1084.2 439.3 L1085.0 439.7 L1085.8 439.4 L1086.5 439.6 L1087.2 440.0 L1088.0 439.5 L1088.8 440.0 L1089.5 439.5 L1090.2 439.5 L1091.0 439.5 L1091.8 439.5 L1092.5 439.7 L1093.2 439.9 L1094.0 440.2 L1094.8 439.8 L1095.5 439.6 L1096.2 440.1 L1097.0 440.3 L1097.8 439.7 L1098.5 439.6 L1099.2 440.3 L1100.0 440.4 L1100.8 440.4 L1101.5 440.0 L1102.2 439.7 L1103.0 440.3 L1103.8 439.8 L1104.5 440.6 L1105.2 440.1 L1106.0 438.6 L1106.8 437.1 L1107.5 436.5 L1108.2 435.3 L1109.0 436.0 L1109.8 436.0 L1110.5 435.6 L1111.2 436.7 L1112.0 436.3 L1112.8 436.0 L1113.5 435.3 L1114.2 436.3 L1115.0 436.1 L1115.8 434.5 L1116.5 435.2 L1117.2 435.7 L1118.0 434.9 L1118.8 435.1 L1119.5 434.8 L1120.2 435.4 L1121.0 435.2 L1121.8 436.3 L1122.5 435.6 L1123.2 435.7 L1124.0 435.9 L1124.8 435.7 L1125.5 434.5 L1126.2 436.0 L1127.0 436.2 L1127.8 435.7 L1128.5 436.0 L1129.2 436.3 L1130.0 434.4 L1130.8 435.2 L1131.5 436.3 L1132.2 435.2 L1133.0 435.9 L1133.8 435.2 L1134.5 434.2 L1135.2 434.1 L1136.0 435.4 L1136.8 434.5 L1137.5 435.1 L1138.2 436.0 L1139.0 435.3 L1139.8 434.4 L1140.5 434.4 L1141.2 434.5 L1142.0 433.9 L1142.8 435.3 L1143.5 434.5 L1144.2 434.3 L1145.0 434.0 L1145.8 434.1 L1146.5 434.1 L1147.2 435.3 L1148.0 435.2 L1148.8 434.6 L1149.5 435.7 L1150.2 435.3 L1151.0 435.2 L1151.8 435.5 L1152.5 435.6 L1153.2 434.5 L1154.0 435.3 L1154.8 435.9 L1155.5 434.2 L1156.2 433.9 L1157.0 435.5 L1157.8 434.5 L1158.5 435.8 L1159.2 435.5 L1160.0 435.7 L1160.8 434.6 L1161.5 434.8 L1162.2 434.2 L1163.0 434.5 L1163.8 434.3 L1164.5 434.0 L1165.2 434.7 L1166.0 435.5 L1166.8 435.7 L1167.5 434.1 L1168.2 434.2 L1169.0 434.6 L1169.8 433.9 L1170.5 434.2 L1171.2 435.2 L1172.0 435.7 L1172.8 435.1 L1173.5 434.0 L1174.2 434.1 L1175.0 436.1 L1175.8 436.1 L1176.5 435.1 L1177.2 434.0 L1178.0 434.1 L1178.8 434.2 L1179.5 435.9 L1180.2 435.6 L1181.0 434.3 L1181.8 435.1 L1182.5 435.4 L1183.2 433.9 L1184.0 436.1 L1184.8 435.0 L1185.5 434.1 L1186.2 434.5 L1187.0 434.1 L1187.8 435.5 L1188.5 434.9 L1189.2 433.9 L1190.0 435.8 L1190.8 435.2 L1191.5 433.9 L1192.2 435.8 L1193.0 434.4 L1193.8 434.5 L1194.5 435.6 L1195.2 433.9 L1196.0 434.4 L1196.8 435.9 L1197.5 433.9 L1198.2 434.2 L1199.0 435.1 L1199.8 436.1 L1200.5 434.4 L1201.2 434.9 L1202.0 434.5 L1202.8 436.0 L1203.5 435.1 L1204.2 434.4 L1205.0 434.5 L1205.8 435.8 L1206.5 435.4 L1207.2 435.2 L1208.0 435.2 L1208.8 434.0 L1209.5 434.1 L1210.2 436.2 L1211.0 434.8 L1211.8 435.9 L1212.5 434.3 L1213.2 435.0 L1214.0 434.2 L1214.8 434.2 L1215.5 434.1 L1216.2 435.8 L1217.0 436.1 L1217.8 434.5 L1218.5 435.2 L1219.2 434.5 L1220.0 435.2 L1220.8 435.3 L1221.5 434.6 L1222.2 435.4 L1223.0 435.1 L1223.8 435.4 L1224.5 434.7 L1225.2 436.1 L1226.0 435.2 L1226.8 435.0 L1227.5 434.7 L1228.2 434.2 L1229.0 435.4 L1229.8 434.1 L1230.5 434.7 L1231.2 435.4 L1232.0 435.0 L1232.8 435.5 L1233.5 434.8 L1234.2 436.2 L1235.0 434.3 L1235.8 435.5 L1236.5 436.3 L1237.2 436.1 L1238.0 435.5 L1238.8 435.7 L1239.5 434.4 L1240.2 435.5 L1241.0 434.3 L1241.8 435.7 L1242.5 435.5 L1243.2 434.2 L1244.0 434.4 L1244.8 434.2 L1245.5 436.1 L1246.2 436.2 L1247.0 434.8 L1247.8 435.6 L1248.5 436.1 L1249.2 436.1 L1250.0 435.6 L1250.8 435.6 L1251.5 434.9 L1252.2 434.1 L1253.0 436.0 L1253.8 434.6 L1254.5 435.0 L1255.2 434.4 L1256.0 434.2 L1256.8 434.3 L1257.5 436.1 L1258.2 434.7 L1259.0 434.7 L1259.8 435.5 L1260.5 436.3 L1261.2 434.7 L1262.0 435.0 L1262.8 434.7 L1263.5 434.7 L1264.2 434.8 L1265.0 436.3 L1265.8 434.3 L1266.5 434.3 L1267.2 435.6 L1268.0 434.7 L1268.8 434.3 L1269.5 435.4 L1270.2 435.7 L1271.0 435.4 L1271.8 435.3 L1272.5 436.4 L1273.2 436.1 L1274.0 435.9 L1274.8 437.2 L1275.5 436.6 L1276.2 438.1 L1277.0 437.6 L1277.8 437.6 L1278.5 438.5 L1279.2 438.9 L1280.0 439.2 L1280.8 439.3 L1281.5 439.6 L1282.2 439.9 L1283.0 440.4 L1283.8 440.4 L1284.5 441.0 L1285.2 441.3 L1286.0 441.4 L1286.8 441.5 L1287.5 442.2 L1288.2 442.3 L1289.0 441.9 L1289.8 441.8 L1290.5 441.9 L1291.2 441.2 L1292.0 441.5 L1292.8 441.1 L1293.5 441.2 L1294.2 440.5 L1295.0 440.8 L1295.8 440.5 L1296.5 440.4 L1297.2 440.4 L1298.0 440.8 L1298.8 440.8 L1299.5 440.5 L1300.2 440.6 L1301.0 440.4 L1301.8 441.0 L1302.5 441.0 L1303.2 441.0 L1304.0 440.3 L1304.8 440.9 L1305.5 440.4 L1306.2 440.6 L1307.0 440.2 L1307.8 440.4 L1308.5 440.3 L1309.2 440.9 L1310.0 440.2 L1310.8 440.7 L1311.5 441.0 L1312.2 440.2 L1313.0 440.8 L1313.8 440.4 L1314.5 441.0 L1315.2 440.6 L1316.0 440.6 L1316.8 440.6 L1317.5 440.2 L1318.2 440.7 L1319.0 440.1 L1319.8 440.8 L1320.5 440.1 L1321.2 440.7 L1322.0 440.3 L1322.8 440.1 L1323.5 440.3 L1324.2 440.2 L1325.0 440.9 L1325.8 440.0 L1326.5 440.9 L1327.2 440.3 L1328.0 440.2 L1328.8 440.2 L1329.5 440.2 L1330.2 440.4 L1331.0 440.0 L1331.8 440.7 L1332.5 440.1 L1333.2 440.1 L1334.0 440.7 L1334.8 440.5 L1335.5 440.5 L1336.2 440.7 L1337.0 440.1 L1337.8 440.1 L1338.5 440.2 L1339.2 440.8 L1340.0 440.2 L1340.8 440.0 L1341.5 440.2 L1342.2 440.0 L1343.0 439.9 L1343.8 440.2 L1344.5 440.1 L1345.2 440.6 L1346.0 440.1 L1346.8 440.5 L1347.5 440.6 L1348.2 440.5 L1349.0 440.5 L1349.8 440.8 L1350.5 440.7 L1351.2 440.5 L1352.0 440.6 L1352.8 440.8 L1353.5 440.1 L1354.2 440.0 L1355.0 440.5 L1355.8 440.1 L1356.5 440.0 L1357.2 440.8 L1358.0 440.2 L1358.8 440.2 L1359.5 440.6 L1360.2 439.9 L1361.0 440.0 L1361.8 440.2 L1362.5 440.2 L1363.2 439.9 L1364.0 440.7 L1364.8 439.9 L1365.5 440.2 L1366.2 440.4 L1367.0 440.5 L1367.8 440.2 L1368.5 440.6 L1369.2 439.9 L1370.0 440.3 L1370.8 439.8 L1371.5 439.8 L1372.2 439.9 L1373.0 440.6 L1373.8 440.5 L1374.5 440.1 L1375.2 439.8 L1376.0 440.1 L1376.8 440.3 L1377.5 439.9 L1378.2 440.2 L1379.0 440.1 L1379.8 440.2 L1380.5 439.7 L1381.2 440.1 L1382.0 440.6 L1382.8 440.0 L1383.5 440.3 L1384.2 440.5 L1385.0 440.2 L1385.8 440.4 L1386.5 439.7 L1387.2 440.4 L1388.0 440.1 L1388.8 440.6 L1389.5 440.3 L1390.2 440.0 L1391.0 440.1 L1391.8 440.0 L1392.5 440.0 L1393.2 440.0 L1394.0 440.4 L1394.8 439.7 L1395.5 439.9 L1396.2 440.6 L1397.0 439.7 L1397.8 440.4 L1398.5 440.2 L1399.2 439.9 L1400.0 439.7 L1400.8 440.4 L1401.5 440.3 L1402.2 440.0 L1403.0 439.9 L1403.8 440.1 L1404.5 439.8 L1405.2 439.5 L1406.0 440.5 L1406.8 440.1 L1407.5 439.7 L1408.2 439.7 L1409.0 439.6 L1409.8 440.2 L1410.5 440.3 L1411.2 439.8 L1412.0 439.7 L1412.8 439.7 L1413.5 440.0 L1414.2 440.4 L1415.0 439.8 L1415.8 440.2 L1416.5 440.5 L1417.2 440.5 L1418.0 440.1 L1418.8 440.1 L1419.5 439.9 L1420.2 440.0 L1421.0 439.9 L1421.8 439.8 L1422.5 440.3 L1423.2 439.6 L1424.0 439.8 L1424.8 439.6 L1425.5 439.9 L1426.2 439.9 L1427.0 439.6 L1427.8 439.8 L1428.5 440.2 L1429.2 439.5 L1430.0 440.2 L1430.8 440.1 L1431.5 439.6 L1432.2 439.9 L1433.0 440.3 L1433.8 439.5 L1434.5 439.8 L1435.2 440.4 L1436.0 440.0 L1436.8 440.0 L1437.5 440.1 L1438.2 439.6 L1439.0 440.2 L1439.8 440.3 L1440.5 439.5 L1441.2 439.8 L1442.0 439.9 L1442.8 439.4 L1443.5 439.6 L1444.2 439.5 L1445.0 440.0 L1445.8 440.0 L1446.5 440.0 L1447.2 439.9 L1448.0 439.7 L1448.8 440.1 L1449.5 439.7 L1450.2 439.3 L1451.0 439.5 L1451.8 440.3 L1452.5 439.8 L1453.2 439.6 L1454.0 440.3 L1454.8 439.2 L1455.5 439.5 L1456.2 439.7 L1457.0 439.7 L1457.8 439.6 L1458.5 439.9 L1459.2 439.7 L1460.0 443.8 L1460.0 444.6 L1459.2 448.7 L1458.5 448.5 L1457.8 448.8 L1457.0 448.7 L1456.2 448.7 L1455.5 448.9 L1454.8 449.2 L1454.0 448.1 L1453.2 448.8 L1452.5 448.6 L1451.8 448.1 L1451.0 448.9 L1450.2 449.1 L1449.5 448.7 L1448.8 448.3 L1448.0 448.7 L1447.2 448.5 L1446.5 448.4 L1445.8 448.4 L1445.0 448.4 L1444.2 448.9 L1443.5 448.8 L1442.8 449.0 L1442.0 448.5 L1441.2 448.6 L1440.5 448.9 L1439.8 448.1 L1439.0 448.2 L1438.2 448.8 L1437.5 448.3 L1436.8 448.4 L1436.0 448.4 L1435.2 448.0 L1434.5 448.6 L1433.8 448.9 L1433.0 448.1 L1432.2 448.5 L1431.5 448.8 L1430.8 448.3 L1430.0 448.2 L1429.2 448.9 L1428.5 448.2 L1427.8 448.6 L1427.0 448.8 L1426.2 448.5 L1425.5 448.5 L1424.8 448.8 L1424.0 448.6 L1423.2 448.8 L1422.5 448.1 L1421.8 448.6 L1421.0 448.5 L1420.2 448.4 L1419.5 448.5 L1418.8 448.3 L1418.0 448.3 L1417.2 447.9 L1416.5 447.9 L1415.8 448.2 L1415.0 448.6 L1414.2 448.0 L1413.5 448.4 L1412.8 448.7 L1412.0 448.7 L1411.2 448.6 L1410.5 448.1 L1409.8 448.2 L1409.0 448.8 L1408.2 448.7 L1407.5 448.7 L1406.8 448.3 L1406.0 447.9 L1405.2 448.9 L1404.5 448.6 L1403.8 448.3 L1403.0 448.5 L1402.2 448.4 L1401.5 448.1 L1400.8 448.0 L1400.0 448.7 L1399.2 448.5 L1398.5 448.2 L1397.8 448.0 L1397.0 448.7 L1396.2 447.8 L1395.5 448.5 L1394.8 448.7 L1394.0 448.0 L1393.2 448.4 L1392.5 448.4 L1391.8 448.4 L1391.0 448.3 L1390.2 448.4 L1389.5 448.1 L1388.8 447.8 L1388.0 448.3 L1387.2 448.0 L1386.5 448.7 L1385.8 448.0 L1385.0 448.2 L1384.2 447.9 L1383.5 448.1 L1382.8 448.4 L1382.0 447.8 L1381.2 448.3 L1380.5 448.7 L1379.8 448.2 L1379.0 448.3 L1378.2 448.2 L1377.5 448.5 L1376.8 448.1 L1376.0 448.3 L1375.2 448.6 L1374.5 448.3 L1373.8 447.9 L1373.0 447.8 L1372.2 448.5 L1371.5 448.6 L1370.8 448.6 L1370.0 448.1 L1369.2 448.5 L1368.5 447.8 L1367.8 448.2 L1367.0 447.9 L1366.2 448.0 L1365.5 448.2 L1364.8 448.5 L1364.0 447.7 L1363.2 448.5 L1362.5 448.2 L1361.8 448.2 L1361.0 448.4 L1360.2 448.5 L1359.5 447.8 L1358.8 448.2 L1358.0 448.2 L1357.2 447.6 L1356.5 448.4 L1355.8 448.3 L1355.0 447.9 L1354.2 448.4 L1353.5 448.3 L1352.8 447.6 L1352.0 447.8 L1351.2 447.9 L1350.5 447.7 L1349.8 447.6 L1349.0 447.9 L1348.2 447.9 L1347.5 447.8 L1346.8 447.9 L1346.0 448.3 L1345.2 447.8 L1344.5 448.3 L1343.8 448.2 L1343.0 448.5 L1342.2 448.4 L1341.5 448.2 L1340.8 448.4 L1340.0 448.2 L1339.2 447.6 L1338.5 448.2 L1337.8 448.3 L1337.0 448.3 L1336.2 447.7 L1335.5 447.9 L1334.8 447.9 L1334.0 447.7 L1333.2 448.3 L1332.5 448.3 L1331.8 447.7 L1331.0 448.4 L1330.2 448.0 L1329.5 448.2 L1328.8 448.2 L1328.0 448.2 L1327.2 448.1 L1326.5 447.5 L1325.8 448.4 L1325.0 447.5 L1324.2 448.2 L1323.5 448.1 L1322.8 448.3 L1322.0 448.1 L1321.2 447.7 L1320.5 448.3 L1319.8 447.6 L1319.0 448.3 L1318.2 447.7 L1317.5 448.2 L1316.8 447.8 L1316.0 447.8 L1315.2 447.8 L1314.5 447.4 L1313.8 448.0 L1313.0 447.6 L1312.2 448.2 L1311.5 447.4 L1310.8 447.7 L1310.0 448.2 L1309.2 447.5 L1308.5 448.1 L1307.8 448.0 L1307.0 448.2 L1306.2 447.8 L1305.5 448.0 L1304.8 447.5 L1304.0 448.1 L1303.2 447.4 L1302.5 447.4 L1301.8 447.4 L1301.0 448.0 L1300.2 447.8 L1299.5 447.9 L1298.8 447.6 L1298.0 447.6 L1297.2 448.0 L1296.5 448.0 L1295.8 447.9 L1295.0 447.6 L1294.2 447.9 L1293.5 447.2 L1292.8 447.3 L1292.0 446.9 L1291.2 447.2 L1290.5 446.5 L1289.8 446.6 L1289.0 446.5 L1288.2 446.1 L1287.5 446.2 L1286.8 446.9 L1286.0 447.0 L1285.2 447.1 L1284.5 447.4 L1283.8 448.0 L1283.0 448.0 L1282.2 448.5 L1281.5 448.8 L1280.8 449.1 L1280.0 449.2 L1279.2 449.5 L1278.5 449.9 L1277.8 450.8 L1277.0 450.8 L1276.2 450.3 L1275.5 451.8 L1274.8 451.2 L1274.0 452.5 L1273.2 452.3 L1272.5 452.0 L1271.8 453.1 L1271.0 453.0 L1270.2 452.7 L1269.5 453.0 L1268.8 454.1 L1268.0 453.7 L1267.2 452.8 L1266.5 454.1 L1265.8 454.1 L1265.0 452.1 L1264.2 453.6 L1263.5 453.7 L1262.8 453.7 L1262.0 453.4 L1261.2 453.7 L1260.5 452.1 L1259.8 452.9 L1259.0 453.7 L1258.2 453.7 L1257.5 452.3 L1256.8 454.1 L1256.0 454.2 L1255.2 454.0 L1254.5 453.4 L1253.8 453.8 L1253.0 452.4 L1252.2 454.3 L1251.5 453.5 L1250.8 452.8 L1250.0 452.8 L1249.2 452.3 L1248.5 452.3 L1247.8 452.8 L1247.0 453.6 L1246.2 452.2 L1245.5 452.3 L1244.8 454.2 L1244.0 454.0 L1243.2 454.2 L1242.5 452.9 L1241.8 452.7 L1241.0 454.1 L1240.2 452.9 L1239.5 454.0 L1238.8 452.7 L1238.0 452.9 L1237.2 452.3 L1236.5 452.1 L1235.8 452.9 L1235.0 454.1 L1234.2 452.2 L1233.5 453.6 L1232.8 452.9 L1232.0 453.4 L1231.2 453.0 L1230.5 453.7 L1229.8 454.3 L1229.0 453.0 L1228.2 454.2 L1227.5 453.7 L1226.8 453.4 L1226.0 453.2 L1225.2 452.3 L1224.5 453.7 L1223.8 453.0 L1223.0 453.3 L1222.2 453.0 L1221.5 453.8 L1220.8 453.1 L1220.0 453.2 L1219.2 453.9 L1218.5 453.2 L1217.8 453.9 L1217.0 452.3 L1216.2 452.6 L1215.5 454.3 L1214.8 454.2 L1214.0 454.2 L1213.2 453.4 L1212.5 454.1 L1211.8 452.5 L1211.0 453.6 L1210.2 452.2 L1209.5 454.3 L1208.8 454.4 L1208.0 453.2 L1207.2 453.2 L1206.5 453.0 L1205.8 452.6 L1205.0 453.9 L1204.2 454.0 L1203.5 453.3 L1202.8 452.4 L1202.0 453.9 L1201.2 453.5 L1200.5 454.0 L1199.8 452.3 L1199.0 453.3 L1198.2 454.2 L1197.5 454.5 L1196.8 452.5 L1196.0 454.0 L1195.2 454.5 L1194.5 452.8 L1193.8 453.9 L1193.0 454.0 L1192.2 452.6 L1191.5 454.5 L1190.8 453.2 L1190.0 452.6 L1189.2 454.5 L1188.5 453.5 L1187.8 452.9 L1187.0 454.3 L1186.2 453.9 L1185.5 454.3 L1184.8 453.4 L1184.0 452.3 L1183.2 454.5 L1182.5 453.0 L1181.8 453.3 L1181.0 454.1 L1180.2 452.8 L1179.5 452.5 L1178.8 454.2 L1178.0 454.3 L1177.2 454.4 L1176.5 453.3 L1175.8 452.3 L1175.0 452.3 L1174.2 454.3 L1173.5 454.4 L1172.8 453.3 L1172.0 452.7 L1171.2 453.2 L1170.5 454.2 L1169.8 454.5 L1169.0 453.8 L1168.2 454.2 L1167.5 454.3 L1166.8 452.7 L1166.0 452.9 L1165.2 453.7 L1164.5 454.4 L1163.8 454.1 L1163.0 453.9 L1162.2 454.2 L1161.5 453.6 L1160.8 453.8 L1160.0 452.7 L1159.2 452.9 L1158.5 452.6 L1157.8 453.9 L1157.0 452.9 L1156.2 454.5 L1155.5 454.2 L1154.8 452.5 L1154.0 453.1 L1153.2 453.9 L1152.5 452.8 L1151.8 452.9 L1151.0 453.2 L1150.2 453.1 L1149.5 452.7 L1148.8 453.8 L1148.0 453.2 L1147.2 453.1 L1146.5 454.3 L1145.8 454.3 L1145.0 454.4 L1144.2 454.1 L1143.5 453.9 L1142.8 453.1 L1142.0 454.5 L1141.2 453.9 L1140.5 454.0 L1139.8 454.0 L1139.0 453.1 L1138.2 452.4 L1137.5 453.3 L1136.8 453.9 L1136.0 453.0 L1135.2 454.3 L1134.5 454.2 L1133.8 453.2 L1133.0 452.5 L1132.2 453.2 L1131.5 452.1 L1130.8 453.2 L1130.0 454.0 L1129.2 452.1 L1128.5 452.4 L1127.8 452.7 L1127.0 452.2 L1126.2 452.4 L1125.5 453.9 L1124.8 452.7 L1124.0 452.5 L1123.2 452.7 L1122.5 452.8 L1121.8 452.1 L1121.0 453.2 L1120.2 453.0 L1119.5 453.6 L1118.8 453.3 L1118.0 453.5 L1117.2 452.7 L1116.5 453.2 L1115.8 453.9 L1115.0 452.3 L1114.2 452.1 L1113.5 453.1 L1112.8 452.4 L1112.0 452.1 L1111.2 451.7 L1110.5 452.8 L1109.8 452.4 L1109.0 452.4 L1108.2 453.1 L1107.5 451.9 L1106.8 451.3 L1106.0 449.8 L1105.2 448.3 L1104.5 447.8 L1103.8 448.6 L1103.0 448.1 L1102.2 448.7 L1101.5 448.4 L1100.8 448.0 L1100.0 448.0 L1099.2 448.1 L1098.5 448.8 L1097.8 448.7 L1097.0 448.1 L1096.2 448.3 L1095.5 448.8 L1094.8 448.6 L1094.0 448.2 L1093.2 448.5 L1092.5 448.7 L1091.8 448.9 L1091.0 448.9 L1090.2 448.9 L1089.5 448.9 L1088.8 448.4 L1088.0 448.9 L1087.2 448.4 L1086.5 448.8 L1085.8 449.0 L1085.0 448.7 L1084.2 449.1 L1083.5 448.9 L1082.8 448.8 L1082.0 448.7 L1081.2 448.8 L1080.5 448.8 L1079.8 448.5 L1079.0 448.7 L1078.2 448.9 L1077.5 449.1 L1076.8 448.9 L1076.0 448.7 L1075.2 448.1 L1074.5 448.8 L1073.8 448.2 L1073.0 449.0 L1072.2 448.4 L1071.5 448.8 L1070.8 448.3 L1070.0 449.0 L1069.2 448.8 L1068.5 448.3 L1067.8 448.2 L1067.0 448.6 L1066.2 448.0 L1065.5 448.8 L1064.8 448.6 L1064.0 448.1 L1063.2 448.5 L1062.5 448.1 L1061.8 448.2 L1061.0 448.6 L1060.2 448.1 L1059.5 448.3 L1058.8 448.6 L1058.0 448.8 L1057.2 448.8 L1056.5 448.2 L1055.8 448.4 L1055.0 448.4 L1054.2 447.9 L1053.5 448.4 L1052.8 448.1 L1052.0 448.4 L1051.2 448.1 L1050.5 448.1 L1049.8 448.4 L1049.0 449.3 L1048.2 450.8 L1047.5 450.7 L1046.8 451.2 L1046.0 452.3 L1045.2 452.8 L1044.5 451.3 L1043.8 451.6 L1043.0 451.8 L1042.2 451.1 L1041.5 452.9 L1040.8 451.5 L1040.0 452.3 L1039.2 452.4 L1038.5 452.1 L1037.8 451.1 L1037.0 451.2 L1036.2 451.5 L1035.5 451.5 L1034.8 451.8 L1034.0 452.1 L1033.2 451.9 L1032.5 452.8 L1031.8 451.7 L1031.0 451.9 L1030.2 451.2 L1029.5 452.5 L1028.8 451.2 L1028.0 452.9 L1027.2 452.7 L1026.5 451.4 L1025.8 451.7 L1025.0 451.9 L1024.2 452.5 L1023.5 451.9 L1022.8 452.9 L1022.0 452.5 L1021.2 452.5 L1020.5 452.9 L1019.8 451.8 L1019.0 452.4 L1018.2 451.9 L1017.5 451.3 L1016.8 451.5 L1016.0 452.0 L1015.2 453.2 L1014.5 453.1 L1013.8 452.5 L1013.0 451.8 L1012.2 453.0 L1011.5 452.3 L1010.8 451.8 L1010.0 453.0 L1009.2 453.1 L1008.5 453.2 L1007.8 453.0 L1007.0 451.9 L1006.2 453.0 L1005.5 451.9 L1004.8 451.8 L1004.0 451.7 L1003.2 453.0 L1002.5 452.1 L1001.8 451.8 L1001.0 452.2 L1000.2 452.2 L999.5 451.8 L998.8 452.1 L998.0 452.1 L997.2 453.0 L996.5 452.6 L995.8 452.2 L995.0 451.8 L994.2 452.1 L993.5 452.7 L992.8 452.9 L992.0 452.7 L991.2 451.1 L990.5 452.0 L989.8 452.7 L989.0 452.6 L988.2 451.9 L987.5 451.1 L986.8 451.1 L986.0 452.3 L985.2 451.6 L984.5 450.4 L983.8 449.8 L983.0 448.5 L982.2 448.3 L981.5 448.1 L980.8 448.3 L980.0 448.2 L979.2 448.9 L978.5 448.1 L977.8 448.5 L977.0 448.5 L976.2 448.9 L975.5 449.0 L974.8 448.7 L974.0 448.2 L973.2 448.6 L972.5 448.9 L971.8 448.7 L971.0 448.2 L970.2 448.8 L969.5 448.4 L968.8 448.8 L968.0 448.1 L967.2 448.1 L966.5 448.5 L965.8 447.9 L965.0 448.8 L964.2 448.2 L963.5 448.6 L962.8 448.4 L962.0 448.6 L961.2 448.0 L960.5 447.8 L959.8 448.6 L959.0 448.2 L958.2 448.8 L957.5 448.6 L956.8 448.9 L956.0 448.1 L955.2 448.3 L954.5 449.1 L953.8 448.2 L953.0 448.1 L952.2 448.3 L951.5 448.9 L950.8 448.5 L950.0 448.6 L949.2 448.7 L948.5 448.2 L947.8 449.2 L947.0 448.6 L946.2 448.6 L945.5 448.8 L944.8 448.8 L944.0 448.5 L943.2 448.5 L942.5 448.8 L941.8 449.3 L941.0 449.1 L940.2 449.2 L939.5 449.5 L938.8 448.7 L938.0 449.0 L937.2 448.6 L936.5 448.6 L935.8 448.6 L935.0 448.4 L934.2 448.5 L933.5 448.8 L932.8 448.8 L932.0 448.6 L931.2 448.5 L930.5 448.3 L929.8 448.4 L929.0 448.7 L928.2 448.9 L927.5 448.0 L926.8 448.0 L926.0 448.8 L925.2 448.7 L924.5 448.8 L923.8 448.7 L923.0 448.5 L922.2 448.5 L921.5 448.1 L920.8 447.8 L920.0 447.9 L919.2 448.4 L918.5 448.4 L917.8 447.7 L917.0 447.8 L916.2 447.9 L915.5 448.6 L914.8 448.7 L914.0 448.2 L913.2 448.8 L912.5 447.9 L911.8 448.6 L911.0 449.0 L910.2 448.5 L909.5 448.8 L908.8 449.0 L908.0 448.1 L907.2 449.1 L906.5 448.3 L905.8 448.3 L905.0 448.7 L904.2 448.8 L903.5 448.4 L902.8 448.3 L902.0 448.5 L901.2 449.0 L900.5 449.0 L899.8 449.2 L899.0 448.8 L898.2 448.9 L897.5 449.0 L896.8 449.2 L896.0 449.2 L895.2 449.0 L894.5 448.6 L893.8 449.0 L893.0 449.2 L892.2 448.9 L891.5 448.7 L890.8 448.3 L890.0 448.7 L889.2 448.8 L888.5 448.2 L887.8 448.1 L887.0 448.3 L886.2 448.8 L885.5 448.3 L884.8 447.9 L884.0 448.4 L883.2 448.9 L882.5 448.7 L881.8 448.1 L881.0 448.3 L880.2 448.2 L879.5 448.3 L878.8 448.6 L878.0 448.4 L877.2 447.9 L876.5 447.9 L875.8 448.5 L875.0 448.4 L874.2 448.1 L873.5 448.7 L872.8 448.9 L872.0 448.3 L871.2 448.5 L870.5 448.6 L869.8 448.0 L869.0 449.0 L868.2 448.2 L867.5 448.9 L866.8 448.5 L866.0 448.6 L865.2 448.2 L864.5 448.5 L863.8 449.0 L863.0 448.8 L862.2 448.6 L861.5 448.7 L860.8 448.7 L860.0 449.0 L859.2 448.5 L858.5 448.5 L857.8 448.6 L857.0 448.4 L856.2 448.7 L855.5 448.5 L854.8 448.5 L854.0 448.5 L853.2 449.0 L852.5 449.3 L851.8 448.9 L851.0 446.6 L850.2 446.6 L849.5 446.6 L848.8 446.8 L848.0 446.7 L847.2 446.8 L846.5 446.5 L845.8 446.6 L845.0 446.6 L844.2 446.6 L843.5 446.5 L842.8 446.9 L842.0 447.0 L841.2 446.5 L840.5 446.6 L839.8 447.0 L839.0 446.4 L838.2 446.4 L837.5 446.8 L836.8 446.7 L836.0 446.9 L835.2 446.8 L834.5 446.5 L833.8 446.7 L833.0 446.6 L832.2 446.3 L831.5 446.5 L830.8 446.4 L830.0 446.4 L829.2 446.7 L828.5 446.9 L827.8 446.7 L827.0 446.8 L826.2 447.2 L825.5 447.0 L824.8 447.1 L824.0 447.2 L823.2 447.0 L822.5 447.6 L821.8 447.6 L821.0 447.5 L820.2 447.3 L819.5 447.8 L818.8 444.6 L818.0 444.6Z" fill="#2f6b7d"/>
<path d="M741 502.6 H1460" stroke="#456f7c" stroke-width="0.9"/>
<path d="M758.0 502.2 L758.8 502.2 L759.5 502.0 L760.2 501.6 L761.0 502.0 L761.8 502.2 L762.5 502.2 L763.2 502.2 L764.0 502.2 L764.8 502.2 L765.5 502.2 L766.2 502.2 L767.0 502.2 L767.8 502.2 L768.5 501.9 L769.2 501.4 L770.0 502.0 L770.8 502.2 L771.5 502.2 L772.2 502.2 L773.0 502.2 L773.8 502.2 L774.5 502.2 L775.2 502.2 L776.0 502.2 L776.8 502.2 L777.5 502.2 L778.2 502.2 L779.0 502.2 L779.8 502.2 L780.5 502.2 L781.2 502.2 L782.0 502.2 L782.8 502.2 L783.5 502.2 L784.2 502.2 L785.0 502.2 L785.8 502.2 L786.5 502.2 L787.2 502.2 L788.0 502.2 L788.8 502.2 L789.5 502.2 L790.2 502.2 L791.0 502.2 L791.8 502.2 L792.5 502.2 L793.2 502.2 L794.0 502.2 L794.8 502.2 L795.5 502.2 L796.2 502.2 L797.0 502.2 L797.8 502.2 L798.5 502.2 L799.2 502.2 L800.0 502.2 L800.8 502.2 L801.5 502.2 L802.2 502.2 L803.0 501.5 L803.8 501.9 L804.5 502.2 L805.2 502.2 L806.0 502.2 L806.8 502.2 L807.5 502.2 L808.2 502.2 L809.0 501.4 L809.8 501.8 L810.5 502.2 L811.2 502.2 L812.0 502.2 L812.8 502.2 L813.5 502.2 L814.2 502.2 L815.0 502.2 L815.8 502.2 L816.5 502.2 L817.2 502.2 L818.0 502.2 L818.8 502.2 L819.5 502.2 L820.2 502.2 L821.0 502.2 L821.8 502.2 L822.5 502.2 L823.2 502.2 L824.0 502.2 L824.8 502.2 L825.5 502.2 L826.2 502.2 L827.0 502.2 L827.8 502.2 L828.5 502.2 L829.2 502.2 L830.0 502.2 L830.8 502.2 L831.5 502.2 L832.2 502.2 L833.0 502.2 L833.8 502.2 L834.5 502.2 L835.2 502.2 L836.0 502.2 L836.8 502.2 L837.5 502.2 L838.2 502.2 L839.0 502.2 L839.8 502.2 L840.5 502.2 L841.2 502.2 L842.0 502.2 L842.8 502.2 L843.5 502.2 L844.2 502.2 L845.0 502.2 L845.8 502.2 L846.5 502.2 L847.2 502.2 L848.0 502.2 L848.8 502.2 L849.5 502.2 L850.2 502.2 L851.0 502.2 L851.8 502.2 L852.5 502.2 L853.2 502.2 L854.0 502.2 L854.8 502.2 L855.5 502.2 L856.2 502.2 L857.0 502.2 L857.8 502.2 L858.5 502.2 L859.2 502.2 L860.0 502.2 L860.8 502.2 L861.5 502.2 L862.2 502.2 L863.0 502.2 L863.8 502.2 L864.5 502.2 L865.2 502.2 L866.0 502.2 L866.8 502.2 L867.5 502.2 L868.2 502.2 L869.0 502.2 L869.8 502.2 L870.5 502.2 L871.2 502.2 L872.0 502.2 L872.8 502.2 L873.5 502.2 L874.2 502.2 L875.0 502.2 L875.8 502.2 L876.5 502.2 L877.2 502.2 L878.0 502.2 L878.8 502.2 L879.5 502.2 L880.2 502.2 L881.0 502.2 L881.8 502.2 L882.5 502.2 L883.2 502.2 L884.0 502.2 L884.8 502.2 L885.5 502.2 L886.2 502.2 L887.0 502.2 L887.8 502.2 L888.5 502.2 L889.2 502.2 L890.0 502.2 L890.8 502.2 L891.5 501.8 L892.2 501.3 L893.0 501.6 L893.8 501.7 L894.5 502.0 L895.2 502.0 L896.0 501.8 L896.8 501.4 L897.5 501.2 L898.2 501.2 L899.0 501.3 L899.8 501.6 L900.5 501.6 L901.2 501.9 L902.0 502.1 L902.8 501.9 L903.5 501.7 L904.2 501.6 L905.0 501.5 L905.8 501.1 L906.5 501.2 L907.2 501.4 L908.0 501.4 L908.8 501.4 L909.5 501.6 L910.2 501.7 L911.0 501.9 L911.8 502.0 L912.5 502.0 L913.2 501.7 L914.0 501.8 L914.8 501.6 L915.5 501.4 L916.2 501.7 L917.0 502.0 L917.8 502.2 L918.5 502.2 L919.2 502.2 L920.0 502.2 L920.8 502.2 L921.5 502.2 L922.2 502.2 L923.0 502.2 L923.8 502.2 L924.5 502.2 L925.2 502.2 L926.0 502.2 L926.8 502.2 L927.5 502.2 L928.2 502.2 L929.0 502.2 L929.8 502.2 L930.5 502.2 L931.2 502.2 L932.0 502.2 L932.8 502.2 L933.5 502.2 L934.2 502.2 L935.0 502.2 L935.8 502.2 L936.5 502.2 L937.2 502.2 L938.0 502.2 L938.8 502.2 L939.5 502.2 L940.2 502.2 L941.0 502.2 L941.8 502.2 L942.5 502.2 L943.2 502.2 L944.0 502.2 L944.8 502.2 L945.5 502.2 L946.2 502.2 L947.0 502.2 L947.8 502.2 L948.5 501.9 L949.2 501.6 L950.0 501.3 L950.8 501.3 L951.5 501.2 L952.2 501.4 L953.0 501.3 L953.8 501.3 L954.5 501.3 L955.2 501.4 L956.0 501.4 L956.8 501.5 L957.5 501.6 L958.2 501.7 L959.0 501.7 L959.8 501.6 L960.5 501.5 L961.2 501.5 L962.0 501.6 L962.8 501.4 L963.5 501.4 L964.2 501.4 L965.0 501.5 L965.8 501.3 L966.5 501.3 L967.2 501.3 L968.0 501.5 L968.8 501.5 L969.5 501.3 L970.2 501.4 L971.0 501.3 L971.8 501.5 L972.5 501.4 L973.2 501.6 L974.0 501.6 L974.8 501.5 L975.5 501.5 L976.2 501.5 L977.0 501.3 L977.8 501.0 L978.5 501.0 L979.2 500.9 L980.0 500.5 L980.8 500.4 L981.5 500.2 L982.2 500.7 L983.0 500.8 L983.8 501.1 L984.5 501.2 L985.2 501.4 L986.0 501.6 L986.8 501.7 L987.5 501.7 L988.2 501.8 L989.0 501.7 L989.8 501.7 L990.5 501.8 L991.2 501.7 L992.0 501.8 L992.8 501.7 L993.5 501.8 L994.2 501.7 L995.0 501.8 L995.8 501.9 L996.5 501.9 L997.2 501.8 L998.0 501.8 L998.8 501.8 L999.5 501.8 L1000.2 501.8 L1001.0 501.8 L1001.8 501.9 L1002.5 501.8 L1003.2 501.8 L1004.0 501.8 L1004.8 501.9 L1005.5 501.7 L1006.2 501.7 L1007.0 501.8 L1007.8 501.8 L1008.5 501.9 L1009.2 501.9 L1010.0 501.8 L1010.8 501.7 L1011.5 501.8 L1012.2 501.8 L1013.0 501.7 L1013.8 501.8 L1014.5 501.8 L1015.2 501.8 L1016.0 501.8 L1016.8 501.8 L1017.5 501.9 L1018.2 501.8 L1019.0 501.9 L1019.8 501.8 L1020.5 501.8 L1021.2 501.9 L1022.0 501.9 L1022.8 501.8 L1023.5 501.8 L1024.2 501.8 L1025.0 501.8 L1025.8 501.9 L1026.5 501.9 L1027.2 501.8 L1028.0 501.8 L1028.8 501.8 L1029.5 501.9 L1030.2 501.8 L1031.0 501.8 L1031.8 501.8 L1032.5 501.9 L1033.2 501.9 L1034.0 501.9 L1034.8 501.8 L1035.5 501.9 L1036.2 501.8 L1037.0 501.8 L1037.8 501.8 L1038.5 501.9 L1039.2 501.8 L1040.0 501.8 L1040.8 501.8 L1041.5 501.9 L1042.2 501.8 L1043.0 501.8 L1043.8 501.8 L1044.5 501.8 L1045.2 501.9 L1046.0 501.8 L1046.8 501.8 L1047.5 501.8 L1048.2 501.8 L1049.0 501.9 L1049.8 501.9 L1050.5 501.9 L1051.2 501.8 L1052.0 501.8 L1052.8 501.9 L1053.5 501.8 L1054.2 501.8 L1055.0 501.9 L1055.8 501.8 L1056.5 501.9 L1057.2 501.8 L1058.0 501.9 L1058.8 501.9 L1059.5 501.8 L1060.2 501.8 L1061.0 501.8 L1061.8 501.9 L1062.5 501.8 L1063.2 501.9 L1064.0 501.9 L1064.8 501.9 L1065.5 501.9 L1066.2 501.9 L1067.0 501.8 L1067.8 501.8 L1068.5 501.8 L1069.2 501.9 L1070.0 501.9 L1070.8 501.9 L1071.5 501.8 L1072.2 501.9 L1073.0 501.9 L1073.8 501.9 L1074.5 501.8 L1075.2 501.8 L1076.0 501.8 L1076.8 501.9 L1077.5 501.8 L1078.2 501.9 L1079.0 501.9 L1079.8 501.9 L1080.5 501.9 L1081.2 501.9 L1082.0 501.9 L1082.8 501.9 L1083.5 501.9 L1084.2 501.9 L1085.0 501.9 L1085.8 501.9 L1086.5 501.9 L1087.2 501.8 L1088.0 502.0 L1088.8 501.8 L1089.5 501.9 L1090.2 502.0 L1091.0 501.9 L1091.8 501.9 L1092.5 502.0 L1093.2 501.8 L1094.0 501.8 L1094.8 501.8 L1095.5 501.9 L1096.2 501.8 L1097.0 501.8 L1097.8 501.9 L1098.5 501.8 L1099.2 501.7 L1100.0 501.4 L1100.8 501.3 L1101.5 501.1 L1102.2 501.1 L1103.0 501.1 L1103.8 500.9 L1104.5 500.7 L1105.2 500.4 L1106.0 500.3 L1106.8 500.2 L1107.5 500.1 L1108.2 500.4 L1109.0 500.3 L1109.8 500.2 L1110.5 500.6 L1111.2 500.2 L1112.0 500.3 L1112.8 500.4 L1113.5 500.2 L1114.2 500.3 L1115.0 500.3 L1115.8 500.2 L1116.5 500.6 L1117.2 501.0 L1118.0 501.0 L1118.8 501.3 L1119.5 501.6 L1120.2 499.7 L1121.0 494.9 L1121.8 496.1 L1122.5 495.9 L1123.2 494.9 L1124.0 494.5 L1124.8 494.8 L1125.5 494.9 L1126.2 494.5 L1127.0 495.3 L1127.8 495.6 L1128.5 494.4 L1129.2 495.2 L1130.0 494.6 L1130.8 494.9 L1131.5 494.9 L1132.2 495.4 L1133.0 495.4 L1133.8 495.1 L1134.5 494.3 L1135.2 495.8 L1136.0 495.0 L1136.8 495.5 L1137.5 495.5 L1138.2 494.5 L1139.0 495.2 L1139.8 495.6 L1140.5 495.2 L1141.2 494.7 L1142.0 494.9 L1142.8 494.9 L1143.5 494.9 L1144.2 494.5 L1145.0 494.9 L1145.8 496.7 L1146.5 496.8 L1147.2 497.5 L1148.0 497.3 L1148.8 497.8 L1149.5 497.7 L1150.2 497.2 L1151.0 497.7 L1151.8 497.2 L1152.5 497.4 L1153.2 498.0 L1154.0 497.7 L1154.8 497.8 L1155.5 497.3 L1156.2 498.0 L1157.0 498.3 L1157.8 497.4 L1158.5 498.0 L1159.2 497.9 L1160.0 497.7 L1160.8 497.6 L1161.5 498.3 L1162.2 497.4 L1163.0 498.0 L1163.8 497.6 L1164.5 498.4 L1165.2 497.6 L1166.0 498.3 L1166.8 497.8 L1167.5 498.5 L1168.2 497.6 L1169.0 498.1 L1169.8 498.2 L1170.5 498.5 L1171.2 498.2 L1172.0 498.1 L1172.8 498.0 L1173.5 497.7 L1174.2 497.8 L1175.0 498.4 L1175.8 497.7 L1176.5 498.1 L1177.2 498.1 L1178.0 497.9 L1178.8 497.8 L1179.5 498.1 L1180.2 497.9 L1181.0 498.2 L1181.8 498.4 L1182.5 498.6 L1183.2 498.2 L1184.0 498.0 L1184.8 498.2 L1185.5 498.9 L1186.2 498.8 L1187.0 498.4 L1187.8 498.2 L1188.5 498.3 L1189.2 498.4 L1190.0 498.2 L1190.8 498.7 L1191.5 498.8 L1192.2 498.4 L1193.0 498.6 L1193.8 498.3 L1194.5 498.7 L1195.2 498.9 L1196.0 499.1 L1196.8 498.9 L1197.5 498.6 L1198.2 498.6 L1199.0 498.5 L1199.8 498.9 L1200.5 498.8 L1201.2 498.8 L1202.0 499.3 L1202.8 499.3 L1203.5 499.2 L1204.2 499.2 L1205.0 499.0 L1205.8 498.8 L1206.5 498.8 L1207.2 499.2 L1208.0 499.0 L1208.8 499.4 L1209.5 498.9 L1210.2 499.6 L1211.0 499.1 L1211.8 499.1 L1212.5 499.1 L1213.2 499.7 L1214.0 499.3 L1214.8 499.3 L1215.5 499.5 L1216.2 499.6 L1217.0 499.6 L1217.8 499.6 L1218.5 499.6 L1219.2 500.2 L1220.0 499.9 L1220.8 500.1 L1221.5 500.0 L1222.2 500.3 L1223.0 500.0 L1223.8 500.4 L1224.5 500.5 L1225.2 500.6 L1226.0 500.7 L1226.8 500.8 L1227.5 500.8 L1228.2 500.6 L1229.0 501.0 L1229.8 500.9 L1230.5 500.9 L1231.2 501.1 L1232.0 501.1 L1232.8 501.2 L1233.5 501.2 L1234.2 501.2 L1235.0 501.3 L1235.8 501.5 L1236.5 501.6 L1237.2 501.4 L1238.0 501.5 L1238.8 501.6 L1239.5 501.5 L1240.2 501.5 L1241.0 501.5 L1241.8 501.6 L1242.5 501.6 L1243.2 501.5 L1244.0 501.6 L1244.8 501.6 L1245.5 501.4 L1246.2 501.4 L1247.0 501.6 L1247.8 501.4 L1248.5 501.5 L1249.2 501.5 L1250.0 501.4 L1250.8 501.6 L1251.5 501.5 L1252.2 501.6 L1253.0 501.5 L1253.8 501.5 L1254.5 501.6 L1255.2 501.4 L1256.0 501.4 L1256.8 501.4 L1257.5 501.5 L1258.2 501.4 L1259.0 501.6 L1259.8 501.5 L1260.5 501.5 L1261.2 501.4 L1262.0 501.5 L1262.8 501.4 L1263.5 501.6 L1264.2 501.5 L1265.0 501.6 L1265.8 501.5 L1266.5 501.4 L1267.2 501.6 L1268.0 501.5 L1268.8 501.5 L1269.5 501.5 L1270.2 501.4 L1271.0 501.4 L1271.8 501.6 L1272.5 501.5 L1273.2 501.4 L1274.0 501.4 L1274.8 501.4 L1275.5 501.5 L1276.2 501.5 L1277.0 501.6 L1277.8 501.4 L1278.5 501.4 L1279.2 501.3 L1280.0 501.4 L1280.8 501.4 L1281.5 501.4 L1282.2 501.5 L1283.0 501.4 L1283.8 501.4 L1284.5 501.4 L1285.2 501.5 L1286.0 501.4 L1286.8 501.5 L1287.5 501.4 L1288.2 501.5 L1289.0 501.3 L1289.8 501.5 L1290.5 501.4 L1291.2 501.5 L1292.0 501.4 L1292.8 501.5 L1293.5 501.5 L1294.2 501.4 L1295.0 501.4 L1295.8 501.5 L1296.5 501.4 L1297.2 501.5 L1298.0 501.4 L1298.8 501.4 L1299.5 501.5 L1300.2 501.4 L1301.0 501.4 L1301.8 501.4 L1302.5 501.5 L1303.2 501.3 L1304.0 501.5 L1304.8 501.3 L1305.5 501.3 L1306.2 501.5 L1307.0 501.4 L1307.8 501.4 L1308.5 501.6 L1309.2 501.5 L1310.0 501.4 L1310.8 501.5 L1311.5 501.4 L1312.2 501.6 L1313.0 501.5 L1313.8 501.5 L1314.5 501.4 L1315.2 501.4 L1316.0 501.5 L1316.8 501.4 L1317.5 501.5 L1318.2 501.5 L1319.0 501.5 L1319.8 501.5 L1320.5 501.5 L1321.2 501.6 L1322.0 501.4 L1322.8 501.5 L1323.5 501.4 L1324.2 501.5 L1325.0 501.4 L1325.8 501.5 L1326.5 501.4 L1327.2 501.3 L1328.0 501.5 L1328.8 501.4 L1329.5 501.5 L1330.2 501.5 L1331.0 501.4 L1331.8 501.3 L1332.5 501.4 L1333.2 501.5 L1334.0 501.5 L1334.8 501.4 L1335.5 501.4 L1336.2 501.5 L1337.0 501.4 L1337.8 501.4 L1338.5 501.4 L1339.2 501.5 L1340.0 501.6 L1340.8 501.4 L1341.5 501.6 L1342.2 501.3 L1343.0 501.6 L1343.8 501.5 L1344.5 501.5 L1345.2 501.4 L1346.0 501.4 L1346.8 501.5 L1347.5 501.5 L1348.2 501.4 L1349.0 501.5 L1349.8 501.3 L1350.5 501.5 L1351.2 501.5 L1352.0 501.5 L1352.8 501.5 L1353.5 501.4 L1354.2 501.4 L1355.0 501.4 L1355.8 501.5 L1356.5 501.5 L1357.2 501.4 L1358.0 501.4 L1358.8 501.5 L1359.5 501.4 L1360.2 501.5 L1361.0 501.4 L1361.8 501.5 L1362.5 501.4 L1363.2 501.4 L1364.0 501.5 L1364.8 501.4 L1365.5 501.4 L1366.2 501.5 L1367.0 501.5 L1367.8 501.4 L1368.5 501.5 L1369.2 501.4 L1370.0 501.5 L1370.8 501.5 L1371.5 501.4 L1372.2 501.5 L1373.0 501.5 L1373.8 501.5 L1374.5 501.6 L1375.2 501.4 L1376.0 501.4 L1376.8 501.6 L1377.5 501.5 L1378.2 501.5 L1379.0 501.4 L1379.8 501.5 L1380.5 501.6 L1381.2 501.6 L1382.0 501.6 L1382.8 501.5 L1383.5 501.5 L1384.2 501.4 L1385.0 501.4 L1385.8 501.5 L1386.5 501.5 L1387.2 501.4 L1388.0 501.6 L1388.8 501.4 L1389.5 501.4 L1390.2 501.4 L1391.0 501.5 L1391.8 501.6 L1392.5 501.5 L1393.2 501.4 L1394.0 501.5 L1394.8 501.4 L1395.5 501.6 L1396.2 501.4 L1397.0 501.4 L1397.8 501.4 L1398.5 501.6 L1399.2 501.6 L1400.0 501.4 L1400.8 501.4 L1401.5 501.5 L1402.2 501.6 L1403.0 501.6 L1403.8 501.5 L1404.5 501.4 L1405.2 501.5 L1406.0 501.4 L1406.8 501.4 L1407.5 501.5 L1408.2 501.6 L1409.0 501.6 L1409.8 501.5 L1410.5 501.6 L1411.2 501.5 L1412.0 501.5 L1412.8 501.5 L1413.5 501.5 L1414.2 501.4 L1415.0 501.5 L1415.8 501.6 L1416.5 501.5 L1417.2 501.6 L1418.0 501.5 L1418.8 501.6 L1419.5 501.5 L1420.2 501.5 L1421.0 501.4 L1421.8 501.4 L1422.5 501.4 L1423.2 501.4 L1424.0 501.4 L1424.8 501.5 L1425.5 501.5 L1426.2 501.4 L1427.0 501.4 L1427.8 501.5 L1428.5 501.5 L1429.2 501.5 L1430.0 501.5 L1430.8 501.6 L1431.5 501.4 L1432.2 501.5 L1433.0 501.6 L1433.8 501.4 L1434.5 501.5 L1435.2 501.4 L1436.0 501.4 L1436.8 501.4 L1437.5 501.4 L1438.2 501.6 L1439.0 501.5 L1439.8 501.4 L1440.5 501.6 L1441.2 501.6 L1442.0 501.6 L1442.8 501.6 L1443.5 501.5 L1444.2 501.4 L1445.0 501.4 L1445.8 501.5 L1446.5 501.4 L1447.2 501.6 L1448.0 501.4 L1448.8 501.5 L1449.5 501.4 L1450.2 501.5 L1451.0 501.4 L1451.8 501.6 L1452.5 501.5 L1453.2 501.4 L1454.0 501.6 L1454.8 501.6 L1455.5 501.4 L1456.2 501.4 L1457.0 501.5 L1457.8 501.4 L1458.5 501.5 L1459.2 501.6 L1460.0 502.2 L1460.0 503.0 L1459.2 503.6 L1458.5 503.7 L1457.8 503.8 L1457.0 503.7 L1456.2 503.8 L1455.5 503.8 L1454.8 503.6 L1454.0 503.6 L1453.2 503.8 L1452.5 503.7 L1451.8 503.6 L1451.0 503.8 L1450.2 503.7 L1449.5 503.8 L1448.8 503.7 L1448.0 503.8 L1447.2 503.6 L1446.5 503.8 L1445.8 503.7 L1445.0 503.8 L1444.2 503.8 L1443.5 503.7 L1442.8 503.6 L1442.0 503.6 L1441.2 503.6 L1440.5 503.6 L1439.8 503.8 L1439.0 503.7 L1438.2 503.6 L1437.5 503.8 L1436.8 503.8 L1436.0 503.8 L1435.2 503.8 L1434.5 503.7 L1433.8 503.8 L1433.0 503.6 L1432.2 503.7 L1431.5 503.8 L1430.8 503.6 L1430.0 503.7 L1429.2 503.7 L1428.5 503.7 L1427.8 503.7 L1427.0 503.8 L1426.2 503.8 L1425.5 503.7 L1424.8 503.7 L1424.0 503.8 L1423.2 503.8 L1422.5 503.8 L1421.8 503.8 L1421.0 503.8 L1420.2 503.7 L1419.5 503.7 L1418.8 503.6 L1418.0 503.7 L1417.2 503.6 L1416.5 503.7 L1415.8 503.6 L1415.0 503.7 L1414.2 503.8 L1413.5 503.7 L1412.8 503.7 L1412.0 503.7 L1411.2 503.7 L1410.5 503.6 L1409.8 503.7 L1409.0 503.6 L1408.2 503.6 L1407.5 503.7 L1406.8 503.8 L1406.0 503.8 L1405.2 503.7 L1404.5 503.8 L1403.8 503.7 L1403.0 503.6 L1402.2 503.6 L1401.5 503.7 L1400.8 503.8 L1400.0 503.8 L1399.2 503.6 L1398.5 503.6 L1397.8 503.8 L1397.0 503.8 L1396.2 503.8 L1395.5 503.6 L1394.8 503.8 L1394.0 503.7 L1393.2 503.8 L1392.5 503.7 L1391.8 503.6 L1391.0 503.7 L1390.2 503.8 L1389.5 503.8 L1388.8 503.8 L1388.0 503.6 L1387.2 503.8 L1386.5 503.7 L1385.8 503.7 L1385.0 503.8 L1384.2 503.8 L1383.5 503.7 L1382.8 503.7 L1382.0 503.6 L1381.2 503.6 L1380.5 503.6 L1379.8 503.7 L1379.0 503.8 L1378.2 503.7 L1377.5 503.7 L1376.8 503.6 L1376.0 503.8 L1375.2 503.8 L1374.5 503.6 L1373.8 503.7 L1373.0 503.7 L1372.2 503.7 L1371.5 503.8 L1370.8 503.7 L1370.0 503.7 L1369.2 503.8 L1368.5 503.7 L1367.8 503.8 L1367.0 503.7 L1366.2 503.7 L1365.5 503.8 L1364.8 503.8 L1364.0 503.7 L1363.2 503.8 L1362.5 503.8 L1361.8 503.7 L1361.0 503.8 L1360.2 503.7 L1359.5 503.8 L1358.8 503.7 L1358.0 503.8 L1357.2 503.8 L1356.5 503.7 L1355.8 503.7 L1355.0 503.8 L1354.2 503.8 L1353.5 503.8 L1352.8 503.7 L1352.0 503.7 L1351.2 503.7 L1350.5 503.7 L1349.8 503.9 L1349.0 503.7 L1348.2 503.8 L1347.5 503.7 L1346.8 503.7 L1346.0 503.8 L1345.2 503.8 L1344.5 503.7 L1343.8 503.7 L1343.0 503.6 L1342.2 503.9 L1341.5 503.6 L1340.8 503.8 L1340.0 503.6 L1339.2 503.7 L1338.5 503.8 L1337.8 503.8 L1337.0 503.8 L1336.2 503.7 L1335.5 503.8 L1334.8 503.8 L1334.0 503.7 L1333.2 503.7 L1332.5 503.8 L1331.8 503.9 L1331.0 503.8 L1330.2 503.7 L1329.5 503.7 L1328.8 503.8 L1328.0 503.7 L1327.2 503.9 L1326.5 503.8 L1325.8 503.7 L1325.0 503.8 L1324.2 503.7 L1323.5 503.8 L1322.8 503.7 L1322.0 503.8 L1321.2 503.6 L1320.5 503.7 L1319.8 503.7 L1319.0 503.7 L1318.2 503.7 L1317.5 503.7 L1316.8 503.8 L1316.0 503.7 L1315.2 503.8 L1314.5 503.8 L1313.8 503.7 L1313.0 503.7 L1312.2 503.6 L1311.5 503.8 L1310.8 503.7 L1310.0 503.8 L1309.2 503.7 L1308.5 503.6 L1307.8 503.8 L1307.0 503.8 L1306.2 503.7 L1305.5 503.9 L1304.8 503.9 L1304.0 503.7 L1303.2 503.9 L1302.5 503.7 L1301.8 503.8 L1301.0 503.8 L1300.2 503.8 L1299.5 503.7 L1298.8 503.8 L1298.0 503.8 L1297.2 503.7 L1296.5 503.8 L1295.8 503.7 L1295.0 503.8 L1294.2 503.8 L1293.5 503.7 L1292.8 503.7 L1292.0 503.8 L1291.2 503.7 L1290.5 503.8 L1289.8 503.7 L1289.0 503.9 L1288.2 503.7 L1287.5 503.8 L1286.8 503.7 L1286.0 503.8 L1285.2 503.7 L1284.5 503.8 L1283.8 503.8 L1283.0 503.8 L1282.2 503.7 L1281.5 503.8 L1280.8 503.8 L1280.0 503.8 L1279.2 503.9 L1278.5 503.8 L1277.8 503.8 L1277.0 503.6 L1276.2 503.7 L1275.5 503.7 L1274.8 503.8 L1274.0 503.8 L1273.2 503.8 L1272.5 503.7 L1271.8 503.6 L1271.0 503.8 L1270.2 503.8 L1269.5 503.7 L1268.8 503.7 L1268.0 503.7 L1267.2 503.6 L1266.5 503.8 L1265.8 503.7 L1265.0 503.6 L1264.2 503.7 L1263.5 503.6 L1262.8 503.8 L1262.0 503.7 L1261.2 503.8 L1260.5 503.7 L1259.8 503.7 L1259.0 503.6 L1258.2 503.8 L1257.5 503.7 L1256.8 503.8 L1256.0 503.8 L1255.2 503.8 L1254.5 503.6 L1253.8 503.7 L1253.0 503.7 L1252.2 503.6 L1251.5 503.7 L1250.8 503.6 L1250.0 503.8 L1249.2 503.7 L1248.5 503.7 L1247.8 503.8 L1247.0 503.6 L1246.2 503.8 L1245.5 503.8 L1244.8 503.6 L1244.0 503.6 L1243.2 503.7 L1242.5 503.6 L1241.8 503.6 L1241.0 503.7 L1240.2 503.7 L1239.5 503.7 L1238.8 503.6 L1238.0 503.7 L1237.2 503.8 L1236.5 503.6 L1235.8 503.7 L1235.0 503.9 L1234.2 504.0 L1233.5 504.0 L1232.8 504.0 L1232.0 504.1 L1231.2 504.1 L1230.5 504.3 L1229.8 504.3 L1229.0 504.2 L1228.2 504.6 L1227.5 504.4 L1226.8 504.4 L1226.0 504.5 L1225.2 504.6 L1224.5 504.7 L1223.8 504.8 L1223.0 505.2 L1222.2 504.9 L1221.5 505.2 L1220.8 505.1 L1220.0 505.3 L1219.2 505.0 L1218.5 505.6 L1217.8 505.6 L1217.0 505.6 L1216.2 505.6 L1215.5 505.7 L1214.8 505.9 L1214.0 505.9 L1213.2 505.5 L1212.5 506.1 L1211.8 506.1 L1211.0 506.1 L1210.2 505.6 L1209.5 506.3 L1208.8 505.8 L1208.0 506.2 L1207.2 506.0 L1206.5 506.4 L1205.8 506.4 L1205.0 506.2 L1204.2 506.0 L1203.5 506.0 L1202.8 505.9 L1202.0 505.9 L1201.2 506.4 L1200.5 506.4 L1199.8 506.3 L1199.0 506.7 L1198.2 506.6 L1197.5 506.6 L1196.8 506.3 L1196.0 506.1 L1195.2 506.3 L1194.5 506.5 L1193.8 506.9 L1193.0 506.6 L1192.2 506.8 L1191.5 506.4 L1190.8 506.5 L1190.0 507.0 L1189.2 506.8 L1188.5 506.9 L1187.8 507.0 L1187.0 506.8 L1186.2 506.4 L1185.5 506.3 L1184.8 507.0 L1184.0 507.2 L1183.2 507.0 L1182.5 506.6 L1181.8 506.8 L1181.0 507.0 L1180.2 507.3 L1179.5 507.1 L1178.8 507.4 L1178.0 507.3 L1177.2 507.1 L1176.5 507.1 L1175.8 507.5 L1175.0 506.8 L1174.2 507.4 L1173.5 507.5 L1172.8 507.2 L1172.0 507.1 L1171.2 507.0 L1170.5 506.7 L1169.8 507.0 L1169.0 507.1 L1168.2 507.6 L1167.5 506.7 L1166.8 507.4 L1166.0 506.9 L1165.2 507.6 L1164.5 506.8 L1163.8 507.6 L1163.0 507.2 L1162.2 507.8 L1161.5 506.9 L1160.8 507.6 L1160.0 507.5 L1159.2 507.3 L1158.5 507.2 L1157.8 507.8 L1157.0 506.9 L1156.2 507.2 L1155.5 507.9 L1154.8 507.4 L1154.0 507.5 L1153.2 507.2 L1152.5 507.8 L1151.8 508.0 L1151.0 507.5 L1150.2 508.0 L1149.5 507.5 L1148.8 507.4 L1148.0 507.9 L1147.2 507.7 L1146.5 508.4 L1145.8 508.5 L1145.0 510.3 L1144.2 510.7 L1143.5 510.3 L1142.8 510.3 L1142.0 510.3 L1141.2 510.5 L1140.5 510.0 L1139.8 509.6 L1139.0 510.0 L1138.2 510.7 L1137.5 509.7 L1136.8 509.7 L1136.0 510.2 L1135.2 509.4 L1134.5 510.9 L1133.8 510.1 L1133.0 509.8 L1132.2 509.8 L1131.5 510.3 L1130.8 510.3 L1130.0 510.6 L1129.2 510.0 L1128.5 510.8 L1127.8 509.6 L1127.0 509.9 L1126.2 510.7 L1125.5 510.3 L1124.8 510.4 L1124.0 510.7 L1123.2 510.3 L1122.5 509.3 L1121.8 509.1 L1121.0 510.3 L1120.2 505.5 L1119.5 503.6 L1118.8 503.9 L1118.0 504.2 L1117.2 504.2 L1116.5 504.6 L1115.8 505.0 L1115.0 504.9 L1114.2 504.9 L1113.5 505.0 L1112.8 504.8 L1112.0 504.9 L1111.2 505.0 L1110.5 504.6 L1109.8 505.0 L1109.0 504.9 L1108.2 504.8 L1107.5 505.1 L1106.8 505.0 L1106.0 504.9 L1105.2 504.8 L1104.5 504.5 L1103.8 504.3 L1103.0 504.1 L1102.2 504.1 L1101.5 504.1 L1100.8 503.9 L1100.0 503.8 L1099.2 503.5 L1098.5 503.4 L1097.8 503.3 L1097.0 503.4 L1096.2 503.4 L1095.5 503.3 L1094.8 503.4 L1094.0 503.4 L1093.2 503.4 L1092.5 503.2 L1091.8 503.3 L1091.0 503.3 L1090.2 503.2 L1089.5 503.3 L1088.8 503.4 L1088.0 503.2 L1087.2 503.4 L1086.5 503.3 L1085.8 503.3 L1085.0 503.3 L1084.2 503.3 L1083.5 503.3 L1082.8 503.3 L1082.0 503.3 L1081.2 503.3 L1080.5 503.3 L1079.8 503.3 L1079.0 503.3 L1078.2 503.3 L1077.5 503.4 L1076.8 503.3 L1076.0 503.4 L1075.2 503.4 L1074.5 503.4 L1073.8 503.3 L1073.0 503.3 L1072.2 503.3 L1071.5 503.4 L1070.8 503.3 L1070.0 503.3 L1069.2 503.3 L1068.5 503.4 L1067.8 503.4 L1067.0 503.4 L1066.2 503.3 L1065.5 503.3 L1064.8 503.3 L1064.0 503.3 L1063.2 503.3 L1062.5 503.4 L1061.8 503.3 L1061.0 503.4 L1060.2 503.4 L1059.5 503.4 L1058.8 503.3 L1058.0 503.3 L1057.2 503.4 L1056.5 503.3 L1055.8 503.4 L1055.0 503.3 L1054.2 503.4 L1053.5 503.4 L1052.8 503.3 L1052.0 503.4 L1051.2 503.4 L1050.5 503.3 L1049.8 503.3 L1049.0 503.3 L1048.2 503.4 L1047.5 503.4 L1046.8 503.4 L1046.0 503.4 L1045.2 503.3 L1044.5 503.4 L1043.8 503.4 L1043.0 503.4 L1042.2 503.4 L1041.5 503.3 L1040.8 503.4 L1040.0 503.4 L1039.2 503.4 L1038.5 503.3 L1037.8 503.4 L1037.0 503.4 L1036.2 503.4 L1035.5 503.3 L1034.8 503.4 L1034.0 503.3 L1033.2 503.3 L1032.5 503.3 L1031.8 503.4 L1031.0 503.4 L1030.2 503.4 L1029.5 503.3 L1028.8 503.4 L1028.0 503.4 L1027.2 503.4 L1026.5 503.3 L1025.8 503.3 L1025.0 503.4 L1024.2 503.4 L1023.5 503.4 L1022.8 503.4 L1022.0 503.3 L1021.2 503.3 L1020.5 503.4 L1019.8 503.4 L1019.0 503.3 L1018.2 503.4 L1017.5 503.3 L1016.8 503.4 L1016.0 503.4 L1015.2 503.4 L1014.5 503.4 L1013.8 503.4 L1013.0 503.5 L1012.2 503.4 L1011.5 503.4 L1010.8 503.5 L1010.0 503.4 L1009.2 503.3 L1008.5 503.3 L1007.8 503.4 L1007.0 503.4 L1006.2 503.5 L1005.5 503.5 L1004.8 503.3 L1004.0 503.4 L1003.2 503.4 L1002.5 503.4 L1001.8 503.3 L1001.0 503.4 L1000.2 503.4 L999.5 503.4 L998.8 503.4 L998.0 503.4 L997.2 503.4 L996.5 503.3 L995.8 503.3 L995.0 503.4 L994.2 503.5 L993.5 503.4 L992.8 503.5 L992.0 503.4 L991.2 503.5 L990.5 503.4 L989.8 503.5 L989.0 503.5 L988.2 503.4 L987.5 503.5 L986.8 503.5 L986.0 503.6 L985.2 503.8 L984.5 504.0 L983.8 504.1 L983.0 504.4 L982.2 504.5 L981.5 505.0 L980.8 504.8 L980.0 504.7 L979.2 504.3 L978.5 504.2 L977.8 504.2 L977.0 503.9 L976.2 503.7 L975.5 503.7 L974.8 503.7 L974.0 503.6 L973.2 503.6 L972.5 503.8 L971.8 503.7 L971.0 503.9 L970.2 503.8 L969.5 503.9 L968.8 503.7 L968.0 503.7 L967.2 503.9 L966.5 503.9 L965.8 503.9 L965.0 503.7 L964.2 503.8 L963.5 503.8 L962.8 503.8 L962.0 503.6 L961.2 503.7 L960.5 503.7 L959.8 503.6 L959.0 503.5 L958.2 503.5 L957.5 503.6 L956.8 503.7 L956.0 503.8 L955.2 503.8 L954.5 503.9 L953.8 503.9 L953.0 503.9 L952.2 503.8 L951.5 504.0 L950.8 503.9 L950.0 503.9 L949.2 503.6 L948.5 503.3 L947.8 503.0 L947.0 503.0 L946.2 503.0 L945.5 503.0 L944.8 503.0 L944.0 503.0 L943.2 503.0 L942.5 503.0 L941.8 503.0 L941.0 503.0 L940.2 503.0 L939.5 503.0 L938.8 503.0 L938.0 503.0 L937.2 503.0 L936.5 503.0 L935.8 503.0 L935.0 503.0 L934.2 503.0 L933.5 503.0 L932.8 503.0 L932.0 503.0 L931.2 503.0 L930.5 503.0 L929.8 503.0 L929.0 503.0 L928.2 503.0 L927.5 503.0 L926.8 503.0 L926.0 503.0 L925.2 503.0 L924.5 503.0 L923.8 503.0 L923.0 503.0 L922.2 503.0 L921.5 503.0 L920.8 503.0 L920.0 503.0 L919.2 503.0 L918.5 503.0 L917.8 503.0 L917.0 503.2 L916.2 503.5 L915.5 503.8 L914.8 503.6 L914.0 503.4 L913.2 503.5 L912.5 503.2 L911.8 503.2 L911.0 503.3 L910.2 503.5 L909.5 503.6 L908.8 503.8 L908.0 503.8 L907.2 503.8 L906.5 504.0 L905.8 504.1 L905.0 503.7 L904.2 503.6 L903.5 503.5 L902.8 503.3 L902.0 503.1 L901.2 503.3 L900.5 503.6 L899.8 503.6 L899.0 503.9 L898.2 504.0 L897.5 504.0 L896.8 503.8 L896.0 503.4 L895.2 503.2 L894.5 503.2 L893.8 503.5 L893.0 503.6 L892.2 503.9 L891.5 503.4 L890.8 503.0 L890.0 503.0 L889.2 503.0 L888.5 503.0 L887.8 503.0 L887.0 503.0 L886.2 503.0 L885.5 503.0 L884.8 503.0 L884.0 503.0 L883.2 503.0 L882.5 503.0 L881.8 503.0 L881.0 503.0 L880.2 503.0 L879.5 503.0 L878.8 503.0 L878.0 503.0 L877.2 503.0 L876.5 503.0 L875.8 503.0 L875.0 503.0 L874.2 503.0 L873.5 503.0 L872.8 503.0 L872.0 503.0 L871.2 503.0 L870.5 503.0 L869.8 503.0 L869.0 503.0 L868.2 503.0 L867.5 503.0 L866.8 503.0 L866.0 503.0 L865.2 503.0 L864.5 503.0 L863.8 503.0 L863.0 503.0 L862.2 503.0 L861.5 503.0 L860.8 503.0 L860.0 503.0 L859.2 503.0 L858.5 503.0 L857.8 503.0 L857.0 503.0 L856.2 503.0 L855.5 503.0 L854.8 503.0 L854.0 503.0 L853.2 503.0 L852.5 503.0 L851.8 503.0 L851.0 503.0 L850.2 503.0 L849.5 503.0 L848.8 503.0 L848.0 503.0 L847.2 503.0 L846.5 503.0 L845.8 503.0 L845.0 503.0 L844.2 503.0 L843.5 503.0 L842.8 503.0 L842.0 503.0 L841.2 503.0 L840.5 503.0 L839.8 503.0 L839.0 503.0 L838.2 503.0 L837.5 503.0 L836.8 503.0 L836.0 503.0 L835.2 503.0 L834.5 503.0 L833.8 503.0 L833.0 503.0 L832.2 503.0 L831.5 503.0 L830.8 503.0 L830.0 503.0 L829.2 503.0 L828.5 503.0 L827.8 503.0 L827.0 503.0 L826.2 503.0 L825.5 503.0 L824.8 503.0 L824.0 503.0 L823.2 503.0 L822.5 503.0 L821.8 503.0 L821.0 503.0 L820.2 503.0 L819.5 503.0 L818.8 503.0 L818.0 503.0 L817.2 503.0 L816.5 503.0 L815.8 503.0 L815.0 503.0 L814.2 503.0 L813.5 503.0 L812.8 503.0 L812.0 503.0 L811.2 503.0 L810.5 503.0 L809.8 503.4 L809.0 503.8 L808.2 503.0 L807.5 503.0 L806.8 503.0 L806.0 503.0 L805.2 503.0 L804.5 503.0 L803.8 503.3 L803.0 503.7 L802.2 503.0 L801.5 503.0 L800.8 503.0 L800.0 503.0 L799.2 503.0 L798.5 503.0 L797.8 503.0 L797.0 503.0 L796.2 503.0 L795.5 503.0 L794.8 503.0 L794.0 503.0 L793.2 503.0 L792.5 503.0 L791.8 503.0 L791.0 503.0 L790.2 503.0 L789.5 503.0 L788.8 503.0 L788.0 503.0 L787.2 503.0 L786.5 503.0 L785.8 503.0 L785.0 503.0 L784.2 503.0 L783.5 503.0 L782.8 503.0 L782.0 503.0 L781.2 503.0 L780.5 503.0 L779.8 503.0 L779.0 503.0 L778.2 503.0 L777.5 503.0 L776.8 503.0 L776.0 503.0 L775.2 503.0 L774.5 503.0 L773.8 503.0 L773.0 503.0 L772.2 503.0 L771.5 503.0 L770.8 503.0 L770.0 503.2 L769.2 503.8 L768.5 503.3 L767.8 503.0 L767.0 503.0 L766.2 503.0 L765.5 503.0 L764.8 503.0 L764.0 503.0 L763.2 503.0 L762.5 503.0 L761.8 503.0 L761.0 503.2 L760.2 503.6 L759.5 503.2 L758.8 503.0 L758.0 503.0Z" fill="#456f7c"/>
<path d="M741 561.0 H760" stroke="#587f7f" stroke-width="0.8"/>
<path d="M751.0 560.6 L751.8 560.6 L752.5 558.2 L753.2 558.1 L754.0 558.5 L754.8 558.0 L755.5 558.3 L756.2 558.2 L757.0 558.2 L757.8 558.1 L758.5 558.5 L759.2 558.5 L760.0 558.2 L760.8 558.3 L761.5 558.2 L762.2 558.5 L763.0 558.0 L763.8 558.7 L764.5 558.2 L765.2 558.5 L766.0 558.7 L766.8 558.2 L767.5 558.7 L768.2 558.6 L769.0 558.5 L769.8 558.6 L770.5 558.6 L771.2 558.7 L772.0 558.1 L772.8 558.7 L773.5 558.6 L774.2 558.7 L775.0 558.1 L775.8 558.3 L776.5 558.1 L777.2 558.0 L778.0 558.4 L778.8 558.5 L779.5 558.5 L780.2 558.6 L781.0 558.3 L781.8 558.0 L782.5 558.4 L783.2 558.2 L784.0 558.1 L784.8 558.1 L785.5 558.2 L786.2 558.3 L787.0 558.7 L787.8 558.5 L788.5 558.1 L789.2 558.4 L790.0 558.2 L790.8 558.6 L791.5 558.3 L792.2 558.6 L793.0 558.2 L793.8 558.1 L794.5 558.7 L795.2 558.3 L796.0 558.7 L796.8 558.0 L797.5 558.6 L798.2 558.7 L799.0 558.1 L799.8 558.3 L800.5 558.7 L801.2 558.4 L802.0 558.1 L802.8 558.6 L803.5 558.2 L804.2 558.5 L805.0 558.4 L805.8 558.4 L806.5 558.7 L807.2 558.4 L808.0 558.3 L808.8 558.2 L809.5 558.3 L810.2 558.6 L811.0 558.2 L811.8 558.5 L812.5 558.0 L813.2 558.6 L814.0 558.1 L814.8 558.6 L815.5 558.3 L816.2 558.4 L817.0 558.3 L817.8 558.2 L818.5 558.1 L819.2 558.7 L820.0 558.0 L820.8 558.2 L821.5 558.6 L822.2 558.1 L823.0 558.0 L823.8 558.4 L824.5 558.0 L825.2 558.5 L826.0 558.3 L826.8 558.5 L827.5 558.0 L828.2 558.4 L829.0 558.4 L829.8 557.9 L830.5 558.3 L831.2 558.3 L832.0 558.1 L832.8 558.5 L833.5 558.0 L834.2 558.1 L835.0 558.2 L835.8 558.0 L836.5 557.9 L837.2 558.5 L838.0 557.8 L838.8 558.2 L839.5 558.0 L840.2 558.0 L841.0 557.5 L841.8 557.5 L842.5 557.8 L843.2 557.7 L844.0 557.3 L844.8 557.2 L845.5 557.1 L846.2 556.5 L847.0 556.5 L847.8 556.5 L848.5 555.9 L849.2 556.6 L850.0 556.1 L850.8 556.0 L851.5 555.7 L852.2 555.3 L853.0 556.0 L853.8 557.1 L854.5 556.6 L855.2 557.1 L856.0 557.4 L856.8 557.5 L857.5 558.1 L858.2 557.7 L859.0 557.9 L859.8 557.8 L860.5 557.4 L861.2 557.8 L862.0 557.3 L862.8 556.4 L863.5 557.2 L864.2 556.8 L865.0 556.1 L865.8 556.7 L866.5 556.7 L867.2 556.6 L868.0 556.8 L868.8 557.5 L869.5 557.7 L870.2 558.2 L871.0 557.7 L871.8 558.4 L872.5 558.1 L873.2 558.3 L874.0 557.6 L874.8 557.7 L875.5 557.9 L876.2 557.3 L877.0 557.7 L877.8 557.2 L878.5 557.2 L879.2 556.5 L880.0 556.5 L880.8 557.1 L881.5 557.0 L882.2 557.0 L883.0 556.7 L883.8 557.3 L884.5 557.0 L885.2 557.8 L886.0 557.8 L886.8 557.3 L887.5 557.8 L888.2 558.2 L889.0 558.2 L889.8 558.1 L890.5 558.4 L891.2 558.1 L892.0 557.6 L892.8 558.4 L893.5 558.1 L894.2 558.1 L895.0 558.3 L895.8 557.6 L896.5 558.1 L897.2 558.2 L898.0 558.0 L898.8 558.3 L899.5 557.9 L900.2 558.2 L901.0 557.9 L901.8 558.2 L902.5 557.6 L903.2 557.9 L904.0 557.7 L904.8 558.1 L905.5 558.2 L906.2 558.0 L907.0 557.7 L907.8 558.1 L908.5 557.9 L909.2 557.1 L910.0 557.7 L910.8 557.8 L911.5 557.1 L912.2 557.6 L913.0 557.2 L913.8 557.2 L914.5 557.2 L915.2 557.6 L916.0 556.9 L916.8 557.2 L917.5 556.6 L918.2 556.4 L919.0 557.0 L919.8 556.4 L920.5 556.3 L921.2 557.3 L922.0 557.3 L922.8 556.7 L923.5 556.9 L924.2 557.7 L925.0 557.8 L925.8 557.3 L926.5 558.1 L927.2 558.1 L928.0 558.2 L928.8 558.2 L929.5 558.2 L930.2 558.5 L931.0 558.4 L931.8 557.7 L932.5 558.1 L933.2 558.1 L934.0 558.2 L934.8 557.5 L935.5 557.8 L936.2 557.9 L937.0 558.2 L937.8 557.6 L938.5 557.9 L939.2 557.3 L940.0 558.0 L940.8 557.6 L941.5 557.3 L942.2 557.4 L943.0 557.1 L943.8 557.0 L944.5 557.2 L945.2 557.8 L946.0 556.9 L946.8 557.3 L947.5 557.4 L948.2 557.4 L949.0 557.7 L949.8 557.5 L950.5 557.5 L951.2 557.5 L952.0 557.0 L952.8 557.7 L953.5 557.6 L954.2 557.3 L955.0 557.8 L955.8 557.2 L956.5 558.0 L957.2 557.6 L958.0 557.9 L958.8 558.1 L959.5 557.6 L960.2 557.7 L961.0 557.8 L961.8 558.0 L962.5 558.0 L963.2 558.3 L964.0 558.4 L964.8 558.0 L965.5 557.9 L966.2 558.2 L967.0 558.0 L967.8 558.0 L968.5 558.1 L969.2 558.3 L970.0 558.0 L970.8 558.2 L971.5 558.1 L972.2 557.8 L973.0 557.9 L973.8 557.8 L974.5 557.8 L975.2 557.9 L976.0 558.3 L976.8 557.7 L977.5 558.0 L978.2 557.4 L979.0 557.2 L979.8 555.5 L980.5 554.5 L981.2 553.3 L982.0 553.5 L982.8 553.4 L983.5 553.9 L984.2 553.1 L985.0 553.6 L985.8 554.6 L986.5 553.0 L987.2 554.4 L988.0 554.5 L988.8 554.3 L989.5 553.3 L990.2 553.7 L991.0 553.8 L991.8 554.4 L992.5 553.8 L993.2 553.2 L994.0 553.5 L994.8 553.9 L995.5 553.3 L996.2 554.3 L997.0 554.7 L997.8 553.3 L998.5 554.7 L999.2 554.8 L1000.0 553.2 L1000.8 553.8 L1001.5 554.8 L1002.2 554.2 L1003.0 554.5 L1003.8 553.7 L1004.5 553.9 L1005.2 553.0 L1006.0 554.8 L1006.8 553.6 L1007.5 553.4 L1008.2 554.5 L1009.0 553.1 L1009.8 552.8 L1010.5 553.5 L1011.2 553.3 L1012.0 553.0 L1012.8 552.7 L1013.5 553.9 L1014.2 554.2 L1015.0 554.4 L1015.8 553.9 L1016.5 553.2 L1017.2 552.7 L1018.0 553.5 L1018.8 553.4 L1019.5 553.3 L1020.2 554.6 L1021.0 554.6 L1021.8 554.7 L1022.5 553.0 L1023.2 553.0 L1024.0 554.3 L1024.8 553.0 L1025.5 554.4 L1026.2 553.9 L1027.0 553.8 L1027.8 552.7 L1028.5 553.7 L1029.2 554.7 L1030.0 552.8 L1030.8 553.0 L1031.5 552.9 L1032.2 552.8 L1033.0 554.7 L1033.8 554.6 L1034.5 554.5 L1035.2 553.8 L1036.0 554.4 L1036.8 554.6 L1037.5 553.6 L1038.2 553.0 L1039.0 554.0 L1039.8 554.4 L1040.5 553.1 L1041.2 553.5 L1042.0 553.8 L1042.8 554.7 L1043.5 553.5 L1044.2 554.9 L1045.0 553.7 L1045.8 553.3 L1046.5 553.3 L1047.2 553.5 L1048.0 554.9 L1048.8 553.5 L1049.5 554.4 L1050.2 554.8 L1051.0 553.7 L1051.8 553.9 L1052.5 553.8 L1053.2 554.3 L1054.0 556.0 L1054.8 555.5 L1055.5 556.5 L1056.2 556.7 L1057.0 557.5 L1057.8 557.3 L1058.5 557.0 L1059.2 556.9 L1060.0 556.4 L1060.8 557.4 L1061.5 557.0 L1062.2 557.4 L1063.0 556.7 L1063.8 556.9 L1064.5 556.8 L1065.2 556.8 L1066.0 556.9 L1066.8 556.8 L1067.5 556.9 L1068.2 557.2 L1069.0 557.1 L1069.8 557.0 L1070.5 557.0 L1071.2 557.3 L1072.0 557.0 L1072.8 557.3 L1073.5 557.1 L1074.2 556.7 L1075.0 557.4 L1075.8 557.0 L1076.5 556.5 L1077.2 557.5 L1078.0 556.7 L1078.8 556.7 L1079.5 557.5 L1080.2 557.4 L1081.0 556.4 L1081.8 556.7 L1082.5 557.0 L1083.2 556.9 L1084.0 557.4 L1084.8 556.5 L1085.5 556.9 L1086.2 556.9 L1087.0 556.5 L1087.8 557.1 L1088.5 556.6 L1089.2 557.5 L1090.0 556.5 L1090.8 557.1 L1091.5 557.5 L1092.2 556.6 L1093.0 557.0 L1093.8 556.9 L1094.5 557.0 L1095.2 557.4 L1096.0 556.5 L1096.8 556.9 L1097.5 556.5 L1098.2 557.5 L1099.0 556.7 L1099.8 556.8 L1100.5 556.7 L1101.2 557.0 L1102.0 556.0 L1102.8 556.0 L1103.5 556.1 L1104.2 555.9 L1105.0 555.9 L1105.8 554.9 L1106.5 554.1 L1107.2 554.1 L1108.0 554.5 L1108.8 555.2 L1109.5 555.2 L1110.2 554.4 L1111.0 555.3 L1111.8 554.3 L1112.5 555.4 L1113.2 555.1 L1114.0 554.9 L1114.8 555.5 L1115.5 555.2 L1116.2 554.7 L1117.0 554.9 L1117.8 555.1 L1118.5 555.3 L1119.2 555.6 L1120.0 555.0 L1120.8 553.9 L1121.5 555.0 L1122.2 554.0 L1123.0 554.8 L1123.8 555.0 L1124.5 555.3 L1125.2 555.4 L1126.0 555.3 L1126.8 554.7 L1127.5 553.8 L1128.2 553.9 L1129.0 555.3 L1129.8 554.0 L1130.5 554.6 L1131.2 553.9 L1132.0 554.6 L1132.8 554.2 L1133.5 554.8 L1134.2 554.6 L1135.0 554.8 L1135.8 554.0 L1136.5 555.2 L1137.2 554.1 L1138.0 554.4 L1138.8 553.7 L1139.5 554.3 L1140.2 555.2 L1141.0 553.9 L1141.8 553.9 L1142.5 555.4 L1143.2 555.1 L1144.0 553.8 L1144.8 554.8 L1145.5 554.4 L1146.2 555.4 L1147.0 553.8 L1147.8 554.5 L1148.5 554.5 L1149.2 553.9 L1150.0 555.3 L1150.8 553.7 L1151.5 555.4 L1152.2 554.6 L1153.0 553.6 L1153.8 555.1 L1154.5 554.6 L1155.2 554.7 L1156.0 554.7 L1156.8 554.6 L1157.5 554.5 L1158.2 553.8 L1159.0 555.4 L1159.8 554.9 L1160.5 555.0 L1161.2 553.9 L1162.0 555.4 L1162.8 555.1 L1163.5 553.7 L1164.2 554.1 L1165.0 554.1 L1165.8 553.8 L1166.5 554.8 L1167.2 555.3 L1168.0 554.8 L1168.8 554.4 L1169.5 555.5 L1170.2 554.6 L1171.0 554.3 L1171.8 554.6 L1172.5 555.2 L1173.2 553.7 L1174.0 555.2 L1174.8 554.7 L1175.5 555.5 L1176.2 554.2 L1177.0 553.9 L1177.8 554.2 L1178.5 555.0 L1179.2 554.0 L1180.0 554.9 L1180.8 554.6 L1181.5 554.4 L1182.2 553.8 L1183.0 553.8 L1183.8 554.7 L1184.5 554.4 L1185.2 554.4 L1186.0 554.7 L1186.8 554.6 L1187.5 554.2 L1188.2 554.7 L1189.0 554.4 L1189.8 553.8 L1190.5 554.1 L1191.2 555.0 L1192.0 554.1 L1192.8 554.6 L1193.5 554.1 L1194.2 554.6 L1195.0 555.0 L1195.8 554.1 L1196.5 553.8 L1197.2 555.2 L1198.0 554.1 L1198.8 555.0 L1199.5 554.9 L1200.2 554.0 L1201.0 555.4 L1201.8 554.0 L1202.5 553.9 L1203.2 554.2 L1204.0 555.5 L1204.8 555.1 L1205.5 555.4 L1206.2 555.2 L1207.0 554.9 L1207.8 555.2 L1208.5 554.6 L1209.2 554.9 L1210.0 554.2 L1210.8 554.3 L1211.5 554.6 L1212.2 555.1 L1213.0 555.3 L1213.8 554.0 L1214.5 553.8 L1215.2 555.0 L1216.0 554.7 L1216.8 555.2 L1217.5 555.2 L1218.2 555.2 L1219.0 554.4 L1219.8 554.4 L1220.5 554.7 L1221.2 555.3 L1222.0 553.8 L1222.8 554.6 L1223.5 555.3 L1224.2 555.4 L1225.0 554.9 L1225.8 555.6 L1226.5 555.2 L1227.2 553.8 L1228.0 554.9 L1228.8 555.6 L1229.5 555.1 L1230.2 554.7 L1231.0 555.3 L1231.8 553.8 L1232.5 554.1 L1233.2 554.8 L1234.0 554.6 L1234.8 555.3 L1235.5 554.4 L1236.2 555.3 L1237.0 554.0 L1237.8 553.9 L1238.5 555.3 L1239.2 554.8 L1240.0 555.4 L1240.8 555.4 L1241.5 555.6 L1242.2 555.0 L1243.0 554.3 L1243.8 555.4 L1244.5 554.4 L1245.2 554.5 L1246.0 554.8 L1246.8 554.1 L1247.5 554.0 L1248.2 554.5 L1249.0 554.8 L1249.8 554.1 L1250.5 554.2 L1251.2 555.4 L1252.0 554.6 L1252.8 554.9 L1253.5 555.4 L1254.2 555.5 L1255.0 554.8 L1255.8 555.4 L1256.5 554.7 L1257.2 555.5 L1258.0 555.4 L1258.8 555.3 L1259.5 555.4 L1260.2 554.9 L1261.0 554.2 L1261.8 555.5 L1262.5 555.5 L1263.2 554.7 L1264.0 554.0 L1264.8 555.3 L1265.5 554.1 L1266.2 554.0 L1267.0 555.6 L1267.8 555.6 L1268.5 554.8 L1269.2 554.8 L1270.0 554.2 L1270.8 555.2 L1271.5 555.5 L1272.2 555.6 L1273.0 554.2 L1273.8 555.1 L1274.5 554.3 L1275.2 554.9 L1276.0 554.4 L1276.8 554.2 L1277.5 554.2 L1278.2 554.0 L1279.0 554.9 L1279.8 554.0 L1280.5 555.0 L1281.2 555.1 L1282.0 554.4 L1282.8 554.9 L1283.5 555.3 L1284.2 554.4 L1285.0 555.1 L1285.8 554.9 L1286.5 555.1 L1287.2 554.4 L1288.0 555.0 L1288.8 555.2 L1289.5 554.4 L1290.2 554.6 L1291.0 555.4 L1291.8 555.6 L1292.5 555.1 L1293.2 555.6 L1294.0 555.7 L1294.8 555.5 L1295.5 554.1 L1296.2 554.9 L1297.0 554.6 L1297.8 555.6 L1298.5 554.6 L1299.2 554.8 L1300.0 554.1 L1300.8 554.5 L1301.5 555.2 L1302.2 554.6 L1303.0 554.9 L1303.8 555.7 L1304.5 554.3 L1305.2 555.3 L1306.0 554.3 L1306.8 555.4 L1307.5 554.0 L1308.2 555.5 L1309.0 555.4 L1309.8 554.6 L1310.5 554.2 L1311.2 554.0 L1312.0 555.7 L1312.8 555.6 L1313.5 555.7 L1314.2 555.2 L1315.0 554.4 L1315.8 555.6 L1316.5 555.2 L1317.2 555.3 L1318.0 554.5 L1318.8 555.1 L1319.5 554.2 L1320.2 555.5 L1321.0 554.5 L1321.8 554.5 L1322.5 555.2 L1323.2 555.6 L1324.0 555.0 L1324.8 554.5 L1325.5 555.7 L1326.2 555.2 L1327.0 555.5 L1327.8 555.2 L1328.5 555.6 L1329.2 555.1 L1330.0 554.1 L1330.8 555.1 L1331.5 555.3 L1332.2 555.7 L1333.0 555.2 L1333.8 555.5 L1334.5 555.7 L1335.2 554.9 L1336.0 555.1 L1336.8 554.6 L1337.5 554.4 L1338.2 555.0 L1339.0 555.5 L1339.8 555.6 L1340.5 555.6 L1341.2 555.1 L1342.0 555.4 L1342.8 554.9 L1343.5 554.4 L1344.2 555.3 L1345.0 554.8 L1345.8 555.3 L1346.5 555.0 L1347.2 554.9 L1348.0 554.4 L1348.8 554.3 L1349.5 555.0 L1350.2 555.6 L1351.0 555.0 L1351.8 554.6 L1352.5 554.4 L1353.2 555.5 L1354.0 555.2 L1354.8 555.1 L1355.5 555.7 L1356.2 554.6 L1357.0 555.6 L1357.8 554.0 L1358.5 554.1 L1359.2 554.2 L1360.0 555.1 L1360.8 554.6 L1361.5 554.7 L1362.2 554.7 L1363.0 554.0 L1363.8 555.4 L1364.5 554.7 L1365.2 555.4 L1366.0 554.9 L1366.8 555.2 L1367.5 555.0 L1368.2 555.6 L1369.0 555.7 L1369.8 554.5 L1370.5 554.9 L1371.2 554.7 L1372.0 554.3 L1372.8 555.1 L1373.5 554.1 L1374.2 555.0 L1375.0 554.0 L1375.8 555.5 L1376.5 555.1 L1377.2 554.9 L1378.0 555.2 L1378.8 554.3 L1379.5 554.5 L1380.2 554.4 L1381.0 555.6 L1381.8 555.3 L1382.5 554.1 L1383.2 554.8 L1384.0 554.2 L1384.8 555.3 L1385.5 554.3 L1386.2 554.0 L1387.0 554.7 L1387.8 554.5 L1388.5 554.7 L1389.2 555.5 L1390.0 555.7 L1390.8 554.1 L1391.5 555.4 L1392.2 555.7 L1393.0 555.0 L1393.8 554.9 L1394.5 555.6 L1395.2 555.0 L1396.0 554.3 L1396.8 555.0 L1397.5 554.4 L1398.2 554.4 L1399.0 555.4 L1399.8 554.7 L1400.5 554.0 L1401.2 555.7 L1402.0 554.2 L1402.8 555.6 L1403.5 555.7 L1404.2 555.0 L1405.0 555.4 L1405.8 554.8 L1406.5 555.4 L1407.2 555.3 L1408.0 555.1 L1408.8 555.3 L1409.5 554.5 L1410.2 554.7 L1411.0 554.4 L1411.8 554.2 L1412.5 555.6 L1413.2 554.8 L1414.0 555.1 L1414.8 554.9 L1415.5 555.1 L1416.2 555.6 L1417.0 555.5 L1417.8 555.6 L1418.5 554.1 L1419.2 555.1 L1420.0 555.1 L1420.8 554.7 L1421.5 554.8 L1422.2 554.5 L1423.0 555.0 L1423.8 554.9 L1424.5 554.7 L1425.2 554.2 L1426.0 555.2 L1426.8 555.2 L1427.5 555.1 L1428.2 554.3 L1429.0 554.7 L1429.8 555.4 L1430.5 555.5 L1431.2 554.1 L1432.0 555.1 L1432.8 555.6 L1433.5 554.9 L1434.2 555.6 L1435.0 555.3 L1435.8 554.0 L1436.5 554.6 L1437.2 555.7 L1438.0 554.6 L1438.8 554.2 L1439.5 555.7 L1440.2 554.4 L1441.0 555.6 L1441.8 555.6 L1442.5 554.5 L1443.2 554.0 L1444.0 555.2 L1444.8 554.1 L1445.5 555.3 L1446.2 554.7 L1447.0 554.5 L1447.8 554.3 L1448.5 555.6 L1449.2 555.7 L1450.0 555.7 L1450.8 554.7 L1451.5 554.7 L1452.2 555.2 L1453.0 554.4 L1453.8 554.2 L1454.5 555.0 L1455.2 555.2 L1456.0 555.6 L1456.8 554.8 L1457.5 554.4 L1458.2 555.5 L1459.0 554.2 L1459.8 554.9 L1459.8 567.1 L1459.0 567.8 L1458.2 566.5 L1457.5 567.6 L1456.8 567.2 L1456.0 566.4 L1455.2 566.8 L1454.5 567.0 L1453.8 567.8 L1453.0 567.6 L1452.2 566.8 L1451.5 567.3 L1450.8 567.3 L1450.0 566.3 L1449.2 566.3 L1448.5 566.4 L1447.8 567.7 L1447.0 567.5 L1446.2 567.3 L1445.5 566.7 L1444.8 567.9 L1444.0 566.8 L1443.2 568.0 L1442.5 567.5 L1441.8 566.4 L1441.0 566.4 L1440.2 567.6 L1439.5 566.3 L1438.8 567.8 L1438.0 567.4 L1437.2 566.3 L1436.5 567.4 L1435.8 568.0 L1435.0 566.7 L1434.2 566.4 L1433.5 567.1 L1432.8 566.4 L1432.0 566.9 L1431.2 567.9 L1430.5 566.5 L1429.8 566.6 L1429.0 567.3 L1428.2 567.7 L1427.5 566.9 L1426.8 566.8 L1426.0 566.8 L1425.2 567.8 L1424.5 567.3 L1423.8 567.1 L1423.0 567.0 L1422.2 567.5 L1421.5 567.2 L1420.8 567.3 L1420.0 566.9 L1419.2 566.9 L1418.5 567.9 L1417.8 566.4 L1417.0 566.5 L1416.2 566.4 L1415.5 566.9 L1414.8 567.1 L1414.0 566.9 L1413.2 567.2 L1412.5 566.4 L1411.8 567.8 L1411.0 567.6 L1410.2 567.3 L1409.5 567.5 L1408.8 566.7 L1408.0 566.9 L1407.2 566.7 L1406.5 566.6 L1405.8 567.2 L1405.0 566.6 L1404.2 567.0 L1403.5 566.3 L1402.8 566.4 L1402.0 567.8 L1401.2 566.3 L1400.5 568.0 L1399.8 567.3 L1399.0 566.6 L1398.2 567.6 L1397.5 567.6 L1396.8 567.0 L1396.0 567.7 L1395.2 567.0 L1394.5 566.4 L1393.8 567.1 L1393.0 567.0 L1392.2 566.3 L1391.5 566.6 L1390.8 567.9 L1390.0 566.3 L1389.2 566.5 L1388.5 567.3 L1387.8 567.5 L1387.0 567.3 L1386.2 568.0 L1385.5 567.7 L1384.8 566.7 L1384.0 567.8 L1383.2 567.2 L1382.5 567.9 L1381.8 566.7 L1381.0 566.4 L1380.2 567.6 L1379.5 567.5 L1378.8 567.7 L1378.0 566.8 L1377.2 567.1 L1376.5 566.9 L1375.8 566.5 L1375.0 568.0 L1374.2 567.0 L1373.5 567.9 L1372.8 566.9 L1372.0 567.7 L1371.2 567.3 L1370.5 567.1 L1369.8 567.5 L1369.0 566.3 L1368.2 566.4 L1367.5 567.0 L1366.8 566.8 L1366.0 567.1 L1365.2 566.6 L1364.5 567.3 L1363.8 566.6 L1363.0 568.0 L1362.2 567.3 L1361.5 567.3 L1360.8 567.4 L1360.0 566.9 L1359.2 567.8 L1358.5 567.9 L1357.8 568.0 L1357.0 566.4 L1356.2 567.4 L1355.5 566.3 L1354.8 566.9 L1354.0 566.8 L1353.2 566.5 L1352.5 567.6 L1351.8 567.4 L1351.0 567.0 L1350.2 566.4 L1349.5 567.0 L1348.8 567.7 L1348.0 567.6 L1347.2 567.1 L1346.5 567.0 L1345.8 566.7 L1345.0 567.2 L1344.2 566.7 L1343.5 567.6 L1342.8 567.1 L1342.0 566.6 L1341.2 566.9 L1340.5 566.4 L1339.8 566.4 L1339.0 566.5 L1338.2 567.0 L1337.5 567.6 L1336.8 567.4 L1336.0 566.9 L1335.2 567.1 L1334.5 566.3 L1333.8 566.5 L1333.0 566.8 L1332.2 566.3 L1331.5 566.7 L1330.8 566.9 L1330.0 567.9 L1329.2 566.9 L1328.5 566.4 L1327.8 566.8 L1327.0 566.5 L1326.2 566.8 L1325.5 566.3 L1324.8 567.5 L1324.0 567.0 L1323.2 566.4 L1322.5 566.8 L1321.8 567.5 L1321.0 567.5 L1320.2 566.5 L1319.5 567.8 L1318.8 566.9 L1318.0 567.5 L1317.2 566.7 L1316.5 566.8 L1315.8 566.4 L1315.0 567.6 L1314.2 566.8 L1313.5 566.3 L1312.8 566.4 L1312.0 566.3 L1311.2 568.0 L1310.5 567.8 L1309.8 567.4 L1309.0 566.6 L1308.2 566.5 L1307.5 568.0 L1306.8 566.6 L1306.0 567.7 L1305.2 566.7 L1304.5 567.7 L1303.8 566.3 L1303.0 567.1 L1302.2 567.4 L1301.5 566.8 L1300.8 567.5 L1300.0 567.9 L1299.2 567.2 L1298.5 567.4 L1297.8 566.4 L1297.0 567.4 L1296.2 567.1 L1295.5 567.9 L1294.8 566.5 L1294.0 566.3 L1293.2 566.4 L1292.5 566.9 L1291.8 566.4 L1291.0 566.6 L1290.2 567.4 L1289.5 567.6 L1288.8 566.8 L1288.0 567.0 L1287.2 567.6 L1286.5 566.9 L1285.8 567.1 L1285.0 566.9 L1284.2 567.6 L1283.5 566.7 L1282.8 567.1 L1282.0 567.6 L1281.2 566.9 L1280.5 567.0 L1279.8 568.0 L1279.0 567.1 L1278.2 568.0 L1277.5 567.8 L1276.8 567.8 L1276.0 567.6 L1275.2 567.1 L1274.5 567.7 L1273.8 566.9 L1273.0 567.8 L1272.2 566.4 L1271.5 566.5 L1270.8 566.8 L1270.0 567.8 L1269.2 567.2 L1268.5 567.2 L1267.8 566.4 L1267.0 566.4 L1266.2 568.0 L1265.5 567.9 L1264.8 566.7 L1264.0 568.0 L1263.2 567.3 L1262.5 566.5 L1261.8 566.5 L1261.0 567.8 L1260.2 567.1 L1259.5 566.6 L1258.8 566.7 L1258.0 566.6 L1257.2 566.5 L1256.5 567.3 L1255.8 566.6 L1255.0 567.2 L1254.2 566.5 L1253.5 566.6 L1252.8 567.1 L1252.0 567.4 L1251.2 566.6 L1250.5 567.8 L1249.8 567.9 L1249.0 567.2 L1248.2 567.5 L1247.5 568.0 L1246.8 567.9 L1246.0 567.2 L1245.2 567.5 L1244.5 567.6 L1243.8 566.6 L1243.0 567.7 L1242.2 567.0 L1241.5 566.4 L1240.8 566.6 L1240.0 566.6 L1239.2 567.2 L1238.5 566.7 L1237.8 568.1 L1237.0 568.0 L1236.2 566.7 L1235.5 567.6 L1234.8 566.7 L1234.0 567.4 L1233.2 567.2 L1232.5 567.9 L1231.8 568.2 L1231.0 566.7 L1230.2 567.3 L1229.5 566.9 L1228.8 566.4 L1228.0 567.1 L1227.2 568.2 L1226.5 566.8 L1225.8 566.4 L1225.0 567.1 L1224.2 566.6 L1223.5 566.7 L1222.8 567.4 L1222.0 568.2 L1221.2 566.7 L1220.5 567.3 L1219.8 567.6 L1219.0 567.6 L1218.2 566.8 L1217.5 566.8 L1216.8 566.8 L1216.0 567.3 L1215.2 567.0 L1214.5 568.2 L1213.8 568.0 L1213.0 566.7 L1212.2 566.9 L1211.5 567.4 L1210.8 567.7 L1210.0 567.8 L1209.2 567.1 L1208.5 567.4 L1207.8 566.8 L1207.0 567.1 L1206.2 566.8 L1205.5 566.6 L1204.8 566.9 L1204.0 566.5 L1203.2 567.8 L1202.5 568.1 L1201.8 568.0 L1201.0 566.6 L1200.2 568.0 L1199.5 567.1 L1198.8 567.0 L1198.0 567.9 L1197.2 566.8 L1196.5 568.2 L1195.8 567.9 L1195.0 567.0 L1194.2 567.4 L1193.5 567.9 L1192.8 567.4 L1192.0 567.9 L1191.2 567.0 L1190.5 567.9 L1189.8 568.2 L1189.0 567.6 L1188.2 567.3 L1187.5 567.8 L1186.8 567.4 L1186.0 567.3 L1185.2 567.6 L1184.5 567.6 L1183.8 567.3 L1183.0 568.2 L1182.2 568.2 L1181.5 567.6 L1180.8 567.4 L1180.0 567.1 L1179.2 568.0 L1178.5 567.0 L1177.8 567.8 L1177.0 568.1 L1176.2 567.8 L1175.5 566.5 L1174.8 567.3 L1174.0 566.8 L1173.2 568.3 L1172.5 566.8 L1171.8 567.4 L1171.0 567.7 L1170.2 567.4 L1169.5 566.5 L1168.8 567.6 L1168.0 567.2 L1167.2 566.7 L1166.5 567.2 L1165.8 568.2 L1165.0 567.9 L1164.2 567.9 L1163.5 568.3 L1162.8 566.9 L1162.0 566.6 L1161.2 568.1 L1160.5 567.0 L1159.8 567.1 L1159.0 566.6 L1158.2 568.2 L1157.5 567.5 L1156.8 567.4 L1156.0 567.3 L1155.2 567.3 L1154.5 567.4 L1153.8 566.9 L1153.0 568.4 L1152.2 567.4 L1151.5 566.6 L1150.8 568.3 L1150.0 566.7 L1149.2 568.1 L1148.5 567.5 L1147.8 567.5 L1147.0 568.2 L1146.2 566.6 L1145.5 567.6 L1144.8 567.2 L1144.0 568.2 L1143.2 566.9 L1142.5 566.6 L1141.8 568.1 L1141.0 568.1 L1140.2 566.8 L1139.5 567.7 L1138.8 568.3 L1138.0 567.6 L1137.2 567.9 L1136.5 566.8 L1135.8 568.0 L1135.0 567.2 L1134.2 567.4 L1133.5 567.2 L1132.8 567.8 L1132.0 567.4 L1131.2 568.1 L1130.5 567.4 L1129.8 568.0 L1129.0 566.7 L1128.2 568.1 L1127.5 568.2 L1126.8 567.3 L1126.0 566.7 L1125.2 566.6 L1124.5 566.7 L1123.8 567.0 L1123.0 567.2 L1122.2 568.0 L1121.5 567.0 L1120.8 568.1 L1120.0 567.0 L1119.2 566.4 L1118.5 566.7 L1117.8 566.9 L1117.0 567.1 L1116.2 567.3 L1115.5 566.8 L1114.8 566.5 L1114.0 567.1 L1113.2 566.9 L1112.5 566.6 L1111.8 567.7 L1111.0 566.7 L1110.2 567.6 L1109.5 566.8 L1108.8 566.8 L1108.0 567.5 L1107.2 567.9 L1106.5 567.9 L1105.8 567.1 L1105.0 566.1 L1104.2 566.1 L1103.5 565.9 L1102.8 566.0 L1102.0 566.0 L1101.2 565.0 L1100.5 565.3 L1099.8 565.2 L1099.0 565.3 L1098.2 564.5 L1097.5 565.5 L1096.8 565.1 L1096.0 565.5 L1095.2 564.6 L1094.5 565.0 L1093.8 565.1 L1093.0 565.0 L1092.2 565.4 L1091.5 564.5 L1090.8 564.9 L1090.0 565.5 L1089.2 564.5 L1088.5 565.4 L1087.8 564.9 L1087.0 565.5 L1086.2 565.1 L1085.5 565.1 L1084.8 565.5 L1084.0 564.6 L1083.2 565.1 L1082.5 565.0 L1081.8 565.3 L1081.0 565.6 L1080.2 564.6 L1079.5 564.5 L1078.8 565.3 L1078.0 565.3 L1077.2 564.5 L1076.5 565.5 L1075.8 565.0 L1075.0 564.6 L1074.2 565.3 L1073.5 564.9 L1072.8 564.7 L1072.0 565.0 L1071.2 564.7 L1070.5 565.0 L1069.8 565.0 L1069.0 564.9 L1068.2 564.8 L1067.5 565.1 L1066.8 565.2 L1066.0 565.1 L1065.2 565.2 L1064.5 565.2 L1063.8 565.1 L1063.0 565.3 L1062.2 564.6 L1061.5 565.0 L1060.8 564.6 L1060.0 565.6 L1059.2 565.1 L1058.5 565.0 L1057.8 564.7 L1057.0 564.5 L1056.2 565.3 L1055.5 565.5 L1054.8 566.5 L1054.0 566.0 L1053.2 567.7 L1052.5 568.2 L1051.8 568.1 L1051.0 568.3 L1050.2 567.2 L1049.5 567.6 L1048.8 568.5 L1048.0 567.1 L1047.2 568.5 L1046.5 568.7 L1045.8 568.7 L1045.0 568.3 L1044.2 567.1 L1043.5 568.5 L1042.8 567.3 L1042.0 568.2 L1041.2 568.5 L1040.5 568.9 L1039.8 567.6 L1039.0 568.0 L1038.2 569.0 L1037.5 568.4 L1036.8 567.4 L1036.0 567.6 L1035.2 568.2 L1034.5 567.5 L1033.8 567.4 L1033.0 567.3 L1032.2 569.2 L1031.5 569.1 L1030.8 569.0 L1030.0 569.2 L1029.2 567.3 L1028.5 568.3 L1027.8 569.3 L1027.0 568.2 L1026.2 568.1 L1025.5 567.6 L1024.8 569.0 L1024.0 567.7 L1023.2 569.0 L1022.5 569.0 L1021.8 567.3 L1021.0 567.4 L1020.2 567.4 L1019.5 568.7 L1018.8 568.6 L1018.0 568.5 L1017.2 569.3 L1016.5 568.8 L1015.8 568.1 L1015.0 567.6 L1014.2 567.8 L1013.5 568.1 L1012.8 569.3 L1012.0 569.0 L1011.2 568.7 L1010.5 568.5 L1009.8 569.2 L1009.0 568.9 L1008.2 567.5 L1007.5 568.6 L1006.8 568.4 L1006.0 567.2 L1005.2 569.0 L1004.5 568.1 L1003.8 568.3 L1003.0 567.5 L1002.2 567.8 L1001.5 567.2 L1000.8 568.2 L1000.0 568.8 L999.2 567.2 L998.5 567.3 L997.8 568.7 L997.0 567.3 L996.2 567.7 L995.5 568.7 L994.8 568.1 L994.0 568.5 L993.2 568.8 L992.5 568.2 L991.8 567.6 L991.0 568.2 L990.2 568.3 L989.5 568.7 L988.8 567.7 L988.0 567.5 L987.2 567.6 L986.5 569.0 L985.8 567.4 L985.0 568.4 L984.2 568.9 L983.5 568.1 L982.8 568.6 L982.0 568.5 L981.2 568.7 L980.5 567.5 L979.8 566.5 L979.0 564.8 L978.2 564.6 L977.5 564.0 L976.8 564.3 L976.0 563.7 L975.2 564.1 L974.5 564.2 L973.8 564.2 L973.0 564.1 L972.2 564.2 L971.5 563.9 L970.8 563.8 L970.0 564.0 L969.2 563.7 L968.5 563.9 L967.8 564.0 L967.0 564.0 L966.2 563.8 L965.5 564.1 L964.8 564.0 L964.0 563.6 L963.2 563.7 L962.5 564.0 L961.8 564.0 L961.0 564.2 L960.2 564.3 L959.5 564.4 L958.8 563.9 L958.0 564.1 L957.2 564.4 L956.5 564.0 L955.8 564.8 L955.0 564.2 L954.2 564.7 L953.5 564.4 L952.8 564.3 L952.0 565.0 L951.2 564.5 L950.5 564.5 L949.8 564.5 L949.0 564.3 L948.2 564.6 L947.5 564.6 L946.8 564.7 L946.0 565.1 L945.2 564.2 L944.5 564.8 L943.8 565.0 L943.0 564.9 L942.2 564.6 L941.5 564.7 L940.8 564.4 L940.0 564.0 L939.2 564.7 L938.5 564.1 L937.8 564.4 L937.0 563.8 L936.2 564.1 L935.5 564.2 L934.8 564.5 L934.0 563.8 L933.2 563.9 L932.5 563.9 L931.8 564.3 L931.0 563.6 L930.2 563.5 L929.5 563.8 L928.8 563.8 L928.0 563.8 L927.2 563.9 L926.5 563.9 L925.8 564.7 L925.0 564.2 L924.2 564.3 L923.5 565.1 L922.8 565.3 L922.0 564.7 L921.2 564.7 L920.5 565.7 L919.8 565.6 L919.0 565.0 L918.2 565.6 L917.5 565.4 L916.8 564.8 L916.0 565.1 L915.2 564.4 L914.5 564.8 L913.8 564.8 L913.0 564.8 L912.2 564.4 L911.5 564.9 L910.8 564.2 L910.0 564.3 L909.2 564.9 L908.5 564.1 L907.8 563.9 L907.0 564.3 L906.2 564.0 L905.5 563.8 L904.8 563.9 L904.0 564.3 L903.2 564.1 L902.5 564.4 L901.8 563.8 L901.0 564.1 L900.2 563.8 L899.5 564.1 L898.8 563.7 L898.0 564.0 L897.2 563.8 L896.5 563.9 L895.8 564.4 L895.0 563.7 L894.2 563.9 L893.5 563.9 L892.8 563.6 L892.0 564.4 L891.2 563.9 L890.5 563.6 L889.8 563.9 L889.0 563.8 L888.2 563.8 L887.5 564.2 L886.8 564.7 L886.0 564.2 L885.2 564.2 L884.5 565.0 L883.8 564.7 L883.0 565.3 L882.2 565.0 L881.5 565.0 L880.8 564.9 L880.0 565.5 L879.2 565.5 L878.5 564.8 L877.8 564.8 L877.0 564.3 L876.2 564.7 L875.5 564.1 L874.8 564.3 L874.0 564.4 L873.2 563.7 L872.5 563.9 L871.8 563.6 L871.0 564.3 L870.2 563.8 L869.5 564.3 L868.8 564.5 L868.0 565.2 L867.2 565.4 L866.5 565.3 L865.8 565.3 L865.0 565.9 L864.2 565.2 L863.5 564.8 L862.8 565.6 L862.0 564.7 L861.2 564.2 L860.5 564.6 L859.8 564.2 L859.0 564.1 L858.2 564.3 L857.5 563.9 L856.8 564.5 L856.0 564.6 L855.2 564.9 L854.5 565.4 L853.8 564.9 L853.0 566.0 L852.2 566.7 L851.5 566.3 L850.8 566.0 L850.0 565.9 L849.2 565.4 L848.5 566.1 L847.8 565.5 L847.0 565.5 L846.2 565.5 L845.5 564.9 L844.8 564.8 L844.0 564.7 L843.2 564.3 L842.5 564.2 L841.8 564.5 L841.0 564.5 L840.2 564.0 L839.5 564.0 L838.8 563.8 L838.0 564.2 L837.2 563.5 L836.5 564.1 L835.8 564.0 L835.0 563.8 L834.2 563.9 L833.5 564.0 L832.8 563.5 L832.0 563.9 L831.2 563.7 L830.5 563.7 L829.8 564.1 L829.0 563.6 L828.2 563.6 L827.5 564.0 L826.8 563.5 L826.0 563.7 L825.2 563.5 L824.5 564.0 L823.8 563.6 L823.0 564.0 L822.2 563.9 L821.5 563.4 L820.8 563.8 L820.0 564.0 L819.2 563.3 L818.5 563.9 L817.8 563.8 L817.0 563.7 L816.2 563.6 L815.5 563.7 L814.8 563.4 L814.0 563.9 L813.2 563.4 L812.5 564.0 L811.8 563.5 L811.0 563.8 L810.2 563.4 L809.5 563.7 L808.8 563.8 L808.0 563.7 L807.2 563.6 L806.5 563.3 L805.8 563.6 L805.0 563.6 L804.2 563.5 L803.5 563.8 L802.8 563.4 L802.0 563.9 L801.2 563.6 L800.5 563.3 L799.8 563.7 L799.0 563.9 L798.2 563.3 L797.5 563.4 L796.8 564.0 L796.0 563.3 L795.2 563.7 L794.5 563.3 L793.8 563.9 L793.0 563.8 L792.2 563.4 L791.5 563.7 L790.8 563.4 L790.0 563.8 L789.2 563.6 L788.5 563.9 L787.8 563.5 L787.0 563.3 L786.2 563.7 L785.5 563.8 L784.8 563.9 L784.0 563.9 L783.2 563.8 L782.5 563.6 L781.8 564.0 L781.0 563.7 L780.2 563.4 L779.5 563.5 L778.8 563.5 L778.0 563.6 L777.2 564.0 L776.5 563.9 L775.8 563.7 L775.0 563.9 L774.2 563.3 L773.5 563.4 L772.8 563.3 L772.0 563.9 L771.2 563.3 L770.5 563.4 L769.8 563.4 L769.0 563.5 L768.2 563.4 L767.5 563.3 L766.8 563.8 L766.0 563.3 L765.2 563.5 L764.5 563.8 L763.8 563.3 L763.0 564.0 L762.2 563.5 L761.5 563.8 L760.8 563.7 L760.0 563.8 L759.2 563.5 L758.5 563.5 L757.8 563.9 L757.0 563.8 L756.2 563.8 L755.5 563.7 L754.8 564.0 L754.0 563.5 L753.2 563.9 L752.5 563.8 L751.8 561.4 L751.0 561.4Z" fill="#587f7f"/>
<path d="M751.0 619.0 L751.8 619.0 L752.5 618.9 L753.2 618.6 L754.0 618.6 L754.8 618.6 L755.5 618.8 L756.2 618.7 L757.0 618.8 L757.8 618.7 L758.5 618.7 L759.2 618.7 L760.0 618.7 L760.8 618.7 L761.5 618.6 L762.2 618.6 L763.0 618.7 L763.8 618.6 L764.5 618.6 L765.2 618.7 L766.0 618.8 L766.8 618.7 L767.5 618.6 L768.2 618.7 L769.0 618.8 L769.8 618.7 L770.5 618.7 L771.2 618.6 L772.0 618.8 L772.8 618.7 L773.5 618.7 L774.2 618.6 L775.0 618.8 L775.8 618.6 L776.5 618.7 L777.2 618.7 L778.0 618.8 L778.8 618.7 L779.5 618.6 L780.2 618.6 L781.0 618.6 L781.8 618.7 L782.5 618.8 L783.2 618.7 L784.0 618.7 L784.8 618.7 L785.5 618.6 L786.2 618.8 L787.0 618.8 L787.8 618.8 L788.5 618.8 L789.2 618.8 L790.0 618.8 L790.8 618.7 L791.5 618.6 L792.2 618.7 L793.0 618.7 L793.8 618.7 L794.5 618.8 L795.2 618.7 L796.0 618.7 L796.8 618.8 L797.5 618.7 L798.2 618.8 L799.0 618.7 L799.8 618.7 L800.5 618.8 L801.2 618.8 L802.0 618.6 L802.8 618.7 L803.5 618.8 L804.2 618.6 L805.0 618.7 L805.8 618.7 L806.5 618.8 L807.2 618.7 L808.0 618.7 L808.8 618.6 L809.5 618.7 L810.2 618.7 L811.0 618.8 L811.8 618.7 L812.5 618.7 L813.2 618.7 L814.0 618.7 L814.8 618.6 L815.5 618.6 L816.2 618.8 L817.0 618.7 L817.8 618.8 L818.5 618.6 L819.2 618.6 L820.0 618.8 L820.8 618.7 L821.5 618.7 L822.2 618.7 L823.0 618.7 L823.8 618.7 L824.5 618.7 L825.2 618.7 L826.0 618.7 L826.8 618.7 L827.5 618.7 L828.2 618.8 L829.0 618.7 L829.8 618.8 L830.5 618.7 L831.2 618.7 L832.0 618.7 L832.8 618.6 L833.5 618.8 L834.2 618.7 L835.0 618.7 L835.8 618.7 L836.5 618.6 L837.2 618.7 L838.0 618.6 L838.8 618.7 L839.5 618.8 L840.2 618.7 L841.0 618.7 L841.8 618.6 L842.5 618.7 L843.2 618.7 L844.0 618.7 L844.8 618.7 L845.5 618.7 L846.2 618.7 L847.0 618.7 L847.8 618.8 L848.5 618.7 L849.2 618.7 L850.0 618.7 L850.8 618.7 L851.5 618.7 L852.2 618.7 L853.0 618.7 L853.8 618.8 L854.5 618.6 L855.2 618.7 L856.0 618.7 L856.8 618.7 L857.5 618.8 L858.2 618.8 L859.0 618.7 L859.8 618.7 L860.5 618.7 L861.2 618.7 L862.0 618.7 L862.8 618.7 L863.5 618.7 L864.2 618.7 L865.0 618.6 L865.8 618.6 L866.5 618.6 L867.2 618.8 L868.0 618.7 L868.8 618.8 L869.5 618.6 L870.2 618.6 L871.0 618.7 L871.8 618.7 L872.5 618.6 L873.2 618.7 L874.0 618.7 L874.8 618.8 L875.5 618.8 L876.2 618.6 L877.0 618.6 L877.8 618.7 L878.5 618.8 L879.2 618.7 L880.0 618.6 L880.8 618.7 L881.5 618.5 L882.2 618.6 L883.0 618.3 L883.8 618.4 L884.5 617.9 L885.2 617.7 L886.0 617.6 L886.8 617.4 L887.5 617.4 L888.2 617.5 L889.0 617.6 L889.8 617.3 L890.5 617.2 L891.2 617.2 L892.0 617.5 L892.8 617.6 L893.5 617.4 L894.2 617.3 L895.0 617.6 L895.8 617.2 L896.5 617.2 L897.2 617.5 L898.0 617.6 L898.8 617.4 L899.5 617.7 L900.2 617.3 L901.0 617.4 L901.8 617.5 L902.5 617.3 L903.2 617.3 L904.0 617.3 L904.8 617.7 L905.5 617.5 L906.2 617.6 L907.0 617.3 L907.8 617.6 L908.5 617.7 L909.2 617.5 L910.0 617.6 L910.8 617.4 L911.5 617.5 L912.2 617.7 L913.0 617.4 L913.8 617.2 L914.5 617.4 L915.2 617.4 L916.0 617.7 L916.8 618.0 L917.5 618.1 L918.2 618.4 L919.0 618.6 L919.8 618.5 L920.5 618.7 L921.2 618.7 L922.0 618.7 L922.8 618.6 L923.5 618.6 L924.2 618.6 L925.0 618.7 L925.8 618.6 L926.5 618.6 L927.2 618.7 L928.0 618.7 L928.8 618.6 L929.5 618.6 L930.2 618.6 L931.0 618.5 L931.8 618.7 L932.5 618.6 L933.2 618.6 L934.0 618.6 L934.8 618.7 L935.5 618.6 L936.2 618.5 L937.0 618.7 L937.8 618.6 L938.5 618.7 L939.2 618.6 L940.0 618.6 L940.8 618.6 L941.5 618.5 L942.2 618.6 L943.0 618.6 L943.8 618.7 L944.5 618.7 L945.2 618.5 L946.0 618.5 L946.8 618.5 L947.5 618.5 L948.2 618.1 L949.0 618.2 L949.8 618.2 L950.5 618.0 L951.2 617.9 L952.0 618.0 L952.8 618.2 L953.5 617.8 L954.2 618.1 L955.0 618.0 L955.8 618.1 L956.5 618.1 L957.2 618.2 L958.0 617.9 L958.8 618.2 L959.5 618.0 L960.2 617.9 L961.0 617.9 L961.8 618.2 L962.5 618.0 L963.2 618.1 L964.0 618.2 L964.8 618.0 L965.5 618.1 L966.2 618.1 L967.0 618.2 L967.8 618.2 L968.5 618.2 L969.2 618.1 L970.0 618.2 L970.8 617.9 L971.5 618.0 L972.2 617.9 L973.0 618.0 L973.8 618.0 L974.5 617.9 L975.2 617.9 L976.0 617.8 L976.8 617.8 L977.5 617.4 L978.2 617.3 L979.0 617.6 L979.8 617.7 L980.5 618.0 L981.2 618.4 L982.0 618.3 L982.8 618.5 L983.5 618.5 L984.2 618.4 L985.0 618.3 L985.8 618.4 L986.5 618.5 L987.2 618.5 L988.0 618.5 L988.8 618.4 L989.5 618.5 L990.2 618.4 L991.0 618.5 L991.8 618.6 L992.5 618.3 L993.2 618.3 L994.0 618.3 L994.8 618.3 L995.5 618.4 L996.2 618.3 L997.0 618.4 L997.8 618.4 L998.5 618.3 L999.2 618.3 L1000.0 618.4 L1000.8 618.5 L1001.5 618.4 L1002.2 618.5 L1003.0 618.4 L1003.8 618.4 L1004.5 618.3 L1005.2 618.4 L1006.0 618.4 L1006.8 618.3 L1007.5 618.4 L1008.2 618.4 L1009.0 618.5 L1009.8 618.3 L1010.5 618.3 L1011.2 618.3 L1012.0 618.3 L1012.8 618.5 L1013.5 618.4 L1014.2 618.5 L1015.0 618.4 L1015.8 618.5 L1016.5 618.4 L1017.2 618.3 L1018.0 618.3 L1018.8 618.4 L1019.5 618.3 L1020.2 618.4 L1021.0 618.3 L1021.8 618.5 L1022.5 618.3 L1023.2 618.4 L1024.0 618.5 L1024.8 618.5 L1025.5 618.4 L1026.2 618.5 L1027.0 618.4 L1027.8 618.5 L1028.5 618.4 L1029.2 618.3 L1030.0 618.4 L1030.8 618.5 L1031.5 618.3 L1032.2 618.3 L1033.0 618.3 L1033.8 618.4 L1034.5 618.4 L1035.2 618.3 L1036.0 618.4 L1036.8 618.4 L1037.5 618.2 L1038.2 618.3 L1039.0 618.5 L1039.8 618.3 L1040.5 618.4 L1041.2 618.3 L1042.0 618.4 L1042.8 618.4 L1043.5 618.4 L1044.2 618.4 L1045.0 618.2 L1045.8 618.5 L1046.5 618.5 L1047.2 618.3 L1048.0 618.4 L1048.8 618.4 L1049.5 618.3 L1050.2 618.4 L1051.0 618.5 L1051.8 618.3 L1052.5 618.4 L1053.2 618.3 L1054.0 618.4 L1054.8 618.5 L1055.5 618.3 L1056.2 618.2 L1057.0 618.3 L1057.8 618.3 L1058.5 618.2 L1059.2 618.5 L1060.0 618.2 L1060.8 618.2 L1061.5 618.4 L1062.2 618.4 L1063.0 618.2 L1063.8 618.2 L1064.5 618.2 L1065.2 618.3 L1066.0 618.1 L1066.8 618.1 L1067.5 618.4 L1068.2 618.3 L1069.0 618.1 L1069.8 618.3 L1070.5 618.0 L1071.2 618.2 L1072.0 618.0 L1072.8 618.3 L1073.5 618.3 L1074.2 618.1 L1075.0 617.9 L1075.8 618.0 L1076.5 618.2 L1077.2 617.9 L1078.0 617.9 L1078.8 618.2 L1079.5 617.9 L1080.2 617.8 L1081.0 618.1 L1081.8 617.9 L1082.5 618.1 L1083.2 618.2 L1084.0 618.2 L1084.8 618.0 L1085.5 618.2 L1086.2 618.0 L1087.0 618.2 L1087.8 618.3 L1088.5 618.1 L1089.2 618.1 L1090.0 618.2 L1090.8 618.0 L1091.5 618.1 L1092.2 618.3 L1093.0 618.3 L1093.8 618.2 L1094.5 618.3 L1095.2 618.1 L1096.0 618.3 L1096.8 618.3 L1097.5 618.2 L1098.2 618.4 L1099.0 618.2 L1099.8 618.3 L1100.5 618.4 L1101.2 618.4 L1102.0 618.2 L1102.8 618.3 L1103.5 618.3 L1104.2 618.3 L1105.0 618.3 L1105.8 618.3 L1106.5 618.4 L1107.2 618.5 L1108.0 618.3 L1108.8 618.2 L1109.5 618.3 L1110.2 618.4 L1111.0 618.4 L1111.8 618.4 L1112.5 618.3 L1113.2 618.5 L1114.0 618.2 L1114.8 618.4 L1115.5 618.2 L1116.2 618.3 L1117.0 618.4 L1117.8 618.4 L1118.5 618.3 L1119.2 618.4 L1120.0 618.3 L1120.8 618.3 L1121.5 618.3 L1122.2 618.2 L1123.0 618.3 L1123.8 618.2 L1124.5 618.2 L1125.2 618.4 L1126.0 618.2 L1126.8 618.3 L1127.5 618.3 L1128.2 618.2 L1129.0 618.3 L1129.8 618.2 L1130.5 618.2 L1131.2 618.4 L1132.0 618.2 L1132.8 618.3 L1133.5 618.3 L1134.2 618.2 L1135.0 618.3 L1135.8 618.3 L1136.5 618.3 L1137.2 618.2 L1138.0 618.2 L1138.8 618.2 L1139.5 618.2 L1140.2 618.3 L1141.0 618.2 L1141.8 618.1 L1142.5 618.2 L1143.2 618.3 L1144.0 618.2 L1144.8 618.2 L1145.5 618.1 L1146.2 618.1 L1147.0 618.4 L1147.8 618.3 L1148.5 618.4 L1149.2 618.2 L1150.0 618.1 L1150.8 618.4 L1151.5 618.2 L1152.2 618.3 L1153.0 618.1 L1153.8 618.3 L1154.5 618.1 L1155.2 618.1 L1156.0 618.3 L1156.8 618.2 L1157.5 618.1 L1158.2 618.3 L1159.0 618.2 L1159.8 618.1 L1160.5 618.3 L1161.2 618.3 L1162.0 618.1 L1162.8 618.1 L1163.5 618.1 L1164.2 618.3 L1165.0 618.3 L1165.8 618.2 L1166.5 618.3 L1167.2 618.3 L1168.0 618.1 L1168.8 618.2 L1169.5 618.0 L1170.2 618.1 L1171.0 618.3 L1171.8 618.4 L1172.5 618.2 L1173.2 618.2 L1174.0 618.2 L1174.8 618.0 L1175.5 618.3 L1176.2 618.0 L1177.0 618.2 L1177.8 618.2 L1178.5 618.2 L1179.2 618.0 L1180.0 618.2 L1180.8 618.3 L1181.5 618.1 L1182.2 618.3 L1183.0 618.2 L1183.8 618.0 L1184.5 618.0 L1185.2 617.9 L1186.0 618.2 L1186.8 617.8 L1187.5 618.1 L1188.2 617.8 L1189.0 617.9 L1189.8 617.7 L1190.5 617.9 L1191.2 618.1 L1192.0 617.8 L1192.8 617.6 L1193.5 617.8 L1194.2 618.0 L1195.0 617.6 L1195.8 617.7 L1196.5 617.6 L1197.2 617.5 L1198.0 617.6 L1198.8 617.5 L1199.5 617.7 L1200.2 617.7 L1201.0 617.5 L1201.8 617.9 L1202.5 617.5 L1203.2 617.8 L1204.0 618.0 L1204.8 617.8 L1205.5 617.9 L1206.2 618.0 L1207.0 618.1 L1207.8 618.2 L1208.5 618.1 L1209.2 618.1 L1210.0 618.0 L1210.8 618.1 L1211.5 618.0 L1212.2 618.2 L1213.0 618.4 L1213.8 618.3 L1214.5 618.4 L1215.2 618.5 L1216.0 618.2 L1216.8 618.4 L1217.5 618.3 L1218.2 618.4 L1219.0 618.5 L1219.8 618.4 L1220.5 618.4 L1221.2 618.3 L1222.0 618.3 L1222.8 618.5 L1223.5 618.4 L1224.2 618.3 L1225.0 618.2 L1225.8 618.3 L1226.5 618.2 L1227.2 618.2 L1228.0 618.3 L1228.8 618.4 L1229.5 618.3 L1230.2 618.2 L1231.0 618.4 L1231.8 618.3 L1232.5 618.2 L1233.2 618.2 L1234.0 618.4 L1234.8 618.5 L1235.5 618.3 L1236.2 618.3 L1237.0 618.3 L1237.8 618.3 L1238.5 618.3 L1239.2 618.2 L1240.0 618.5 L1240.8 618.3 L1241.5 618.4 L1242.2 618.4 L1243.0 618.2 L1243.8 618.3 L1244.5 618.5 L1245.2 618.3 L1246.0 618.4 L1246.8 618.2 L1247.5 618.4 L1248.2 618.3 L1249.0 618.2 L1249.8 618.4 L1250.5 618.3 L1251.2 618.4 L1252.0 618.2 L1252.8 618.3 L1253.5 618.3 L1254.2 618.3 L1255.0 618.3 L1255.8 618.2 L1256.5 618.4 L1257.2 618.2 L1258.0 618.4 L1258.8 618.4 L1259.5 618.3 L1260.2 618.3 L1261.0 618.4 L1261.8 618.4 L1262.5 618.3 L1263.2 618.4 L1264.0 618.2 L1264.8 618.4 L1265.5 618.3 L1266.2 618.2 L1267.0 618.2 L1267.8 618.2 L1268.5 618.3 L1269.2 618.4 L1270.0 618.2 L1270.8 618.2 L1271.5 618.4 L1272.2 618.4 L1273.0 618.3 L1273.8 618.4 L1274.5 618.4 L1275.2 618.4 L1276.0 618.4 L1276.8 618.3 L1277.5 618.2 L1278.2 618.4 L1279.0 618.1 L1279.8 618.2 L1280.5 618.2 L1281.2 618.4 L1282.0 618.4 L1282.8 618.3 L1283.5 618.4 L1284.2 618.2 L1285.0 618.4 L1285.8 618.4 L1286.5 618.2 L1287.2 618.4 L1288.0 618.2 L1288.8 618.3 L1289.5 618.4 L1290.2 618.4 L1291.0 618.2 L1291.8 618.1 L1292.5 618.3 L1293.2 618.2 L1294.0 618.4 L1294.8 618.2 L1295.5 618.3 L1296.2 618.4 L1297.0 618.4 L1297.8 618.2 L1298.5 618.4 L1299.2 618.2 L1300.0 618.3 L1300.8 618.1 L1301.5 618.1 L1302.2 618.3 L1303.0 618.2 L1303.8 618.1 L1304.5 618.2 L1305.2 618.3 L1306.0 618.3 L1306.8 618.2 L1307.5 618.2 L1308.2 618.4 L1309.0 618.2 L1309.8 618.2 L1310.5 618.2 L1311.2 618.2 L1312.0 618.3 L1312.8 618.4 L1313.5 618.3 L1314.2 618.4 L1315.0 618.4 L1315.8 618.2 L1316.5 618.3 L1317.2 618.4 L1318.0 618.1 L1318.8 618.2 L1319.5 618.3 L1320.2 618.2 L1321.0 618.4 L1321.8 618.1 L1322.5 618.1 L1323.2 618.2 L1324.0 618.3 L1324.8 618.1 L1325.5 618.2 L1326.2 618.2 L1327.0 618.1 L1327.8 618.1 L1328.5 618.3 L1329.2 618.2 L1330.0 618.4 L1330.8 618.4 L1331.5 618.3 L1332.2 618.3 L1333.0 618.3 L1333.8 618.4 L1334.5 618.3 L1335.2 618.3 L1336.0 618.4 L1336.8 618.3 L1337.5 618.2 L1338.2 618.4 L1339.0 618.4 L1339.8 618.3 L1340.5 618.1 L1341.2 618.4 L1342.0 618.1 L1342.8 618.2 L1343.5 618.2 L1344.2 618.3 L1345.0 618.3 L1345.8 618.4 L1346.5 618.2 L1347.2 618.1 L1348.0 618.3 L1348.8 618.3 L1349.5 618.1 L1350.2 618.4 L1351.0 618.1 L1351.8 618.4 L1352.5 618.3 L1353.2 618.3 L1354.0 618.2 L1354.8 618.4 L1355.5 618.2 L1356.2 618.4 L1357.0 618.1 L1357.8 618.2 L1358.5 618.4 L1359.2 618.3 L1360.0 618.4 L1360.8 618.4 L1361.5 618.4 L1362.2 618.2 L1363.0 618.4 L1363.8 618.4 L1364.5 618.2 L1365.2 618.2 L1366.0 618.2 L1366.8 618.3 L1367.5 618.3 L1368.2 618.4 L1369.0 618.1 L1369.8 618.4 L1370.5 618.1 L1371.2 618.4 L1372.0 618.2 L1372.8 618.4 L1373.5 618.1 L1374.2 618.2 L1375.0 618.2 L1375.8 618.1 L1376.5 618.2 L1377.2 618.4 L1378.0 618.4 L1378.8 618.3 L1379.5 618.1 L1380.2 618.2 L1381.0 618.3 L1381.8 618.2 L1382.5 618.3 L1383.2 618.3 L1384.0 618.1 L1384.8 618.1 L1385.5 618.1 L1386.2 618.4 L1387.0 618.2 L1387.8 618.1 L1388.5 618.2 L1389.2 618.4 L1390.0 618.4 L1390.8 618.4 L1391.5 618.2 L1392.2 618.4 L1393.0 618.3 L1393.8 618.4 L1394.5 618.1 L1395.2 618.4 L1396.0 618.3 L1396.8 618.2 L1397.5 618.2 L1398.2 618.3 L1399.0 618.1 L1399.8 618.3 L1400.5 618.3 L1401.2 618.2 L1402.0 618.3 L1402.8 618.1 L1403.5 618.2 L1404.2 618.4 L1405.0 618.2 L1405.8 618.3 L1406.5 618.3 L1407.2 618.3 L1408.0 618.3 L1408.8 618.2 L1409.5 618.3 L1410.2 618.2 L1411.0 618.4 L1411.8 618.2 L1412.5 618.2 L1413.2 618.1 L1414.0 618.1 L1414.8 618.4 L1415.5 618.4 L1416.2 618.1 L1417.0 618.4 L1417.8 618.4 L1418.5 618.3 L1419.2 618.2 L1420.0 618.1 L1420.8 618.2 L1421.5 618.3 L1422.2 618.4 L1423.0 618.3 L1423.8 618.3 L1424.5 618.4 L1425.2 618.4 L1426.0 618.2 L1426.8 618.1 L1427.5 618.4 L1428.2 618.3 L1429.0 618.1 L1429.8 618.4 L1430.5 618.4 L1431.2 618.4 L1432.0 618.2 L1432.8 618.1 L1433.5 618.1 L1434.2 618.4 L1435.0 618.4 L1435.8 618.3 L1436.5 618.1 L1437.2 618.2 L1438.0 618.1 L1438.8 618.1 L1439.5 618.1 L1440.2 618.2 L1441.0 618.4 L1441.8 618.2 L1442.5 618.2 L1443.2 618.3 L1444.0 618.1 L1444.8 618.2 L1445.5 618.3 L1446.2 618.3 L1447.0 618.2 L1447.8 618.3 L1448.5 618.2 L1449.2 618.2 L1450.0 618.2 L1450.8 618.3 L1451.5 618.3 L1452.2 618.3 L1453.0 618.3 L1453.8 618.2 L1454.5 618.3 L1455.2 618.4 L1456.0 618.4 L1456.8 618.4 L1457.5 618.4 L1458.2 618.2 L1459.0 618.4 L1459.8 618.3 L1459.8 620.5 L1459.0 620.4 L1458.2 620.6 L1457.5 620.4 L1456.8 620.4 L1456.0 620.4 L1455.2 620.4 L1454.5 620.5 L1453.8 620.6 L1453.0 620.5 L1452.2 620.5 L1451.5 620.5 L1450.8 620.5 L1450.0 620.6 L1449.2 620.6 L1448.5 620.6 L1447.8 620.5 L1447.0 620.6 L1446.2 620.5 L1445.5 620.5 L1444.8 620.6 L1444.0 620.7 L1443.2 620.5 L1442.5 620.6 L1441.8 620.6 L1441.0 620.4 L1440.2 620.6 L1439.5 620.7 L1438.8 620.7 L1438.0 620.7 L1437.2 620.6 L1436.5 620.7 L1435.8 620.5 L1435.0 620.4 L1434.2 620.4 L1433.5 620.7 L1432.8 620.7 L1432.0 620.6 L1431.2 620.4 L1430.5 620.4 L1429.8 620.4 L1429.0 620.7 L1428.2 620.5 L1427.5 620.4 L1426.8 620.7 L1426.0 620.6 L1425.2 620.4 L1424.5 620.4 L1423.8 620.5 L1423.0 620.5 L1422.2 620.4 L1421.5 620.5 L1420.8 620.6 L1420.0 620.7 L1419.2 620.6 L1418.5 620.5 L1417.8 620.4 L1417.0 620.4 L1416.2 620.7 L1415.5 620.4 L1414.8 620.4 L1414.0 620.7 L1413.2 620.7 L1412.5 620.6 L1411.8 620.6 L1411.0 620.4 L1410.2 620.6 L1409.5 620.5 L1408.8 620.6 L1408.0 620.5 L1407.2 620.5 L1406.5 620.5 L1405.8 620.5 L1405.0 620.6 L1404.2 620.4 L1403.5 620.6 L1402.8 620.7 L1402.0 620.5 L1401.2 620.6 L1400.5 620.5 L1399.8 620.5 L1399.0 620.7 L1398.2 620.5 L1397.5 620.6 L1396.8 620.6 L1396.0 620.5 L1395.2 620.4 L1394.5 620.7 L1393.8 620.4 L1393.0 620.5 L1392.2 620.4 L1391.5 620.6 L1390.8 620.4 L1390.0 620.4 L1389.2 620.4 L1388.5 620.6 L1387.8 620.7 L1387.0 620.6 L1386.2 620.4 L1385.5 620.7 L1384.8 620.7 L1384.0 620.7 L1383.2 620.5 L1382.5 620.5 L1381.8 620.6 L1381.0 620.5 L1380.2 620.6 L1379.5 620.7 L1378.8 620.5 L1378.0 620.4 L1377.2 620.4 L1376.5 620.6 L1375.8 620.7 L1375.0 620.6 L1374.2 620.6 L1373.5 620.7 L1372.8 620.4 L1372.0 620.6 L1371.2 620.4 L1370.5 620.7 L1369.8 620.4 L1369.0 620.7 L1368.2 620.4 L1367.5 620.5 L1366.8 620.5 L1366.0 620.6 L1365.2 620.6 L1364.5 620.6 L1363.8 620.4 L1363.0 620.4 L1362.2 620.6 L1361.5 620.4 L1360.8 620.4 L1360.0 620.4 L1359.2 620.5 L1358.5 620.4 L1357.8 620.6 L1357.0 620.7 L1356.2 620.4 L1355.5 620.6 L1354.8 620.4 L1354.0 620.6 L1353.2 620.5 L1352.5 620.5 L1351.8 620.4 L1351.0 620.7 L1350.2 620.4 L1349.5 620.7 L1348.8 620.5 L1348.0 620.5 L1347.2 620.7 L1346.5 620.6 L1345.8 620.4 L1345.0 620.5 L1344.2 620.5 L1343.5 620.6 L1342.8 620.6 L1342.0 620.7 L1341.2 620.4 L1340.5 620.7 L1339.8 620.5 L1339.0 620.4 L1338.2 620.4 L1337.5 620.6 L1336.8 620.5 L1336.0 620.4 L1335.2 620.5 L1334.5 620.5 L1333.8 620.4 L1333.0 620.5 L1332.2 620.5 L1331.5 620.5 L1330.8 620.4 L1330.0 620.4 L1329.2 620.6 L1328.5 620.5 L1327.8 620.7 L1327.0 620.7 L1326.2 620.6 L1325.5 620.6 L1324.8 620.7 L1324.0 620.5 L1323.2 620.6 L1322.5 620.7 L1321.8 620.7 L1321.0 620.4 L1320.2 620.6 L1319.5 620.5 L1318.8 620.6 L1318.0 620.7 L1317.2 620.4 L1316.5 620.5 L1315.8 620.6 L1315.0 620.4 L1314.2 620.4 L1313.5 620.5 L1312.8 620.4 L1312.0 620.5 L1311.2 620.6 L1310.5 620.6 L1309.8 620.6 L1309.0 620.6 L1308.2 620.4 L1307.5 620.6 L1306.8 620.6 L1306.0 620.5 L1305.2 620.5 L1304.5 620.6 L1303.8 620.7 L1303.0 620.6 L1302.2 620.5 L1301.5 620.7 L1300.8 620.7 L1300.0 620.5 L1299.2 620.6 L1298.5 620.4 L1297.8 620.6 L1297.0 620.4 L1296.2 620.4 L1295.5 620.5 L1294.8 620.6 L1294.0 620.4 L1293.2 620.6 L1292.5 620.5 L1291.8 620.7 L1291.0 620.6 L1290.2 620.4 L1289.5 620.4 L1288.8 620.5 L1288.0 620.6 L1287.2 620.4 L1286.5 620.6 L1285.8 620.4 L1285.0 620.4 L1284.2 620.6 L1283.5 620.4 L1282.8 620.5 L1282.0 620.4 L1281.2 620.4 L1280.5 620.6 L1279.8 620.6 L1279.0 620.7 L1278.2 620.4 L1277.5 620.6 L1276.8 620.5 L1276.0 620.4 L1275.2 620.4 L1274.5 620.4 L1273.8 620.4 L1273.0 620.5 L1272.2 620.4 L1271.5 620.4 L1270.8 620.6 L1270.0 620.6 L1269.2 620.4 L1268.5 620.5 L1267.8 620.6 L1267.0 620.6 L1266.2 620.6 L1265.5 620.5 L1264.8 620.4 L1264.0 620.6 L1263.2 620.4 L1262.5 620.5 L1261.8 620.4 L1261.0 620.4 L1260.2 620.5 L1259.5 620.5 L1258.8 620.4 L1258.0 620.4 L1257.2 620.6 L1256.5 620.4 L1255.8 620.6 L1255.0 620.5 L1254.2 620.5 L1253.5 620.5 L1252.8 620.5 L1252.0 620.6 L1251.2 620.4 L1250.5 620.5 L1249.8 620.4 L1249.0 620.6 L1248.2 620.5 L1247.5 620.4 L1246.8 620.6 L1246.0 620.4 L1245.2 620.5 L1244.5 620.3 L1243.8 620.5 L1243.0 620.6 L1242.2 620.4 L1241.5 620.4 L1240.8 620.5 L1240.0 620.3 L1239.2 620.6 L1238.5 620.5 L1237.8 620.5 L1237.0 620.5 L1236.2 620.5 L1235.5 620.5 L1234.8 620.3 L1234.0 620.4 L1233.2 620.6 L1232.5 620.6 L1231.8 620.5 L1231.0 620.4 L1230.2 620.6 L1229.5 620.5 L1228.8 620.4 L1228.0 620.5 L1227.2 620.6 L1226.5 620.6 L1225.8 620.5 L1225.0 620.6 L1224.2 620.5 L1223.5 620.4 L1222.8 620.3 L1222.0 620.5 L1221.2 620.5 L1220.5 620.4 L1219.8 620.4 L1219.0 620.3 L1218.2 620.4 L1217.5 620.5 L1216.8 620.4 L1216.0 620.6 L1215.2 620.3 L1214.5 620.4 L1213.8 620.5 L1213.0 620.4 L1212.2 620.6 L1211.5 620.8 L1210.8 620.7 L1210.0 620.8 L1209.2 620.7 L1208.5 620.7 L1207.8 620.6 L1207.0 620.7 L1206.2 620.8 L1205.5 620.9 L1204.8 621.0 L1204.0 620.8 L1203.2 621.0 L1202.5 621.3 L1201.8 620.9 L1201.0 621.3 L1200.2 621.1 L1199.5 621.1 L1198.8 621.3 L1198.0 621.2 L1197.2 621.3 L1196.5 621.2 L1195.8 621.1 L1195.0 621.2 L1194.2 620.8 L1193.5 621.0 L1192.8 621.2 L1192.0 621.0 L1191.2 620.7 L1190.5 620.9 L1189.8 621.1 L1189.0 620.9 L1188.2 621.0 L1187.5 620.7 L1186.8 621.0 L1186.0 620.6 L1185.2 620.9 L1184.5 620.8 L1183.8 620.8 L1183.0 620.6 L1182.2 620.5 L1181.5 620.7 L1180.8 620.5 L1180.0 620.6 L1179.2 620.8 L1178.5 620.6 L1177.8 620.6 L1177.0 620.6 L1176.2 620.8 L1175.5 620.5 L1174.8 620.8 L1174.0 620.6 L1173.2 620.6 L1172.5 620.6 L1171.8 620.4 L1171.0 620.5 L1170.2 620.7 L1169.5 620.8 L1168.8 620.6 L1168.0 620.7 L1167.2 620.5 L1166.5 620.5 L1165.8 620.6 L1165.0 620.5 L1164.2 620.5 L1163.5 620.7 L1162.8 620.7 L1162.0 620.7 L1161.2 620.5 L1160.5 620.5 L1159.8 620.7 L1159.0 620.6 L1158.2 620.5 L1157.5 620.7 L1156.8 620.6 L1156.0 620.5 L1155.2 620.7 L1154.5 620.7 L1153.8 620.5 L1153.0 620.7 L1152.2 620.5 L1151.5 620.6 L1150.8 620.4 L1150.0 620.7 L1149.2 620.6 L1148.5 620.4 L1147.8 620.5 L1147.0 620.4 L1146.2 620.7 L1145.5 620.7 L1144.8 620.6 L1144.0 620.6 L1143.2 620.5 L1142.5 620.6 L1141.8 620.7 L1141.0 620.6 L1140.2 620.5 L1139.5 620.6 L1138.8 620.6 L1138.0 620.6 L1137.2 620.6 L1136.5 620.5 L1135.8 620.5 L1135.0 620.5 L1134.2 620.6 L1133.5 620.5 L1132.8 620.5 L1132.0 620.6 L1131.2 620.4 L1130.5 620.6 L1129.8 620.6 L1129.0 620.5 L1128.2 620.6 L1127.5 620.5 L1126.8 620.5 L1126.0 620.6 L1125.2 620.4 L1124.5 620.6 L1123.8 620.6 L1123.0 620.5 L1122.2 620.6 L1121.5 620.5 L1120.8 620.5 L1120.0 620.5 L1119.2 620.4 L1118.5 620.5 L1117.8 620.4 L1117.0 620.4 L1116.2 620.5 L1115.5 620.6 L1114.8 620.4 L1114.0 620.6 L1113.2 620.3 L1112.5 620.5 L1111.8 620.4 L1111.0 620.4 L1110.2 620.4 L1109.5 620.5 L1108.8 620.6 L1108.0 620.5 L1107.2 620.3 L1106.5 620.4 L1105.8 620.5 L1105.0 620.5 L1104.2 620.5 L1103.5 620.5 L1102.8 620.5 L1102.0 620.6 L1101.2 620.4 L1100.5 620.4 L1099.8 620.5 L1099.0 620.6 L1098.2 620.4 L1097.5 620.6 L1096.8 620.5 L1096.0 620.5 L1095.2 620.7 L1094.5 620.5 L1093.8 620.6 L1093.0 620.5 L1092.2 620.5 L1091.5 620.7 L1090.8 620.8 L1090.0 620.6 L1089.2 620.7 L1088.5 620.7 L1087.8 620.5 L1087.0 620.6 L1086.2 620.8 L1085.5 620.6 L1084.8 620.8 L1084.0 620.6 L1083.2 620.6 L1082.5 620.7 L1081.8 620.9 L1081.0 620.7 L1080.2 621.0 L1079.5 620.9 L1078.8 620.6 L1078.0 620.9 L1077.2 620.9 L1076.5 620.6 L1075.8 620.8 L1075.0 620.9 L1074.2 620.7 L1073.5 620.5 L1072.8 620.5 L1072.0 620.8 L1071.2 620.6 L1070.5 620.8 L1069.8 620.5 L1069.0 620.7 L1068.2 620.5 L1067.5 620.4 L1066.8 620.7 L1066.0 620.7 L1065.2 620.5 L1064.5 620.6 L1063.8 620.6 L1063.0 620.6 L1062.2 620.4 L1061.5 620.4 L1060.8 620.6 L1060.0 620.6 L1059.2 620.3 L1058.5 620.6 L1057.8 620.5 L1057.0 620.5 L1056.2 620.6 L1055.5 620.5 L1054.8 620.3 L1054.0 620.4 L1053.2 620.5 L1052.5 620.4 L1051.8 620.5 L1051.0 620.3 L1050.2 620.4 L1049.5 620.5 L1048.8 620.4 L1048.0 620.4 L1047.2 620.5 L1046.5 620.3 L1045.8 620.3 L1045.0 620.6 L1044.2 620.4 L1043.5 620.4 L1042.8 620.4 L1042.0 620.4 L1041.2 620.5 L1040.5 620.4 L1039.8 620.5 L1039.0 620.3 L1038.2 620.5 L1037.5 620.6 L1036.8 620.4 L1036.0 620.4 L1035.2 620.5 L1034.5 620.4 L1033.8 620.4 L1033.0 620.5 L1032.2 620.5 L1031.5 620.5 L1030.8 620.3 L1030.0 620.4 L1029.2 620.5 L1028.5 620.4 L1027.8 620.3 L1027.0 620.4 L1026.2 620.3 L1025.5 620.4 L1024.8 620.3 L1024.0 620.3 L1023.2 620.4 L1022.5 620.5 L1021.8 620.3 L1021.0 620.5 L1020.2 620.4 L1019.5 620.5 L1018.8 620.4 L1018.0 620.5 L1017.2 620.5 L1016.5 620.4 L1015.8 620.3 L1015.0 620.4 L1014.2 620.3 L1013.5 620.4 L1012.8 620.3 L1012.0 620.5 L1011.2 620.5 L1010.5 620.5 L1009.8 620.5 L1009.0 620.3 L1008.2 620.4 L1007.5 620.4 L1006.8 620.5 L1006.0 620.4 L1005.2 620.4 L1004.5 620.5 L1003.8 620.4 L1003.0 620.4 L1002.2 620.3 L1001.5 620.4 L1000.8 620.3 L1000.0 620.4 L999.2 620.5 L998.5 620.5 L997.8 620.4 L997.0 620.4 L996.2 620.5 L995.5 620.4 L994.8 620.5 L994.0 620.5 L993.2 620.5 L992.5 620.5 L991.8 620.2 L991.0 620.3 L990.2 620.4 L989.5 620.3 L988.8 620.4 L988.0 620.3 L987.2 620.3 L986.5 620.3 L985.8 620.4 L985.0 620.5 L984.2 620.4 L983.5 620.3 L982.8 620.3 L982.0 620.5 L981.2 620.4 L980.5 620.8 L979.8 621.1 L979.0 621.2 L978.2 621.5 L977.5 621.4 L976.8 621.0 L976.0 621.0 L975.2 620.9 L974.5 620.9 L973.8 620.8 L973.0 620.8 L972.2 620.9 L971.5 620.8 L970.8 620.9 L970.0 620.6 L969.2 620.7 L968.5 620.6 L967.8 620.6 L967.0 620.6 L966.2 620.7 L965.5 620.7 L964.8 620.8 L964.0 620.6 L963.2 620.7 L962.5 620.8 L961.8 620.6 L961.0 620.9 L960.2 620.9 L959.5 620.8 L958.8 620.6 L958.0 620.9 L957.2 620.6 L956.5 620.7 L955.8 620.7 L955.0 620.8 L954.2 620.7 L953.5 621.0 L952.8 620.6 L952.0 620.8 L951.2 620.9 L950.5 620.8 L949.8 620.6 L949.0 620.6 L948.2 620.7 L947.5 620.3 L946.8 620.3 L946.0 620.3 L945.2 620.3 L944.5 620.1 L943.8 620.1 L943.0 620.2 L942.2 620.2 L941.5 620.3 L940.8 620.2 L940.0 620.2 L939.2 620.2 L938.5 620.1 L937.8 620.2 L937.0 620.1 L936.2 620.3 L935.5 620.2 L934.8 620.1 L934.0 620.2 L933.2 620.2 L932.5 620.2 L931.8 620.1 L931.0 620.3 L930.2 620.2 L929.5 620.2 L928.8 620.2 L928.0 620.1 L927.2 620.1 L926.5 620.2 L925.8 620.2 L925.0 620.1 L924.2 620.2 L923.5 620.2 L922.8 620.2 L922.0 620.1 L921.2 620.1 L920.5 620.1 L919.8 620.3 L919.0 620.2 L918.2 620.4 L917.5 620.7 L916.8 620.8 L916.0 621.1 L915.2 621.4 L914.5 621.4 L913.8 621.6 L913.0 621.4 L912.2 621.1 L911.5 621.3 L910.8 621.4 L910.0 621.2 L909.2 621.3 L908.5 621.1 L907.8 621.2 L907.0 621.5 L906.2 621.2 L905.5 621.3 L904.8 621.1 L904.0 621.5 L903.2 621.5 L902.5 621.5 L901.8 621.3 L901.0 621.4 L900.2 621.5 L899.5 621.1 L898.8 621.4 L898.0 621.2 L897.2 621.3 L896.5 621.6 L895.8 621.6 L895.0 621.2 L894.2 621.5 L893.5 621.4 L892.8 621.2 L892.0 621.3 L891.2 621.6 L890.5 621.6 L889.8 621.5 L889.0 621.2 L888.2 621.3 L887.5 621.4 L886.8 621.4 L886.0 621.2 L885.2 621.1 L884.5 620.9 L883.8 620.4 L883.0 620.5 L882.2 620.2 L881.5 620.3 L880.8 620.1 L880.0 620.2 L879.2 620.1 L878.5 620.0 L877.8 620.1 L877.0 620.2 L876.2 620.2 L875.5 620.0 L874.8 620.0 L874.0 620.1 L873.2 620.1 L872.5 620.2 L871.8 620.1 L871.0 620.1 L870.2 620.2 L869.5 620.2 L868.8 620.0 L868.0 620.1 L867.2 620.0 L866.5 620.2 L865.8 620.2 L865.0 620.2 L864.2 620.1 L863.5 620.1 L862.8 620.1 L862.0 620.1 L861.2 620.1 L860.5 620.1 L859.8 620.1 L859.0 620.1 L858.2 620.0 L857.5 620.0 L856.8 620.1 L856.0 620.1 L855.2 620.1 L854.5 620.2 L853.8 620.0 L853.0 620.1 L852.2 620.1 L851.5 620.1 L850.8 620.1 L850.0 620.1 L849.2 620.1 L848.5 620.1 L847.8 620.0 L847.0 620.1 L846.2 620.1 L845.5 620.1 L844.8 620.1 L844.0 620.1 L843.2 620.1 L842.5 620.1 L841.8 620.2 L841.0 620.1 L840.2 620.1 L839.5 620.0 L838.8 620.1 L838.0 620.2 L837.2 620.1 L836.5 620.2 L835.8 620.1 L835.0 620.1 L834.2 620.1 L833.5 620.0 L832.8 620.2 L832.0 620.1 L831.2 620.1 L830.5 620.1 L829.8 620.0 L829.0 620.1 L828.2 620.0 L827.5 620.1 L826.8 620.1 L826.0 620.1 L825.2 620.1 L824.5 620.1 L823.8 620.1 L823.0 620.1 L822.2 620.1 L821.5 620.1 L820.8 620.1 L820.0 620.0 L819.2 620.2 L818.5 620.2 L817.8 620.0 L817.0 620.1 L816.2 620.0 L815.5 620.2 L814.8 620.2 L814.0 620.1 L813.2 620.1 L812.5 620.1 L811.8 620.1 L811.0 620.0 L810.2 620.1 L809.5 620.1 L808.8 620.2 L808.0 620.1 L807.2 620.1 L806.5 620.0 L805.8 620.1 L805.0 620.1 L804.2 620.2 L803.5 620.0 L802.8 620.1 L802.0 620.2 L801.2 620.0 L800.5 620.0 L799.8 620.1 L799.0 620.1 L798.2 620.0 L797.5 620.1 L796.8 620.0 L796.0 620.1 L795.2 620.1 L794.5 620.0 L793.8 620.1 L793.0 620.1 L792.2 620.1 L791.5 620.2 L790.8 620.1 L790.0 620.0 L789.2 620.0 L788.5 620.0 L787.8 620.0 L787.0 620.0 L786.2 620.0 L785.5 620.2 L784.8 620.1 L784.0 620.1 L783.2 620.1 L782.5 620.0 L781.8 620.1 L781.0 620.2 L780.2 620.2 L779.5 620.2 L778.8 620.1 L778.0 620.0 L777.2 620.1 L776.5 620.1 L775.8 620.2 L775.0 620.0 L774.2 620.2 L773.5 620.1 L772.8 620.1 L772.0 620.0 L771.2 620.2 L770.5 620.1 L769.8 620.1 L769.0 620.0 L768.2 620.1 L767.5 620.2 L766.8 620.1 L766.0 620.0 L765.2 620.1 L764.5 620.2 L763.8 620.2 L763.0 620.1 L762.2 620.2 L761.5 620.2 L760.8 620.1 L760.0 620.1 L759.2 620.1 L758.5 620.1 L757.8 620.1 L757.0 620.0 L756.2 620.1 L755.5 620.0 L754.8 620.2 L754.0 620.2 L753.2 620.2 L752.5 619.9 L751.8 619.8 L751.0 619.8Z" fill="#6b8f83"/>
</g>
<path d="M640.5 757.9 H1460" stroke="#4a4a4a" stroke-width="1.3"/><path d="M640.5 757.9 H715" stroke="#fff" stroke-width="1.6"/><circle cx="715.7" cy="757.9" r="4" fill="#fff"/>
<circle cx="975.6" cy="806" r="22.2" fill="#fff"/><path d="M970.6 798.6 L982.4 806 L970.6 813.4 Z" fill="#0a0a0a" stroke="#0a0a0a" stroke-width="1.6" stroke-linejoin="round"/>
<path d="M888 806 L897.6 800 V812 Z M878.2 806 L887.8 800 V812 Z" fill="#f2f2f2" stroke="#f2f2f2" stroke-width="1" stroke-linejoin="round"/>
<path d="M1063.4 806 L1053.8 800 V812 Z M1073.6 806 L1064 800 V812 Z" fill="#f2f2f2" stroke="#f2f2f2" stroke-width="1" stroke-linejoin="round"/>
<g fill="none" stroke="#e8e8e8" stroke-width="1.3" stroke-linecap="round" stroke-linejoin="round"><path d="M803.2 800.4 H806.6 L811.4 813.8 H798.2 Z M799.4 810.4 H810.2 M804.8 810.2 L811.6 800.2"/><circle cx="811.8" cy="800" r="1"/></g>
<g fill="none" stroke="#e8e8e8" stroke-width="1.2" stroke-linecap="round"><circle cx="1224.6" cy="802" r="2.1"/><circle cx="1224.6" cy="811" r="2.1"/><path d="M1226.4 803.2 L1234.8 811.6 M1226.4 809.8 L1234.8 800.6"/></g>
<rect x="958" y="838.5" width="34" height="8" rx="4" fill="#262626"/>
</svg>
<div class="t" style="left:139.0px;top:567.2px;font-size:10px;color:#9a9a9a">0:30</div>
<div class="t" style="left:785.5px;top:567.2px;font-size:10px;color:#9a9a9a">-4:12</div>
<div class="t" style="left:215.2px;top:597.2px;font-size:9.5px;font-weight:700;letter-spacing:2px;line-height:9.2px;color:#e8e8e8">12<br>34</div>
<div class="t" style="left:636.0px;top:598.8px;font-size:17.5px;color:#e8e8e8;-webkit-text-stroke:0.3px #e8e8e8">&#9837;<span style="font-size:12px;font-weight:700;position:relative;top:-5.6px;left:0.8px;-webkit-text-stroke:0">#</span></div>
</div></div>
<div class="phone"><div class="hl"></div><div class="pscreen">
<div class="cell" style="left:0.0px;top:84px;width:37.6px;height:33px;background:#292929;border-left:2px solid #8a8a8a"></div>
<div class="cell" style="left:40.0px;top:84px;width:37.6px;height:33px;background:#292929"></div>
<div class="cell" style="left:80.0px;top:84px;width:37.6px;height:33px;background:#292929"></div>
<div class="cell" style="left:120.0px;top:84px;width:37.6px;height:33px;background:#fff"></div>
<div class="cell" style="left:160.0px;top:84px;width:37.6px;height:33px;background:#292929;border-left:2px solid #8a8a8a"></div>
<div class="cell" style="left:200.0px;top:84px;width:37.6px;height:33px;background:#292929"></div>
<div class="cell" style="left:240.0px;top:84px;width:37.6px;height:33px;background:#292929"></div>
<div class="t" style="left:8.0px;top:94.6px;font-size:14px;font-weight:400;-webkit-text-stroke:0.45px #8e8e8e;color:#8e8e8e">Gm</div>
<div class="t" style="left:165.0px;top:94.5px;font-size:14px;font-weight:400;-webkit-text-stroke:0.45px #f4f4f4;color:#f4f4f4">Cm<span style="font-size:10px;position:relative;top:-5.6px;margin-left:0.8px">7</span></div>
<div class="t" style="left:84.5px;top:55.6px;font-size:12px;font-weight:700;letter-spacing:-0.15px;color:#f4f4f4">A Real Bad Dream</div>
<svg style="left:0;top:0" width="271" height="580" viewBox="1303 275 271 580" fill="none" stroke-linecap="round" stroke-linejoin="round">
<path d="M1313 335.2 L1319 340 L1325 335.2" stroke="#f0f0f0" stroke-width="1.5"/>
<path d="M1550.6 332.8 H1564 M1550.6 337 H1564 M1550.6 341.2 H1564" stroke="#e6e6e6" stroke-width="1.4"/>
<path d="M1481.3 429.4 H1525.3" stroke="#474747" stroke-width="1.2"/>
<path d="M1362 429.4 H1481.3" stroke="#12c2b4" stroke-width="1.6"/>
<circle cx="1481.3" cy="429.4" r="7.8" fill="#050505" stroke="#474747" stroke-width="1.2"/>
<circle cx="1481.3" cy="429.4" r="1.4" fill="#1fe6b0" stroke="none"/>
<circle cx="1547.4" cy="429.4" r="0.9" fill="#777" stroke="none"/>
<circle cx="1551.2" cy="429.4" r="0.9" fill="#777" stroke="none"/>
<circle cx="1555.0" cy="429.4" r="0.9" fill="#777" stroke="none"/>
<path d="M1481.3 479.1 H1525.3" stroke="#474747" stroke-width="1.2"/>
<path d="M1362 479.1 H1481.3" stroke="#12c2b4" stroke-width="1.6"/>
<circle cx="1481.3" cy="479.1" r="7.8" fill="#050505" stroke="#474747" stroke-width="1.2"/>
<circle cx="1481.3" cy="479.1" r="1.4" fill="#1fe6b0" stroke="none"/>
<circle cx="1547.4" cy="479.1" r="0.9" fill="#777" stroke="none"/>
<circle cx="1551.2" cy="479.1" r="0.9" fill="#777" stroke="none"/>
<circle cx="1555.0" cy="479.1" r="0.9" fill="#777" stroke="none"/>
<path d="M1408.2 528.8 H1525.3" stroke="#474747" stroke-width="1.2"/>
<path d="M1362 528.8 H1408.2" stroke="#12c2b4" stroke-width="1.6"/>
<circle cx="1408.2" cy="528.8" r="7.8" fill="#050505" stroke="#14b894" stroke-width="1.4"/>
<circle cx="1408.2" cy="528.8" r="1.4" fill="#1fe6b0" stroke="none"/>
<circle cx="1547.4" cy="528.8" r="0.9" fill="#777" stroke="none"/>
<circle cx="1551.2" cy="528.8" r="0.9" fill="#777" stroke="none"/>
<circle cx="1555.0" cy="528.8" r="0.9" fill="#777" stroke="none"/>
<path d="M1481.3 578.5 H1525.3" stroke="#474747" stroke-width="1.2"/>
<path d="M1362 578.5 H1481.3" stroke="#12c2b4" stroke-width="1.6"/>
<circle cx="1481.3" cy="578.5" r="7.8" fill="#050505" stroke="#474747" stroke-width="1.2"/>
<circle cx="1481.3" cy="578.5" r="1.4" fill="#1fe6b0" stroke="none"/>
<circle cx="1547.4" cy="578.5" r="0.9" fill="#777" stroke="none"/>
<circle cx="1551.2" cy="578.5" r="0.9" fill="#777" stroke="none"/>
<circle cx="1555.0" cy="578.5" r="0.9" fill="#777" stroke="none"/>
<path d="M1481.3 628.2 H1525.3" stroke="#474747" stroke-width="1.2"/>
<path d="M1362 628.2 H1481.3" stroke="#12c2b4" stroke-width="1.6"/>
<circle cx="1481.3" cy="628.2" r="7.8" fill="#050505" stroke="#474747" stroke-width="1.2"/>
<circle cx="1481.3" cy="628.2" r="1.4" fill="#1fe6b0" stroke="none"/>
<circle cx="1547.4" cy="628.2" r="0.9" fill="#777" stroke="none"/>
<circle cx="1551.2" cy="628.2" r="0.9" fill="#777" stroke="none"/>
<circle cx="1555.0" cy="628.2" r="0.9" fill="#777" stroke="none"/>
<g transform="translate(1330.4 429.4) rotate(12)" stroke="#f0f0f0" stroke-width="1.3"><path d="M-2.2 -6.6 C-1.6 -8.2 3.2 -8.2 3.6 -5.4 L3.2 2.6 C3 4.6 2.2 5.6 2.2 7.6 H-2.6 C-2.6 5.6 -3.6 4.4 -3.4 2.4 Z"/><path d="M-5 -6.2 L-4.4 -6.1 M-5.4 -3.2 L-4.8 -3.1 M-5.8 -0.2 L-5.2 -0.1 M-6 2.8 L-5.4 2.9" stroke-width="1.5"/></g>
<g stroke="#f0f0f0" stroke-width="1.3"><path d="M1323.4 485.7 V476.1 C1323.4 470.9 1331.4 470.9 1331.8 475.5 C1332 477.5 1337 476.5 1337 480.3 V485.7 H1323.4 M1323.4 480.9 H1337 M1326.2 481.1 V483.7 M1328.8 481.1 V483.7 M1331.6 481.1 V483.7 M1334.2 481.1 V483.7"/></g>
<g transform="translate(1330.6 528.6) rotate(0)" stroke="#f0f0f0" stroke-width="1.3"><path d="M-4.4 -4.6 C-4.4 -7.4 4.4 -7.4 4.4 -4.6 V1.8 C4.4 3.8 2.8 4.6 2.8 8 H-2.8 C-2.8 4.6 -4.4 3.8 -4.4 1.8 Z"/><path d="M-6.6 -3.8 H-6 M-6.6 -0.2 H-6 M-6.6 3.4 H-6 M6 -3.8 H6.6 M6 -0.2 H6.6 M6 3.4 H6.6" stroke-width="1.5"/></g>
<g transform="translate(1330.6 578.3) rotate(0)" stroke="#f0f0f0" stroke-width="1.3"><path d="M-4.4 -4.6 C-4.4 -7.4 4.4 -7.4 4.4 -4.6 V1.8 C4.4 3.8 2.8 4.6 2.8 8 H-2.8 C-2.8 4.6 -4.4 3.8 -4.4 1.8 Z"/><path d="M-6.6 -3.8 H-6 M-6.6 -0.2 H-6 M-6.6 3.4 H-6 M6 -3.8 H6.6 M6 -0.2 H6.6 M6 3.4 H6.6" stroke-width="1.5"/></g>
<circle cx="1341" cy="540.2" r="5.3" fill="#7c7c7c" stroke="none"/>
<circle cx="1341" cy="589.9" r="5.3" fill="#7c7c7c" stroke="none"/>
<g stroke="#f0f0f0" stroke-width="1.3"><path d="M1327.2 633.6 V623.2 L1335.8 621.4 V631.8"/><ellipse cx="1325.2" cy="633.8" rx="2.2" ry="1.9"/><ellipse cx="1333.8" cy="632.0" rx="2.2" ry="1.9"/></g>
<path d="M1395.5 486.2 H1421 A12.3 12.3 0 0 1 1421 510.8 H1413.4 L1408.2 516.8 L1403 510.8 H1395.5 A12.3 12.3 0 0 1 1395.5 486.2 Z" fill="#fff" stroke="none"/>
<path d="M1319.6 725.9 H1557" stroke="#4a4a4a" stroke-width="1.3"/><path d="M1319.6 725.9 H1340" stroke="#fff" stroke-width="1.6"/><circle cx="1340.7" cy="725.9" r="3.9" fill="#fff" stroke="none"/>
<circle cx="1438.3" cy="773.6" r="22" fill="#fff" stroke="none"/><path d="M1434.2 766.6 V780.6 M1442.4 766.6 V780.6" stroke="#0a0a0a" stroke-width="2.8"/>
<path d="M1384.6 773.6 L1394.2 767.6 V779.6 Z M1374.8 773.6 L1384.4 767.6 V779.6 Z" fill="#f2f2f2" stroke="#f2f2f2" stroke-width="1"/>
<path d="M1492.2 773.6 L1482.6 767.6 V779.6 Z M1502.2 773.6 L1492.6 767.6 V779.6 Z" fill="#f2f2f2" stroke="#f2f2f2" stroke-width="1"/>
<g stroke="#e8e8e8" stroke-width="1.3"><path d="M1333.6 768 H1337 L1341.8 781.2 H1328.6 Z M1329.8 777.8 H1340.6 M1335.2 777.6 L1342 767.6"/><circle cx="1342.2" cy="767.4" r="1"/></g>
<rect x="1421.6" y="804.4" width="33" height="33" rx="8" fill="#222" stroke="none"/>
<g stroke="#e8e8e8" stroke-width="1.3"><path d="M1355.4 816.6 C1355.4 815.6 1356 815 1357 815 H1367.8 C1368.8 815 1369.4 815.6 1369.4 816.6 V823.8 C1369.4 824.8 1368.8 825.4 1367.8 825.4 H1359.4 L1355.4 828.2 Z"/></g>
<g stroke="#e8e8e8" stroke-width="1.3"><path d="M1510.6 818.6 H1518.4 C1520.8 818.6 1521.8 820 1521.8 821.8 V823.4 C1521.8 825.2 1520.8 826.6 1518.4 826.6 H1510.2 C1507.8 826.6 1506.8 825.2 1506.8 823.4 V822.6 M1506.6 828.8 H1522 M1516.2 816 L1518.8 818.6 L1516.2 821.2"/></g>
<g stroke="#1fd6a0" stroke-width="1.4"><path d="M1435.2 813.6 V828.8 M1435.2 814.6 C1438.8 816.6 1436.4 819 1433.6 820.6 C1430.6 822.4 1431.6 825.6 1434.6 825.4 C1437.4 825.2 1437.2 822.2 1435 822.4 M1440.2 817.2 H1445.4 M1440.2 821.2 H1445.4 M1440.2 825.2 H1445.4"/></g>
</svg>
<div class="t" style="left:56.2px;top:538.6px;font-size:8.5px;font-weight:700;color:#e8e8e8;letter-spacing:1.2px">,,</div>
<div class="t" style="left:36.0px;top:261.7px;font-size:7.5px;font-weight:700;color:#fff">1</div>
<div class="t" style="left:35.9px;top:311.4px;font-size:7.5px;font-weight:700;color:#fff">2</div>
<div class="t" style="left:99.3px;top:218.2px;font-size:10.5px;font-weight:700;color:#111">26</div>
<div class="t" style="left:58.5px;top:269.0px;font-size:11px;color:#c9c9c9">Lead Guitar</div>
<div class="t" style="left:16.6px;top:460.6px;font-size:9.5px;color:#9a9a9a">0:11</div>
<div class="t" style="left:229.6px;top:460.6px;font-size:9.5px;color:#9a9a9a">-2:06</div>
<div class="t" style="left:229.0px;top:491.4px;font-size:17.5px;color:#e8e8e8;-webkit-text-stroke:0.3px #e8e8e8">&#9837;<span style="font-size:12px;font-weight:700;position:relative;top:-5.6px;left:0.8px;-webkit-text-stroke:0">#</span></div>
</div></div>
<div class="abs" style="left:22px;top:841px;width:1559px;height:1px;background:rgba(255,255,255,0.42)"></div>
</body></html>
